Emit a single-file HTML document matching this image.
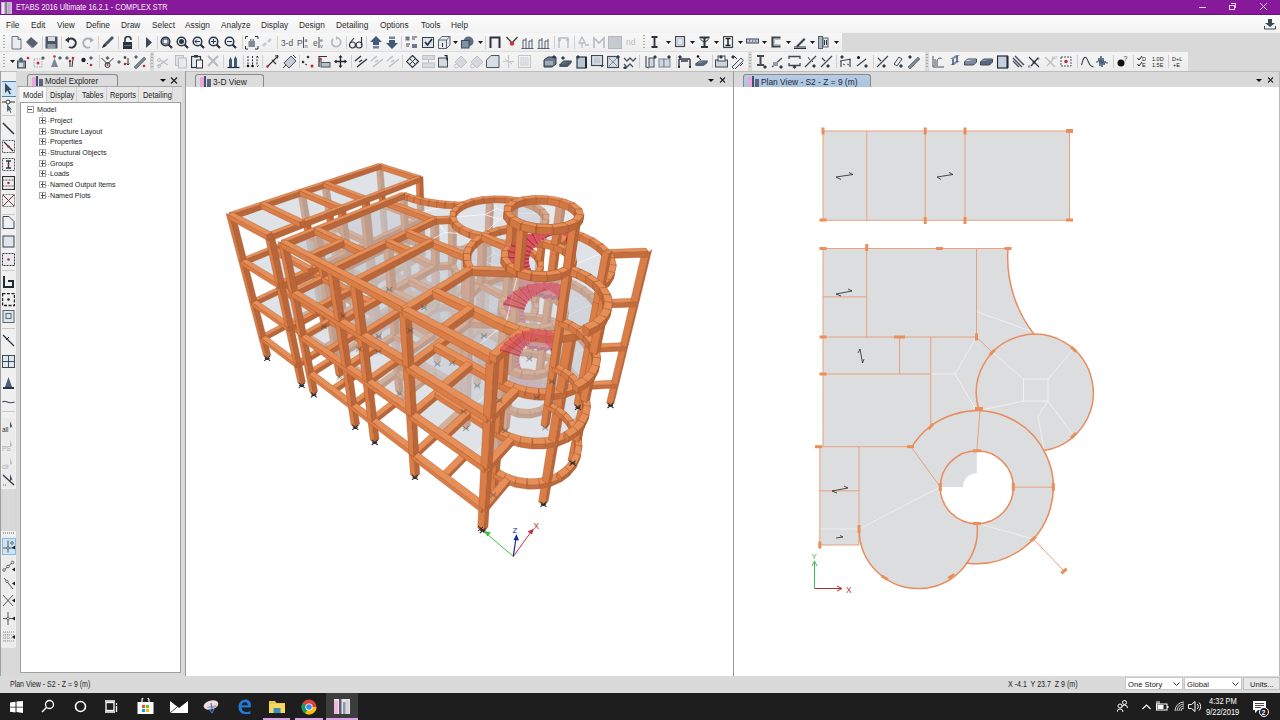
<!DOCTYPE html>
<html><head><meta charset="utf-8">
<style>
*{margin:0;padding:0;box-sizing:border-box}
html,body{width:1280px;height:720px;overflow:hidden;background:#d9d9d9;font-family:"Liberation Sans",sans-serif;}
.a{position:absolute}
#title{left:0;top:0;width:1280px;height:15px;background:#87199b;color:#fff;font-size:8.6px;}
#menu{left:0;top:15px;width:1280px;height:18px;background:linear-gradient(#fdfdfd,#f1f1f1);font-size:8.3px;color:#2a2a2a}
#menu span{position:absolute;top:5px}
#tb1{left:0;top:33px;width:842px;height:19px;background:#f3f3f3;border-bottom:1px solid #e0e0e0}
#tb2{left:0;top:52px;width:1188px;height:19px;background:#f3f3f3;border-bottom:1px solid #cfcfcf}
#lefttb{left:1px;top:72px;width:15px;height:575px;background:#f0f0f0}
#explorer{left:17px;top:71px;width:168px;height:605px;background:#d9d9d9}
#v3d{left:186px;top:87px;width:547px;height:589px;background:#fff}
#vplan{left:734px;top:87px;width:546px;height:589px;background:#fff}
#status{left:0;top:676px;width:1280px;height:17px;background:#dadada;font-size:8px;color:#222}
#taskbar{left:0;top:693px;width:1280px;height:27px;background:#1e1e1e}
.tab{position:absolute;border:1px solid #8a8a8a;border-bottom:none;border-radius:3px 3px 0 0;font-size:8.4px;color:#222}
.vline{position:absolute;width:1px;background:#9a9a9a}
.tree{position:absolute;font-size:7.6px;color:#222;white-space:nowrap}
.pb{position:absolute;width:6px;height:6px;border:1px solid #9a9a9a;background:#fff}
.etab{position:absolute;top:87px;height:15px;background:#e8e8e8;font-size:8px;color:#222;border-right:1px solid #d0d0d0}
.etab span{position:absolute;top:2.5px;font-size:8.6px;transform:scaleX(0.86);transform-origin:0 0;white-space:nowrap}
.tr{font-size:7.9px;color:#1a1a1a;white-space:nowrap;transform:scaleX(0.9);transform-origin:0 0}
.tbtx{font-size:8.3px;color:#fff;white-space:nowrap;transform:scaleX(0.9);transform-origin:0 0}
</style></head><body>
<div id="title" class="a">
  <svg class="a" style="left:1px;top:2px" width="11" height="12" viewBox="0 0 11 12">
    <rect x="0" y="0" width="11" height="12" fill="#c9b7d6"/>
    <rect x="1" y="1" width="2" height="11" fill="#f0e0f0"/><rect x="4" y="0" width="2" height="12" fill="#8d7f99"/><rect x="7" y="2" width="2" height="10" fill="#b9a9c6"/>
  </svg>
  <span class="a" style="left:15.6px;top:2px;font-size:9px;transform:scaleX(0.81);transform-origin:0 0;white-space:nowrap;color:#fbeefc">ETABS 2016 Ultimate 16.2.1 - COMPLEX STR</span>
  <div class="a" style="left:1199px;top:7px;width:7px;height:1px;background:#f3d2f7"></div>
  <div class="a" style="left:1229px;top:5px;width:6px;height:5px;border:1px solid #f3d2f7"></div>
  <div class="a" style="left:1231px;top:3px;width:5px;height:5px;border-top:1px solid #f3d2f7;border-right:1px solid #f3d2f7"></div>
  <svg class="a" style="left:1260px;top:3px" width="8" height="8"><path d="M0 0L7 7M7 0L0 7" stroke="#f3d2f7" stroke-width="1"/></svg>
</div>
<div class="a" style="left:0;top:14px;width:1280px;height:1px;background:#6c137d"></div>
<div id="menu" class="a">
  <span style="left:6px">File</span><span style="left:31px">Edit</span><span style="left:57px">View</span><span style="left:86px">Define</span><span style="left:121px">Draw</span><span style="left:152px">Select</span><span style="left:185px">Assign</span><span style="left:221px">Analyze</span><span style="left:261px">Display</span><span style="left:299px">Design</span><span style="left:336px">Detailing</span><span style="left:380px">Options</span><span style="left:421px">Tools</span><span style="left:451px">Help</span>
  <svg class="a" style="left:1264px;top:4px" width="12" height="11" viewBox="0 0 12 11"><path d="M4 0h4v4h3L6 8 1 4h3z" fill="#3d4753"/><path d="M0.5 7v3h11V7" fill="none" stroke="#3d4753" stroke-width="1"/></svg>
</div>
<!--TB-->
<div class="a" style="left:0;top:33px;width:842px;height:19px;background:linear-gradient(#f7f7f7,#eeeeee)"></div>
<div class="a" style="left:842px;top:33px;width:438px;height:19px;background:#d9d9d9"></div>
<div class="a" style="left:0;top:52px;width:150px;height:19px;background:linear-gradient(#f4f4f4,#ececec)"></div>
<div class="a" style="left:154px;top:52px;width:594px;height:19px;background:linear-gradient(#f4f4f4,#ececec)"></div>
<div class="a" style="left:752px;top:52px;width:173px;height:19px;background:linear-gradient(#f4f4f4,#ececec)"></div>
<div class="a" style="left:929px;top:52px;width:259px;height:19px;background:linear-gradient(#f4f4f4,#ececec)"></div>
<div class="a" style="left:1188px;top:52px;width:92px;height:19px;background:#d9d9d9"></div>
<div class="a" style="left:0;top:51px;width:842px;height:1px;background:#dcdcdc"></div>
<div class="a" style="left:3px;top:35px;width:2px;height:15px;background:repeating-linear-gradient(#a8a8a8 0 1px,transparent 1px 3px)"></div>
<div class="a" style="left:3px;top:54px;width:2px;height:15px;background:repeating-linear-gradient(#a8a8a8 0 1px,transparent 1px 3px)"></div>
<div class="a" style="left:151px;top:54px;width:2px;height:15px;background:repeating-linear-gradient(#a8a8a8 0 1px,transparent 1px 3px)"></div>
<div class="a" style="left:749px;top:54px;width:2px;height:15px;background:repeating-linear-gradient(#a8a8a8 0 1px,transparent 1px 3px)"></div>
<div class="a" style="left:926px;top:54px;width:2px;height:15px;background:repeating-linear-gradient(#a8a8a8 0 1px,transparent 1px 3px)"></div>
<div class="a" style="left:643px;top:35px;width:2px;height:15px;background:repeating-linear-gradient(#a8a8a8 0 1px,transparent 1px 3px)"></div>
<div class="a" style="left:42.0px;top:36px;width:1px;height:13px;background:#cfcfcf"></div>
<div class="a" style="left:61.0px;top:36px;width:1px;height:13px;background:#cfcfcf"></div>
<div class="a" style="left:97.5px;top:36px;width:1px;height:13px;background:#cfcfcf"></div>
<div class="a" style="left:117.5px;top:36px;width:1px;height:13px;background:#cfcfcf"></div>
<div class="a" style="left:137.5px;top:36px;width:1px;height:13px;background:#cfcfcf"></div>
<div class="a" style="left:157.0px;top:36px;width:1px;height:13px;background:#cfcfcf"></div>
<div class="a" style="left:241.5px;top:36px;width:1px;height:13px;background:#cfcfcf"></div>
<div class="a" style="left:277.0px;top:36px;width:1px;height:13px;background:#cfcfcf"></div>
<div class="a" style="left:345.5px;top:36px;width:1px;height:13px;background:#cfcfcf"></div>
<div class="a" style="left:365.7px;top:36px;width:1px;height:13px;background:#cfcfcf"></div>
<div class="a" style="left:401.0px;top:36px;width:1px;height:13px;background:#cfcfcf"></div>
<div class="a" style="left:485.0px;top:36px;width:1px;height:13px;background:#cfcfcf"></div>
<div class="a" style="left:553.6px;top:36px;width:1px;height:13px;background:#cfcfcf"></div>
<div class="a" style="left:573.5px;top:36px;width:1px;height:13px;background:#cfcfcf"></div>
<div class="a" style="left:99.0px;top:55px;width:1px;height:13px;background:#cfcfcf"></div>
<div class="a" style="left:150.0px;top:55px;width:1px;height:13px;background:#cfcfcf"></div>
<div class="a" style="left:222.5px;top:55px;width:1px;height:13px;background:#cfcfcf"></div>
<div class="a" style="left:243.0px;top:55px;width:1px;height:13px;background:#cfcfcf"></div>
<div class="a" style="left:262.0px;top:55px;width:1px;height:13px;background:#cfcfcf"></div>
<div class="a" style="left:298.7px;top:55px;width:1px;height:13px;background:#cfcfcf"></div>
<div class="a" style="left:350.7px;top:55px;width:1px;height:13px;background:#cfcfcf"></div>
<div class="a" style="left:402.0px;top:55px;width:1px;height:13px;background:#cfcfcf"></div>
<div class="a" style="left:639.0px;top:55px;width:1px;height:13px;background:#cfcfcf"></div>
<div class="a" style="left:675.6px;top:55px;width:1px;height:13px;background:#cfcfcf"></div>
<div class="a" style="left:712.0px;top:55px;width:1px;height:13px;background:#cfcfcf"></div>
<div class="a" style="left:836.0px;top:55px;width:1px;height:13px;background:#cfcfcf"></div>
<div class="a" style="left:873.0px;top:55px;width:1px;height:13px;background:#cfcfcf"></div>
<div class="a" style="left:1076.7px;top:55px;width:1px;height:13px;background:#cfcfcf"></div>
<div class="a" style="left:1112.7px;top:55px;width:1px;height:13px;background:#cfcfcf"></div>
<div class="a" style="left:1133.0px;top:55px;width:1px;height:13px;background:#cfcfcf"></div>
<div class="a" style="left:1168.0px;top:55px;width:1px;height:13px;background:#cfcfcf"></div>
<svg class="a" style="left:10.0px;top:36.0px" width="14" height="14" viewBox="0 0 14 14"><path d="M2 0.5h6l3 3v9.5H2z" fill="#e9edf1" stroke="#6a7480"/><path d="M8 0.5v3h3" fill="#c9d0d8" stroke="#6a7480"/></svg>
<svg class="a" style="left:25.0px;top:36.0px" width="14" height="14" viewBox="0 0 14 14"><path d="M1 6L6 1l7 6-5 5z" fill="#56626f"/><path d="M2 7l5 5" stroke="#8d99a5"/></svg>
<svg class="a" style="left:45.0px;top:36.0px" width="14" height="14" viewBox="0 0 14 14"><rect x="0.5" y="0.5" width="12" height="12" fill="#4b5665"/><rect x="3" y="1" width="7" height="4" fill="#d8dde2"/><rect x="2.5" y="8" width="8" height="4" fill="#8e99a4"/></svg>
<svg class="a" style="left:65.0px;top:36.0px" width="14" height="14" viewBox="0 0 14 14"><path d="M3 4a4.5 4.5 0 1 1 1 7" fill="none" stroke="#2b3440" stroke-width="2"/><path d="M0 4l4-3v6z" fill="#2b3440"/></svg>
<svg class="a" style="left:81.0px;top:36.0px" width="14" height="14" viewBox="0 0 14 14"><path d="M10 4a4.5 4.5 0 1 0 -1 7" fill="none" stroke="#a9b0b8" stroke-width="2"/><path d="M13 4l-4-3v6z" fill="#a9b0b8"/></svg>
<svg class="a" style="left:101.0px;top:36.0px" width="14" height="14" viewBox="0 0 14 14"><path d="M1 12l2-4 8-8 2 2-8 8z" fill="#4a5562"/><path d="M1 12l2-4 2 2z" fill="#1f252c"/></svg>
<svg class="a" style="left:122.0px;top:36.0px" width="14" height="14" viewBox="0 0 14 14"><path d="M3 6V3.5a3 3 0 0 1 6 0V4" fill="none" stroke="#2a323c" stroke-width="1.6"/><rect x="1" y="6" width="9" height="7" fill="#2a323c"/><rect x="2" y="9" width="7" height="1" fill="#6d7782"/></svg>
<svg class="a" style="left:145.0px;top:36.0px" width="14" height="14" viewBox="0 0 14 14"><path d="M1 1l6 5.5L1 12z" fill="#3b4855"/></svg>
<svg class="a" style="left:160.0px;top:36.0px" width="14" height="14" viewBox="0 0 14 14"><circle cx="5.5" cy="5.5" r="4.3" fill="#eef1f4" stroke="#2d3640" stroke-width="1.5"/><path d="M8.5 8.5l3.5 3.5" stroke="#2d3640" stroke-width="2.2"/><rect x="3" y="3" width="5" height="5" fill="none" stroke="#2d3640"/></svg>
<svg class="a" style="left:176.0px;top:36.0px" width="14" height="14" viewBox="0 0 14 14"><circle cx="5.5" cy="5.5" r="4.3" fill="#eef1f4" stroke="#2d3640" stroke-width="1.5"/><path d="M8.5 8.5l3.5 3.5" stroke="#2d3640" stroke-width="2.2"/><circle cx="5.5" cy="5.5" r="2.5" fill="#2d3640"/></svg>
<svg class="a" style="left:192.0px;top:36.0px" width="14" height="14" viewBox="0 0 14 14"><circle cx="5.5" cy="5.5" r="4.3" fill="#eef1f4" stroke="#2d3640" stroke-width="1.5"/><path d="M8.5 8.5l3.5 3.5" stroke="#2d3640" stroke-width="2.2"/><path d="M3 5.5h5M3 5.5l2-2M3 5.5l2 2" stroke="#2d3640" fill="none"/></svg>
<svg class="a" style="left:208.0px;top:36.0px" width="14" height="14" viewBox="0 0 14 14"><circle cx="5.5" cy="5.5" r="4.3" fill="#eef1f4" stroke="#2d3640" stroke-width="1.5"/><path d="M8.5 8.5l3.5 3.5" stroke="#2d3640" stroke-width="2.2"/><path d="M3 5.5h5M5.5 3v5" stroke="#2d3640"/></svg>
<svg class="a" style="left:224.0px;top:36.0px" width="14" height="14" viewBox="0 0 14 14"><circle cx="5.5" cy="5.5" r="4.3" fill="#eef1f4" stroke="#2d3640" stroke-width="1.5"/><path d="M8.5 8.5l3.5 3.5" stroke="#2d3640" stroke-width="2.2"/><path d="M3 5.5h5" stroke="#2d3640"/></svg>
<svg class="a" style="left:244.5px;top:36.0px" width="14" height="14" viewBox="0 0 14 14"><path d="M0.5 3V0.5H3M10 0.5h3V3M13 10v3h-3M3 13H0.5v-3" fill="none" stroke="#2d3640"/><path d="M3.5 11V5h1.5V3h1.5v2h1V3h1.5v2h1V5.5H10V11z" fill="#7f8b98"/></svg>
<svg class="a" style="left:261.0px;top:36.0px" width="14" height="14" viewBox="0 0 14 14"><path d="M2 10l3-3M7 6l3-3" stroke="#c4cad0" stroke-width="2.5"/></svg>
<svg class="a" style="left:281.0px;top:36.0px" width="14" height="14" viewBox="0 0 14 14"><text x="0" y="9.5" font-size="8.3" fill="#4a535c" font-family="Liberation Sans">3-d</text></svg>
<svg class="a" style="left:297.0px;top:36.0px" width="14" height="14" viewBox="0 0 14 14"><text x="0" y="10" font-size="8.5" fill="#4a535c" font-family="Liberation Sans">P</text><path d="M6.5 1v11" stroke="#4a535c"/><text x="7.5" y="6" font-size="5" fill="#4a535c" font-family="Liberation Sans">a</text><text x="7.5" y="12" font-size="5.5" fill="#4a535c" font-family="Liberation Sans">n</text></svg>
<svg class="a" style="left:313.0px;top:36.0px" width="14" height="14" viewBox="0 0 14 14"><text x="0" y="10" font-size="8.5" fill="#4a535c" font-family="Liberation Sans">e</text><path d="M6 1v11" stroke="#4a535c"/><text x="7" y="6" font-size="5" fill="#4a535c" font-family="Liberation Sans">e</text><text x="7" y="12" font-size="5.5" fill="#4a535c" font-family="Liberation Sans">v</text></svg>
<svg class="a" style="left:330.0px;top:36.0px" width="14" height="14" viewBox="0 0 14 14"><path d="M3 3a4.5 4.5 0 1 0 5 -1" fill="none" stroke="#b5bcc3" stroke-width="1.8"/><path d="M6 0l3 2-3 2z" fill="#b5bcc3"/></svg>
<svg class="a" style="left:348.5px;top:36.0px" width="14" height="14" viewBox="0 0 14 14"><circle cx="3.5" cy="9" r="3" fill="none" stroke="#2d3640" stroke-width="1.2"/><circle cx="10" cy="9" r="3" fill="none" stroke="#2d3640" stroke-width="1.2"/><path d="M6.5 9h1M12.5 9V1M1 7l4-5" stroke="#2d3640" stroke-width="1.2" fill="none"/></svg>
<svg class="a" style="left:370.0px;top:36.0px" width="14" height="14" viewBox="0 0 14 14"><path d="M6 0l6 6H9v3H3V6H0z" fill="#3f5a78"/><rect x="3" y="10" width="6" height="2.5" fill="#6f879f"/></svg>
<svg class="a" style="left:386.0px;top:36.0px" width="14" height="14" viewBox="0 0 14 14"><path d="M6 13l6-6H9V4H3v3H0z" fill="#3f5a78"/><rect x="3" y="0.5" width="6" height="2.5" fill="#6f879f"/></svg>
<svg class="a" style="left:405.0px;top:36.0px" width="14" height="14" viewBox="0 0 14 14"><rect x="0.5" y="0.5" width="4" height="4" fill="#6c7886"/><rect x="7" y="8" width="5" height="4" fill="#6c7886"/><path d="M7 1h5M7 3h3M1 8h4M1 10h3" stroke="#444"/></svg>
<svg class="a" style="left:421.5px;top:36.0px" width="14" height="14" viewBox="0 0 14 14"><rect x="0.5" y="1.5" width="11" height="10" fill="#dde3ea" stroke="#34404c"/><path d="M3 6l2.5 3L10 3" stroke="#1d2733" stroke-width="1.6" fill="none"/></svg>
<svg class="a" style="left:437.5px;top:36.0px" width="14" height="14" viewBox="0 0 14 14"><path d="M0.5 4L4 0.5h8V9L8.5 12.5H0.5z" fill="#e7ebef" stroke="#5b6570"/><path d="M0.5 4H8.5v8.5M8.5 4L12 0.5" fill="none" stroke="#5b6570"/><path d="M4.5 11V7" stroke="#333"/></svg>
<svg class="a" style="left:453.0px;top:41.0px" width="5" height="3" viewBox="0 0 5 3"><path d="M0 0h5L2.5 3z" fill="#1a1a1a"/></svg>
<svg class="a" style="left:461.0px;top:36.0px" width="14" height="14" viewBox="0 0 14 14"><circle cx="7.5" cy="5.5" r="5" fill="#5c6d80"/><rect x="0.5" y="4.5" width="7.5" height="7.5" fill="#7e93a8" stroke="#3c4a58"/></svg>
<svg class="a" style="left:477.5px;top:41.0px" width="5" height="3" viewBox="0 0 5 3"><path d="M0 0h5L2.5 3z" fill="#1a1a1a"/></svg>
<svg class="a" style="left:489.0px;top:36.0px" width="14" height="14" viewBox="0 0 14 14"><path d="M1.5 12V1.5h9V12" fill="none" stroke="#2b333c" stroke-width="2"/></svg>
<svg class="a" style="left:506.0px;top:36.0px" width="14" height="14" viewBox="0 0 14 14"><path d="M0.5 1l5.5 6 5.5-6" fill="none" stroke="#333" stroke-width="1.2"/><circle cx="6" cy="7.5" r="2.2" fill="#d03045"/></svg>
<svg class="a" style="left:521.0px;top:36.0px" width="14" height="14" viewBox="0 0 14 14"><path d="M0.5 12.5h12M2 12V4M5 12V2M8 12V5M11 12V3M2 4h3M8 5h3" stroke="#55616e" fill="none"/></svg>
<svg class="a" style="left:537.0px;top:36.0px" width="14" height="14" viewBox="0 0 14 14"><path d="M0.5 12.5h12M2 12V4M5 12V2M8 12V5M11 12V3M2 4h3M8 5h3" stroke="#55616e" fill="none"/></svg>
<svg class="a" style="left:557.0px;top:36.0px" width="14" height="14" viewBox="0 0 14 14"><path d="M2 12V2h9v10M1 4h3M9 4h3" stroke="#b5bcc3" stroke-width="1.4" fill="none"/></svg>
<svg class="a" style="left:577.0px;top:36.0px" width="14" height="14" viewBox="0 0 14 14"><path d="M5 1l-3 6h6zM5 7v5M8 9h4" stroke="#b5bcc3" stroke-width="1.3" fill="none"/></svg>
<svg class="a" style="left:593.0px;top:36.0px" width="14" height="14" viewBox="0 0 14 14"><path d="M1 12V2l5 5 5-5v10" stroke="#b5bcc3" stroke-width="1.6" fill="none"/></svg>
<svg class="a" style="left:608.0px;top:36.0px" width="14" height="14" viewBox="0 0 14 14"><rect x="0.5" y="0.5" width="13" height="12" fill="#c7cbcf" stroke="#b3b8bd"/></svg>
<svg class="a" style="left:626.0px;top:36.0px" width="14" height="14" viewBox="0 0 14 14"><text x="0" y="9" font-size="8.5" fill="#b8bdc2" font-family="Liberation Sans">nd</text></svg>
<svg class="a" style="left:651.0px;top:36.0px" width="14" height="14" viewBox="0 0 14 14"><path d="M0.5 1h6M3.5 1v10M0.5 11h6" stroke="#2a323b" stroke-width="1.8"/></svg>
<svg class="a" style="left:666.0px;top:41.0px" width="5" height="3" viewBox="0 0 5 3"><path d="M0 0h5L2.5 3z" fill="#1a1a1a"/></svg>
<svg class="a" style="left:675.0px;top:36.0px" width="14" height="14" viewBox="0 0 14 14"><rect x="0.5" y="0.5" width="9" height="10" fill="#e3e7eb" stroke="#3c4650" stroke-width="1.2"/><rect x="2.5" y="2.5" width="5" height="6" fill="none" stroke="#9aa4ae" stroke-dasharray="1 1"/></svg>
<svg class="a" style="left:690.0px;top:41.0px" width="5" height="3" viewBox="0 0 5 3"><path d="M0 0h5L2.5 3z" fill="#1a1a1a"/></svg>
<svg class="a" style="left:698.5px;top:36.0px" width="14" height="14" viewBox="0 0 14 14"><path d="M0.5 1.5h10M5.5 1.5v9M2 11h7" stroke="#2a323b" stroke-width="2"/><path d="M1.5 3.5L5 6M9.5 3.5L6 6" stroke="#2a323b"/></svg>
<svg class="a" style="left:714.0px;top:41.0px" width="5" height="3" viewBox="0 0 5 3"><path d="M0 0h5L2.5 3z" fill="#1a1a1a"/></svg>
<svg class="a" style="left:723.0px;top:36.0px" width="14" height="14" viewBox="0 0 14 14"><rect x="0.5" y="0.5" width="9" height="11" fill="none" stroke="#3c4650" stroke-width="1.2"/><path d="M2.5 2.5h5M5 2.5v7M2.5 9.5h5" stroke="#222" stroke-width="1.5"/></svg>
<svg class="a" style="left:738.0px;top:41.0px" width="5" height="3" viewBox="0 0 5 3"><path d="M0 0h5L2.5 3z" fill="#1a1a1a"/></svg>
<svg class="a" style="left:745.5px;top:36.0px" width="14" height="14" viewBox="0 0 14 14"><rect x="0.5" y="3" width="12" height="4" fill="#c6ccd2" stroke="#3c4650"/><path d="M3 5h1M6 5h1M9 5h1" stroke="#333"/></svg>
<svg class="a" style="left:762.0px;top:41.0px" width="5" height="3" viewBox="0 0 5 3"><path d="M0 0h5L2.5 3z" fill="#1a1a1a"/></svg>
<svg class="a" style="left:771.0px;top:36.0px" width="14" height="14" viewBox="0 0 14 14"><path d="M9.5 1.5h-8v9h8" fill="none" stroke="#3c4650" stroke-width="2.2"/><path d="M9.5 3.5h-6v5h6" fill="none" stroke="#b8c0c8"/></svg>
<svg class="a" style="left:786.0px;top:41.0px" width="5" height="3" viewBox="0 0 5 3"><path d="M0 0h5L2.5 3z" fill="#1a1a1a"/></svg>
<svg class="a" style="left:793.0px;top:36.0px" width="14" height="14" viewBox="0 0 14 14"><path d="M1 11h12M1 12.5h12" stroke="#2a323b"/><path d="M3 10l8-8 1.5 1.5-8 8z" fill="#3a444f"/></svg>
<svg class="a" style="left:810.0px;top:41.0px" width="5" height="3" viewBox="0 0 5 3"><path d="M0 0h5L2.5 3z" fill="#1a1a1a"/></svg>
<svg class="a" style="left:818.0px;top:36.0px" width="14" height="14" viewBox="0 0 14 14"><rect x="0.5" y="0.5" width="4" height="12" fill="#a9b6c4" stroke="#56626f"/><rect x="5" y="2" width="5" height="9" fill="#e1e6eb" stroke="#56626f"/><path d="M6.5 4v5M8.5 4v5" stroke="#333"/></svg>
<svg class="a" style="left:834.0px;top:41.0px" width="5" height="3" viewBox="0 0 5 3"><path d="M0 0h5L2.5 3z" fill="#1a1a1a"/></svg>
<svg class="a" style="left:9.5px;top:60.0px" width="5" height="3" viewBox="0 0 5 3"><path d="M0 0h5L2.5 3z" fill="#1a1a1a"/></svg>
<svg class="a" style="left:16.0px;top:55.0px" width="14" height="14" viewBox="0 0 14 14"><path d="M5 2l2.5 2.5L5 7 2.5 4.5z" fill="#56636f"/><circle cx="12" cy="3" r="1.3" fill="#c02a3a"/><rect x="1.5" y="6" width="8" height="7" fill="#8895a2" stroke="#3d4753"/><rect x="3" y="8" width="4" height="4" fill="#d6dbe0"/></svg>
<svg class="a" style="left:33.0px;top:55.0px" width="14" height="14" viewBox="0 0 14 14"><rect x="1" y="4" width="8" height="8" fill="none" stroke="#a0a8b0" stroke-dasharray="1.5 1"/><circle cx="5" cy="8" r="1.5" fill="#c02a3a"/><path d="M10 1l2 2-2 2-2-2z" fill="#56636f"/></svg>
<svg class="a" style="left:50.0px;top:55.0px" width="14" height="14" viewBox="0 0 14 14"><path d="M4.5 3L1 12h7z" fill="#7b8996"/><circle cx="4.5" cy="1.5" r="1.3" fill="#c02a3a"/><path d="M10 1l2 2-2 2-2-2z" fill="#56636f"/></svg>
<svg class="a" style="left:65.0px;top:55.0px" width="14" height="14" viewBox="0 0 14 14"><path d="M2 1l2 2-2 2-2-2z" fill="#56636f"/><circle cx="5" cy="6" r="1.3" fill="#c02a3a"/><circle cx="8" cy="3" r="1.3" fill="#c02a3a"/><path d="M5 6v6M8 4l-1 8" stroke="#333"/></svg>
<svg class="a" style="left:81.0px;top:55.0px" width="14" height="14" viewBox="0 0 14 14"><circle cx="2.5" cy="5" r="2.2" fill="#1f252c"/><path d="M10 1l2 2-2 2-2-2z" fill="#56636f"/><circle cx="10" cy="10" r="1.3" fill="#c02a3a"/><path d="M6 8l1 1" stroke="#333"/></svg>
<svg class="a" style="left:101.0px;top:55.0px" width="14" height="14" viewBox="0 0 14 14"><path d="M0.5 3l6 6 6-6" fill="none" stroke="#333"/><path d="M6.5 1l2 2-2 2-2-2z" fill="#56636f"/><circle cx="6.5" cy="10" r="2.5" fill="none" stroke="#333"/><circle cx="6.5" cy="10" r="1" fill="#c02a3a"/></svg>
<svg class="a" style="left:117.0px;top:55.0px" width="14" height="14" viewBox="0 0 14 14"><path d="M2 5l2 2-2 2-2-2z" fill="#56636f"/><circle cx="8" cy="2.5" r="1.3" fill="#333"/><circle cx="8" cy="9" r="1.3" fill="#c02a3a"/><path d="M11 3v7l-1.5-1.5M11 10l1.5-1.5" stroke="#333" fill="none"/></svg>
<svg class="a" style="left:133.0px;top:55.0px" width="14" height="14" viewBox="0 0 14 14"><path d="M1 12l10-10 2 2-10 10z" fill="#7c8a98" stroke="#46525f" stroke-width="0.6"/><circle cx="11" cy="11" r="1.3" fill="#c02a3a"/><path d="M3 0l2 2-2 2-2-2z" fill="#56636f"/></svg>
<svg class="a" style="left:157.0px;top:55.0px" width="14" height="14" viewBox="0 0 14 14"><path d="M1 11l10-7M3 5l8 5" stroke="#b9bfc5" stroke-width="1.4"/><circle cx="2" cy="11" r="1.5" fill="none" stroke="#b9bfc5"/><circle cx="2" cy="5" r="1.5" fill="none" stroke="#b9bfc5"/></svg>
<svg class="a" style="left:175.0px;top:55.0px" width="14" height="14" viewBox="0 0 14 14"><rect x="0.5" y="0.5" width="8" height="10" fill="#dfe3e7" stroke="#b8bec4"/><rect x="3.5" y="3" width="8" height="10" fill="#e6e9ec" stroke="#b8bec4"/></svg>
<svg class="a" style="left:191.0px;top:55.0px" width="14" height="14" viewBox="0 0 14 14"><rect x="0.5" y="1.5" width="9" height="11" fill="#e7ebef" stroke="#2d3640" stroke-width="1.2"/><rect x="5.5" y="5" width="6" height="8" fill="#f5f7f9" stroke="#2d3640"/><rect x="3" y="0" width="4" height="2.5" fill="#2d3640"/></svg>
<svg class="a" style="left:207.0px;top:55.0px" width="14" height="14" viewBox="0 0 14 14"><path d="M1 1l10 10M11 1L1 11" stroke="#b4bac0" stroke-width="2"/></svg>
<svg class="a" style="left:226.5px;top:55.0px" width="14" height="14" viewBox="0 0 14 14"><path d="M0.5 12.5h12" stroke="#1f2a38" stroke-width="1.2"/><path d="M2 12V5l1.5-3 1.5 3v7zM7 12V4l1.5-3 1.5 3v8z" fill="#3f5874"/></svg>
<svg class="a" style="left:246.0px;top:55.0px" width="14" height="14" viewBox="0 0 14 14"><path d="M2 1v10M6.5 1v10M11 1v10" stroke="#2a333d" stroke-dasharray="2 1.2"/><circle cx="2" cy="11" r="1.3" fill="#111"/><circle cx="6.5" cy="11" r="1.3" fill="#111"/><path d="M11 1l1.5 1.5M11 12l1.5-1.5" stroke="#333"/></svg>
<svg class="a" style="left:266.0px;top:55.0px" width="14" height="14" viewBox="0 0 14 14"><path d="M1 12L12 1M6 5l4 4" stroke="#333" stroke-width="1.1"/><circle cx="1.5" cy="11.5" r="1.3" fill="#c02a3a"/><path d="M12 0.5l-3 0.5M12 0.5l-0.5 3" stroke="#333"/></svg>
<svg class="a" style="left:282.5px;top:55.0px" width="14" height="14" viewBox="0 0 14 14"><path d="M1 8l7-7 5 5-7 7z" fill="#c3ccd6" stroke="#4b5561"/><path d="M0 13l3-3M10 0l3 3" stroke="#333"/></svg>
<svg class="a" style="left:301.0px;top:55.0px" width="14" height="14" viewBox="0 0 14 14"><circle cx="7" cy="2" r="1.3" fill="#333"/><circle cx="2" cy="7" r="1.3" fill="#333"/><circle cx="11" cy="11" r="1.5" fill="#c02a3a"/><path d="M4 9l2 1" stroke="#333"/></svg>
<svg class="a" style="left:318.0px;top:55.0px" width="14" height="14" viewBox="0 0 14 14"><path d="M1 1v11M1 1.5h8M1 6h3" stroke="#333" stroke-width="1.2"/><circle cx="2.5" cy="4" r="1.3" fill="#c02a3a"/><rect x="3" y="7.5" width="9" height="4.5" fill="#b6c0ca" stroke="#4b5561"/></svg>
<svg class="a" style="left:334.0px;top:55.0px" width="14" height="14" viewBox="0 0 14 14"><path d="M6.5 1v11M1 6.5h11" stroke="#1f252c" stroke-width="1.3"/><path d="M6.5 0l-2 2.5h4zM6.5 13l-2-2.5h4zM0 6.5l2.5-2v4zM13 6.5l-2.5-2v4z" fill="#1f252c"/></svg>
<svg class="a" style="left:354.0px;top:55.0px" width="14" height="14" viewBox="0 0 14 14"><path d="M1 6L7 1M3 12l10-8M5 7l3-2" stroke="#2a333d" stroke-width="1.3"/></svg>
<svg class="a" style="left:370.0px;top:55.0px" width="14" height="14" viewBox="0 0 14 14"><path d="M1 6L7 1M3 12l10-8M5 7l3-2" stroke="#b5bcc3" stroke-width="1.3"/></svg>
<svg class="a" style="left:386.0px;top:55.0px" width="14" height="14" viewBox="0 0 14 14"><path d="M1 6L7 1M3 12l10-8M5 7l3-2" stroke="#b5bcc3" stroke-width="1.3"/></svg>
<svg class="a" style="left:406.0px;top:55.0px" width="14" height="14" viewBox="0 0 14 14"><path d="M6.5 0.5l6 6-6 6-6-6z" fill="#e7ebef" stroke="#2f3a45" stroke-width="1.2"/><path d="M3.5 3.5l6 6M9.5 3.5l-6 6" stroke="#2f3a45"/></svg>
<svg class="a" style="left:422.0px;top:55.0px" width="14" height="14" viewBox="0 0 14 14"><rect x="0.5" y="0.5" width="12" height="4" fill="#d6dadf" stroke="#bcc2c8"/><rect x="0.5" y="8" width="12" height="4.5" fill="#d6dadf" stroke="#bcc2c8"/><path d="M6.5 5v3" stroke="#bbb"/></svg>
<svg class="a" style="left:438.0px;top:55.0px" width="14" height="14" viewBox="0 0 14 14"><rect x="0.5" y="3" width="9" height="9" fill="#d2dae2" stroke="#3f4a55"/><path d="M9 0.5v5M6.5 0.5h3" stroke="#1f252c" stroke-width="1.3"/></svg>
<svg class="a" style="left:454.0px;top:55.0px" width="14" height="14" viewBox="0 0 14 14"><path d="M1 7l6-6 6 6-6 6z" fill="#d4d8dc" stroke="#bdc3c9"/><circle cx="2.5" cy="11" r="2" fill="none" stroke="#bdc3c9"/></svg>
<svg class="a" style="left:470.0px;top:55.0px" width="14" height="14" viewBox="0 0 14 14"><path d="M1 7l6-6 6 6-6 6z" fill="#d4d8dc" stroke="#bdc3c9"/><circle cx="2.5" cy="11" r="2" fill="none" stroke="#bdc3c9"/></svg>
<svg class="a" style="left:486.0px;top:55.0px" width="14" height="14" viewBox="0 0 14 14"><path d="M0.5 12.5V5L5 0.5h8v12z" fill="#d7dee5" stroke="#4b5561"/></svg>
<svg class="a" style="left:502.0px;top:55.0px" width="14" height="14" viewBox="0 0 14 14"><path d="M6.5 0v13M1 6.5h11" stroke="#c2c8ce" stroke-width="1.2"/><path d="M3 4l7 5" stroke="#c2c8ce"/></svg>
<svg class="a" style="left:518.0px;top:55.0px" width="14" height="14" viewBox="0 0 14 14"><rect x="0.5" y="0.5" width="12" height="12" fill="none" stroke="#c0c6cc"/><rect x="3" y="3" width="7" height="7" fill="none" stroke="#c8cdd2"/><rect x="5" y="5" width="3" height="3" fill="none" stroke="#c8cdd2"/></svg>
<svg class="a" style="left:542.5px;top:55.0px" width="14" height="14" viewBox="0 0 14 14"><path d="M1 5l4-3h8v7l-4 3H1z" fill="#6c7c8d" stroke="#2f3b47"/><path d="M2 7h8M2 9h8" stroke="#d6dde4"/><path d="M11 0l2 2-2 2-2-2z" fill="#2f3b47"/></svg>
<svg class="a" style="left:559.0px;top:55.0px" width="14" height="14" viewBox="0 0 14 14"><path d="M0.5 10l4-4h8l-4 4z" fill="#63748a" stroke="#2f3b47"/><path d="M0.5 10v2h8l4-4V6" fill="#48576a"/><path d="M4 1l2 2-2 2-2-2z" fill="#2f3b47"/></svg>
<svg class="a" style="left:575.0px;top:55.0px" width="14" height="14" viewBox="0 0 14 14"><rect x="2" y="2" width="9" height="11" fill="#b9c5d1" stroke="#2f3b47" stroke-width="1.2"/><path d="M11 2v11" stroke="#1f2a35" stroke-width="2"/><path d="M3 0l2 2-2 2-2-2z" fill="#2f3b47"/></svg>
<svg class="a" style="left:590.5px;top:55.0px" width="14" height="14" viewBox="0 0 14 14"><rect x="0.5" y="0.5" width="11" height="10" fill="#dfe5ea" stroke="#3f4a55" stroke-width="1.2"/><rect x="2.5" y="2.5" width="7" height="6" fill="#c2ccd6"/><path d="M9 10l2 2.5 2-2.5z" fill="#2f3b47"/></svg>
<svg class="a" style="left:607.0px;top:55.0px" width="14" height="14" viewBox="0 0 14 14"><rect x="0.5" y="1.5" width="11" height="11" fill="#d6dde4" stroke="#3f4a55" stroke-width="1.2"/><path d="M2 3l8 8M10 3l-8 8" stroke="#7a8794"/><path d="M11 0l2 2-2 2-2-2z" fill="#2f3b47"/></svg>
<svg class="a" style="left:622.5px;top:55.0px" width="14" height="14" viewBox="0 0 14 14"><path d="M1 3l3 3 3-3 3 3 3-3M1 9l3 3 3-3 3 3" fill="none" stroke="#46525f" stroke-width="1.3"/><path d="M2 11l2 2-2 2-2-2z" fill="#2f3b47"/></svg>
<svg class="a" style="left:644.0px;top:55.0px" width="14" height="14" viewBox="0 0 14 14"><path d="M2 1v11l3 1M6 4v8" stroke="#46525f" stroke-width="1.2" fill="none"/><rect x="5" y="3" width="5" height="9" fill="#cfd7df" stroke="#46525f"/><path d="M11 0l2 2-2 2-2-2z" fill="#2f3b47"/></svg>
<svg class="a" style="left:658.0px;top:55.0px" width="14" height="14" viewBox="0 0 14 14"><rect x="1" y="4" width="5" height="8" fill="#cfd7df" stroke="#7b8794"/><rect x="6" y="4" width="6" height="8" fill="#cfd7df" stroke="#7b8794"/><path d="M11 0l2 2-2 2-2-2z" fill="#2f3b47"/></svg>
<svg class="a" style="left:678.0px;top:55.0px" width="14" height="14" viewBox="0 0 14 14"><path d="M1 4h11M1 4v8M12 4v8M3 6h7" stroke="#2f3b47" stroke-width="1.4" fill="none"/><path d="M2 0l2 2-2 2-2-2z" fill="#2f3b47"/><circle cx="1" cy="12" r="1" fill="#111"/><circle cx="12" cy="12" r="1" fill="#111"/></svg>
<svg class="a" style="left:695.0px;top:55.0px" width="14" height="14" viewBox="0 0 14 14"><path d="M0.5 9l4-3h8l-4 3z" fill="#8d9cab" stroke="#3f4a55"/><path d="M0.5 9v2h8l4-3V6" fill="#56667a"/><circle cx="3" cy="1.5" r="1.3" fill="#111"/><path d="M4 3l2 2" stroke="#333"/></svg>
<svg class="a" style="left:715.0px;top:55.0px" width="14" height="14" viewBox="0 0 14 14"><rect x="0.5" y="5" width="12" height="7" fill="#cbd3db" stroke="#3f4a55"/><rect x="3" y="1" width="7" height="5" fill="#f2f4f6" stroke="#3f4a55"/><path d="M6 0l2 2-2 2-2-2z" fill="#2f3b47"/></svg>
<svg class="a" style="left:731.0px;top:55.0px" width="14" height="14" viewBox="0 0 14 14"><path d="M1 12l9-9 2.5 2.5-9 9z" fill="#e9edf1" stroke="#3f4a55"/><path d="M3 1l3 3M9 11l3-3" stroke="#333"/><path d="M2 0l2 2-2 2-2-2z" fill="#2f3b47"/></svg>
<svg class="a" style="left:755.0px;top:55.0px" width="14" height="14" viewBox="0 0 14 14"><path d="M2 1h7M5.5 1v9M2 10h7" stroke="#3f4a55" stroke-width="2"/><path d="M10 10l2 2-2 2-2-2z" fill="#2f3b47"/></svg>
<svg class="a" style="left:771.0px;top:55.0px" width="14" height="14" viewBox="0 0 14 14"><path d="M1 12l10-9" stroke="#46525f" stroke-width="1.3"/><rect x="2" y="7" width="5" height="4" fill="#8d9cab"/><path d="M10 10l2 2-2 2-2-2z" fill="#2f3b47"/></svg>
<svg class="a" style="left:788.0px;top:55.0px" width="14" height="14" viewBox="0 0 14 14"><path d="M1 4V1.5h11V4M1 8v2.5h11V8" stroke="#3f4a55" stroke-width="1.3" fill="none"/><path d="M6.5 10l2 2-2 2-2-2z" fill="#2f3b47"/></svg>
<svg class="a" style="left:804.0px;top:55.0px" width="14" height="14" viewBox="0 0 14 14"><path d="M1 12L12 1" stroke="#3f4a55" stroke-width="1.2"/><path d="M4 2l2 3M8 6l1 1" stroke="#3f4a55"/><path d="M10 9l2 2-2 2-2-2z" fill="#2f3b47"/></svg>
<svg class="a" style="left:820.0px;top:55.0px" width="14" height="14" viewBox="0 0 14 14"><path d="M1 12L12 1M2 3l3 3" stroke="#3f4a55" stroke-width="1.2"/><path d="M8 9l2 2-2 2-2-2z" fill="#2f3b47"/></svg>
<svg class="a" style="left:839.0px;top:55.0px" width="14" height="14" viewBox="0 0 14 14"><path d="M1 6l11-2M2 6v6M11 4v8" stroke="#3f4a55" stroke-width="1.2" fill="none"/><path d="M3 0l2 2-2 2-2-2z" fill="#2f3b47"/><path d="M4 9l2 1M8 9l2 1" stroke="#555"/></svg>
<svg class="a" style="left:856.0px;top:55.0px" width="14" height="14" viewBox="0 0 14 14"><circle cx="2.5" cy="2.5" r="1.5" fill="#111"/><path d="M1 11l9-7" stroke="#3f4a55" stroke-width="1.2"/><path d="M10 9l2 2-2 2-2-2z" fill="#2f3b47"/></svg>
<svg class="a" style="left:876.0px;top:55.0px" width="14" height="14" viewBox="0 0 14 14"><path d="M1 12L12 1M2 3l3 3" stroke="#3f4a55" stroke-width="1.2"/><path d="M8 9l2 2-2 2-2-2z" fill="#2f3b47"/></svg>
<svg class="a" style="left:892.0px;top:55.0px" width="14" height="14" viewBox="0 0 14 14"><path d="M2 9l5-7 3 2-5 7z" fill="#e9edf1" stroke="#3f4a55"/><path d="M9 9l2 2-2 2-2-2z" fill="#2f3b47"/></svg>
<svg class="a" style="left:907.0px;top:55.0px" width="14" height="14" viewBox="0 0 14 14"><path d="M1 12l10-10 2 2-10 10z" fill="#7c8a98" stroke="#46525f" stroke-width="0.6"/><path d="M3 0l2 2-2 2-2-2z" fill="#2f3b47"/></svg>
<svg class="a" style="left:932.0px;top:55.0px" width="14" height="14" viewBox="0 0 14 14"><path d="M1 1v11h11" stroke="#46525f" fill="none"/><path d="M3 11V4M5 11V6c0-2 2-3 4-3M9 3v1" stroke="#46525f" fill="none"/></svg>
<svg class="a" style="left:948.0px;top:55.0px" width="14" height="14" viewBox="0 0 14 14"><path d="M2 4l6-4h4l-6 4zM2 10l6-4h4l-6 4z" fill="#7c96b3"/><path d="M5 4v6M9 1v6" stroke="#3d5672" stroke-width="1.5"/></svg>
<svg class="a" style="left:964.0px;top:55.0px" width="14" height="14" viewBox="0 0 14 14"><path d="M0.5 7l3-3h9l-3 3z" fill="#d3dbe3" stroke="#3f4a55"/><path d="M0.5 7v3h9l3-3V4" fill="#7b8aa0" stroke="#3f4a55"/></svg>
<svg class="a" style="left:980.0px;top:55.0px" width="14" height="14" viewBox="0 0 14 14"><path d="M0.5 7l3-3h9l-3 3z" fill="#8d9cb0" stroke="#3f4a55"/><path d="M0.5 7v3h9l3-3V4" fill="#56667c" stroke="#3f4a55"/></svg>
<svg class="a" style="left:997.0px;top:55.0px" width="14" height="14" viewBox="0 0 14 14"><rect x="0.5" y="1" width="10" height="12" fill="#c3cfdb" stroke="#1f2a35" stroke-width="1.2"/><path d="M10.5 1v12" stroke="#1f2a35" stroke-width="2"/></svg>
<svg class="a" style="left:1012.0px;top:55.0px" width="14" height="14" viewBox="0 0 14 14"><path d="M1 3l9 9M3 1l9 9M1 6l6 6" stroke="#46525f" stroke-width="1.4"/></svg>
<svg class="a" style="left:1028.0px;top:55.0px" width="14" height="14" viewBox="0 0 14 14"><path d="M1 2l10 10M3 11l7-8" stroke="#2f3b47" stroke-width="1.2"/><circle cx="6" cy="7" r="1.5" fill="#333"/><text x="9" y="5" font-size="4" fill="#333">E</text><text x="0" y="13" font-size="4" fill="#333">K</text></svg>
<svg class="a" style="left:1044.0px;top:55.0px" width="14" height="14" viewBox="0 0 14 14"><path d="M1 2l10 10M3 11l7-8" stroke="#b8bfc6" stroke-width="1.2"/><text x="8" y="4" font-size="4" fill="#aaa">HZ</text></svg>
<svg class="a" style="left:1060.0px;top:55.0px" width="14" height="14" viewBox="0 0 14 14"><rect x="1" y="2" width="10" height="9" fill="#f1f3f5" stroke="#555" stroke-dasharray="2 1"/><circle cx="6" cy="6.5" r="1.8" fill="#c02a3a"/></svg>
<svg class="a" style="left:1081.0px;top:55.0px" width="14" height="14" viewBox="0 0 14 14"><path d="M0.5 10C3 0 5 1 7 6s3 5 5.5 6" fill="none" stroke="#3f4a55" stroke-width="1.1"/></svg>
<svg class="a" style="left:1096.0px;top:55.0px" width="14" height="14" viewBox="0 0 14 14"><path d="M0 7h2l1-4 1 8 1-10 1 11 1-9 1 7 1-4 1 2h2" fill="none" stroke="#3f5874" stroke-width="1"/></svg>
<svg class="a" style="left:1116.0px;top:55.0px" width="14" height="14" viewBox="0 0 14 14"><circle cx="5" cy="8" r="3.5" fill="#111"/><text x="7.5" y="6" font-size="7" fill="#333" font-family="Liberation Sans">?</text></svg>
<svg class="a" style="left:1137.0px;top:55.0px" width="14" height="14" viewBox="0 0 14 14"><path d="M0.5 3l1.5 2 3-4M0.5 9l1.5 2 3-4" stroke="#222" fill="none" stroke-width="1"/><text x="5" y="6" font-size="5.5" fill="#222" font-family="Liberation Sans">D</text><text x="5" y="12" font-size="5.5" fill="#222" font-family="Liberation Sans">E</text></svg>
<svg class="a" style="left:1152.0px;top:55.0px" width="14" height="14" viewBox="0 0 14 14"><text x="0" y="6" font-size="5.5" fill="#222" font-family="Liberation Sans">1.0D</text><text x="0" y="12" font-size="5.5" fill="#222" font-family="Liberation Sans">1.5E</text></svg>
<svg class="a" style="left:1172.0px;top:55.0px" width="14" height="14" viewBox="0 0 14 14"><text x="0" y="6" font-size="5.5" fill="#222" font-family="Liberation Sans">D+L</text><text x="1" y="12" font-size="5.5" fill="#222" font-family="Liberation Sans">+E</text></svg>
<!--/TB-->
<div class="a" style="left:0;top:71px;width:1280px;height:1px;background:#bdbdbd"></div>

<!-- left vertical toolbar -->
<div class="a" style="left:0;top:71px;width:1px;height:605px;background:#a0a0a0"></div>
<div id="lefttb" class="a"></div>
<div class="a" style="left:1px;top:489px;width:15px;height:42px;background:#d4d4d4"></div>

<!-- explorer -->
<div class="a" style="left:17px;top:71px;width:168px;height:605px;background:#d9d9d9"></div>
<div class="tab" style="left:27px;top:74px;width:91px;height:13px;background:#dcdcdc">
  <svg class="a" style="left:4px;top:1px" width="12" height="11" viewBox="0 0 12 11"><rect x="0" y="1" width="4" height="10" fill="#e9a6d8"/><rect x="4" y="0" width="2" height="11" fill="#45506a"/><rect x="7" y="3" width="4" height="8" fill="#5a6680"/></svg>
  <span class="a" style="left:17px;top:1px;font-size:9.2px;transform:scaleX(0.86);transform-origin:0 0;white-space:nowrap">Model Explorer</span>
</div>
<div class="a" style="left:17px;top:86px;width:165px;height:1px;background:#a8a8a8"></div>
<svg class="a" style="left:160px;top:77px" width="20" height="8"><path d="M0 2h6L3 5z" fill="#111"/><path d="M11 0.5L17 6.5M17 0.5L11 6.5" stroke="#222" stroke-width="1.2"/></svg>
<div class="a" style="left:18px;top:87px;width:164px;height:16px;background:#e3e3e3"></div>
<div class="a" style="left:20px;top:87px;width:27px;height:16px;background:#f8f8f8"></div>
<div class="etab" style="left:20px;width:27px;background:#f8f8f8"><span style="left:3px">Model</span></div>
<div class="etab" style="left:47px;width:30px"><span style="left:3px">Display</span></div>
<div class="etab" style="left:77px;width:30px"><span style="left:5px">Tables</span></div>
<div class="etab" style="left:107px;width:32px"><span style="left:3px">Reports</span></div>
<div class="etab" style="left:139px;width:34px"><span style="left:4px">Detailing</span></div>
<div class="a" style="left:20px;top:102px;width:161px;height:571px;background:#fff;border:1px solid #a0a0a0"></div>


<!-- view divider -->
<div class="a" style="left:185px;top:71px;width:1px;height:605px;background:#9a9a9a"></div>
<div class="a" style="left:733px;top:71px;width:1px;height:605px;background:#9a9a9a"></div>
<div class="tab" style="left:195px;top:74px;width:69px;height:13px;background:#dcdcdc">
  <svg class="a" style="left:4px;top:1px" width="12" height="11" viewBox="0 0 12 11"><rect x="0" y="1" width="4" height="10" fill="#e9a6d8"/><rect x="4" y="0" width="2" height="11" fill="#45506a"/><rect x="7" y="3" width="4" height="8" fill="#5a6680"/></svg>
  <span class="a" style="left:17px;top:1.5px">3-D View</span>
</div>
<svg class="a" style="left:708px;top:77px" width="20" height="8"><path d="M0 2h6L3 5z" fill="#111"/><path d="M12 0.5L17 5.5M17 0.5L12 5.5" stroke="#222" stroke-width="1.1"/></svg>
<div class="tab" style="left:743px;top:74px;width:128px;height:13px;background:linear-gradient(#b7cde4,#a9c3e0)">
  <svg class="a" style="left:4px;top:1px" width="12" height="11" viewBox="0 0 12 11"><rect x="0" y="1" width="4" height="10" fill="#e9a6d8"/><rect x="4" y="0" width="2" height="11" fill="#45506a"/><rect x="7" y="3" width="4" height="8" fill="#5a6680"/></svg>
  <span class="a" style="left:17px;top:1.5px;color:#1e2a3a">Plan View - S2 - Z = 9 (m)</span>
</div>
<svg class="a" style="left:1256px;top:77px" width="20" height="8"><path d="M0 2h6L3 5z" fill="#111"/><path d="M12 0.5L17 5.5M17 0.5L12 5.5" stroke="#222" stroke-width="1.1"/></svg>

<div id="v3d" class="a"></div>
<!--3D-->
<svg class="a" style="left:0;top:0" width="1280" height="720" viewBox="0 0 1280 720"><g stroke="#a0542a" stroke-width="0.35">
<polygon points="390.7,269.2 387.6,270.9 389.0,288.3 392.1,286.6" fill="#b9663a"/>
<polygon points="387.6,270.9 384.8,269.5 386.2,286.9 389.0,288.3" fill="#db7d47"/>
<polygon points="426.5,286.4 423.4,288.2 424.0,306.2 427.0,304.3" fill="#b9663a"/>
<polygon points="423.4,288.2 420.2,286.7 420.9,304.6 424.0,306.2" fill="#db7d47"/>
<polygon points="344.2,294.0 340.5,296.0 343.1,314.3 346.7,312.2" fill="#b9663a"/>
<polygon points="340.5,296.0 337.7,294.4 340.4,312.6 343.1,314.3" fill="#db7d47"/>
<polygon points="324.2,304.7 320.2,306.8 323.4,325.4 327.3,323.2" fill="#b9663a"/>
<polygon points="320.2,306.8 317.4,305.0 320.7,323.6 323.4,325.4" fill="#db7d47"/>
<polygon points="412.8,308.7 409.4,310.9 410.4,329.6 413.7,327.4" fill="#b9663a"/>
<polygon points="409.4,310.9 406.1,309.1 407.2,327.8 410.4,329.6" fill="#db7d47"/>
<polygon points="488.3,313.8 485.3,316.0 484.5,334.9 487.4,332.6" fill="#b9663a"/>
<polygon points="485.3,316.0 481.6,314.2 480.8,333.0 484.5,334.9" fill="#db7d47"/>
<polygon points="380.2,314.3 376.5,316.5 378.4,335.5 382.0,333.2" fill="#b9663a"/>
<polygon points="376.5,316.5 373.3,314.7 375.2,333.6 378.4,335.5" fill="#db7d47"/>
<polygon points="360.1,326.4 356.2,328.8 358.7,348.1 362.5,345.6" fill="#b9663a"/>
<polygon points="356.2,328.8 353.0,326.9 355.5,346.1 358.7,348.1" fill="#db7d47"/>
<polygon points="380.1,329.4 376.3,331.8 378.2,351.1 382.0,348.6" fill="#b9663a"/>
<polygon points="376.3,331.8 372.9,329.8 375.0,349.1 378.2,351.1" fill="#db7d47"/>
<polygon points="535.1,336.1 532.3,338.6 530.1,358.1 532.8,355.6" fill="#b9663a"/>
<polygon points="532.3,338.6 528.0,336.6 525.9,356.0 530.1,358.1" fill="#db7d47"/>
<polygon points="265.9,335.7 261.2,338.2 266.2,357.8 270.8,355.2" fill="#b9663a"/>
<polygon points="261.2,338.2 258.4,336.2 263.5,355.6 266.2,357.8" fill="#db7d47"/>
<polygon points="455.8,340.3 452.4,342.9 452.4,362.5 455.7,359.9" fill="#b9663a"/>
<polygon points="452.4,342.9 448.5,340.7 448.6,360.3 452.4,362.5" fill="#db7d47"/>
<polygon points="440.7,341.4 437.1,344.0 437.5,363.6 440.9,361.0" fill="#b9663a"/>
<polygon points="437.1,344.0 433.3,341.8 433.8,361.4 437.5,363.6" fill="#db7d47"/>
<polygon points="340.4,354.4 336.0,357.2 339.2,377.2 343.5,374.4" fill="#b9663a"/>
<polygon points="336.0,357.2 332.6,354.9 336.0,374.9 339.2,377.2" fill="#db7d47"/>
<polygon points="558.7,358.3 555.9,361.1 552.9,381.2 555.6,378.3" fill="#b9663a"/>
<polygon points="555.9,361.1 551.1,358.8 548.3,378.8 552.9,381.2" fill="#db7d47"/>
<polygon points="301.3,362.0 296.5,364.9 300.9,385.1 305.5,382.1" fill="#b9663a"/>
<polygon points="296.5,364.9 293.3,362.5 297.8,382.6 300.9,385.1" fill="#db7d47"/>
<polygon points="481.9,362.6 478.4,365.5 477.6,385.6 481.0,382.7" fill="#b9663a"/>
<polygon points="478.4,365.5 474.1,363.1 473.4,383.2 477.6,385.6" fill="#db7d47"/>
<polygon points="401.9,369.9 397.8,372.9 399.3,393.2 403.3,390.1" fill="#b9663a"/>
<polygon points="397.8,372.9 393.9,370.4 395.5,390.7 399.3,393.2" fill="#db7d47"/>
<polygon points="313.7,371.3 308.9,374.3 313.1,394.7 317.7,391.6" fill="#b9663a"/>
<polygon points="308.9,374.3 305.6,371.8 309.8,392.1 313.1,394.7" fill="#db7d47"/>
<polygon points="543.2,374.0 540.2,377.1 537.5,397.5 540.5,394.3" fill="#b9663a"/>
<polygon points="540.2,377.1 535.3,374.5 532.9,394.9 537.5,397.5" fill="#db7d47"/>
<polygon points="504.9,376.7 501.5,379.8 500.0,400.3 503.3,397.1" fill="#b9663a"/>
<polygon points="501.5,379.8 496.9,377.2 495.5,397.6 500.0,400.3" fill="#db7d47"/>
<polygon points="619.4,381.7 616.9,384.9 611.9,405.5 614.3,402.2" fill="#b9663a"/>
<polygon points="616.9,384.9 611.4,382.3 606.6,402.8 611.9,405.5" fill="#db7d47"/>
<polygon points="585.8,383.5 583.0,386.8 579.0,407.3 581.8,404.0" fill="#b9663a"/>
<polygon points="583.0,386.8 577.8,384.1 574.0,404.6 579.0,407.3" fill="#db7d47"/>
<polygon points="468.3,387.7 464.5,391.0 464.1,411.7 467.8,408.3" fill="#b9663a"/>
<polygon points="464.5,391.0 460.0,388.3 459.7,408.9 464.1,411.7" fill="#db7d47"/>
<polygon points="552.5,403.6 549.3,407.2 546.2,428.1 549.3,424.5" fill="#b9663a"/>
<polygon points="549.3,407.2 544.1,404.2 541.1,425.1 546.2,428.1" fill="#db7d47"/>
<polygon points="356.6,403.1 351.7,406.7 354.9,427.7 359.6,424.0" fill="#b9663a"/>
<polygon points="351.7,406.7 347.8,403.7 351.1,424.7 354.9,427.7" fill="#db7d47"/>
<polygon points="470.8,404.3 466.9,407.9 466.4,428.9 470.2,425.2" fill="#b9663a"/>
<polygon points="466.9,407.9 462.2,404.9 461.8,425.9 466.4,428.9" fill="#db7d47"/>
<polygon points="511.4,406.2 507.9,409.8 506.0,430.8 509.5,427.1" fill="#b9663a"/>
<polygon points="507.9,409.8 502.9,406.8 501.2,427.8 506.0,430.8" fill="#db7d47"/>
<polygon points="376.7,418.0 371.8,421.9 374.4,443.0 379.1,439.2" fill="#b9663a"/>
<polygon points="371.8,421.9 367.6,418.7 370.3,439.8 374.4,443.0" fill="#db7d47"/>
<polygon points="581.5,438.4 578.3,442.6 573.9,464.0 577.0,459.8" fill="#b9663a"/>
<polygon points="578.3,442.6 572.4,439.2 568.2,460.5 573.9,464.0" fill="#db7d47"/>
<polygon points="418.6,452.4 413.7,456.8 415.1,478.4 419.7,473.9" fill="#b9663a"/>
<polygon points="413.7,456.8 408.9,453.1 410.4,474.7 415.1,478.4" fill="#db7d47"/>
<polygon points="499.7,470.0 495.5,474.7 493.9,496.4 498.0,491.6" fill="#b9663a"/>
<polygon points="495.5,474.7 489.8,470.8 488.4,492.4 493.9,496.4" fill="#db7d47"/>
<polygon points="552.0,479.3 548.2,484.2 544.5,506.0 548.2,501.0" fill="#b9663a"/>
<polygon points="548.2,484.2 542.0,480.1 538.6,501.8 544.5,506.0" fill="#db7d47"/>
<polygon points="489.4,505.4 484.8,510.9 483.5,532.7 487.9,527.1" fill="#b9663a"/>
<polygon points="484.8,510.9 478.8,506.3 477.7,528.1 483.5,532.7" fill="#db7d47"/>
<polygon points="386.3,270.1 421.9,287.4 422.0,291.0 386.6,273.7" fill="#db7d47"/>
<polygon points="421.9,287.4 424.8,285.7 424.9,289.3 422.0,291.0" fill="#b9663a"/>
<polygon points="386.3,270.1 421.9,287.4 424.8,285.7 389.2,268.6" fill="#e68f58"/>
<polygon points="263.4,336.9 389.1,270.0 389.4,273.5 264.5,340.9" fill="#b9663a"/>
<polygon points="260.9,335.0 263.4,336.9 264.5,340.9 261.9,339.0" fill="#db7d47"/>
<polygon points="263.4,336.9 389.1,270.0 386.5,268.7 260.9,335.0" fill="#e68f58"/>
<polygon points="339.2,295.1 375.0,315.5 375.4,319.4 339.8,298.8" fill="#db7d47"/>
<polygon points="375.0,315.5 378.5,313.5 378.8,317.3 375.4,319.4" fill="#b9663a"/>
<polygon points="339.2,295.1 375.0,315.5 378.5,313.5 342.6,293.3" fill="#e68f58"/>
<polygon points="407.8,309.9 412.8,312.7 413.0,316.5 408.0,313.7" fill="#da7c47"/>
<polygon points="412.8,312.7 416.1,310.7 416.2,314.5 413.0,316.5" fill="#b9663a"/>
<polygon points="407.8,309.9 412.8,312.7 416.1,310.7 411.1,307.9" fill="#e68f58"/>
<polygon points="413.0,312.7 418.5,315.3 418.7,319.1 413.2,316.6" fill="#d97b46"/>
<polygon points="418.5,315.3 421.4,313.1 421.6,317.0 418.7,319.1" fill="#b9663a"/>
<polygon points="413.0,312.7 418.5,315.3 421.4,313.1 415.9,310.6" fill="#e68f58"/>
<polygon points="488.3,315.0 498.4,315.5 498.2,319.3 488.1,318.9" fill="#c77040"/>
<polygon points="488.3,315.0 498.4,315.5 498.5,312.8 488.5,312.4" fill="#e68f58"/>
<polygon points="479.0,316.2 488.9,315.0 488.7,318.9 478.8,320.0" fill="#c16b3d"/>
<polygon points="478.0,313.6 479.0,316.2 478.8,320.0 477.9,317.4" fill="#c56e3f"/>
<polygon points="479.0,316.2 488.9,315.0 487.9,312.4 478.0,313.6" fill="#e68f58"/>
<polygon points="497.8,315.4 507.6,317.5 507.3,321.3 497.6,319.3" fill="#d07543"/>
<polygon points="507.6,317.5 508.8,314.9 508.5,318.8 507.3,321.3" fill="#bb673b"/>
<polygon points="497.8,315.4 507.6,317.5 508.8,314.9 499.1,312.9" fill="#e68f58"/>
<polygon points="418.7,315.4 424.7,317.6 424.9,321.5 418.8,319.2" fill="#d67945"/>
<polygon points="424.7,317.6 427.3,315.3 427.4,319.1 424.9,321.5" fill="#b9663a"/>
<polygon points="418.7,315.4 424.7,317.6 427.3,315.3 421.3,313.1" fill="#e68f58"/>
<polygon points="319.0,305.8 354.7,327.8 355.2,331.7 319.6,309.6" fill="#db7d47"/>
<polygon points="354.7,327.8 358.4,325.5 358.9,329.5 355.2,331.7" fill="#b9663a"/>
<polygon points="319.0,305.8 354.7,327.8 358.4,325.5 322.6,303.9" fill="#e68f58"/>
<polygon points="470.5,318.8 479.6,316.1 479.4,319.9 470.4,322.7" fill="#bc683b"/>
<polygon points="468.5,316.4 470.5,318.8 470.4,322.7 468.4,320.2" fill="#cd7442"/>
<polygon points="470.5,318.8 479.6,316.1 477.5,313.7 468.5,316.4" fill="#e68f58"/>
<polygon points="424.9,317.7 431.4,319.6 431.5,323.4 425.0,321.5" fill="#d37744"/>
<polygon points="431.4,319.6 433.6,317.1 433.7,321.0 431.5,323.4" fill="#ba673a"/>
<polygon points="424.9,317.7 431.4,319.6 433.6,317.1 427.1,315.2" fill="#e68f58"/>
<polygon points="507.0,317.3 515.9,320.9 515.5,324.8 506.7,321.2" fill="#d97b46"/>
<polygon points="515.9,320.9 518.2,318.6 517.8,322.5 515.5,324.8" fill="#b9663a"/>
<polygon points="507.0,317.3 515.9,320.9 518.2,318.6 509.4,315.1" fill="#e68f58"/>
<polygon points="431.6,319.6 438.4,321.2 438.5,325.0 431.7,323.5" fill="#d07543"/>
<polygon points="438.4,321.2 440.2,318.6 440.3,322.4 438.5,325.0" fill="#bb673b"/>
<polygon points="431.6,319.6 438.4,321.2 440.2,318.6 433.4,317.0" fill="#e68f58"/>
<polygon points="463.4,322.8 471.0,318.6 470.9,322.5 463.3,326.7" fill="#b9663a"/>
<polygon points="460.3,320.7 463.4,322.8 463.3,326.7 460.3,324.6" fill="#d67a45"/>
<polygon points="463.4,322.8 471.0,318.6 468.0,316.6 460.3,320.7" fill="#e68f58"/>
<polygon points="295.8,361.2 298.8,363.4 299.7,367.5 296.7,365.3" fill="#db7d47"/>
<polygon points="298.8,363.4 424.8,287.2 424.9,290.9 299.7,367.5" fill="#b9663a"/>
<polygon points="421.9,285.8 295.8,361.2 298.8,363.4 424.8,287.2" fill="#e68f58"/>
<polygon points="438.6,321.2 445.8,322.4 445.8,326.3 438.7,325.1" fill="#cd7342"/>
<polygon points="445.8,322.4 447.1,319.7 447.1,323.6 445.8,326.3" fill="#bc683b"/>
<polygon points="438.6,321.2 445.8,322.4 447.1,319.7 440.0,318.5" fill="#e68f58"/>
<polygon points="446.0,322.4 453.4,323.2 453.3,327.0 446.0,326.3" fill="#ca7241"/>
<polygon points="453.4,323.2 454.2,320.4 454.2,324.3 453.3,327.0" fill="#be693c"/>
<polygon points="446.0,322.4 453.4,323.2 454.2,320.4 446.9,319.7" fill="#e68f58"/>
<polygon points="453.6,323.2 461.1,323.5 461.0,327.4 453.6,327.1" fill="#c77040"/>
<polygon points="461.1,323.5 461.5,320.7 461.4,324.6 461.0,327.4" fill="#bf6a3c"/>
<polygon points="453.6,323.2 461.1,323.5 461.5,320.7 454.0,320.4" fill="#e68f58"/>
<polygon points="515.4,320.6 522.6,325.5 522.3,329.5 515.0,324.5" fill="#d47844"/>
<polygon points="522.6,325.5 525.9,323.8 525.5,327.7 522.3,329.5" fill="#ba663a"/>
<polygon points="515.4,320.6 522.6,325.5 525.9,323.8 518.7,318.9" fill="#e68f58"/>
<polygon points="458.1,327.9 463.8,322.5 463.7,326.4 458.0,331.8" fill="#b9663a"/>
<polygon points="454.2,326.4 458.1,327.9 458.0,331.8 454.2,330.3" fill="#d77a45"/>
<polygon points="458.1,327.9 463.8,322.5 459.9,321.0 454.2,326.4" fill="#e68f58"/>
<polygon points="522.3,325.2 527.5,331.2 527.1,335.1 521.9,329.1" fill="#cc7341"/>
<polygon points="527.5,331.2 531.6,330.0 531.1,333.9 527.1,335.1" fill="#bd683b"/>
<polygon points="522.3,325.2 527.5,331.2 531.6,330.0 526.3,324.1" fill="#e68f58"/>
<polygon points="393.1,319.2 435.3,342.8 435.4,346.8 393.4,323.0" fill="#db7d47"/>
<polygon points="435.3,342.8 438.6,340.4 438.7,344.4 435.4,346.8" fill="#b9663a"/>
<polygon points="393.1,319.2 435.3,342.8 438.6,340.4 396.4,317.1" fill="#e68f58"/>
<polygon points="455.1,333.9 458.3,327.5 458.3,331.5 455.0,337.8" fill="#bc683b"/>
<polygon points="450.6,333.0 455.1,333.9 455.0,337.8 450.6,337.0" fill="#ce7442"/>
<polygon points="455.1,333.9 458.3,327.5 453.9,326.7 450.6,333.0" fill="#e68f58"/>
<polygon points="527.2,330.8 529.9,337.5 529.5,341.5 526.8,334.7" fill="#c46e3e"/>
<polygon points="529.9,337.5 534.6,337.0 534.1,341.0 529.5,341.5" fill="#c26c3d"/>
<polygon points="527.2,330.8 529.9,337.5 534.6,337.0 531.8,330.4" fill="#e68f58"/>
<polygon points="286.6,323.0 322.1,347.4 322.8,351.4 287.4,326.9" fill="#db7d47"/>
<polygon points="322.1,347.4 326.2,344.9 326.9,348.9 322.8,351.4" fill="#b9663a"/>
<polygon points="286.6,323.0 322.1,347.4 326.2,344.9 290.6,320.8" fill="#e68f58"/>
<polygon points="454.7,340.3 455.2,333.5 455.2,337.4 454.7,344.3" fill="#c06b3d"/>
<polygon points="449.8,340.3 454.7,340.3 454.7,344.3 449.8,344.3" fill="#c66f3f"/>
<polygon points="454.7,340.3 455.2,333.5 450.4,333.4 449.8,340.3" fill="#e68f58"/>
<polygon points="311.2,372.7 411.0,309.7 411.2,313.5 312.1,376.9" fill="#b9663a"/>
<polygon points="308.1,370.4 311.2,372.7 312.1,376.9 309.0,374.5" fill="#db7d47"/>
<polygon points="311.2,372.7 411.0,309.7 407.9,308.1 308.1,370.4" fill="#e68f58"/>
<polygon points="529.8,337.1 529.6,344.0 529.2,348.0 529.4,341.0" fill="#be6a3c"/>
<polygon points="529.6,344.0 534.5,344.4 534.1,348.4 529.2,348.0" fill="#c97140"/>
<polygon points="529.8,337.1 529.6,344.0 534.5,344.4 534.6,337.5" fill="#e68f58"/>
<polygon points="437.1,343.2 452.4,342.1 452.4,346.1 437.2,347.2" fill="#c36c3e"/>
<polygon points="436.9,340.1 437.1,343.2 437.2,347.2 436.9,344.1" fill="#c36d3e"/>
<polygon points="437.1,343.2 452.4,342.1 452.0,339.0 436.9,340.1" fill="#e68f58"/>
<polygon points="449.9,340.7 452.3,347.6 452.3,351.6 449.9,344.7" fill="#c76f3f"/>
<polygon points="452.3,347.6 457.1,346.8 457.0,350.8 452.3,351.6" fill="#c06a3d"/>
<polygon points="457.1,346.8 454.6,339.9 449.9,340.7 452.3,347.6" fill="#e68f58"/>
<polygon points="526.5,350.3 531.3,351.5 530.8,355.6 526.1,354.3" fill="#d17643"/>
<polygon points="531.3,351.5 534.4,344.8 534.0,348.8 530.8,355.6" fill="#ba673b"/>
<polygon points="529.7,343.6 526.5,350.3 531.3,351.5 534.4,344.8" fill="#e68f58"/>
<polygon points="259.9,337.1 295.0,363.6 295.9,367.7 261.0,341.1" fill="#db7d47"/>
<polygon points="295.0,363.6 299.5,360.9 300.4,365.0 295.9,367.7" fill="#b9663a"/>
<polygon points="299.5,360.9 264.3,334.8 259.9,337.1 295.0,363.6" fill="#e68f58"/>
<polygon points="511.4,352.2 522.0,351.9 521.6,356.0 511.1,356.3" fill="#c46e3e"/>
<polygon points="510.8,349.0 511.4,352.2 511.1,356.3 510.5,353.0" fill="#c26c3d"/>
<polygon points="511.4,352.2 522.0,351.9 521.4,348.7 510.8,349.0" fill="#e68f58"/>
<polygon points="452.5,348.0 457.8,354.4 457.8,358.5 452.5,352.0" fill="#cf7542"/>
<polygon points="457.8,354.4 462.2,352.8 462.2,356.8 457.8,358.5" fill="#bb673b"/>
<polygon points="462.2,352.8 456.8,346.4 452.5,348.0 457.8,354.4" fill="#e68f58"/>
<polygon points="521.5,351.9 532.3,353.0 531.8,357.1 521.1,356.0" fill="#ca7140"/>
<polygon points="521.8,348.7 521.5,351.9 521.1,356.0 521.4,352.7" fill="#be693c"/>
<polygon points="521.5,351.9 532.3,353.0 532.5,349.8 521.8,348.7" fill="#e68f58"/>
<polygon points="501.7,353.8 511.9,352.2 511.6,356.2 501.4,357.9" fill="#c06b3d"/>
<polygon points="500.2,350.6 501.7,353.8 501.4,357.9 500.0,354.7" fill="#c76f3f"/>
<polygon points="501.7,353.8 511.9,352.2 510.4,349.0 500.2,350.6" fill="#e68f58"/>
<polygon points="531.8,352.9 542.3,355.4 541.8,359.5 531.3,357.0" fill="#d07543"/>
<polygon points="542.3,355.4 543.4,352.3 542.9,356.3 541.8,359.5" fill="#bb673b"/>
<polygon points="531.8,352.9 542.3,355.4 543.4,352.3 532.9,349.8" fill="#e68f58"/>
<polygon points="492.6,356.7 502.1,353.7 501.8,357.8 492.4,360.8" fill="#bc683b"/>
<polygon points="490.3,353.7 492.6,356.7 492.4,360.8 490.1,357.7" fill="#cc7341"/>
<polygon points="492.6,356.7 502.1,353.7 499.8,350.7 490.3,353.7" fill="#e68f58"/>
<polygon points="541.8,355.2 551.8,359.0 551.2,363.1 541.3,359.3" fill="#d67a45"/>
<polygon points="551.8,359.0 553.8,356.1 553.2,360.2 551.2,363.1" fill="#b9663a"/>
<polygon points="541.8,355.2 551.8,359.0 553.8,356.1 543.8,352.4" fill="#e68f58"/>
<polygon points="458.2,354.8 466.2,360.2 466.2,364.3 458.2,358.9" fill="#d87b46"/>
<polygon points="466.2,360.2 469.8,357.8 469.7,361.9 466.2,364.3" fill="#b9663a"/>
<polygon points="469.8,357.8 461.8,352.4 458.2,354.8 466.2,360.2" fill="#e68f58"/>
<polygon points="484.5,360.9 493.0,356.6 492.8,360.6 484.3,365.0" fill="#ba673a"/>
<polygon points="481.4,358.1 484.5,360.9 484.3,365.0 481.2,362.2" fill="#d27744"/>
<polygon points="484.5,360.9 493.0,356.6 489.9,353.8 481.4,358.1" fill="#e68f58"/>
<polygon points="551.4,358.8 560.6,363.8 559.9,367.9 550.8,362.9" fill="#d97c46"/>
<polygon points="560.6,363.8 563.4,361.3 562.8,365.4 559.9,367.9" fill="#b9663a"/>
<polygon points="551.4,358.8 560.6,363.8 563.4,361.3 554.2,356.3" fill="#e68f58"/>
<polygon points="466.8,360.5 476.9,364.3 476.8,368.5 466.7,364.6" fill="#d57945"/>
<polygon points="476.9,364.3 479.3,361.3 479.2,365.4 476.8,368.5" fill="#ba663a"/>
<polygon points="479.3,361.3 469.3,357.5 466.8,360.5 476.9,364.3" fill="#e68f58"/>
<polygon points="477.6,366.1 484.8,360.6 484.6,364.7 477.4,370.3" fill="#b9663a"/>
<polygon points="473.7,363.7 477.6,366.1 477.4,370.3 473.6,367.8" fill="#d97c46"/>
<polygon points="477.6,366.1 484.8,360.6 481.0,358.3 473.7,363.7" fill="#e68f58"/>
<polygon points="560.2,363.6 568.3,369.7 567.6,373.9 559.5,367.7" fill="#d37744"/>
<polygon points="568.3,369.7 571.9,367.6 571.2,371.7 567.6,373.9" fill="#ba673a"/>
<polygon points="560.2,363.6 568.3,369.7 571.9,367.6 563.8,361.5" fill="#e68f58"/>
<polygon points="541.7,375.5 557.2,359.7 556.6,363.8 541.1,379.7" fill="#b9663a"/>
<polygon points="537.2,373.1 541.7,375.5 541.1,379.7 536.7,377.3" fill="#db7d47"/>
<polygon points="541.7,375.5 557.2,359.7 552.8,357.5 537.2,373.1" fill="#e68f58"/>
<polygon points="472.1,372.4 477.9,365.9 477.7,370.0 472.0,376.6" fill="#b9663a"/>
<polygon points="467.7,370.5 472.1,372.4 472.0,376.6 467.6,374.7" fill="#d67a45"/>
<polygon points="472.1,372.4 477.9,365.9 473.4,364.0 467.7,370.5" fill="#e68f58"/>
<polygon points="334.5,356.0 377.1,385.3 377.6,389.5 335.1,360.1" fill="#db7d47"/>
<polygon points="377.1,385.3 381.2,382.3 381.7,386.5 377.6,389.5" fill="#b9663a"/>
<polygon points="334.5,356.0 377.1,385.3 381.2,382.3 338.6,353.4" fill="#e68f58"/>
<polygon points="476.7,363.7 499.1,378.3 498.8,382.5 476.5,367.8" fill="#d87b46"/>
<polygon points="499.1,378.3 502.6,375.6 502.3,379.8 498.8,382.5" fill="#b9663a"/>
<polygon points="476.7,363.7 499.1,378.3 502.6,375.6 480.2,361.2" fill="#e68f58"/>
<polygon points="518.7,371.8 529.4,372.6 528.9,376.7 518.2,376.0" fill="#c87040"/>
<polygon points="518.7,368.2 518.7,371.8 518.2,376.0 518.3,372.4" fill="#bf6a3c"/>
<polygon points="518.7,371.8 529.4,372.6 529.4,369.0 518.7,368.2" fill="#e68f58"/>
<polygon points="354.0,404.8 438.8,342.6 438.8,346.6 354.7,409.1" fill="#b9663a"/>
<polygon points="350.4,402.1 354.0,404.8 354.7,409.1 351.1,406.4" fill="#db7d47"/>
<polygon points="354.0,404.8 438.8,342.6 435.2,340.6 350.4,402.1" fill="#e68f58"/>
<polygon points="509.7,373.9 519.7,371.8 519.3,375.9 509.3,378.1" fill="#bf6a3c"/>
<polygon points="507.8,370.4 509.7,373.9 509.3,378.1 507.4,374.5" fill="#c87040"/>
<polygon points="509.7,373.9 519.7,371.8 517.7,368.3 507.8,370.4" fill="#e68f58"/>
<polygon points="567.9,369.4 574.6,376.5 573.8,380.7 567.2,373.6" fill="#cc7341"/>
<polygon points="574.6,376.5 578.9,375.0 578.2,379.1 573.8,380.7" fill="#bc683b"/>
<polygon points="567.9,369.4 574.6,376.5 578.9,375.0 572.2,367.9" fill="#e68f58"/>
<polygon points="528.4,372.4 538.5,375.9 537.9,380.1 527.9,376.5" fill="#d47944"/>
<polygon points="538.5,375.9 540.4,372.7 539.8,376.8 537.9,380.1" fill="#ba663a"/>
<polygon points="528.4,372.4 538.5,375.9 540.4,372.7 530.4,369.2" fill="#e68f58"/>
<polygon points="412.7,359.3 462.4,389.5 462.3,393.7 412.9,363.4" fill="#db7d47"/>
<polygon points="462.4,389.5 465.9,386.4 465.8,390.7 462.3,393.7" fill="#b9663a"/>
<polygon points="412.7,359.3 462.4,389.5 465.9,386.4 416.3,356.7" fill="#e68f58"/>
<polygon points="502.6,378.4 510.5,373.6 510.2,377.7 502.3,382.6" fill="#ba663a"/>
<polygon points="499.0,375.5 502.6,378.4 502.3,382.6 498.7,379.6" fill="#d47944"/>
<polygon points="502.6,378.4 510.5,373.6 506.9,370.7 499.0,375.5" fill="#e68f58"/>
<polygon points="468.4,379.6 472.4,372.1 472.2,376.3 468.3,383.8" fill="#bb673b"/>
<polygon points="463.4,378.3 468.4,379.6 468.3,383.8 463.4,382.5" fill="#d07543"/>
<polygon points="468.4,379.6 472.4,372.1 467.4,370.8 463.4,378.3" fill="#e68f58"/>
<polygon points="396.0,371.5 415.7,384.3 416.0,388.5 396.3,375.7" fill="#db7d47"/>
<polygon points="415.7,384.3 419.6,381.3 419.7,385.5 416.0,388.5" fill="#b9663a"/>
<polygon points="396.0,371.5 415.7,384.3 419.6,381.3 399.8,368.7" fill="#e68f58"/>
<polygon points="537.6,375.5 545.5,381.5 545.0,385.7 537.0,379.7" fill="#d47944"/>
<polygon points="545.5,381.5 549.2,379.0 548.6,383.2 545.0,385.7" fill="#ba663a"/>
<polygon points="537.6,375.5 545.5,381.5 549.2,379.0 541.2,373.1" fill="#e68f58"/>
<polygon points="333.8,389.6 360.8,371.2 361.3,375.4 334.5,393.9" fill="#b9663a"/>
<polygon points="330.4,387.1 333.8,389.6 334.5,393.9 331.2,391.3" fill="#db7d47"/>
<polygon points="333.8,389.6 360.8,371.2 357.4,368.9 330.4,387.1" fill="#e68f58"/>
<polygon points="574.3,376.2 579.2,384.1 578.4,388.3 573.5,380.4" fill="#c76f3f"/>
<polygon points="579.2,384.1 584.2,383.2 583.4,387.4 578.4,388.3" fill="#c06b3d"/>
<polygon points="574.3,376.2 579.2,384.1 584.2,383.2 579.2,375.3" fill="#e68f58"/>
<polygon points="498.6,384.7 503.2,377.8 502.9,382.0 498.3,388.9" fill="#ba663a"/>
<polygon points="493.7,382.9 498.6,384.7 498.3,388.9 493.4,387.1" fill="#d47944"/>
<polygon points="498.6,384.7 503.2,377.8 498.4,376.0 493.7,382.9" fill="#e68f58"/>
<polygon points="582.6,385.7 616.3,383.9 615.3,388.1 581.7,390.0" fill="#c46d3e"/>
<polygon points="581.1,381.9 582.6,385.7 581.7,390.0 580.3,386.1" fill="#c26c3e"/>
<polygon points="582.6,385.7 616.3,383.9 614.5,380.1 581.1,381.9" fill="#e68f58"/>
<polygon points="466.7,387.4 468.6,379.2 468.5,383.4 466.6,391.6" fill="#be693c"/>
<polygon points="461.3,386.8 466.7,387.4 466.6,391.6 461.3,391.0" fill="#ca7140"/>
<polygon points="466.7,387.4 468.6,379.2 463.3,378.6 461.3,386.8" fill="#e68f58"/>
<polygon points="544.9,380.8 549.6,388.4 549.0,392.6 544.4,385.0" fill="#c87040"/>
<polygon points="549.6,388.4 554.6,387.3 554.0,391.5 549.0,392.6" fill="#bf6a3c"/>
<polygon points="544.9,380.8 549.6,388.4 554.6,387.3 549.9,379.7" fill="#e68f58"/>
<polygon points="579.0,383.7 581.9,392.2 581.0,396.5 578.2,388.0" fill="#c26c3d"/>
<polygon points="581.9,392.2 587.3,392.0 586.5,396.3 581.0,396.5" fill="#c46e3e"/>
<polygon points="579.0,383.7 581.9,392.2 587.3,392.0 584.4,383.6" fill="#e68f58"/>
<polygon points="492.8,391.6 498.3,392.0 498.0,396.3 492.6,395.9" fill="#c87040"/>
<polygon points="498.3,392.0 498.9,384.0 493.4,383.6 492.8,391.6" fill="#e68f58"/>
<polygon points="461.3,387.2 461.6,395.8 461.5,400.1 461.2,391.4" fill="#c26c3d"/>
<polygon points="461.6,395.8 467.2,395.7 467.1,399.9 461.5,400.1" fill="#c46e3e"/>
<polygon points="467.2,395.7 466.8,387.0 461.3,387.2 461.6,395.8" fill="#e68f58"/>
<polygon points="549.3,387.6 549.8,395.8 549.2,400.1 548.7,391.9" fill="#bf6a3c"/>
<polygon points="549.8,395.8 555.5,396.2 554.8,400.5 549.2,400.1" fill="#c87040"/>
<polygon points="549.3,387.6 549.8,395.8 555.5,396.2 554.9,388.0" fill="#e68f58"/>
<polygon points="374.1,419.8 436.1,371.0 436.1,375.2 374.6,424.2" fill="#b9663a"/>
<polygon points="370.2,416.9 374.1,419.8 374.6,424.2 370.7,421.2" fill="#db7d47"/>
<polygon points="374.1,419.8 436.1,371.0 432.2,368.7 370.2,416.9" fill="#e68f58"/>
<polygon points="493.0,392.4 496.8,400.5 496.5,404.7 492.7,396.6" fill="#c87040"/>
<polygon points="496.8,400.5 502.1,399.3 501.7,403.5 496.5,404.7" fill="#bf6a3c"/>
<polygon points="502.1,399.3 498.2,391.2 493.0,392.4 496.8,400.5" fill="#e68f58"/>
<polygon points="581.8,391.8 582.4,400.6 581.6,404.8 581.0,396.1" fill="#be693c"/>
<polygon points="582.4,400.6 588.2,401.2 587.3,405.5 581.6,404.8" fill="#ca7140"/>
<polygon points="581.8,391.8 582.4,400.6 588.2,401.2 587.4,392.4" fill="#e68f58"/>
<polygon points="546.0,402.6 551.4,404.6 550.8,408.9 545.4,406.8" fill="#d47944"/>
<polygon points="551.4,404.6 555.3,397.0 554.6,401.3 550.8,408.9" fill="#ba663a"/>
<polygon points="550.0,395.1 546.0,402.6 551.4,404.6 555.3,397.0" fill="#e68f58"/>
<polygon points="461.6,396.2 464.3,405.0 464.2,409.3 461.6,400.5" fill="#c66f3f"/>
<polygon points="464.3,405.0 469.9,404.0 469.7,408.3 464.2,409.3" fill="#c06b3d"/>
<polygon points="469.9,404.0 467.1,395.3 461.6,396.2 464.3,405.0" fill="#e68f58"/>
<polygon points="497.3,401.2 505.2,408.0 504.8,412.3 497.0,405.5" fill="#d47944"/>
<polygon points="505.2,408.0 509.4,405.2 509.0,409.5 504.8,412.3" fill="#ba663a"/>
<polygon points="509.4,405.2 501.5,398.5 497.3,401.2 505.2,408.0" fill="#e68f58"/>
<polygon points="580.6,408.8 586.4,410.3 585.5,414.6 579.8,413.1" fill="#d07543"/>
<polygon points="582.4,400.2 580.6,408.8 586.4,410.3 588.1,401.6" fill="#e68f58"/>
<polygon points="547.2,405.0 555.7,409.7 555.0,414.1 546.6,409.3" fill="#db7d47"/>
<polygon points="555.7,409.7 558.6,406.4 557.9,410.7 555.0,414.1" fill="#b9663a"/>
<polygon points="547.2,405.0 555.7,409.7 558.6,406.4 550.2,401.7" fill="#e68f58"/>
<polygon points="466.3,406.8 507.2,408.7 506.8,413.0 466.2,411.1" fill="#c76f3f"/>
<polygon points="466.3,406.8 507.2,408.7 507.1,404.4 466.7,402.5" fill="#e68f58"/>
<polygon points="538.6,407.5 542.8,410.9 542.2,415.2 538.0,411.8" fill="#d47944"/>
<polygon points="542.8,410.9 550.8,405.2 550.2,409.5 542.2,415.2" fill="#ba663a"/>
<polygon points="546.6,401.9 538.6,407.5 542.8,410.9 550.8,405.2" fill="#e68f58"/>
<polygon points="307.4,373.0 413.4,453.0 413.7,457.5 308.3,377.1" fill="#db7d47"/>
<polygon points="413.4,453.0 417.9,448.9 418.1,453.4 413.7,457.5" fill="#b9663a"/>
<polygon points="307.4,373.0 413.4,453.0 417.9,448.9 311.9,370.1" fill="#e68f58"/>
<polygon points="506.1,408.5 516.9,412.8 516.4,417.1 505.7,412.8" fill="#d47944"/>
<polygon points="516.9,412.8 519.2,408.9 518.7,413.2 516.4,417.1" fill="#ba663a"/>
<polygon points="519.2,408.9 508.5,404.7 506.1,408.5 516.9,412.8" fill="#e68f58"/>
<polygon points="528.7,409.6 531.0,413.9 530.5,418.2 528.2,413.9" fill="#c87040"/>
<polygon points="531.0,413.9 541.9,411.3 541.3,415.6 530.5,418.2" fill="#bf6a3c"/>
<polygon points="539.5,407.1 528.7,409.6 531.0,413.9 541.9,411.3" fill="#e68f58"/>
<polygon points="555.2,409.4 562.7,415.4 561.9,419.7 554.5,413.7" fill="#d47844"/>
<polygon points="562.7,415.4 566.6,412.5 565.8,416.9 561.9,419.7" fill="#ba663a"/>
<polygon points="555.2,409.4 562.7,415.4 566.6,412.5 559.1,406.7" fill="#e68f58"/>
<polygon points="518.1,408.6 518.0,413.0 517.5,417.4 517.6,412.9" fill="#bf6a3c"/>
<polygon points="518.0,413.0 529.9,414.0 529.4,418.3 517.5,417.4" fill="#c87040"/>
<polygon points="529.8,409.5 518.1,408.6 518.0,413.0 529.9,414.0" fill="#e68f58"/>
<polygon points="576.5,416.6 582.1,418.9 581.2,423.3 575.6,420.9" fill="#d67a45"/>
<polygon points="582.1,418.9 586.3,410.7 585.4,415.0 581.2,423.3" fill="#b9663a"/>
<polygon points="580.8,408.4 576.5,416.6 582.1,418.9 586.3,410.7" fill="#e68f58"/>
<polygon points="562.3,415.0 568.4,422.0 567.6,426.3 561.5,419.3" fill="#ce7442"/>
<polygon points="568.4,422.0 573.2,419.8 572.4,424.2 567.6,426.3" fill="#bc683b"/>
<polygon points="562.3,415.0 568.4,422.0 573.2,419.8 567.0,412.9" fill="#e68f58"/>
<polygon points="570.0,423.5 575.2,426.7 574.3,431.1 569.2,427.9" fill="#d97c46"/>
<polygon points="575.2,426.7 581.8,419.3 581.0,423.6 574.3,431.1" fill="#b9663a"/>
<polygon points="576.7,416.2 570.0,423.5 575.2,426.7 581.8,419.3" fill="#e68f58"/>
<polygon points="568.1,421.5 572.6,429.3 571.8,433.7 567.3,425.9" fill="#c87040"/>
<polygon points="572.6,429.3 578.1,428.0 577.3,432.4 571.8,433.7" fill="#bf6a3c"/>
<polygon points="568.1,421.5 572.6,429.3 578.1,428.0 573.5,420.3" fill="#e68f58"/>
<polygon points="415.0,455.3 468.7,406.0 468.6,410.3 415.3,459.8" fill="#b9663a"/>
<polygon points="410.5,451.9 415.0,455.3 415.3,459.8 410.8,456.4" fill="#db7d47"/>
<polygon points="415.0,455.3 468.7,406.0 464.3,403.3 410.5,451.9" fill="#e68f58"/>
<polygon points="572.4,428.8 575.1,437.2 574.2,441.6 571.6,433.2" fill="#c26c3e"/>
<polygon points="575.1,437.2 581.1,436.8 580.2,441.2 574.2,441.6" fill="#c46d3e"/>
<polygon points="572.4,428.8 575.1,437.2 581.1,436.8 578.3,428.5" fill="#e68f58"/>
<polygon points="575.0,436.7 575.6,445.3 574.7,449.7 574.1,441.1" fill="#be693c"/>
<polygon points="575.6,445.3 582.0,446.0 581.0,450.4 574.7,449.7" fill="#c97140"/>
<polygon points="575.0,436.7 575.6,445.3 582.0,446.0 581.2,437.3" fill="#e68f58"/>
<polygon points="575.6,444.8 574.0,453.2 573.2,457.7 574.8,449.2" fill="#bb673b"/>
<polygon points="574.0,453.2 580.5,455.0 579.5,459.4 573.2,457.7" fill="#cf7542"/>
<polygon points="575.6,444.8 574.0,453.2 580.5,455.0 581.9,446.5" fill="#e68f58"/>
<polygon points="435.7,432.7 505.1,481.2 504.7,485.7 435.8,437.1" fill="#db7d47"/>
<polygon points="505.1,481.2 509.0,476.6 508.6,481.1 504.7,485.7" fill="#b9663a"/>
<polygon points="435.7,432.7 505.1,481.2 509.0,476.6 439.8,429.0" fill="#e68f58"/>
<polygon points="570.4,460.7 576.5,463.6 575.6,468.0 569.5,465.2" fill="#d67a45"/>
<polygon points="576.5,463.6 580.3,455.5 579.4,459.9 575.6,468.0" fill="#b9663a"/>
<polygon points="574.2,452.7 570.4,460.7 576.5,463.6 580.3,455.5" fill="#e68f58"/>
<polygon points="446.0,477.0 469.6,452.9 469.4,457.3 446.0,481.5" fill="#b9663a"/>
<polygon points="441.0,473.3 446.0,477.0 446.0,481.5 441.1,477.8" fill="#db7d47"/>
<polygon points="446.0,477.0 469.6,452.9 464.7,449.5 441.0,473.3" fill="#e68f58"/>
<polygon points="564.6,467.3 570.2,471.2 569.4,475.6 563.8,471.8" fill="#d97c46"/>
<polygon points="570.2,471.2 576.2,464.0 575.3,468.5 569.4,475.6" fill="#b9663a"/>
<polygon points="570.6,460.3 564.6,467.3 570.2,471.2 576.2,464.0" fill="#e68f58"/>
<polygon points="557.0,472.7 561.8,477.4 561.0,481.9 556.2,477.2" fill="#d27744"/>
<polygon points="561.8,477.4 569.8,471.6 568.9,476.0 561.0,481.9" fill="#ba673a"/>
<polygon points="565.0,466.9 557.0,472.7 561.8,477.4 569.8,471.6" fill="#e68f58"/>
<polygon points="493.6,472.9 503.4,478.5 503.0,482.9 493.3,477.4" fill="#d87b46"/>
<polygon points="503.4,478.5 506.7,473.6 506.3,478.0 503.0,482.9" fill="#b9663a"/>
<polygon points="506.7,473.6 497.0,468.1 493.6,472.9 503.4,478.5" fill="#e68f58"/>
<polygon points="547.9,476.5 551.6,481.9 550.8,486.4 547.2,481.0" fill="#cc7341"/>
<polygon points="551.6,481.9 561.3,477.7 560.5,482.2 550.8,486.4" fill="#bc683b"/>
<polygon points="557.6,472.4 547.9,476.5 551.6,481.9 561.3,477.7" fill="#e68f58"/>
<polygon points="504.0,478.8 515.0,482.6 514.5,487.1 503.6,483.2" fill="#d17643"/>
<polygon points="515.0,482.6 516.9,477.1 516.4,481.5 514.5,487.1" fill="#bb673b"/>
<polygon points="516.9,477.1 506.1,473.3 504.0,478.8 515.0,482.6" fill="#e68f58"/>
<polygon points="411.5,454.8 481.9,508.4 481.7,512.9 411.8,459.2" fill="#db7d47"/>
<polygon points="481.9,508.4 486.3,503.3 486.0,507.8 481.7,512.9" fill="#b9663a"/>
<polygon points="411.5,454.8 481.9,508.4 486.3,503.3 416.0,450.7" fill="#e68f58"/>
<polygon points="537.8,478.6 540.1,484.4 539.4,488.9 537.1,483.0" fill="#c66f3f"/>
<polygon points="540.1,484.4 551.0,482.1 550.2,486.6 539.4,488.9" fill="#c06b3d"/>
<polygon points="548.6,476.3 537.8,478.6 540.1,484.4 551.0,482.1" fill="#e68f58"/>
<polygon points="515.6,482.8 527.2,484.7 526.6,489.1 515.1,487.3" fill="#ca7241"/>
<polygon points="527.7,478.7 516.3,476.9 515.6,482.8 527.2,484.7" fill="#e68f58"/>
<polygon points="527.0,478.7 527.9,484.7 527.3,489.2 526.4,483.2" fill="#c16c3d"/>
<polygon points="527.9,484.7 539.4,484.5 538.7,489.0 527.3,489.2" fill="#c56e3f"/>
<polygon points="538.4,478.5 527.0,478.7 527.9,484.7 539.4,484.5" fill="#e68f58"/>
<polygon points="486.9,507.9 509.8,480.8 509.4,485.2 486.6,512.4" fill="#b9663a"/>
<polygon points="481.4,503.7 486.9,507.9 486.6,512.4 481.1,508.2" fill="#db7d47"/>
<polygon points="486.9,507.9 509.8,480.8 504.3,477.0 481.4,503.7" fill="#e68f58"/>
<polygon points="388.4,238.2 385.2,239.7 387.6,270.9 390.7,269.2" fill="#b9663a"/>
<polygon points="385.2,239.7 382.2,238.4 384.8,269.5 387.6,270.9" fill="#db7d47"/>
<polygon points="425.5,254.1 422.2,255.8 423.4,288.2 426.5,286.4" fill="#b9663a"/>
<polygon points="422.2,255.8 418.9,254.4 420.2,286.7 423.4,288.2" fill="#db7d47"/>
<polygon points="339.7,261.2 335.8,263.1 340.5,296.0 344.2,294.0" fill="#b9663a"/>
<polygon points="335.8,263.1 332.9,261.5 337.7,294.4 340.5,296.0" fill="#db7d47"/>
<polygon points="318.6,271.2 314.5,273.1 320.2,306.8 324.2,304.7" fill="#b9663a"/>
<polygon points="314.5,273.1 311.5,271.5 317.4,305.0 320.2,306.8" fill="#db7d47"/>
<polygon points="411.1,275.0 407.5,277.0 409.4,310.9 412.8,308.7" fill="#b9663a"/>
<polygon points="407.5,277.0 404.1,275.3 406.1,309.1 409.4,310.9" fill="#db7d47"/>
<polygon points="490.0,279.8 486.9,281.9 485.3,316.0 488.3,313.8" fill="#b9663a"/>
<polygon points="486.9,281.9 482.9,280.2 481.6,314.2 485.3,316.0" fill="#db7d47"/>
<polygon points="377.0,280.2 373.1,282.3 376.5,316.5 380.2,314.3" fill="#b9663a"/>
<polygon points="373.1,282.3 369.8,280.6 373.3,314.7 376.5,316.5" fill="#db7d47"/>
<polygon points="355.9,291.6 351.7,293.9 356.2,328.8 360.1,326.4" fill="#b9663a"/>
<polygon points="351.7,293.9 348.4,292.0 353.0,326.9 356.2,328.8" fill="#db7d47"/>
<polygon points="376.8,294.4 372.7,296.6 376.3,331.8 380.1,329.4" fill="#b9663a"/>
<polygon points="372.7,296.6 369.2,294.8 372.9,329.8 376.3,331.8" fill="#db7d47"/>
<polygon points="539.2,300.8 536.3,303.2 532.3,338.6 535.1,336.1" fill="#b9663a"/>
<polygon points="536.3,303.2 531.7,301.2 528.0,336.6 532.3,338.6" fill="#db7d47"/>
<polygon points="256.9,300.3 251.9,302.7 261.2,338.2 265.9,335.7" fill="#b9663a"/>
<polygon points="251.9,302.7 249.1,300.7 258.4,336.2 261.2,338.2" fill="#db7d47"/>
<polygon points="456.1,304.7 452.5,307.1 452.4,342.9 455.8,340.3" fill="#b9663a"/>
<polygon points="452.5,307.1 448.4,305.1 448.5,340.7 452.4,342.9" fill="#db7d47"/>
<polygon points="440.2,305.7 436.5,308.2 437.1,344.0 440.7,341.4" fill="#b9663a"/>
<polygon points="436.5,308.2 432.4,306.1 433.3,341.8 437.1,344.0" fill="#db7d47"/>
<polygon points="334.8,318.1 330.1,320.7 336.0,357.2 340.4,354.4" fill="#b9663a"/>
<polygon points="330.1,320.7 326.6,318.5 332.6,354.9 336.0,357.2" fill="#db7d47"/>
<polygon points="564.2,321.8 561.3,324.5 555.9,361.1 558.7,358.3" fill="#b9663a"/>
<polygon points="561.3,324.5 556.3,322.3 551.1,358.8 555.9,361.1" fill="#db7d47"/>
<polygon points="293.5,325.3 288.3,328.0 296.5,364.9 301.3,362.0" fill="#b9663a"/>
<polygon points="288.3,328.0 285.0,325.7 293.3,362.5 296.5,364.9" fill="#db7d47"/>
<polygon points="483.5,325.8 479.9,328.6 478.4,365.5 481.9,362.6" fill="#b9663a"/>
<polygon points="479.9,328.6 475.3,326.3 474.1,363.1 478.4,365.5" fill="#db7d47"/>
<polygon points="399.3,332.8 394.9,335.6 397.8,372.9 401.9,369.9" fill="#b9663a"/>
<polygon points="394.9,335.6 390.8,333.3 393.9,370.4 397.8,372.9" fill="#db7d47"/>
<polygon points="306.4,334.1 301.2,337.0 308.9,374.3 313.7,371.3" fill="#b9663a"/>
<polygon points="301.2,337.0 297.8,334.6 305.6,371.8 308.9,374.3" fill="#db7d47"/>
<polygon points="548.2,336.7 545.0,339.6 540.2,377.1 543.2,374.0" fill="#b9663a"/>
<polygon points="545.0,339.6 539.9,337.2 535.3,374.5 540.2,377.1" fill="#db7d47"/>
<polygon points="507.8,339.3 504.3,342.3 501.5,379.8 504.9,376.7" fill="#b9663a"/>
<polygon points="504.3,342.3 499.4,339.8 496.9,377.2 501.5,379.8" fill="#db7d47"/>
<polygon points="628.6,344.1 626.1,347.2 616.9,384.9 619.4,381.7" fill="#b9663a"/>
<polygon points="626.1,347.2 620.3,344.7 611.4,382.3 616.9,384.9" fill="#db7d47"/>
<polygon points="593.3,345.8 590.4,348.9 583.0,386.8 585.8,383.5" fill="#b9663a"/>
<polygon points="590.4,348.9 584.8,346.4 577.8,384.1 583.0,386.8" fill="#db7d47"/>
<polygon points="469.3,349.8 465.3,353.0 464.5,391.0 468.3,387.7" fill="#b9663a"/>
<polygon points="465.3,353.0 460.5,350.3 460.0,388.3 464.5,391.0" fill="#db7d47"/>
<polygon points="522.5,348.5 509.4,337.9 509.3,339.7 522.3,350.4" fill="#b8303e" stroke="#b8303e" stroke-width="0.4"/>
<polygon points="509.4,337.9 515.5,335.8 515.3,338.6 509.2,340.8" fill="#a82a38" stroke="#a82a38" stroke-width="0.4"/>
<polygon points="522.5,348.5 509.4,337.9 515.5,335.8 524.3,347.9" fill="#dc5060" stroke="#e88a94" stroke-width="0.3"/>
<polygon points="520.9,351.3 504.3,342.9 504.2,344.7 520.7,353.2" fill="#b8303e" stroke="#b8303e" stroke-width="0.4"/>
<polygon points="504.3,342.9 509.3,339.7 509.0,342.6 504.1,345.8" fill="#a82a38" stroke="#a82a38" stroke-width="0.4"/>
<polygon points="520.9,351.3 504.3,342.9 509.3,339.7 522.3,350.4" fill="#dc5060" stroke="#e88a94" stroke-width="0.3"/>
<polygon points="519.8,354.4 500.6,348.8 500.5,350.6 519.6,356.2" fill="#b8303e" stroke="#b8303e" stroke-width="0.4"/>
<polygon points="500.6,348.8 504.2,344.7 503.9,347.6 500.4,351.7" fill="#a82a38" stroke="#a82a38" stroke-width="0.4"/>
<polygon points="519.8,354.4 500.6,348.8 504.2,344.7 520.7,353.2" fill="#dc5060" stroke="#e88a94" stroke-width="0.3"/>
<polygon points="519.1,357.5 498.8,355.3 498.6,357.1 519.0,359.4" fill="#b8303e" stroke="#b8303e" stroke-width="0.4"/>
<polygon points="498.8,355.3 500.5,350.6 500.3,353.5 498.6,358.2" fill="#a82a38" stroke="#a82a38" stroke-width="0.4"/>
<polygon points="519.1,357.5 498.8,355.3 500.5,350.6 519.6,356.2" fill="#dc5060" stroke="#e88a94" stroke-width="0.3"/>
<polygon points="519.1,360.8 498.8,362.1 498.6,363.9 518.9,362.6" fill="#b8303e" stroke="#b8303e" stroke-width="0.4"/>
<polygon points="498.8,362.1 498.6,357.1 498.4,360.0 498.6,365.0" fill="#a82a38" stroke="#a82a38" stroke-width="0.4"/>
<polygon points="519.1,360.8 498.8,362.1 498.6,357.1 519.0,359.4" fill="#dc5060" stroke="#e88a94" stroke-width="0.3"/>
<polygon points="532.2,379.9 549.7,389.2 549.4,391.0 532.0,381.6" fill="#b8303e" stroke="#b8303e" stroke-width="0.4"/>
<polygon points="549.7,389.2 544.8,393.0 544.5,395.8 549.3,392.0" fill="#a82a38" stroke="#a82a38" stroke-width="0.4"/>
<polygon points="532.2,379.9 549.7,389.2 544.8,393.0 530.8,380.9" fill="#dc5060" stroke="#e88a94" stroke-width="0.3"/>
<polygon points="519.6,364.0 500.8,369.0 500.6,370.8 519.4,365.8" fill="#b8303e" stroke="#b8303e" stroke-width="0.4"/>
<polygon points="500.8,369.0 498.6,363.9 498.5,366.8 500.5,371.9" fill="#a82a38" stroke="#a82a38" stroke-width="0.4"/>
<polygon points="519.6,364.0 500.8,369.0 498.6,363.9 518.9,362.6" fill="#dc5060" stroke="#e88a94" stroke-width="0.3"/>
<polygon points="531.0,379.1 545.1,391.2 544.8,393.0 530.8,380.9" fill="#b8303e" stroke="#b8303e" stroke-width="0.4"/>
<polygon points="545.1,391.2 538.8,393.9 538.4,396.7 544.7,394.1" fill="#a82a38" stroke="#a82a38" stroke-width="0.4"/>
<polygon points="531.0,379.1 545.1,391.2 538.8,393.9 529.3,379.8" fill="#dc5060" stroke="#e88a94" stroke-width="0.3"/>
<polygon points="520.6,367.1 504.6,375.5 504.5,377.4 520.4,368.9" fill="#b8303e" stroke="#b8303e" stroke-width="0.4"/>
<polygon points="504.6,375.5 500.6,370.8 500.4,373.7 504.4,378.4" fill="#a82a38" stroke="#a82a38" stroke-width="0.4"/>
<polygon points="520.6,367.1 504.6,375.5 500.6,370.8 519.4,365.8" fill="#dc5060" stroke="#e88a94" stroke-width="0.3"/>
<polygon points="529.5,378.1 539.0,392.1 538.8,393.9 529.3,379.8" fill="#b8303e" stroke="#b8303e" stroke-width="0.4"/>
<polygon points="539.0,392.1 531.7,393.4 531.4,396.2 538.6,395.0" fill="#a82a38" stroke="#a82a38" stroke-width="0.4"/>
<polygon points="529.5,378.1 539.0,392.1 531.7,393.4 527.4,378.4" fill="#dc5060" stroke="#e88a94" stroke-width="0.3"/>
<polygon points="522.0,370.0 510.1,381.4 510.0,383.2 521.8,371.8" fill="#b8303e" stroke="#b8303e" stroke-width="0.4"/>
<polygon points="510.1,381.4 504.5,377.4 504.3,380.2 509.9,384.3" fill="#a82a38" stroke="#a82a38" stroke-width="0.4"/>
<polygon points="522.0,370.0 510.1,381.4 504.5,377.4 520.4,368.9" fill="#dc5060" stroke="#e88a94" stroke-width="0.3"/>
<polygon points="527.6,376.7 531.9,391.6 531.7,393.4 527.4,378.4" fill="#b8303e" stroke="#b8303e" stroke-width="0.4"/>
<polygon points="531.9,391.6 524.1,391.4 523.8,394.3 531.6,394.5" fill="#a82a38" stroke="#a82a38" stroke-width="0.4"/>
<polygon points="527.6,376.7 531.9,391.6 524.1,391.4 525.5,376.6" fill="#dc5060" stroke="#e88a94" stroke-width="0.3"/>
<polygon points="523.8,372.6 516.9,386.1 516.7,387.9 523.6,374.4" fill="#b8303e" stroke="#b8303e" stroke-width="0.4"/>
<polygon points="516.9,386.1 510.0,383.2 509.7,386.0 516.6,389.0" fill="#a82a38" stroke="#a82a38" stroke-width="0.4"/>
<polygon points="523.8,372.6 516.9,386.1 510.0,383.2 521.8,371.8" fill="#dc5060" stroke="#e88a94" stroke-width="0.3"/>
<polygon points="525.7,374.8 524.3,389.6 524.1,391.4 525.5,376.6" fill="#b8303e" stroke="#b8303e" stroke-width="0.4"/>
<polygon points="524.3,389.6 516.7,387.9 516.4,390.8 524.0,392.5" fill="#a82a38" stroke="#a82a38" stroke-width="0.4"/>
<polygon points="525.7,374.8 524.3,389.6 516.7,387.9 523.6,374.4" fill="#dc5060" stroke="#e88a94" stroke-width="0.3"/>
<polygon points="558.4,365.1 555.1,368.5 549.3,407.2 552.5,403.6" fill="#b9663a"/>
<polygon points="555.1,368.5 549.5,365.7 544.1,404.2 549.3,407.2" fill="#db7d47"/>
<polygon points="351.1,364.6 345.9,368.0 351.7,406.7 356.6,403.1" fill="#b9663a"/>
<polygon points="345.9,368.0 341.8,365.2 347.8,403.7 351.7,406.7" fill="#db7d47"/>
<polygon points="471.9,365.8 467.8,369.2 466.9,407.9 470.8,404.3" fill="#b9663a"/>
<polygon points="467.8,369.2 462.8,366.4 462.2,404.9 466.9,407.9" fill="#db7d47"/>
<polygon points="515.0,367.6 511.2,371.1 507.9,409.8 511.4,406.2" fill="#b9663a"/>
<polygon points="511.2,371.1 505.9,368.2 502.9,406.8 507.9,409.8" fill="#db7d47"/>
<polygon points="372.2,378.9 367.0,382.6 371.8,421.9 376.7,418.0" fill="#b9663a"/>
<polygon points="367.0,382.6 362.6,379.6 367.6,418.7 371.8,421.9" fill="#db7d47"/>
<polygon points="589.8,398.7 586.4,402.8 578.3,442.6 581.5,438.4" fill="#b9663a"/>
<polygon points="586.4,402.8 580.1,399.4 572.4,439.2 578.3,442.6" fill="#db7d47"/>
<polygon points="416.5,412.2 411.3,416.6 413.7,456.8 418.6,452.4" fill="#b9663a"/>
<polygon points="411.3,416.6 406.2,413.0 408.9,453.1 413.7,456.8" fill="#db7d47"/>
<polygon points="503.1,429.5 498.6,434.2 495.5,474.7 499.7,470.0" fill="#b9663a"/>
<polygon points="498.6,434.2 492.5,430.3 489.8,470.8 495.5,474.7" fill="#db7d47"/>
<polygon points="559.0,438.6 555.0,443.5 548.2,484.2 552.0,479.3" fill="#b9663a"/>
<polygon points="555.0,443.5 548.3,439.5 542.0,480.1 548.2,484.2" fill="#db7d47"/>
<polygon points="492.3,464.3 487.3,469.8 484.8,510.9 489.4,505.4" fill="#b9663a"/>
<polygon points="487.3,469.8 480.9,465.3 478.8,506.3 484.8,510.9" fill="#db7d47"/>
<path d="M253.0 300.5 L385.3 238.3 L422.2 254.2 L289.3 325.5Z M302.1 334.3 L407.6 275.1 L412.8 277.8 L418.6 280.1 L424.9 282.2 L431.7 284.0 L438.8 285.4 L446.3 286.5 L453.9 287.2 L461.7 287.6 L466.3 285.0 L470.9 283.1 L476.1 281.6 L481.5 280.5 L487.2 279.8 L493.0 279.6 L498.8 279.9 L504.6 280.7 L510.1 281.9 L515.4 283.5 L520.4 285.5 L524.8 287.9 L528.6 290.7 L531.8 293.7 L534.2 297.0 L535.8 300.5 L536.5 304.1 L536.2 307.7 L535.0 311.3 L532.8 314.8 L540.8 316.0 L548.5 317.8 L556.0 320.3 L563.1 323.3 L569.8 327.0 L575.8 331.2 L581.1 335.8 L585.6 340.9 L589.1 346.3 L591.6 352.0 L592.9 357.9 L592.9 363.9 L591.7 369.8 L589.1 375.5 L585.2 380.9 L580.0 385.8 L584.6 392.6 L586.7 399.9 L586.9 407.4 L585.3 414.8 L581.7 421.7 L576.2 428.0 L569.0 433.3 L560.3 437.4 L550.4 440.0 L539.7 441.1 L528.7 440.6 L517.8 438.5 L507.6 434.9 L498.3 430.0 L511.0 438.2 L486.6 464.8 L411.3 412.6 L413.4 410.9Z M544.2 337.0 L537.3 334.5 L529.8 333.1 L522.3 332.9 L515.1 334.0 L508.7 336.2 L503.5 339.5 L499.8 343.7 L498.0 348.5 L498.1 353.8 L500.3 359.0 L504.6 363.8 L510.6 368.0 L518.0 371.0 L526.2 372.7 L534.5 372.9 L542.4 371.6 L549.2 368.9 L554.4 365.0 L557.6 360.4 L558.8 355.2 L557.8 350.0 L554.8 345.0 L550.2 340.6 L544.2 337.0Z" fill="#c4cbd2" fill-opacity="0.55" fill-rule="evenodd" stroke="#ffffff" stroke-opacity="0.5" stroke-width="0.6"/>
<path d="M473.1 455.5 L497.8 429.9 L510.4 367.9 M423.3 299.1 L459.9 287.4 M436.3 305.9 L446.0 323.8 L433.3 332.7 M446.0 323.8 L477.6 327.0 M481.5 302.0 L492.1 294.4 L504.6 300.0 L494.1 307.9 L481.5 302.0 M481.5 302.0 L452.3 304.9 M492.1 294.4 L486.5 280.0 M504.6 300.0 L535.4 301.0 M494.1 307.9 L479.5 326.1 M504.6 300.0 L509.2 307.2 L532.6 314.6 M558.1 362.7 L589.1 346.1 M503.6 339.5 L478.0 326.7" stroke="#ffffff" stroke-opacity="0.85" stroke-width="0.8" fill="none"/>
<clipPath id="hc1"><path d="M543.3 337.8 L549.0 341.2 L553.4 345.3 L556.1 350.1 L557.1 355.0 L556.0 359.9 L552.9 364.3 L548.0 367.9 L541.6 370.5 L534.2 371.7 L526.3 371.5 L518.6 369.9 L511.6 367.0 L505.9 363.2 L501.9 358.6 L499.8 353.6 L499.6 348.7 L501.4 344.1 L504.8 340.2 L509.8 337.0 L515.8 334.9 L522.6 333.9 L529.7 334.1 L536.8 335.4 L543.3 337.8Z"/></clipPath><g clip-path="url(#hc1)">
<polygon points="522.5,348.5 509.4,337.9 509.3,339.7 522.3,350.4" fill="#b8303e" stroke="#b8303e" stroke-width="0.4"/>
<polygon points="509.4,337.9 515.5,335.8 515.3,338.6 509.2,340.8" fill="#a82a38" stroke="#a82a38" stroke-width="0.4"/>
<polygon points="522.5,348.5 509.4,337.9 515.5,335.8 524.3,347.9" fill="#dc5060" stroke="#e88a94" stroke-width="0.3"/>
<polygon points="520.9,351.3 504.3,342.9 504.2,344.7 520.7,353.2" fill="#b8303e" stroke="#b8303e" stroke-width="0.4"/>
<polygon points="504.3,342.9 509.3,339.7 509.0,342.6 504.1,345.8" fill="#a82a38" stroke="#a82a38" stroke-width="0.4"/>
<polygon points="520.9,351.3 504.3,342.9 509.3,339.7 522.3,350.4" fill="#dc5060" stroke="#e88a94" stroke-width="0.3"/>
<polygon points="519.8,354.4 500.6,348.8 500.5,350.6 519.6,356.2" fill="#b8303e" stroke="#b8303e" stroke-width="0.4"/>
<polygon points="500.6,348.8 504.2,344.7 503.9,347.6 500.4,351.7" fill="#a82a38" stroke="#a82a38" stroke-width="0.4"/>
<polygon points="519.8,354.4 500.6,348.8 504.2,344.7 520.7,353.2" fill="#dc5060" stroke="#e88a94" stroke-width="0.3"/>
<polygon points="519.1,357.5 498.8,355.3 498.6,357.1 519.0,359.4" fill="#b8303e" stroke="#b8303e" stroke-width="0.4"/>
<polygon points="498.8,355.3 500.5,350.6 500.3,353.5 498.6,358.2" fill="#a82a38" stroke="#a82a38" stroke-width="0.4"/>
<polygon points="519.1,357.5 498.8,355.3 500.5,350.6 519.6,356.2" fill="#dc5060" stroke="#e88a94" stroke-width="0.3"/>
<polygon points="519.1,360.8 498.8,362.1 498.6,363.9 518.9,362.6" fill="#b8303e" stroke="#b8303e" stroke-width="0.4"/>
<polygon points="498.8,362.1 498.6,357.1 498.4,360.0 498.6,365.0" fill="#a82a38" stroke="#a82a38" stroke-width="0.4"/>
<polygon points="519.1,360.8 498.8,362.1 498.6,357.1 519.0,359.4" fill="#dc5060" stroke="#e88a94" stroke-width="0.3"/>
<polygon points="532.2,379.9 549.7,389.2 549.4,391.0 532.0,381.6" fill="#b8303e" stroke="#b8303e" stroke-width="0.4"/>
<polygon points="549.7,389.2 544.8,393.0 544.5,395.8 549.3,392.0" fill="#a82a38" stroke="#a82a38" stroke-width="0.4"/>
<polygon points="532.2,379.9 549.7,389.2 544.8,393.0 530.8,380.9" fill="#dc5060" stroke="#e88a94" stroke-width="0.3"/>
<polygon points="519.6,364.0 500.8,369.0 500.6,370.8 519.4,365.8" fill="#b8303e" stroke="#b8303e" stroke-width="0.4"/>
<polygon points="500.8,369.0 498.6,363.9 498.5,366.8 500.5,371.9" fill="#a82a38" stroke="#a82a38" stroke-width="0.4"/>
<polygon points="519.6,364.0 500.8,369.0 498.6,363.9 518.9,362.6" fill="#dc5060" stroke="#e88a94" stroke-width="0.3"/>
<polygon points="531.0,379.1 545.1,391.2 544.8,393.0 530.8,380.9" fill="#b8303e" stroke="#b8303e" stroke-width="0.4"/>
<polygon points="545.1,391.2 538.8,393.9 538.4,396.7 544.7,394.1" fill="#a82a38" stroke="#a82a38" stroke-width="0.4"/>
<polygon points="531.0,379.1 545.1,391.2 538.8,393.9 529.3,379.8" fill="#dc5060" stroke="#e88a94" stroke-width="0.3"/>
<polygon points="520.6,367.1 504.6,375.5 504.5,377.4 520.4,368.9" fill="#b8303e" stroke="#b8303e" stroke-width="0.4"/>
<polygon points="504.6,375.5 500.6,370.8 500.4,373.7 504.4,378.4" fill="#a82a38" stroke="#a82a38" stroke-width="0.4"/>
<polygon points="520.6,367.1 504.6,375.5 500.6,370.8 519.4,365.8" fill="#dc5060" stroke="#e88a94" stroke-width="0.3"/>
<polygon points="529.5,378.1 539.0,392.1 538.8,393.9 529.3,379.8" fill="#b8303e" stroke="#b8303e" stroke-width="0.4"/>
<polygon points="539.0,392.1 531.7,393.4 531.4,396.2 538.6,395.0" fill="#a82a38" stroke="#a82a38" stroke-width="0.4"/>
<polygon points="529.5,378.1 539.0,392.1 531.7,393.4 527.4,378.4" fill="#dc5060" stroke="#e88a94" stroke-width="0.3"/>
<polygon points="522.0,370.0 510.1,381.4 510.0,383.2 521.8,371.8" fill="#b8303e" stroke="#b8303e" stroke-width="0.4"/>
<polygon points="510.1,381.4 504.5,377.4 504.3,380.2 509.9,384.3" fill="#a82a38" stroke="#a82a38" stroke-width="0.4"/>
<polygon points="522.0,370.0 510.1,381.4 504.5,377.4 520.4,368.9" fill="#dc5060" stroke="#e88a94" stroke-width="0.3"/>
<polygon points="527.6,376.7 531.9,391.6 531.7,393.4 527.4,378.4" fill="#b8303e" stroke="#b8303e" stroke-width="0.4"/>
<polygon points="531.9,391.6 524.1,391.4 523.8,394.3 531.6,394.5" fill="#a82a38" stroke="#a82a38" stroke-width="0.4"/>
<polygon points="527.6,376.7 531.9,391.6 524.1,391.4 525.5,376.6" fill="#dc5060" stroke="#e88a94" stroke-width="0.3"/>
<polygon points="523.8,372.6 516.9,386.1 516.7,387.9 523.6,374.4" fill="#b8303e" stroke="#b8303e" stroke-width="0.4"/>
<polygon points="516.9,386.1 510.0,383.2 509.7,386.0 516.6,389.0" fill="#a82a38" stroke="#a82a38" stroke-width="0.4"/>
<polygon points="523.8,372.6 516.9,386.1 510.0,383.2 521.8,371.8" fill="#dc5060" stroke="#e88a94" stroke-width="0.3"/>
<polygon points="525.7,374.8 524.3,389.6 524.1,391.4 525.5,376.6" fill="#b8303e" stroke="#b8303e" stroke-width="0.4"/>
<polygon points="524.3,389.6 516.7,387.9 516.4,390.8 524.0,392.5" fill="#a82a38" stroke="#a82a38" stroke-width="0.4"/>
<polygon points="525.7,374.8 524.3,389.6 516.7,387.9 523.6,374.4" fill="#dc5060" stroke="#e88a94" stroke-width="0.3"/>
</g>
<polygon points="383.8,239.0 420.7,255.1 420.8,259.0 384.1,242.8" fill="#db7d47"/>
<polygon points="420.7,255.1 423.7,253.4 423.8,257.4 420.8,259.0" fill="#b9663a"/>
<polygon points="383.8,239.0 420.7,255.1 423.7,253.4 386.8,237.6" fill="#e68f58"/>
<polygon points="254.3,301.5 386.7,238.9 387.0,242.7 255.4,305.8" fill="#b9663a"/>
<polygon points="251.7,299.6 254.3,301.5 255.4,305.8 252.8,304.0" fill="#db7d47"/>
<polygon points="254.3,301.5 386.7,238.9 384.0,237.7 251.7,299.6" fill="#e68f58"/>
<polygon points="334.5,262.2 371.6,281.4 372.0,285.6 335.0,266.3" fill="#db7d47"/>
<polygon points="371.6,281.4 375.2,279.4 375.6,283.6 372.0,285.6" fill="#b9663a"/>
<polygon points="334.5,262.2 371.6,281.4 375.2,279.4 338.1,260.5" fill="#e68f58"/>
<polygon points="405.9,276.1 411.1,278.7 411.3,282.9 406.1,280.2" fill="#da7c47"/>
<polygon points="411.1,278.7 414.5,276.8 414.7,281.0 411.3,282.9" fill="#b9663a"/>
<polygon points="405.9,276.1 411.1,278.7 414.5,276.8 409.3,274.2" fill="#e68f58"/>
<polygon points="411.3,278.8 417.0,281.1 417.2,285.4 411.5,282.9" fill="#d97b46"/>
<polygon points="417.0,281.1 420.1,279.1 420.3,283.3 417.2,285.4" fill="#b9663a"/>
<polygon points="411.3,278.8 417.0,281.1 420.1,279.1 414.4,276.8" fill="#e68f58"/>
<polygon points="490.0,280.9 500.6,281.4 500.3,285.6 489.8,285.1" fill="#c77040"/>
<polygon points="490.0,280.9 500.6,281.4 500.7,278.9 490.2,278.4" fill="#e68f58"/>
<polygon points="480.3,282.0 490.6,280.9 490.4,285.1 480.1,286.2" fill="#c16b3d"/>
<polygon points="479.3,279.5 480.3,282.0 480.1,286.2 479.1,283.7" fill="#c56e3f"/>
<polygon points="480.3,282.0 490.6,280.9 489.5,278.5 479.3,279.5" fill="#e68f58"/>
<polygon points="500.0,281.3 510.2,283.2 509.9,287.5 499.7,285.5" fill="#d07543"/>
<polygon points="510.2,283.2 511.5,280.9 511.1,285.1 509.9,287.5" fill="#bb673b"/>
<polygon points="500.0,281.3 510.2,283.2 511.5,280.9 501.3,278.9" fill="#e68f58"/>
<polygon points="417.2,281.2 423.5,283.3 423.7,287.5 417.4,285.4" fill="#d67945"/>
<polygon points="423.5,283.3 426.2,281.1 426.4,285.3 423.7,287.5" fill="#b9663a"/>
<polygon points="417.2,281.2 423.5,283.3 426.2,281.1 420.0,279.1" fill="#e68f58"/>
<polygon points="313.1,272.3 350.2,292.9 350.7,297.2 313.8,276.4" fill="#db7d47"/>
<polygon points="350.2,292.9 354.1,290.8 354.6,295.1 350.7,297.2" fill="#b9663a"/>
<polygon points="313.1,272.3 350.2,292.9 354.1,290.8 317.0,270.4" fill="#e68f58"/>
<polygon points="471.4,284.5 480.9,281.9 480.7,286.1 471.3,288.7" fill="#bc683b"/>
<polygon points="469.3,282.2 471.4,284.5 471.3,288.7 469.2,286.4" fill="#cd7442"/>
<polygon points="471.4,284.5 480.9,281.9 478.7,279.6 469.3,282.2" fill="#e68f58"/>
<polygon points="423.7,283.4 430.5,285.2 430.6,289.4 423.9,287.6" fill="#d37744"/>
<polygon points="430.5,285.2 432.8,282.8 432.9,287.1 430.6,289.4" fill="#ba673a"/>
<polygon points="423.7,283.4 430.5,285.2 432.8,282.8 426.1,281.1" fill="#e68f58"/>
<polygon points="509.6,283.1 518.9,286.4 518.5,290.7 509.3,287.3" fill="#d97b46"/>
<polygon points="518.9,286.4 521.3,284.3 520.9,288.6 518.5,290.7" fill="#b9663a"/>
<polygon points="509.6,283.1 518.9,286.4 521.3,284.3 512.0,281.0" fill="#e68f58"/>
<polygon points="430.7,285.2 437.9,286.7 437.9,290.9 430.8,289.5" fill="#d07543"/>
<polygon points="437.9,286.7 439.7,284.2 439.8,288.5 437.9,290.9" fill="#bb673b"/>
<polygon points="430.7,285.2 437.9,286.7 439.7,284.2 432.6,282.8" fill="#e68f58"/>
<polygon points="463.9,288.2 471.9,284.3 471.8,288.5 463.9,292.5" fill="#b9663a"/>
<polygon points="460.8,286.3 463.9,288.2 463.9,292.5 460.7,290.5" fill="#d67a45"/>
<polygon points="463.9,288.2 471.9,284.3 468.7,282.4 460.8,286.3" fill="#e68f58"/>
<polygon points="287.7,324.4 290.8,326.6 291.8,331.1 288.7,329.0" fill="#db7d47"/>
<polygon points="290.8,326.6 423.7,254.9 423.9,258.9 291.8,331.1" fill="#b9663a"/>
<polygon points="420.7,253.6 287.7,324.4 290.8,326.6 423.7,254.9" fill="#e68f58"/>
<polygon points="438.1,286.7 445.6,287.8 445.6,292.1 438.1,291.0" fill="#cd7342"/>
<polygon points="445.6,287.8 447.0,285.3 447.0,289.5 445.6,292.1" fill="#bc683b"/>
<polygon points="438.1,286.7 445.6,287.8 447.0,285.3 439.5,284.2" fill="#e68f58"/>
<polygon points="445.8,287.8 453.5,288.5 453.5,292.8 445.8,292.1" fill="#ca7241"/>
<polygon points="453.5,288.5 454.4,286.0 454.4,290.2 453.5,292.8" fill="#be693c"/>
<polygon points="445.8,287.8 453.5,288.5 454.4,286.0 446.7,285.3" fill="#e68f58"/>
<polygon points="453.7,288.6 461.5,288.9 461.5,293.2 453.7,292.8" fill="#c77040"/>
<polygon points="461.5,288.9 462.0,286.3 461.9,290.5 461.5,293.2" fill="#bf6a3c"/>
<polygon points="453.7,288.6 461.5,288.9 462.0,286.3 454.2,285.9" fill="#e68f58"/>
<polygon points="518.4,286.2 526.0,290.8 525.6,295.1 518.0,290.4" fill="#d47844"/>
<polygon points="526.0,290.8 529.4,289.1 529.0,293.4 525.6,295.1" fill="#ba663a"/>
<polygon points="518.4,286.2 526.0,290.8 529.4,289.1 521.8,284.6" fill="#e68f58"/>
<polygon points="458.4,293.0 464.4,287.9 464.3,292.2 458.4,297.3" fill="#b9663a"/>
<polygon points="454.3,291.6 458.4,293.0 458.4,297.3 454.3,295.9" fill="#d77a45"/>
<polygon points="458.4,293.0 464.4,287.9 460.3,286.5 454.3,291.6" fill="#e68f58"/>
<polygon points="525.6,290.5 531.1,296.1 530.7,300.5 525.2,294.8" fill="#cc7341"/>
<polygon points="531.1,296.1 535.4,295.0 534.9,299.3 530.7,300.5" fill="#bd683b"/>
<polygon points="525.6,290.5 531.1,296.1 535.4,295.0 529.8,289.4" fill="#e68f58"/>
<polygon points="390.4,284.8 434.6,307.1 434.7,311.5 390.8,289.0" fill="#db7d47"/>
<polygon points="434.6,307.1 438.0,304.8 438.1,309.2 434.7,311.5" fill="#b9663a"/>
<polygon points="390.4,284.8 434.6,307.1 438.0,304.8 394.0,282.8" fill="#e68f58"/>
<polygon points="455.3,298.6 458.7,292.7 458.7,297.0 455.2,303.0" fill="#bc683b"/>
<polygon points="450.5,297.8 455.3,298.6 455.2,303.0 450.5,302.2" fill="#ce7442"/>
<polygon points="455.3,298.6 458.7,292.7 454.1,291.9 450.5,297.8" fill="#e68f58"/>
<polygon points="530.9,295.8 533.7,302.1 533.3,306.4 530.4,300.1" fill="#c46e3e"/>
<polygon points="533.7,302.1 538.6,301.7 538.1,306.0 533.3,306.4" fill="#c26c3d"/>
<polygon points="530.9,295.8 533.7,302.1 538.6,301.7 535.7,295.4" fill="#e68f58"/>
<polygon points="278.9,288.4 315.6,311.4 316.4,315.8 279.9,292.6" fill="#db7d47"/>
<polygon points="315.6,311.4 320.0,309.0 320.7,313.5 316.4,315.8" fill="#b9663a"/>
<polygon points="278.9,288.4 315.6,311.4 320.0,309.0 283.2,286.3" fill="#e68f58"/>
<polygon points="454.9,304.7 455.4,298.3 455.4,302.6 454.8,309.1" fill="#c06b3d"/>
<polygon points="449.8,304.7 454.9,304.7 454.8,309.1 449.8,309.1" fill="#c66f3f"/>
<polygon points="454.9,304.7 455.4,298.3 450.4,298.2 449.8,304.7" fill="#e68f58"/>
<polygon points="303.7,335.4 409.2,275.9 409.4,280.1 304.6,340.1" fill="#b9663a"/>
<polygon points="300.5,333.2 303.7,335.4 304.6,340.1 301.4,337.8" fill="#db7d47"/>
<polygon points="303.7,335.4 409.2,275.9 406.0,274.4 300.5,333.2" fill="#e68f58"/>
<polygon points="533.6,301.7 533.5,308.2 533.0,312.7 533.2,306.1" fill="#be6a3c"/>
<polygon points="533.5,308.2 538.7,308.6 538.2,313.0 533.0,312.7" fill="#c97140"/>
<polygon points="533.6,301.7 533.5,308.2 538.7,308.6 538.7,302.0" fill="#e68f58"/>
<polygon points="436.4,307.4 452.5,306.4 452.5,310.8 436.5,311.8" fill="#c36c3e"/>
<polygon points="436.2,304.5 436.4,307.4 436.5,311.8 436.3,308.9" fill="#c36d3e"/>
<polygon points="436.4,307.4 452.5,306.4 452.1,303.5 436.2,304.5" fill="#e68f58"/>
<polygon points="449.8,305.1 452.3,311.6 452.3,316.1 449.9,309.5" fill="#c76f3f"/>
<polygon points="452.3,311.6 457.4,310.9 457.3,315.3 452.3,316.1" fill="#c06a3d"/>
<polygon points="457.4,310.9 454.8,304.3 449.8,305.1 452.3,311.6" fill="#e68f58"/>
<polygon points="530.3,314.2 535.4,315.4 534.9,319.8 529.8,318.6" fill="#d17643"/>
<polygon points="535.4,315.4 538.6,309.0 538.1,313.4 534.9,319.8" fill="#ba673b"/>
<polygon points="533.6,307.8 530.3,314.2 535.4,315.4 538.6,309.0" fill="#e68f58"/>
<polygon points="250.6,301.6 286.9,326.8 287.9,331.3 251.8,306.0" fill="#db7d47"/>
<polygon points="286.9,326.8 291.6,324.2 292.6,328.8 287.9,331.3" fill="#b9663a"/>
<polygon points="291.6,324.2 255.3,299.4 250.6,301.6 286.9,326.8" fill="#e68f58"/>
<polygon points="514.5,316.0 525.6,315.8 525.2,320.2 514.1,320.5" fill="#c46e3e"/>
<polygon points="513.9,312.9 514.5,316.0 514.1,320.5 513.5,317.4" fill="#c26c3d"/>
<polygon points="514.5,316.0 525.6,315.8 524.9,312.7 513.9,312.9" fill="#e68f58"/>
<polygon points="452.6,312.0 458.2,318.1 458.1,322.6 452.6,316.4" fill="#cf7542"/>
<polygon points="458.2,318.1 462.8,316.5 462.7,321.0 458.1,322.6" fill="#bb673b"/>
<polygon points="462.8,316.5 457.1,310.5 452.6,312.0 458.2,318.1" fill="#e68f58"/>
<polygon points="525.1,315.7 536.4,316.8 535.9,321.3 524.7,320.2" fill="#ca7140"/>
<polygon points="525.4,312.7 525.1,315.7 524.7,320.2 525.0,317.1" fill="#be693c"/>
<polygon points="525.1,315.7 536.4,316.8 536.6,313.7 525.4,312.7" fill="#e68f58"/>
<polygon points="504.3,317.5 515.0,316.0 514.6,320.5 504.0,322.0" fill="#c06b3d"/>
<polygon points="502.7,314.5 504.3,317.5 504.0,322.0 502.4,319.0" fill="#c76f3f"/>
<polygon points="504.3,317.5 515.0,316.0 513.4,313.0 502.7,314.5" fill="#e68f58"/>
<polygon points="535.9,316.7 547.0,319.0 546.4,323.5 535.4,321.2" fill="#d07543"/>
<polygon points="547.0,319.0 548.1,316.1 547.5,320.5 546.4,323.5" fill="#bb673b"/>
<polygon points="535.9,316.7 547.0,319.0 548.1,316.1 537.1,313.8" fill="#e68f58"/>
<polygon points="494.8,320.3 504.8,317.4 504.4,321.9 494.5,324.8" fill="#bc683b"/>
<polygon points="492.3,317.4 494.8,320.3 494.5,324.8 492.1,321.9" fill="#cc7341"/>
<polygon points="494.8,320.3 504.8,317.4 502.3,314.6 492.3,317.4" fill="#e68f58"/>
<polygon points="546.5,318.9 557.0,322.5 556.4,327.0 545.9,323.4" fill="#d67a45"/>
<polygon points="557.0,322.5 559.1,319.7 558.4,324.2 556.4,327.0" fill="#b9663a"/>
<polygon points="546.5,318.9 557.0,322.5 559.1,319.7 548.6,316.2" fill="#e68f58"/>
<polygon points="458.6,318.4 467.0,323.6 466.9,328.1 458.6,322.9" fill="#d87b46"/>
<polygon points="467.0,323.6 470.8,321.3 470.7,325.8 466.9,328.1" fill="#b9663a"/>
<polygon points="470.8,321.3 462.4,316.2 458.6,318.4 467.0,323.6" fill="#e68f58"/>
<polygon points="486.2,324.2 495.2,320.1 494.9,324.6 486.0,328.7" fill="#ba673a"/>
<polygon points="483.0,321.6 486.2,324.2 486.0,328.7 482.8,326.1" fill="#d27744"/>
<polygon points="486.2,324.2 495.2,320.1 491.9,317.5 483.0,321.6" fill="#e68f58"/>
<polygon points="556.6,322.3 566.3,327.1 565.6,331.6 555.9,326.8" fill="#d97c46"/>
<polygon points="566.3,327.1 569.3,324.6 568.5,329.1 565.6,331.6" fill="#b9663a"/>
<polygon points="556.6,322.3 566.3,327.1 569.3,324.6 559.5,319.9" fill="#e68f58"/>
<polygon points="467.6,323.8 478.3,327.5 478.1,332.1 467.5,328.4" fill="#d57945"/>
<polygon points="478.3,327.5 480.8,324.6 480.6,329.2 478.1,332.1" fill="#ba663a"/>
<polygon points="480.8,324.6 470.2,321.0 467.6,323.8 478.3,327.5" fill="#e68f58"/>
<polygon points="479.0,329.2 486.6,324.0 486.4,328.5 478.8,333.8" fill="#b9663a"/>
<polygon points="474.9,326.9 479.0,329.2 478.8,333.8 474.8,331.5" fill="#d97c46"/>
<polygon points="479.0,329.2 486.6,324.0 482.6,321.8 474.9,326.9" fill="#e68f58"/>
<polygon points="565.9,326.8 574.5,332.7 573.7,337.3 565.2,331.4" fill="#d37744"/>
<polygon points="574.5,332.7 578.3,330.6 577.5,335.2 573.7,337.3" fill="#ba673a"/>
<polygon points="565.9,326.8 574.5,332.7 578.3,330.6 569.7,324.8" fill="#e68f58"/>
<polygon points="546.6,338.2 562.8,323.1 562.1,327.7 546.0,342.8" fill="#b9663a"/>
<polygon points="541.8,335.9 546.6,338.2 546.0,342.8 541.2,340.5" fill="#db7d47"/>
<polygon points="546.6,338.2 562.8,323.1 558.1,321.1 541.8,335.9" fill="#e68f58"/>
<polygon points="473.3,335.2 479.3,329.0 479.1,333.5 473.1,339.8" fill="#b9663a"/>
<polygon points="468.6,333.4 473.3,335.2 473.1,339.8 468.4,338.0" fill="#d67a45"/>
<polygon points="473.3,335.2 479.3,329.0 474.6,327.2 468.6,333.4" fill="#e68f58"/>
<polygon points="328.5,319.5 373.0,347.5 373.5,352.2 329.2,324.0" fill="#db7d47"/>
<polygon points="373.0,347.5 377.4,344.6 377.9,349.3 373.5,352.2" fill="#b9663a"/>
<polygon points="328.5,319.5 373.0,347.5 377.4,344.6 332.9,317.1" fill="#e68f58"/>
<polygon points="478.0,326.9 501.8,340.8 501.4,345.5 477.9,331.5" fill="#d87b46"/>
<polygon points="501.8,340.8 505.4,338.3 505.1,342.9 501.4,345.5" fill="#b9663a"/>
<polygon points="478.0,326.9 501.8,340.8 505.4,338.3 481.7,324.5" fill="#e68f58"/>
<polygon points="522.3,334.7 533.6,335.4 533.1,340.0 521.8,339.3" fill="#c87040"/>
<polygon points="522.3,331.2 522.3,334.7 521.8,339.3 521.9,335.8" fill="#bf6a3c"/>
<polygon points="522.3,334.7 533.6,335.4 533.5,331.9 522.3,331.2" fill="#e68f58"/>
<polygon points="348.4,366.2 438.2,306.9 438.3,311.3 349.1,371.0" fill="#b9663a"/>
<polygon points="344.6,363.6 348.4,366.2 349.1,371.0 345.3,368.4" fill="#db7d47"/>
<polygon points="348.4,366.2 438.2,306.9 434.4,305.0 344.6,363.6" fill="#e68f58"/>
<polygon points="512.8,336.6 523.3,334.6 522.9,339.2 512.4,341.3" fill="#bf6a3c"/>
<polygon points="510.8,333.3 512.8,336.6 512.4,341.3 510.4,337.9" fill="#c87040"/>
<polygon points="512.8,336.6 523.3,334.6 521.3,331.3 510.8,333.3" fill="#e68f58"/>
<polygon points="574.2,332.4 581.3,339.2 580.4,343.8 573.4,337.0" fill="#cc7341"/>
<polygon points="581.3,339.2 585.8,337.7 585.0,342.3 580.4,343.8" fill="#bc683b"/>
<polygon points="574.2,332.4 581.3,339.2 585.8,337.7 578.7,330.9" fill="#e68f58"/>
<polygon points="532.6,335.2 543.2,338.6 542.6,343.2 532.0,339.8" fill="#d47944"/>
<polygon points="543.2,338.6 545.2,335.5 544.6,340.1 542.6,343.2" fill="#ba663a"/>
<polygon points="532.6,335.2 543.2,338.6 545.2,335.5 534.6,332.1" fill="#e68f58"/>
<polygon points="410.7,322.7 463.1,351.5 463.0,356.3 410.9,327.3" fill="#db7d47"/>
<polygon points="463.1,351.5 466.8,348.6 466.7,353.3 463.0,356.3" fill="#b9663a"/>
<polygon points="410.7,322.7 463.1,351.5 466.8,348.6 414.5,320.3" fill="#e68f58"/>
<polygon points="505.4,340.9 513.7,336.3 513.3,340.9 505.1,345.6" fill="#ba663a"/>
<polygon points="501.6,338.1 505.4,340.9 505.1,345.6 501.3,342.8" fill="#d47944"/>
<polygon points="505.4,340.9 513.7,336.3 509.9,333.6 501.6,338.1" fill="#e68f58"/>
<polygon points="469.4,342.1 473.5,334.9 473.4,339.5 469.3,346.7" fill="#bb673b"/>
<polygon points="464.1,340.8 469.4,342.1 469.3,346.7 464.0,345.4" fill="#d07543"/>
<polygon points="469.4,342.1 473.5,334.9 468.3,333.7 464.1,340.8" fill="#e68f58"/>
<polygon points="393.0,334.3 413.8,346.5 414.0,351.2 393.4,339.0" fill="#db7d47"/>
<polygon points="413.8,346.5 417.8,343.6 418.1,348.3 414.0,351.2" fill="#b9663a"/>
<polygon points="393.0,334.3 413.8,346.5 417.8,343.6 397.1,331.7" fill="#e68f58"/>
<polygon points="542.3,338.1 550.8,343.8 550.1,348.5 541.7,342.8" fill="#d47944"/>
<polygon points="550.8,343.8 554.6,341.5 553.9,346.2 550.1,348.5" fill="#ba663a"/>
<polygon points="542.3,338.1 550.8,343.8 554.6,341.5 546.1,335.9" fill="#e68f58"/>
<polygon points="327.2,351.6 355.9,334.0 356.5,338.6 328.0,356.4" fill="#b9663a"/>
<polygon points="323.7,349.2 327.2,351.6 328.0,356.4 324.5,353.9" fill="#db7d47"/>
<polygon points="327.2,351.6 355.9,334.0 352.4,331.8 323.7,349.2" fill="#e68f58"/>
<polygon points="581.0,338.8 586.3,346.4 585.4,351.1 580.2,343.5" fill="#c76f3f"/>
<polygon points="586.3,346.4 591.5,345.5 590.6,350.2 585.4,351.1" fill="#c06b3d"/>
<polygon points="581.0,338.8 586.3,346.4 591.5,345.5 586.1,338.0" fill="#e68f58"/>
<polygon points="501.3,346.9 506.1,340.4 505.7,345.0 500.9,351.6" fill="#ba663a"/>
<polygon points="496.1,345.2 501.3,346.9 500.9,351.6 495.8,349.9" fill="#d47944"/>
<polygon points="501.3,346.9 506.1,340.4 501.0,338.7 496.1,345.2" fill="#e68f58"/>
<polygon points="589.9,348.0 625.4,346.2 624.3,350.9 589.0,352.7" fill="#c46d3e"/>
<polygon points="588.2,344.3 589.9,348.0 589.0,352.7 587.3,348.9" fill="#c26c3e"/>
<polygon points="589.9,348.0 625.4,346.2 623.5,342.6 588.2,344.3" fill="#e68f58"/>
<polygon points="467.6,349.5 469.6,341.7 469.4,346.4 467.5,354.2" fill="#be693c"/>
<polygon points="461.9,348.9 467.6,349.5 467.5,354.2 461.9,353.6" fill="#ca7140"/>
<polygon points="467.6,349.5 469.6,341.7 464.0,341.1 461.9,348.9" fill="#e68f58"/>
<polygon points="550.1,343.2 555.1,350.5 554.4,355.2 549.4,347.9" fill="#c87040"/>
<polygon points="555.1,350.5 560.4,349.4 559.7,354.1 554.4,355.2" fill="#bf6a3c"/>
<polygon points="550.1,343.2 555.1,350.5 560.4,349.4 555.3,342.2" fill="#e68f58"/>
<polygon points="586.1,346.1 589.3,354.2 588.4,358.9 585.2,350.7" fill="#c26c3d"/>
<polygon points="589.3,354.2 595.0,354.0 594.1,358.7 588.4,358.9" fill="#c46e3e"/>
<polygon points="586.1,346.1 589.3,354.2 595.0,354.0 591.7,345.9" fill="#e68f58"/>
<polygon points="495.2,353.6 501.0,353.9 500.7,358.7 494.9,358.3" fill="#c87040"/>
<polygon points="501.0,353.9 501.5,346.2 495.8,345.9 495.2,353.6" fill="#e68f58"/>
<polygon points="461.9,349.3 462.2,357.6 462.1,362.3 461.8,354.0" fill="#c26c3d"/>
<polygon points="462.2,357.6 468.1,357.4 468.0,362.2 462.1,362.3" fill="#c46e3e"/>
<polygon points="468.1,357.4 467.7,349.2 461.9,349.3 462.2,357.6" fill="#e68f58"/>
<polygon points="554.8,349.8 555.5,357.6 554.8,362.4 554.2,354.5" fill="#bf6a3c"/>
<polygon points="555.5,357.6 561.4,358.0 560.7,362.8 554.8,362.4" fill="#c87040"/>
<polygon points="554.8,349.8 555.5,357.6 561.4,358.0 560.7,350.1" fill="#e68f58"/>
<polygon points="369.5,380.7 435.3,333.9 435.4,338.5 370.0,385.6" fill="#b9663a"/>
<polygon points="365.3,377.9 369.5,380.7 370.0,385.6 366.0,382.7" fill="#db7d47"/>
<polygon points="369.5,380.7 435.3,333.9 431.2,331.7 365.3,377.9" fill="#e68f58"/>
<polygon points="495.4,354.3 499.4,362.1 499.1,366.8 495.1,359.0" fill="#c87040"/>
<polygon points="499.4,362.1 505.0,360.9 504.6,365.7 499.1,366.8" fill="#bf6a3c"/>
<polygon points="505.0,360.9 500.9,353.2 495.4,354.3 499.4,362.1" fill="#e68f58"/>
<polygon points="589.2,353.8 590.0,362.2 589.0,366.9 588.3,358.5" fill="#be693c"/>
<polygon points="590.0,362.2 596.1,362.8 595.1,367.6 589.0,366.9" fill="#ca7140"/>
<polygon points="589.2,353.8 590.0,362.2 596.1,362.8 595.1,354.4" fill="#e68f58"/>
<polygon points="551.5,364.1 557.3,366.0 556.5,370.8 550.9,368.9" fill="#d47944"/>
<polygon points="557.3,366.0 561.3,358.8 560.5,363.5 556.5,370.8" fill="#ba663a"/>
<polygon points="555.6,356.9 551.5,364.1 557.3,366.0 561.3,358.8" fill="#e68f58"/>
<polygon points="462.3,358.0 465.1,366.4 465.0,371.2 462.2,362.7" fill="#c66f3f"/>
<polygon points="465.1,366.4 471.0,365.4 470.8,370.3 465.0,371.2" fill="#c06b3d"/>
<polygon points="471.0,365.4 468.0,357.1 462.3,358.0 465.1,366.4" fill="#e68f58"/>
<polygon points="500.0,362.8 508.4,369.3 508.0,374.1 499.7,367.5" fill="#d47944"/>
<polygon points="508.4,369.3 512.8,366.6 512.4,371.4 508.0,374.1" fill="#ba663a"/>
<polygon points="512.8,366.6 504.4,360.2 500.0,362.8 508.4,369.3" fill="#e68f58"/>
<polygon points="588.3,370.1 594.5,371.5 593.5,376.4 587.3,374.9" fill="#d07543"/>
<polygon points="590.0,361.8 588.3,370.1 594.5,371.5 596.1,363.2" fill="#e68f58"/>
<polygon points="552.8,366.4 561.9,371.0 561.1,375.8 552.1,371.2" fill="#db7d47"/>
<polygon points="561.9,371.0 564.9,367.8 564.2,372.6 561.1,375.8" fill="#b9663a"/>
<polygon points="552.8,366.4 561.9,371.0 564.9,367.8 555.9,363.3" fill="#e68f58"/>
<polygon points="467.2,368.1 510.5,370.0 510.1,374.8 467.1,373.0" fill="#c76f3f"/>
<polygon points="467.2,368.1 510.5,370.0 510.4,365.8 467.6,364.0" fill="#e68f58"/>
<polygon points="543.8,368.8 548.3,372.1 547.6,376.9 543.1,373.6" fill="#d47944"/>
<polygon points="548.3,372.1 556.7,366.7 555.9,371.5 547.6,376.9" fill="#ba663a"/>
<polygon points="552.2,363.5 543.8,368.8 548.3,372.1 556.7,366.7" fill="#e68f58"/>
<polygon points="299.7,335.7 411.0,412.9 411.3,417.9 300.6,340.3" fill="#db7d47"/>
<polygon points="411.0,412.9 415.8,408.9 416.0,413.9 411.3,417.9" fill="#b9663a"/>
<polygon points="299.7,335.7 411.0,412.9 415.8,408.9 304.5,333.0" fill="#e68f58"/>
<polygon points="509.4,369.8 520.8,373.9 520.3,378.8 508.9,374.6" fill="#d47944"/>
<polygon points="520.8,373.9 523.2,370.2 522.7,375.0 520.3,378.8" fill="#ba663a"/>
<polygon points="523.2,370.2 511.8,366.1 509.4,369.8 520.8,373.9" fill="#e68f58"/>
<polygon points="533.3,370.9 535.8,375.0 535.2,379.8 532.7,375.7" fill="#c87040"/>
<polygon points="535.8,375.0 547.3,372.5 546.6,377.3 535.2,379.8" fill="#bf6a3c"/>
<polygon points="544.7,368.4 533.3,370.9 535.8,375.0 547.3,372.5" fill="#e68f58"/>
<polygon points="561.4,370.7 569.4,376.4 568.5,381.3 560.6,375.5" fill="#d47844"/>
<polygon points="569.4,376.4 573.5,373.7 572.6,378.5 568.5,381.3" fill="#ba663a"/>
<polygon points="561.4,370.7 569.4,376.4 573.5,373.7 565.4,368.1" fill="#e68f58"/>
<polygon points="522.0,369.9 522.0,374.2 521.5,379.0 521.5,374.7" fill="#bf6a3c"/>
<polygon points="522.0,374.2 534.6,375.1 534.0,379.9 521.5,379.0" fill="#c87040"/>
<polygon points="534.5,370.8 522.0,369.9 522.0,374.2 534.6,375.1" fill="#e68f58"/>
<polygon points="584.0,377.6 590.0,379.9 589.0,384.7 583.1,382.5" fill="#d67a45"/>
<polygon points="590.0,379.9 594.3,371.9 593.3,376.7 589.0,384.7" fill="#b9663a"/>
<polygon points="588.4,369.7 584.0,377.6 590.0,379.9 594.3,371.9" fill="#e68f58"/>
<polygon points="568.9,376.0 575.6,382.8 574.7,387.7 568.1,380.9" fill="#ce7442"/>
<polygon points="575.6,382.8 580.6,380.7 579.7,385.6 574.7,387.7" fill="#bc683b"/>
<polygon points="568.9,376.0 575.6,382.8 580.6,380.7 573.9,374.1" fill="#e68f58"/>
<polygon points="577.3,384.3 582.8,387.4 581.9,392.3 576.4,389.2" fill="#d97c46"/>
<polygon points="582.8,387.4 589.8,380.2 588.8,385.1 581.9,392.3" fill="#b9663a"/>
<polygon points="584.3,377.2 577.3,384.3 582.8,387.4 589.8,380.2" fill="#e68f58"/>
<polygon points="575.2,382.4 580.2,389.9 579.2,394.8 574.3,387.2" fill="#c87040"/>
<polygon points="580.2,389.9 586.0,388.6 585.0,393.6 579.2,394.8" fill="#bf6a3c"/>
<polygon points="575.2,382.4 580.2,389.9 586.0,388.6 580.9,381.1" fill="#e68f58"/>
<polygon points="412.7,415.2 469.7,367.4 469.6,372.2 413.0,420.2" fill="#b9663a"/>
<polygon points="407.9,411.8 412.7,415.2 413.0,420.2 408.2,416.9" fill="#db7d47"/>
<polygon points="412.7,415.2 469.7,367.4 465.1,364.7 407.9,411.8" fill="#e68f58"/>
<polygon points="579.9,389.4 582.9,397.5 582.0,402.5 579.0,394.4" fill="#c26c3e"/>
<polygon points="582.9,397.5 589.3,397.2 588.3,402.1 582.0,402.5" fill="#c46d3e"/>
<polygon points="579.9,389.4 582.9,397.5 589.3,397.2 586.2,389.1" fill="#e68f58"/>
<polygon points="582.8,397.0 583.6,405.4 582.6,410.4 581.9,402.0" fill="#be693c"/>
<polygon points="583.6,405.4 590.4,406.1 589.4,411.0 582.6,410.4" fill="#c97140"/>
<polygon points="582.8,397.0 583.6,405.4 590.4,406.1 589.5,397.7" fill="#e68f58"/>
<polygon points="583.7,404.9 582.1,413.1 581.1,418.2 582.7,409.9" fill="#bb673b"/>
<polygon points="582.1,413.1 589.0,414.9 587.9,419.9 581.1,418.2" fill="#cf7542"/>
<polygon points="583.7,404.9 582.1,413.1 589.0,414.9 590.4,406.6" fill="#e68f58"/>
<polygon points="434.7,393.2 508.9,440.5 508.4,445.6 434.9,398.1" fill="#db7d47"/>
<polygon points="508.9,440.5 513.0,436.0 512.5,441.1 508.4,445.6" fill="#b9663a"/>
<polygon points="434.7,393.2 508.9,440.5 513.0,436.0 439.1,389.5" fill="#e68f58"/>
<polygon points="578.3,420.4 584.9,423.2 583.9,428.3 577.3,425.5" fill="#d67a45"/>
<polygon points="584.9,423.2 588.8,415.4 587.7,420.4 583.9,428.3" fill="#b9663a"/>
<polygon points="582.3,412.7 578.3,420.4 584.9,423.2 588.8,415.4" fill="#e68f58"/>
<polygon points="445.6,436.4 470.8,412.8 470.6,417.8 445.7,441.5" fill="#b9663a"/>
<polygon points="440.4,432.7 445.6,436.4 445.7,441.5 440.4,437.8" fill="#db7d47"/>
<polygon points="445.6,436.4 470.8,412.8 465.6,409.5 440.4,432.7" fill="#e68f58"/>
<polygon points="572.3,426.9 578.4,430.7 577.4,435.8 571.3,432.0" fill="#d97c46"/>
<polygon points="578.4,430.7 584.6,423.7 583.6,428.7 577.4,435.8" fill="#b9663a"/>
<polygon points="578.6,420.0 572.3,426.9 578.4,430.7 584.6,423.7" fill="#e68f58"/>
<polygon points="564.3,432.2 569.5,436.8 568.5,441.9 563.4,437.3" fill="#d27744"/>
<polygon points="569.5,436.8 577.9,431.1 576.9,436.1 568.5,441.9" fill="#ba673a"/>
<polygon points="572.7,426.5 564.3,432.2 569.5,436.8 577.9,431.1" fill="#e68f58"/>
<polygon points="496.5,432.4 507.0,437.8 506.6,442.9 496.1,437.5" fill="#d87b46"/>
<polygon points="507.0,437.8 510.5,433.0 510.1,438.1 506.6,442.9" fill="#b9663a"/>
<polygon points="510.5,433.0 500.1,427.7 496.5,432.4 507.0,437.8" fill="#e68f58"/>
<polygon points="554.6,435.9 558.6,441.2 557.7,446.4 553.8,441.0" fill="#cc7341"/>
<polygon points="558.6,441.2 568.9,437.1 568.0,442.2 557.7,446.4" fill="#bc683b"/>
<polygon points="564.9,431.9 554.6,435.9 558.6,441.2 568.9,437.1" fill="#e68f58"/>
<polygon points="507.7,438.1 519.4,441.9 518.9,447.0 507.2,443.2" fill="#d17643"/>
<polygon points="519.4,441.9 521.5,436.4 520.9,441.6 518.9,447.0" fill="#bb673b"/>
<polygon points="521.5,436.4 509.9,432.8 507.7,438.1 519.4,441.9" fill="#e68f58"/>
<polygon points="408.9,414.6 484.2,467.3 484.0,472.5 409.2,419.7" fill="#db7d47"/>
<polygon points="484.2,467.3 488.9,462.3 488.5,467.4 484.0,472.5" fill="#b9663a"/>
<polygon points="408.9,414.6 484.2,467.3 488.9,462.3 413.7,410.6" fill="#e68f58"/>
<polygon points="543.8,437.9 546.3,443.7 545.5,448.8 543.0,443.0" fill="#c66f3f"/>
<polygon points="546.3,443.7 558.0,441.4 557.1,446.6 545.5,448.8" fill="#c06b3d"/>
<polygon points="555.3,435.7 543.8,437.9 546.3,443.7 558.0,441.4" fill="#e68f58"/>
<polygon points="520.1,442.0 532.5,443.9 531.9,449.0 519.6,447.2" fill="#ca7241"/>
<polygon points="533.0,438.1 520.8,436.3 520.1,442.0 532.5,443.9" fill="#e68f58"/>
<polygon points="532.3,438.0 533.3,444.0 532.6,449.1 531.6,443.2" fill="#c16c3d"/>
<polygon points="533.3,444.0 545.6,443.7 544.8,448.9 532.6,449.1" fill="#c56e3f"/>
<polygon points="544.5,437.8 532.3,438.0 533.3,444.0 545.6,443.7" fill="#e68f58"/>
<polygon points="489.6,466.9 513.9,440.1 513.4,445.2 489.3,472.1" fill="#b9663a"/>
<polygon points="483.6,462.7 489.6,466.9 489.3,472.1 483.3,467.9" fill="#db7d47"/>
<polygon points="489.6,466.9 513.9,440.1 508.0,436.4 483.6,462.7" fill="#e68f58"/>
<polygon points="385.7,202.7 382.3,204.0 385.2,239.7 388.4,238.2" fill="#b9663a"/>
<polygon points="382.3,204.0 379.3,202.9 382.2,238.4 385.2,239.7" fill="#db7d47"/>
<polygon points="424.3,217.0 420.9,218.6 422.2,255.8 425.5,254.1" fill="#b9663a"/>
<polygon points="420.9,218.6 417.5,217.3 418.9,254.4 422.2,255.8" fill="#db7d47"/>
<polygon points="334.4,223.4 330.4,225.1 335.8,263.1 339.7,261.2" fill="#b9663a"/>
<polygon points="330.4,225.1 327.3,223.7 332.9,261.5 335.8,263.1" fill="#db7d47"/>
<polygon points="312.2,232.5 307.8,234.2 314.5,273.1 318.6,271.2" fill="#b9663a"/>
<polygon points="307.8,234.2 304.7,232.8 311.5,271.5 314.5,273.1" fill="#db7d47"/>
<polygon points="409.1,236.0 405.4,237.8 407.5,277.0 411.1,275.0" fill="#b9663a"/>
<polygon points="405.4,237.8 401.8,236.3 404.1,275.3 407.5,277.0" fill="#db7d47"/>
<polygon points="491.9,240.4 488.7,242.3 486.9,281.9 490.0,279.8" fill="#b9663a"/>
<polygon points="488.7,242.3 484.6,240.7 482.9,280.2 486.9,281.9" fill="#db7d47"/>
<polygon points="373.3,240.7 369.2,242.6 373.1,282.3 377.0,280.2" fill="#b9663a"/>
<polygon points="369.2,242.6 365.7,241.0 369.8,280.6 373.1,282.3" fill="#db7d47"/>
<polygon points="350.9,251.1 346.5,253.2 351.7,293.9 355.9,291.6" fill="#b9663a"/>
<polygon points="346.5,253.2 343.0,251.5 348.4,292.0 351.7,293.9" fill="#db7d47"/>
<polygon points="372.8,253.6 368.6,255.7 372.7,296.6 376.8,294.4" fill="#b9663a"/>
<polygon points="368.6,255.7 364.9,254.0 369.2,294.8 372.7,296.6" fill="#db7d47"/>
<polygon points="543.9,259.6 540.9,261.8 536.3,303.2 539.2,300.8" fill="#b9663a"/>
<polygon points="540.9,261.8 536.1,260.0 531.7,301.2 536.3,303.2" fill="#db7d47"/>
<polygon points="246.5,259.1 241.1,261.3 251.9,302.7 256.9,300.3" fill="#b9663a"/>
<polygon points="241.1,261.3 238.2,259.4 249.1,300.7 251.9,302.7" fill="#db7d47"/>
<polygon points="456.4,263.2 452.6,265.4 452.5,307.1 456.1,304.7" fill="#b9663a"/>
<polygon points="452.6,265.4 448.3,263.5 448.4,305.1 452.5,307.1" fill="#db7d47"/>
<polygon points="439.6,264.1 435.7,266.3 436.5,308.2 440.2,305.7" fill="#b9663a"/>
<polygon points="435.7,266.3 431.4,264.5 432.4,306.1 436.5,308.2" fill="#db7d47"/>
<polygon points="328.1,275.4 323.1,277.9 330.1,320.7 334.8,318.1" fill="#b9663a"/>
<polygon points="323.1,277.9 319.5,275.8 326.6,318.5 330.1,320.7" fill="#db7d47"/>
<polygon points="570.8,278.9 567.7,281.4 561.3,324.5 564.2,321.8" fill="#b9663a"/>
<polygon points="567.7,281.4 562.4,279.4 556.3,322.3 561.3,324.5" fill="#db7d47"/>
<polygon points="284.3,282.1 278.8,284.6 288.3,328.0 293.5,325.3" fill="#b9663a"/>
<polygon points="278.8,284.6 275.4,282.5 285.0,325.7 288.3,328.0" fill="#db7d47"/>
<polygon points="485.4,282.6 481.6,285.2 479.9,328.6 483.5,325.8" fill="#b9663a"/>
<polygon points="481.6,285.2 476.8,283.1 475.3,326.3 479.9,328.6" fill="#db7d47"/>
<polygon points="524.5,346.0 515.7,334.0 515.5,335.8 524.3,347.9" fill="#b8303e" stroke="#b8303e" stroke-width="0.4"/>
<polygon points="515.7,334.0 522.6,332.9 522.3,335.8 515.4,336.8" fill="#a82a38" stroke="#a82a38" stroke-width="0.4"/>
<polygon points="524.5,346.0 515.7,334.0 522.6,332.9 526.5,345.7" fill="#dc5060" stroke="#e88a94" stroke-width="0.3"/>
<polygon points="526.7,343.9 522.8,331.1 522.6,332.9 526.5,345.7" fill="#b8303e" stroke="#b8303e" stroke-width="0.4"/>
<polygon points="522.8,331.1 530.0,331.3 529.7,334.2 522.5,334.0" fill="#a82a38" stroke="#a82a38" stroke-width="0.4"/>
<polygon points="526.7,343.9 522.8,331.1 530.0,331.3 528.9,343.9" fill="#dc5060" stroke="#e88a94" stroke-width="0.3"/>
<polygon points="529.1,342.1 530.2,329.5 530.0,331.3 528.9,343.9" fill="#b8303e" stroke="#b8303e" stroke-width="0.4"/>
<polygon points="530.2,329.5 537.4,330.8 537.1,333.7 529.9,332.4" fill="#a82a38" stroke="#a82a38" stroke-width="0.4"/>
<polygon points="529.1,342.1 530.2,329.5 537.4,330.8 531.2,342.5" fill="#dc5060" stroke="#e88a94" stroke-width="0.3"/>
<polygon points="396.2,289.0 391.6,291.7 394.9,335.6 399.3,332.8" fill="#b9663a"/>
<polygon points="391.6,291.7 387.3,289.5 390.8,333.3 394.9,335.6" fill="#db7d47"/>
<polygon points="531.4,340.6 537.6,328.9 537.4,330.8 531.2,342.5" fill="#b8303e" stroke="#b8303e" stroke-width="0.4"/>
<polygon points="537.6,328.9 544.3,331.4 544.0,334.3 537.3,331.9" fill="#a82a38" stroke="#a82a38" stroke-width="0.4"/>
<polygon points="531.4,340.6 537.6,328.9 544.3,331.4 533.4,341.3" fill="#dc5060" stroke="#e88a94" stroke-width="0.3"/>
<polygon points="297.7,290.2 292.2,292.9 301.2,337.0 306.4,334.1" fill="#b9663a"/>
<polygon points="292.2,292.9 288.6,290.7 297.8,334.6 301.2,337.0" fill="#db7d47"/>
<polygon points="554.1,292.8 550.8,295.5 545.0,339.6 548.2,336.7" fill="#b9663a"/>
<polygon points="550.8,295.5 545.3,293.2 539.9,337.2 545.0,339.6" fill="#db7d47"/>
<polygon points="533.6,339.4 544.6,329.5 544.3,331.4 533.4,341.3" fill="#b8303e" stroke="#b8303e" stroke-width="0.4"/>
<polygon points="544.6,329.5 550.4,332.9 550.0,335.9 544.2,332.5" fill="#a82a38" stroke="#a82a38" stroke-width="0.4"/>
<polygon points="533.6,339.4 544.6,329.5 550.4,332.9 535.2,340.5" fill="#dc5060" stroke="#e88a94" stroke-width="0.3"/>
<polygon points="511.3,295.1 507.5,297.9 504.3,342.3 507.8,339.3" fill="#b9663a"/>
<polygon points="507.5,297.9 502.3,295.6 499.4,339.8 504.3,342.3" fill="#db7d47"/>
<polygon points="535.5,338.6 550.7,331.0 550.4,332.9 535.2,340.5" fill="#b8303e" stroke="#b8303e" stroke-width="0.4"/>
<polygon points="550.7,331.0 555.2,335.2 554.7,338.2 550.2,334.0" fill="#a82a38" stroke="#a82a38" stroke-width="0.4"/>
<polygon points="535.5,338.6 550.7,331.0 555.2,335.2 536.7,339.8" fill="#dc5060" stroke="#e88a94" stroke-width="0.3"/>
<polygon points="639.6,299.7 637.0,302.5 626.1,347.2 628.6,344.1" fill="#b9663a"/>
<polygon points="637.0,302.5 630.7,300.2 620.3,344.7 626.1,347.2" fill="#db7d47"/>
<polygon points="536.9,337.9 555.4,333.3 555.2,335.2 536.7,339.8" fill="#b8303e" stroke="#b8303e" stroke-width="0.4"/>
<polygon points="555.4,333.3 558.3,338.0 557.9,341.0 555.0,336.3" fill="#a82a38" stroke="#a82a38" stroke-width="0.4"/>
<polygon points="536.9,337.9 555.4,333.3 558.3,338.0 537.7,339.2" fill="#dc5060" stroke="#e88a94" stroke-width="0.3"/>
<polygon points="602.1,301.3 599.1,304.1 590.4,348.9 593.3,345.8" fill="#b9663a"/>
<polygon points="599.1,304.1 593.1,301.8 584.8,346.4 590.4,348.9" fill="#db7d47"/>
<polygon points="537.9,337.3 558.6,336.1 558.3,338.0 537.7,339.2" fill="#b8303e" stroke="#b8303e" stroke-width="0.4"/>
<polygon points="558.6,336.1 559.6,341.0 559.1,344.1 558.2,339.1" fill="#a82a38" stroke="#a82a38" stroke-width="0.4"/>
<polygon points="537.9,337.3 558.6,336.1 559.6,341.0 538.1,338.7" fill="#dc5060" stroke="#e88a94" stroke-width="0.3"/>
<polygon points="470.4,304.9 466.2,307.9 465.3,353.0 469.3,349.8" fill="#b9663a"/>
<polygon points="466.2,307.9 461.2,305.4 460.5,350.3 465.3,353.0" fill="#db7d47"/>
<polygon points="538.4,336.8 559.9,339.0 559.6,341.0 538.1,338.7" fill="#b8303e" stroke="#b8303e" stroke-width="0.4"/>
<polygon points="559.9,339.0 558.8,343.9 558.3,347.0 559.4,342.2" fill="#a82a38" stroke="#a82a38" stroke-width="0.4"/>
<polygon points="538.4,336.8 559.9,339.0 558.8,343.9 538.0,338.1" fill="#dc5060" stroke="#e88a94" stroke-width="0.3"/>
<polygon points="525.5,304.4 507.7,296.6 507.6,298.7 525.3,306.5" fill="#b8303e" stroke="#b8303e" stroke-width="0.4"/>
<polygon points="507.7,296.6 513.0,293.7 512.7,296.9 507.5,299.9" fill="#a82a38" stroke="#a82a38" stroke-width="0.4"/>
<polygon points="525.5,304.4 507.7,296.6 513.0,293.7 527.0,303.6" fill="#dc5060" stroke="#e88a94" stroke-width="0.3"/>
<polygon points="524.3,307.6 503.9,302.4 503.7,304.5 524.1,309.7" fill="#b8303e" stroke="#b8303e" stroke-width="0.4"/>
<polygon points="503.9,302.4 507.6,298.7 507.3,301.9 503.6,305.7" fill="#a82a38" stroke="#a82a38" stroke-width="0.4"/>
<polygon points="524.3,307.6 503.9,302.4 507.6,298.7 525.3,306.5" fill="#dc5060" stroke="#e88a94" stroke-width="0.3"/>
<polygon points="538.2,336.2 559.1,341.9 558.8,343.9 538.0,338.1" fill="#b8303e" stroke="#b8303e" stroke-width="0.4"/>
<polygon points="559.1,341.9 555.9,346.3 555.5,349.5 558.6,345.1" fill="#a82a38" stroke="#a82a38" stroke-width="0.4"/>
<polygon points="538.2,336.2 559.1,341.9 555.9,346.3 537.3,337.4" fill="#dc5060" stroke="#e88a94" stroke-width="0.3"/>
<polygon points="523.6,311.0 501.9,308.9 501.7,310.9 523.4,313.1" fill="#b8303e" stroke="#b8303e" stroke-width="0.4"/>
<polygon points="501.9,308.9 503.7,304.5 503.5,307.7 501.7,312.1" fill="#a82a38" stroke="#a82a38" stroke-width="0.4"/>
<polygon points="523.6,311.0 501.9,308.9 503.7,304.5 524.1,309.7" fill="#dc5060" stroke="#e88a94" stroke-width="0.3"/>
<polygon points="523.6,314.4 501.9,315.6 501.8,317.7 523.4,316.5" fill="#b8303e" stroke="#b8303e" stroke-width="0.4"/>
<polygon points="501.9,315.6 501.7,310.9 501.5,314.2 501.7,318.9" fill="#a82a38" stroke="#a82a38" stroke-width="0.4"/>
<polygon points="523.6,314.4 501.9,315.6 501.7,310.9 523.4,313.1" fill="#dc5060" stroke="#e88a94" stroke-width="0.3"/>
<polygon points="537.5,335.4 556.2,344.3 555.9,346.3 537.3,337.4" fill="#b8303e" stroke="#b8303e" stroke-width="0.4"/>
<polygon points="556.2,344.3 551.1,347.9 550.7,351.1 555.8,347.5" fill="#a82a38" stroke="#a82a38" stroke-width="0.4"/>
<polygon points="537.5,335.4 556.2,344.3 551.1,347.9 536.0,336.4" fill="#dc5060" stroke="#e88a94" stroke-width="0.3"/>
<polygon points="524.1,317.8 504.1,322.4 503.9,324.5 523.9,319.8" fill="#b8303e" stroke="#b8303e" stroke-width="0.4"/>
<polygon points="504.1,322.4 501.8,317.7 501.6,321.0 503.9,325.7" fill="#a82a38" stroke="#a82a38" stroke-width="0.4"/>
<polygon points="524.1,317.8 504.1,322.4 501.8,317.7 523.4,316.5" fill="#dc5060" stroke="#e88a94" stroke-width="0.3"/>
<polygon points="536.3,334.4 551.4,345.9 551.1,347.9 536.0,336.4" fill="#b8303e" stroke="#b8303e" stroke-width="0.4"/>
<polygon points="551.4,345.9 544.7,348.4 544.3,351.6 551.0,349.1" fill="#a82a38" stroke="#a82a38" stroke-width="0.4"/>
<polygon points="536.3,334.4 551.4,345.9 544.7,348.4 534.4,335.1" fill="#dc5060" stroke="#e88a94" stroke-width="0.3"/>
<polygon points="525.2,321.1 508.3,328.9 508.1,331.0 525.0,323.1" fill="#b8303e" stroke="#b8303e" stroke-width="0.4"/>
<polygon points="508.3,328.9 503.9,324.5 503.7,327.8 508.0,332.2" fill="#a82a38" stroke="#a82a38" stroke-width="0.4"/>
<polygon points="525.2,321.1 508.3,328.9 503.9,324.5 523.9,319.8" fill="#dc5060" stroke="#e88a94" stroke-width="0.3"/>
<polygon points="534.6,333.1 545.0,346.4 544.7,348.4 534.4,335.1" fill="#b8303e" stroke="#b8303e" stroke-width="0.4"/>
<polygon points="545.0,346.4 537.2,347.6 536.8,350.8 544.6,349.6" fill="#a82a38" stroke="#a82a38" stroke-width="0.4"/>
<polygon points="534.6,333.1 545.0,346.4 537.2,347.6 532.5,333.4" fill="#dc5060" stroke="#e88a94" stroke-width="0.3"/>
<polygon points="565.5,319.2 562.0,322.5 555.1,368.5 558.4,365.1" fill="#b9663a"/>
<polygon points="562.0,322.5 556.0,319.8 549.5,365.7 555.1,368.5" fill="#db7d47"/>
<polygon points="344.6,318.7 339.0,321.9 345.9,368.0 351.1,364.6" fill="#b9663a"/>
<polygon points="339.0,321.9 334.7,319.3 341.8,365.2 345.9,368.0" fill="#db7d47"/>
<polygon points="526.7,324.1 514.2,334.8 514.0,336.9 526.5,326.2" fill="#b8303e" stroke="#b8303e" stroke-width="0.4"/>
<polygon points="514.2,334.8 508.1,331.0 507.8,334.3 513.9,338.1" fill="#a82a38" stroke="#a82a38" stroke-width="0.4"/>
<polygon points="526.7,324.1 514.2,334.8 508.1,331.0 525.0,323.1" fill="#dc5060" stroke="#e88a94" stroke-width="0.3"/>
<polygon points="473.3,319.9 469.0,323.1 467.8,369.2 471.9,365.8" fill="#b9663a"/>
<polygon points="469.0,323.1 463.6,320.4 462.8,366.4 467.8,369.2" fill="#db7d47"/>
<polygon points="532.7,331.4 537.4,345.5 537.2,347.6 532.5,333.4" fill="#b8303e" stroke="#b8303e" stroke-width="0.4"/>
<polygon points="537.4,345.5 529.1,345.3 528.8,348.6 537.1,348.8" fill="#a82a38" stroke="#a82a38" stroke-width="0.4"/>
<polygon points="532.7,331.4 537.4,345.5 529.1,345.3 530.4,331.4" fill="#dc5060" stroke="#e88a94" stroke-width="0.3"/>
<polygon points="528.6,326.9 521.4,339.7 521.2,341.7 528.4,328.9" fill="#b8303e" stroke="#b8303e" stroke-width="0.4"/>
<polygon points="521.4,339.7 514.0,336.9 513.7,340.1 521.1,342.9" fill="#a82a38" stroke="#a82a38" stroke-width="0.4"/>
<polygon points="528.6,326.9 521.4,339.7 514.0,336.9 526.5,326.2" fill="#dc5060" stroke="#e88a94" stroke-width="0.3"/>
<polygon points="530.6,329.3 529.4,343.3 529.1,345.3 530.4,331.4" fill="#b8303e" stroke="#b8303e" stroke-width="0.4"/>
<polygon points="529.4,343.3 521.2,341.7 520.9,345.0 529.0,346.6" fill="#a82a38" stroke="#a82a38" stroke-width="0.4"/>
<polygon points="530.6,329.3 529.4,343.3 521.2,341.7 528.4,328.9" fill="#dc5060" stroke="#e88a94" stroke-width="0.3"/>
<polygon points="519.2,321.6 515.3,324.8 511.2,371.1 515.0,367.6" fill="#b9663a"/>
<polygon points="515.3,324.8 509.5,322.1 505.9,368.2 511.2,371.1" fill="#db7d47"/>
<polygon points="366.8,332.2 361.2,335.7 367.0,382.6 372.2,378.9" fill="#b9663a"/>
<polygon points="361.2,335.7 356.6,332.8 362.6,379.6 367.0,382.6" fill="#db7d47"/>
<polygon points="599.7,351.0 596.2,354.9 586.4,402.8 589.8,398.7" fill="#b9663a"/>
<polygon points="596.2,354.9 589.3,351.7 580.1,399.4 586.4,402.8" fill="#db7d47"/>
<polygon points="413.9,363.8 408.3,367.9 411.3,416.6 416.5,412.2" fill="#b9663a"/>
<polygon points="408.3,367.9 402.8,364.5 406.2,413.0 411.3,416.6" fill="#db7d47"/>
<polygon points="507.1,380.3 502.3,384.8 498.6,434.2 503.1,429.5" fill="#b9663a"/>
<polygon points="502.3,384.8 495.7,381.1 492.5,430.3 498.6,434.2" fill="#db7d47"/>
<polygon points="567.5,389.1 563.3,393.8 555.0,443.5 559.0,438.6" fill="#b9663a"/>
<polygon points="563.3,393.8 556.0,389.9 548.3,439.5 555.0,443.5" fill="#db7d47"/>
<polygon points="495.7,413.9 490.4,419.2 487.3,469.8 492.3,464.3" fill="#b9663a"/>
<polygon points="490.4,419.2 483.4,414.8 480.9,465.3 487.3,469.8" fill="#db7d47"/>
<path d="M242.3 259.3 L382.5 202.8 L420.9 217.2 L279.8 282.3Z M293.2 290.5 L405.5 236.1 L410.9 238.5 L417.0 240.6 L423.6 242.5 L430.7 244.2 L438.2 245.5 L446.0 246.5 L454.1 247.2 L462.3 247.5 L467.0 245.1 L472.0 243.4 L477.3 242.0 L483.0 241.0 L489.0 240.4 L495.1 240.2 L501.2 240.5 L507.3 241.2 L513.1 242.3 L518.7 243.7 L523.9 245.6 L528.6 247.8 L532.7 250.3 L536.1 253.1 L538.7 256.1 L540.4 259.3 L541.2 262.6 L541.0 266.0 L539.7 269.3 L537.5 272.4 L545.8 273.5 L554.1 275.3 L562.0 277.5 L569.6 280.4 L576.7 283.7 L583.2 287.6 L588.9 291.9 L593.8 296.7 L597.7 301.7 L600.4 307.1 L602.0 312.6 L602.2 318.1 L601.0 323.7 L598.4 329.1 L594.4 334.1 L589.0 338.8 L594.0 345.2 L596.4 352.2 L596.9 359.3 L595.3 366.3 L591.6 372.9 L585.9 378.9 L578.3 384.0 L568.9 387.9 L558.3 390.4 L546.8 391.5 L534.9 391.0 L523.1 389.0 L512.0 385.5 L502.0 380.8 L515.7 388.7 L489.6 414.4 L408.4 364.2 L410.6 362.5Z M549.8 293.0 L542.4 290.7 L534.5 289.4 L526.6 289.2 L519.0 290.2 L512.2 292.3 L506.7 295.3 L502.9 299.2 L500.9 303.8 L501.1 308.6 L503.5 313.5 L508.1 318.1 L514.5 321.9 L522.4 324.8 L531.2 326.4 L540.1 326.6 L548.5 325.4 L555.7 322.8 L561.2 319.2 L564.5 314.8 L565.6 310.0 L564.5 305.1 L561.2 300.5 L556.2 296.4 L549.8 293.0Z" fill="#c4cbd2" fill-opacity="0.55" fill-rule="evenodd" stroke="#ffffff" stroke-opacity="0.5" stroke-width="0.6"/>
<path d="M474.9 405.3 L501.4 380.7 L514.4 321.9 M421.8 258.0 L460.4 247.3 M435.5 264.3 L445.7 280.7 L432.3 289.0 M445.7 280.7 L479.2 283.7 M483.1 260.7 L494.3 253.7 L507.5 258.9 L496.5 266.1 L483.1 260.7 M483.1 260.7 L452.3 263.3 M494.3 253.7 L488.3 240.5 M507.5 258.9 L540.0 259.8 M496.5 266.1 L481.1 282.9 M507.5 258.9 L512.4 265.5 L537.2 272.3 M565.1 317.0 L597.6 301.5 M506.8 295.4 L479.6 283.4" stroke="#ffffff" stroke-opacity="0.85" stroke-width="0.8" fill="none"/>
<clipPath id="hc2"><path d="M548.9 293.8 L555.0 296.9 L559.7 300.8 L562.7 305.2 L563.8 309.8 L562.8 314.4 L559.6 318.5 L554.4 321.9 L547.6 324.3 L539.7 325.5 L531.3 325.3 L523.0 323.8 L515.6 321.1 L509.5 317.4 L505.2 313.1 L502.9 308.5 L502.7 303.9 L504.5 299.6 L508.1 296.0 L513.3 293.0 L519.7 291.1 L526.9 290.1 L534.4 290.3 L541.9 291.5 L548.9 293.8Z"/></clipPath><g clip-path="url(#hc2)">
<polygon points="524.5,346.0 515.7,334.0 515.5,335.8 524.3,347.9" fill="#b8303e" stroke="#b8303e" stroke-width="0.4"/>
<polygon points="515.7,334.0 522.6,332.9 522.3,335.8 515.4,336.8" fill="#a82a38" stroke="#a82a38" stroke-width="0.4"/>
<polygon points="524.5,346.0 515.7,334.0 522.6,332.9 526.5,345.7" fill="#dc5060" stroke="#e88a94" stroke-width="0.3"/>
<polygon points="526.7,343.9 522.8,331.1 522.6,332.9 526.5,345.7" fill="#b8303e" stroke="#b8303e" stroke-width="0.4"/>
<polygon points="522.8,331.1 530.0,331.3 529.7,334.2 522.5,334.0" fill="#a82a38" stroke="#a82a38" stroke-width="0.4"/>
<polygon points="526.7,343.9 522.8,331.1 530.0,331.3 528.9,343.9" fill="#dc5060" stroke="#e88a94" stroke-width="0.3"/>
<polygon points="529.1,342.1 530.2,329.5 530.0,331.3 528.9,343.9" fill="#b8303e" stroke="#b8303e" stroke-width="0.4"/>
<polygon points="530.2,329.5 537.4,330.8 537.1,333.7 529.9,332.4" fill="#a82a38" stroke="#a82a38" stroke-width="0.4"/>
<polygon points="529.1,342.1 530.2,329.5 537.4,330.8 531.2,342.5" fill="#dc5060" stroke="#e88a94" stroke-width="0.3"/>
<polygon points="531.4,340.6 537.6,328.9 537.4,330.8 531.2,342.5" fill="#b8303e" stroke="#b8303e" stroke-width="0.4"/>
<polygon points="537.6,328.9 544.3,331.4 544.0,334.3 537.3,331.9" fill="#a82a38" stroke="#a82a38" stroke-width="0.4"/>
<polygon points="531.4,340.6 537.6,328.9 544.3,331.4 533.4,341.3" fill="#dc5060" stroke="#e88a94" stroke-width="0.3"/>
<polygon points="533.6,339.4 544.6,329.5 544.3,331.4 533.4,341.3" fill="#b8303e" stroke="#b8303e" stroke-width="0.4"/>
<polygon points="544.6,329.5 550.4,332.9 550.0,335.9 544.2,332.5" fill="#a82a38" stroke="#a82a38" stroke-width="0.4"/>
<polygon points="533.6,339.4 544.6,329.5 550.4,332.9 535.2,340.5" fill="#dc5060" stroke="#e88a94" stroke-width="0.3"/>
<polygon points="535.5,338.6 550.7,331.0 550.4,332.9 535.2,340.5" fill="#b8303e" stroke="#b8303e" stroke-width="0.4"/>
<polygon points="550.7,331.0 555.2,335.2 554.7,338.2 550.2,334.0" fill="#a82a38" stroke="#a82a38" stroke-width="0.4"/>
<polygon points="535.5,338.6 550.7,331.0 555.2,335.2 536.7,339.8" fill="#dc5060" stroke="#e88a94" stroke-width="0.3"/>
<polygon points="536.9,337.9 555.4,333.3 555.2,335.2 536.7,339.8" fill="#b8303e" stroke="#b8303e" stroke-width="0.4"/>
<polygon points="555.4,333.3 558.3,338.0 557.9,341.0 555.0,336.3" fill="#a82a38" stroke="#a82a38" stroke-width="0.4"/>
<polygon points="536.9,337.9 555.4,333.3 558.3,338.0 537.7,339.2" fill="#dc5060" stroke="#e88a94" stroke-width="0.3"/>
<polygon points="537.9,337.3 558.6,336.1 558.3,338.0 537.7,339.2" fill="#b8303e" stroke="#b8303e" stroke-width="0.4"/>
<polygon points="558.6,336.1 559.6,341.0 559.1,344.1 558.2,339.1" fill="#a82a38" stroke="#a82a38" stroke-width="0.4"/>
<polygon points="537.9,337.3 558.6,336.1 559.6,341.0 538.1,338.7" fill="#dc5060" stroke="#e88a94" stroke-width="0.3"/>
<polygon points="538.4,336.8 559.9,339.0 559.6,341.0 538.1,338.7" fill="#b8303e" stroke="#b8303e" stroke-width="0.4"/>
<polygon points="559.9,339.0 558.8,343.9 558.3,347.0 559.4,342.2" fill="#a82a38" stroke="#a82a38" stroke-width="0.4"/>
<polygon points="538.4,336.8 559.9,339.0 558.8,343.9 538.0,338.1" fill="#dc5060" stroke="#e88a94" stroke-width="0.3"/>
<polygon points="525.5,304.4 507.7,296.6 507.6,298.7 525.3,306.5" fill="#b8303e" stroke="#b8303e" stroke-width="0.4"/>
<polygon points="507.7,296.6 513.0,293.7 512.7,296.9 507.5,299.9" fill="#a82a38" stroke="#a82a38" stroke-width="0.4"/>
<polygon points="525.5,304.4 507.7,296.6 513.0,293.7 527.0,303.6" fill="#dc5060" stroke="#e88a94" stroke-width="0.3"/>
<polygon points="524.3,307.6 503.9,302.4 503.7,304.5 524.1,309.7" fill="#b8303e" stroke="#b8303e" stroke-width="0.4"/>
<polygon points="503.9,302.4 507.6,298.7 507.3,301.9 503.6,305.7" fill="#a82a38" stroke="#a82a38" stroke-width="0.4"/>
<polygon points="524.3,307.6 503.9,302.4 507.6,298.7 525.3,306.5" fill="#dc5060" stroke="#e88a94" stroke-width="0.3"/>
<polygon points="538.2,336.2 559.1,341.9 558.8,343.9 538.0,338.1" fill="#b8303e" stroke="#b8303e" stroke-width="0.4"/>
<polygon points="559.1,341.9 555.9,346.3 555.5,349.5 558.6,345.1" fill="#a82a38" stroke="#a82a38" stroke-width="0.4"/>
<polygon points="538.2,336.2 559.1,341.9 555.9,346.3 537.3,337.4" fill="#dc5060" stroke="#e88a94" stroke-width="0.3"/>
<polygon points="523.6,311.0 501.9,308.9 501.7,310.9 523.4,313.1" fill="#b8303e" stroke="#b8303e" stroke-width="0.4"/>
<polygon points="501.9,308.9 503.7,304.5 503.5,307.7 501.7,312.1" fill="#a82a38" stroke="#a82a38" stroke-width="0.4"/>
<polygon points="523.6,311.0 501.9,308.9 503.7,304.5 524.1,309.7" fill="#dc5060" stroke="#e88a94" stroke-width="0.3"/>
<polygon points="523.6,314.4 501.9,315.6 501.8,317.7 523.4,316.5" fill="#b8303e" stroke="#b8303e" stroke-width="0.4"/>
<polygon points="501.9,315.6 501.7,310.9 501.5,314.2 501.7,318.9" fill="#a82a38" stroke="#a82a38" stroke-width="0.4"/>
<polygon points="523.6,314.4 501.9,315.6 501.7,310.9 523.4,313.1" fill="#dc5060" stroke="#e88a94" stroke-width="0.3"/>
<polygon points="537.5,335.4 556.2,344.3 555.9,346.3 537.3,337.4" fill="#b8303e" stroke="#b8303e" stroke-width="0.4"/>
<polygon points="556.2,344.3 551.1,347.9 550.7,351.1 555.8,347.5" fill="#a82a38" stroke="#a82a38" stroke-width="0.4"/>
<polygon points="537.5,335.4 556.2,344.3 551.1,347.9 536.0,336.4" fill="#dc5060" stroke="#e88a94" stroke-width="0.3"/>
<polygon points="524.1,317.8 504.1,322.4 503.9,324.5 523.9,319.8" fill="#b8303e" stroke="#b8303e" stroke-width="0.4"/>
<polygon points="504.1,322.4 501.8,317.7 501.6,321.0 503.9,325.7" fill="#a82a38" stroke="#a82a38" stroke-width="0.4"/>
<polygon points="524.1,317.8 504.1,322.4 501.8,317.7 523.4,316.5" fill="#dc5060" stroke="#e88a94" stroke-width="0.3"/>
<polygon points="536.3,334.4 551.4,345.9 551.1,347.9 536.0,336.4" fill="#b8303e" stroke="#b8303e" stroke-width="0.4"/>
<polygon points="551.4,345.9 544.7,348.4 544.3,351.6 551.0,349.1" fill="#a82a38" stroke="#a82a38" stroke-width="0.4"/>
<polygon points="536.3,334.4 551.4,345.9 544.7,348.4 534.4,335.1" fill="#dc5060" stroke="#e88a94" stroke-width="0.3"/>
<polygon points="525.2,321.1 508.3,328.9 508.1,331.0 525.0,323.1" fill="#b8303e" stroke="#b8303e" stroke-width="0.4"/>
<polygon points="508.3,328.9 503.9,324.5 503.7,327.8 508.0,332.2" fill="#a82a38" stroke="#a82a38" stroke-width="0.4"/>
<polygon points="525.2,321.1 508.3,328.9 503.9,324.5 523.9,319.8" fill="#dc5060" stroke="#e88a94" stroke-width="0.3"/>
<polygon points="534.6,333.1 545.0,346.4 544.7,348.4 534.4,335.1" fill="#b8303e" stroke="#b8303e" stroke-width="0.4"/>
<polygon points="545.0,346.4 537.2,347.6 536.8,350.8 544.6,349.6" fill="#a82a38" stroke="#a82a38" stroke-width="0.4"/>
<polygon points="534.6,333.1 545.0,346.4 537.2,347.6 532.5,333.4" fill="#dc5060" stroke="#e88a94" stroke-width="0.3"/>
<polygon points="526.7,324.1 514.2,334.8 514.0,336.9 526.5,326.2" fill="#b8303e" stroke="#b8303e" stroke-width="0.4"/>
<polygon points="514.2,334.8 508.1,331.0 507.8,334.3 513.9,338.1" fill="#a82a38" stroke="#a82a38" stroke-width="0.4"/>
<polygon points="526.7,324.1 514.2,334.8 508.1,331.0 525.0,323.1" fill="#dc5060" stroke="#e88a94" stroke-width="0.3"/>
<polygon points="532.7,331.4 537.4,345.5 537.2,347.6 532.5,333.4" fill="#b8303e" stroke="#b8303e" stroke-width="0.4"/>
<polygon points="537.4,345.5 529.1,345.3 528.8,348.6 537.1,348.8" fill="#a82a38" stroke="#a82a38" stroke-width="0.4"/>
<polygon points="532.7,331.4 537.4,345.5 529.1,345.3 530.4,331.4" fill="#dc5060" stroke="#e88a94" stroke-width="0.3"/>
<polygon points="528.6,326.9 521.4,339.7 521.2,341.7 528.4,328.9" fill="#b8303e" stroke="#b8303e" stroke-width="0.4"/>
<polygon points="521.4,339.7 514.0,336.9 513.7,340.1 521.1,342.9" fill="#a82a38" stroke="#a82a38" stroke-width="0.4"/>
<polygon points="528.6,326.9 521.4,339.7 514.0,336.9 526.5,326.2" fill="#dc5060" stroke="#e88a94" stroke-width="0.3"/>
<polygon points="530.6,329.3 529.4,343.3 529.1,345.3 530.4,331.4" fill="#b8303e" stroke="#b8303e" stroke-width="0.4"/>
<polygon points="529.4,343.3 521.2,341.7 520.9,345.0 529.0,346.6" fill="#a82a38" stroke="#a82a38" stroke-width="0.4"/>
<polygon points="530.6,329.3 529.4,343.3 521.2,341.7 528.4,328.9" fill="#dc5060" stroke="#e88a94" stroke-width="0.3"/>
</g>
<polygon points="380.9,203.4 419.3,217.9 419.5,222.2 381.3,207.6" fill="#db7d47"/>
<polygon points="419.3,217.9 422.5,216.4 422.6,220.8 419.5,222.2" fill="#b9663a"/>
<polygon points="380.9,203.4 419.3,217.9 422.5,216.4 384.1,202.1" fill="#e68f58"/>
<polygon points="243.7,260.1 383.9,203.3 384.3,207.5 244.9,265.0" fill="#b9663a"/>
<polygon points="241.0,258.4 243.7,260.1 244.9,265.0 242.2,263.3" fill="#db7d47"/>
<polygon points="243.7,260.1 383.9,203.3 381.1,202.2 241.0,258.4" fill="#e68f58"/>
<polygon points="329.0,224.3 367.6,241.8 368.0,246.4 329.6,228.8" fill="#db7d47"/>
<polygon points="367.6,241.8 371.4,240.0 371.8,244.6 368.0,246.4" fill="#b9663a"/>
<polygon points="329.0,224.3 367.6,241.8 371.4,240.0 332.8,222.8" fill="#e68f58"/>
<polygon points="403.7,236.9 409.1,239.3 409.4,243.9 403.9,241.5" fill="#da7c47"/>
<polygon points="409.1,239.3 412.7,237.6 412.9,242.2 409.4,243.9" fill="#b9663a"/>
<polygon points="403.7,236.9 409.1,239.3 412.7,237.6 407.3,235.3" fill="#e68f58"/>
<polygon points="409.3,239.4 415.3,241.6 415.5,246.2 409.5,244.0" fill="#d97b46"/>
<polygon points="415.3,241.6 418.6,239.7 418.8,244.3 415.5,246.2" fill="#b9663a"/>
<polygon points="409.3,239.4 415.3,241.6 418.6,239.7 412.5,237.6" fill="#e68f58"/>
<polygon points="492.0,241.4 503.1,241.8 502.8,246.4 491.7,246.0" fill="#c77040"/>
<polygon points="492.0,241.4 503.1,241.8 503.2,239.5 492.1,239.1" fill="#e68f58"/>
<polygon points="481.8,242.4 492.6,241.4 492.4,246.0 481.6,247.0" fill="#c16b3d"/>
<polygon points="480.7,240.1 481.8,242.4 481.6,247.0 480.5,244.7" fill="#c56e3f"/>
<polygon points="481.8,242.4 492.6,241.4 491.5,239.1 480.7,240.1" fill="#e68f58"/>
<polygon points="502.4,241.7 513.2,243.5 512.9,248.2 502.1,246.4" fill="#d07543"/>
<polygon points="513.2,243.5 514.5,241.3 514.2,246.0 512.9,248.2" fill="#bb673b"/>
<polygon points="502.4,241.7 513.2,243.5 514.5,241.3 503.8,239.6" fill="#e68f58"/>
<polygon points="415.5,241.6 422.1,243.5 422.3,248.2 415.7,246.3" fill="#d67945"/>
<polygon points="422.1,243.5 425.0,241.6 425.1,246.2 422.3,248.2" fill="#b9663a"/>
<polygon points="415.5,241.6 422.1,243.5 425.0,241.6 418.4,239.7" fill="#e68f58"/>
<polygon points="306.4,233.4 344.9,252.2 345.5,257.0 307.2,238.0" fill="#db7d47"/>
<polygon points="344.9,252.2 349.0,250.3 349.6,255.1 345.5,257.0" fill="#b9663a"/>
<polygon points="306.4,233.4 344.9,252.2 349.0,250.3 310.5,231.8" fill="#e68f58"/>
<polygon points="472.5,244.6 482.4,242.3 482.2,246.9 472.3,249.3" fill="#bc683b"/>
<polygon points="470.2,242.5 472.5,244.6 472.3,249.3 470.1,247.2" fill="#cd7442"/>
<polygon points="472.5,244.6 482.4,242.3 480.1,240.2 470.2,242.5" fill="#e68f58"/>
<polygon points="422.3,243.6 429.5,245.2 429.6,249.9 422.5,248.3" fill="#d37744"/>
<polygon points="429.5,245.2 431.9,243.1 432.0,247.8 429.6,249.9" fill="#ba673a"/>
<polygon points="422.3,243.6 429.5,245.2 431.9,243.1 424.8,241.5" fill="#e68f58"/>
<polygon points="512.6,243.4 522.4,246.4 521.9,251.1 512.2,248.0" fill="#d97b46"/>
<polygon points="522.4,246.4 524.8,244.5 524.4,249.2 521.9,251.1" fill="#b9663a"/>
<polygon points="512.6,243.4 522.4,246.4 524.8,244.5 515.1,241.5" fill="#e68f58"/>
<polygon points="429.7,245.3 437.2,246.6 437.3,251.3 429.8,250.0" fill="#d07543"/>
<polygon points="437.2,246.6 439.2,244.4 439.2,249.1 437.3,251.3" fill="#bb673b"/>
<polygon points="429.7,245.3 437.2,246.6 439.2,244.4 431.7,243.1" fill="#e68f58"/>
<polygon points="464.6,248.0 473.0,244.4 472.9,249.1 464.5,252.7" fill="#b9663a"/>
<polygon points="461.3,246.2 464.6,248.0 464.5,252.7 461.2,250.9" fill="#d67a45"/>
<polygon points="464.6,248.0 473.0,244.4 469.6,242.7 461.3,246.2" fill="#e68f58"/>
<polygon points="278.2,281.3 281.4,283.3 282.5,288.4 279.4,286.4" fill="#db7d47"/>
<polygon points="281.4,283.3 422.5,217.8 422.6,222.1 282.5,288.4" fill="#b9663a"/>
<polygon points="419.3,216.6 278.2,281.3 281.4,283.3 422.5,217.8" fill="#e68f58"/>
<polygon points="437.4,246.6 445.3,247.7 445.3,252.4 437.5,251.4" fill="#cd7342"/>
<polygon points="445.3,247.7 446.8,245.4 446.8,250.0 445.3,252.4" fill="#bc683b"/>
<polygon points="437.4,246.6 445.3,247.7 446.8,245.4 439.0,244.4" fill="#e68f58"/>
<polygon points="445.5,247.7 453.6,248.3 453.6,253.1 445.5,252.4" fill="#ca7241"/>
<polygon points="453.6,248.3 454.6,246.0 454.6,250.7 453.6,253.1" fill="#be693c"/>
<polygon points="445.5,247.7 453.6,248.3 454.6,246.0 446.5,245.3" fill="#e68f58"/>
<polygon points="453.8,248.4 462.1,248.7 462.0,253.4 453.8,253.1" fill="#c77040"/>
<polygon points="462.1,248.7 462.5,246.3 462.5,251.0 462.0,253.4" fill="#bf6a3c"/>
<polygon points="453.8,248.4 462.1,248.7 462.5,246.3 454.4,246.0" fill="#e68f58"/>
<polygon points="521.8,246.2 529.9,250.4 529.5,255.2 521.4,250.9" fill="#d47844"/>
<polygon points="529.9,250.4 533.5,248.9 533.0,253.6 529.5,255.2" fill="#ba663a"/>
<polygon points="521.8,246.2 529.9,250.4 533.5,248.9 525.4,244.7" fill="#e68f58"/>
<polygon points="458.8,252.4 465.1,247.8 465.0,252.5 458.8,257.2" fill="#b9663a"/>
<polygon points="454.5,251.1 458.8,252.4 458.8,257.2 454.5,255.9" fill="#d77a45"/>
<polygon points="458.8,252.4 465.1,247.8 460.8,246.5 454.5,251.1" fill="#e68f58"/>
<polygon points="529.5,250.2 535.4,255.3 534.9,260.1 529.1,254.9" fill="#cc7341"/>
<polygon points="535.4,255.3 539.9,254.3 539.3,259.1 534.9,260.1" fill="#bd683b"/>
<polygon points="529.5,250.2 535.4,255.3 539.9,254.3 533.9,249.2" fill="#e68f58"/>
<polygon points="387.3,244.9 433.7,265.3 433.8,270.2 387.7,249.6" fill="#db7d47"/>
<polygon points="433.7,265.3 437.3,263.2 437.4,268.1 433.8,270.2" fill="#b9663a"/>
<polygon points="387.3,244.9 433.7,265.3 437.3,263.2 391.1,243.1" fill="#e68f58"/>
<polygon points="455.5,257.6 459.1,252.1 459.1,256.9 455.5,262.4" fill="#bc683b"/>
<polygon points="450.5,256.8 455.5,257.6 455.5,262.4 450.5,261.7" fill="#ce7442"/>
<polygon points="455.5,257.6 459.1,252.1 454.2,251.4 450.5,256.8" fill="#e68f58"/>
<polygon points="535.1,255.0 538.2,260.8 537.7,265.6 534.6,259.8" fill="#c46e3e"/>
<polygon points="538.2,260.8 543.4,260.4 542.8,265.2 537.7,265.6" fill="#c26c3d"/>
<polygon points="535.1,255.0 538.2,260.8 543.4,260.4 540.1,254.6" fill="#e68f58"/>
<polygon points="270.0,248.1 308.1,269.2 309.0,274.2 271.1,252.8" fill="#db7d47"/>
<polygon points="308.1,269.2 312.7,267.1 313.6,272.0 309.0,274.2" fill="#b9663a"/>
<polygon points="270.0,248.1 308.1,269.2 312.7,267.1 274.6,246.3" fill="#e68f58"/>
<polygon points="455.1,263.2 455.6,257.2 455.6,262.1 455.1,268.1" fill="#c06b3d"/>
<polygon points="449.7,263.1 455.1,263.2 455.1,268.1 449.7,268.0" fill="#c66f3f"/>
<polygon points="455.1,263.2 455.6,257.2 450.4,257.2 449.7,263.1" fill="#e68f58"/>
<polygon points="294.9,291.5 407.1,236.8 407.4,241.4 295.9,296.7" fill="#b9663a"/>
<polygon points="291.5,289.4 294.9,291.5 295.9,296.7 292.6,294.6" fill="#db7d47"/>
<polygon points="294.9,291.5 407.1,236.8 403.8,235.4 291.5,289.4" fill="#e68f58"/>
<polygon points="538.1,260.4 538.1,266.4 537.5,271.3 537.6,265.3" fill="#be6a3c"/>
<polygon points="538.1,266.4 543.5,266.8 543.0,271.7 537.5,271.3" fill="#c97140"/>
<polygon points="538.1,260.4 538.1,266.4 543.5,266.8 543.5,260.7" fill="#e68f58"/>
<polygon points="435.7,265.6 452.6,264.7 452.6,269.6 435.8,270.6" fill="#c36c3e"/>
<polygon points="435.4,262.9 435.7,265.6 435.8,270.6 435.5,267.8" fill="#c36d3e"/>
<polygon points="435.7,265.6 452.6,264.7 452.1,262.0 435.4,262.9" fill="#e68f58"/>
<polygon points="449.8,263.5 452.4,269.5 452.4,274.5 449.8,268.4" fill="#c76f3f"/>
<polygon points="452.4,269.5 457.7,268.8 457.7,273.8 452.4,274.5" fill="#c06a3d"/>
<polygon points="457.7,268.8 455.0,262.8 449.8,263.5 452.4,269.5" fill="#e68f58"/>
<polygon points="534.8,271.9 540.1,273.0 539.6,278.0 534.3,276.9" fill="#d17643"/>
<polygon points="540.1,273.0 543.4,267.1 542.9,272.1 539.6,278.0" fill="#ba673b"/>
<polygon points="538.2,266.1 534.8,271.9 540.1,273.0 543.4,267.1" fill="#e68f58"/>
<polygon points="239.8,260.3 277.3,283.5 278.4,288.6 241.1,265.1" fill="#db7d47"/>
<polygon points="277.3,283.5 282.4,281.1 283.5,286.2 278.4,288.6" fill="#b9663a"/>
<polygon points="282.4,281.1 244.8,258.3 239.8,260.3 277.3,283.5" fill="#e68f58"/>
<polygon points="518.1,273.6 529.9,273.3 529.4,278.3 517.7,278.6" fill="#c46e3e"/>
<polygon points="517.4,270.7 518.1,273.6 517.7,278.6 517.0,275.7" fill="#c26c3d"/>
<polygon points="518.1,273.6 529.9,273.3 529.0,270.5 517.4,270.7" fill="#e68f58"/>
<polygon points="452.7,269.8 458.6,275.5 458.6,280.5 452.7,274.8" fill="#cf7542"/>
<polygon points="458.6,275.5 463.5,274.0 463.4,279.1 458.6,280.5" fill="#bb673b"/>
<polygon points="463.5,274.0 457.5,268.5 452.7,269.8 458.6,275.5" fill="#e68f58"/>
<polygon points="529.3,273.3 541.2,274.3 540.7,279.3 528.8,278.3" fill="#ca7140"/>
<polygon points="529.6,270.5 529.3,273.3 528.8,278.3 529.1,275.5" fill="#be693c"/>
<polygon points="529.3,273.3 541.2,274.3 541.4,271.5 529.6,270.5" fill="#e68f58"/>
<polygon points="507.3,275.0 518.6,273.5 518.2,278.6 507.0,280.0" fill="#c06b3d"/>
<polygon points="505.7,272.2 507.3,275.0 507.0,280.0 505.3,277.2" fill="#c76f3f"/>
<polygon points="507.3,275.0 518.6,273.5 516.9,270.8 505.7,272.2" fill="#e68f58"/>
<polygon points="540.7,274.2 552.5,276.4 551.8,281.4 540.1,279.2" fill="#d07543"/>
<polygon points="552.5,276.4 553.6,273.6 552.9,278.6 551.8,281.4" fill="#bb673b"/>
<polygon points="540.7,274.2 552.5,276.4 553.6,273.6 541.9,271.5" fill="#e68f58"/>
<polygon points="497.3,277.5 507.8,274.9 507.5,279.9 497.0,282.6" fill="#bc683b"/>
<polygon points="494.7,274.8 497.3,277.5 497.0,282.6 494.4,279.9" fill="#cc7341"/>
<polygon points="497.3,277.5 507.8,274.9 505.2,272.3 494.7,274.8" fill="#e68f58"/>
<polygon points="551.9,276.3 563.2,279.6 562.5,284.6 551.3,281.3" fill="#d67a45"/>
<polygon points="563.2,279.6 565.3,277.0 564.5,282.1 562.5,284.6" fill="#b9663a"/>
<polygon points="551.9,276.3 563.2,279.6 565.3,277.0 554.1,273.8" fill="#e68f58"/>
<polygon points="459.1,275.8 468.0,280.5 467.9,285.6 459.0,280.8" fill="#d87b46"/>
<polygon points="468.0,280.5 472.0,278.4 471.8,283.5 467.9,285.6" fill="#b9663a"/>
<polygon points="472.0,278.4 463.0,273.7 459.1,275.8 468.0,280.5" fill="#e68f58"/>
<polygon points="488.3,281.1 497.7,277.4 497.4,282.4 488.0,286.2" fill="#ba673a"/>
<polygon points="484.8,278.7 488.3,281.1 488.0,286.2 484.6,283.8" fill="#d27744"/>
<polygon points="488.3,281.1 497.7,277.4 494.2,275.0 484.8,278.7" fill="#e68f58"/>
<polygon points="562.7,279.4 573.1,283.8 572.3,288.9 562.0,284.5" fill="#d97c46"/>
<polygon points="573.1,283.8 576.2,281.5 575.3,286.6 572.3,288.9" fill="#b9663a"/>
<polygon points="562.7,279.4 573.1,283.8 576.2,281.5 565.8,277.2" fill="#e68f58"/>
<polygon points="468.6,280.8 479.9,284.2 479.7,289.3 468.5,285.9" fill="#d57945"/>
<polygon points="479.9,284.2 482.6,281.5 482.4,286.6 479.7,289.3" fill="#ba663a"/>
<polygon points="482.6,281.5 471.3,278.2 468.6,280.8 479.9,284.2" fill="#e68f58"/>
<polygon points="480.6,285.8 488.7,280.9 488.4,286.0 480.4,290.9" fill="#b9663a"/>
<polygon points="476.3,283.7 480.6,285.8 480.4,290.9 476.2,288.8" fill="#d97c46"/>
<polygon points="480.6,285.8 488.7,280.9 484.4,278.9 476.3,283.7" fill="#e68f58"/>
<polygon points="572.6,283.6 581.9,289.0 581.0,294.2 571.8,288.7" fill="#d37744"/>
<polygon points="581.9,289.0 585.9,287.1 585.0,292.3 581.0,294.2" fill="#ba673a"/>
<polygon points="572.6,283.6 581.9,289.0 585.9,287.1 576.6,281.8" fill="#e68f58"/>
<polygon points="552.4,294.1 569.2,280.2 568.5,285.2 551.7,299.3" fill="#b9663a"/>
<polygon points="547.3,292.0 552.4,294.1 551.7,299.3 546.6,297.2" fill="#db7d47"/>
<polygon points="552.4,294.1 569.2,280.2 564.2,278.3 547.3,292.0" fill="#e68f58"/>
<polygon points="474.6,291.3 481.0,285.5 480.8,290.7 474.5,296.5" fill="#b9663a"/>
<polygon points="469.6,289.6 474.6,291.3 474.5,296.5 469.5,294.8" fill="#d67a45"/>
<polygon points="474.6,291.3 481.0,285.5 476.0,283.9 469.6,289.6" fill="#e68f58"/>
<polygon points="321.5,276.8 368.2,302.7 368.8,308.0 322.3,281.8" fill="#db7d47"/>
<polygon points="368.2,302.7 372.9,300.0 373.4,305.3 368.8,308.0" fill="#b9663a"/>
<polygon points="321.5,276.8 368.2,302.7 372.9,300.0 326.2,274.5" fill="#e68f58"/>
<polygon points="479.6,283.6 504.9,296.6 504.5,301.8 479.4,288.7" fill="#d87b46"/>
<polygon points="504.9,296.6 508.7,294.2 508.3,299.4 504.5,301.8" fill="#b9663a"/>
<polygon points="479.6,283.6 504.9,296.6 508.7,294.2 483.5,281.4" fill="#e68f58"/>
<polygon points="526.6,290.8 538.6,291.5 538.0,296.7 526.1,296.0" fill="#c87040"/>
<polygon points="526.5,287.6 526.6,290.8 526.1,296.0 526.0,292.8" fill="#bf6a3c"/>
<polygon points="526.6,290.8 538.6,291.5 538.5,288.3 526.5,287.6" fill="#e68f58"/>
<polygon points="341.7,320.2 437.5,265.1 437.6,270.1 342.5,325.7" fill="#b9663a"/>
<polygon points="337.7,317.8 341.7,320.2 342.5,325.7 338.5,323.2" fill="#db7d47"/>
<polygon points="341.7,320.2 437.5,265.1 433.5,263.4 337.7,317.8" fill="#e68f58"/>
<polygon points="516.6,292.7 527.7,290.8 527.2,296.0 516.1,297.9" fill="#bf6a3c"/>
<polygon points="514.4,289.6 516.6,292.7 516.1,297.9 514.0,294.7" fill="#c87040"/>
<polygon points="516.6,292.7 527.7,290.8 525.4,287.7 514.4,289.6" fill="#e68f58"/>
<polygon points="581.5,288.7 589.2,295.1 588.2,300.3 580.6,293.9" fill="#cc7341"/>
<polygon points="589.2,295.1 594.0,293.7 593.0,298.9 588.2,300.3" fill="#bc683b"/>
<polygon points="581.5,288.7 589.2,295.1 594.0,293.7 586.2,287.4" fill="#e68f58"/>
<polygon points="537.5,291.3 548.8,294.5 548.1,299.7 536.9,296.5" fill="#d47944"/>
<polygon points="548.8,294.5 550.8,291.6 550.2,296.8 548.1,299.7" fill="#ba663a"/>
<polygon points="537.5,291.3 548.8,294.5 550.8,291.6 539.6,288.5" fill="#e68f58"/>
<polygon points="408.4,279.8 463.8,306.5 463.7,311.9 408.6,284.8" fill="#db7d47"/>
<polygon points="463.8,306.5 467.8,303.8 467.6,309.1 463.7,311.9" fill="#b9663a"/>
<polygon points="408.4,279.8 463.8,306.5 467.8,303.8 412.4,277.5" fill="#e68f58"/>
<polygon points="508.8,296.6 517.5,292.4 517.1,297.6 508.4,301.9" fill="#ba663a"/>
<polygon points="504.7,294.1 508.8,296.6 508.4,301.9 504.3,299.3" fill="#d47944"/>
<polygon points="508.8,296.6 517.5,292.4 513.4,289.9 504.7,294.1" fill="#e68f58"/>
<polygon points="470.6,297.7 474.9,291.1 474.7,296.2 470.4,302.9" fill="#bb673b"/>
<polygon points="464.9,296.5 470.6,297.7 470.4,302.9 464.8,301.8" fill="#d07543"/>
<polygon points="470.6,297.7 474.9,291.1 469.4,289.9 464.9,296.5" fill="#e68f58"/>
<polygon points="389.6,290.5 411.5,301.8 411.8,307.1 390.0,295.7" fill="#db7d47"/>
<polygon points="411.5,301.8 415.8,299.2 416.0,304.4 411.8,307.1" fill="#b9663a"/>
<polygon points="389.6,290.5 411.5,301.8 415.8,299.2 393.9,288.0" fill="#e68f58"/>
<polygon points="547.8,294.1 556.9,299.4 556.2,304.7 547.1,299.3" fill="#d47944"/>
<polygon points="556.9,299.4 560.9,297.3 560.2,302.5 556.2,304.7" fill="#ba663a"/>
<polygon points="547.8,294.1 556.9,299.4 560.9,297.3 551.8,292.0" fill="#e68f58"/>
<polygon points="319.4,306.6 350.3,290.2 350.9,295.4 320.4,311.9" fill="#b9663a"/>
<polygon points="315.7,304.3 319.4,306.6 320.4,311.9 316.7,309.6" fill="#db7d47"/>
<polygon points="319.4,306.6 350.3,290.2 346.6,288.1 315.7,304.3" fill="#e68f58"/>
<polygon points="588.9,294.7 594.7,301.8 593.7,307.1 587.9,300.0" fill="#c76f3f"/>
<polygon points="594.7,301.8 600.2,301.0 599.2,306.2 593.7,307.1" fill="#c06b3d"/>
<polygon points="588.9,294.7 594.7,301.8 600.2,301.0 594.3,294.0" fill="#e68f58"/>
<polygon points="504.4,302.3 509.5,296.1 509.1,301.4 504.0,307.6" fill="#ba663a"/>
<polygon points="498.9,300.6 504.4,302.3 504.0,307.6 498.5,305.9" fill="#d47944"/>
<polygon points="504.4,302.3 509.5,296.1 504.0,294.6 498.9,300.6" fill="#e68f58"/>
<polygon points="598.5,303.2 636.3,301.7 635.0,306.9 597.5,308.5" fill="#c46d3e"/>
<polygon points="596.7,299.8 598.5,303.2 597.5,308.5 595.7,305.1" fill="#c26c3e"/>
<polygon points="598.5,303.2 636.3,301.7 634.0,298.2 596.7,299.8" fill="#e68f58"/>
<polygon points="468.7,304.7 470.7,297.4 470.6,302.6 468.5,310.0" fill="#be693c"/>
<polygon points="462.6,304.1 468.7,304.7 468.5,310.0 462.5,309.4" fill="#ca7140"/>
<polygon points="468.7,304.7 470.7,297.4 464.8,296.8 462.6,304.1" fill="#e68f58"/>
<polygon points="556.2,298.8 561.7,305.6 560.9,310.9 555.5,304.1" fill="#c87040"/>
<polygon points="561.7,305.6 567.2,304.6 566.4,309.9 560.9,310.9" fill="#bf6a3c"/>
<polygon points="556.2,298.8 561.7,305.6 567.2,304.6 561.7,297.8" fill="#e68f58"/>
<polygon points="594.5,301.5 598.1,309.0 597.0,314.4 593.5,306.7" fill="#c26c3d"/>
<polygon points="598.1,309.0 604.2,308.9 603.1,314.2 597.0,314.4" fill="#c46e3e"/>
<polygon points="594.5,301.5 598.1,309.0 604.2,308.9 600.5,301.3" fill="#e68f58"/>
<polygon points="498.0,308.4 504.2,308.8 503.8,314.2 497.7,313.8" fill="#c87040"/>
<polygon points="504.2,308.8 504.7,301.6 498.6,301.3 498.0,308.4" fill="#e68f58"/>
<polygon points="462.6,304.5 462.9,312.2 462.8,317.6 462.5,309.8" fill="#c26c3d"/>
<polygon points="462.9,312.2 469.2,312.1 469.1,317.4 462.8,317.6" fill="#c46e3e"/>
<polygon points="469.2,312.1 468.7,304.3 462.6,304.5 462.9,312.2" fill="#e68f58"/>
<polygon points="561.4,304.9 562.2,312.2 561.4,317.6 560.6,310.2" fill="#bf6a3c"/>
<polygon points="562.2,312.2 568.5,312.6 567.7,318.0 561.4,317.6" fill="#c87040"/>
<polygon points="561.4,304.9 562.2,312.2 568.5,312.6 567.6,305.3" fill="#e68f58"/>
<polygon points="363.9,333.9 434.3,290.1 434.4,295.3 364.6,339.4" fill="#b9663a"/>
<polygon points="359.6,331.2 363.9,333.9 364.6,339.4 360.2,336.7" fill="#db7d47"/>
<polygon points="363.9,333.9 434.3,290.1 430.1,288.0 359.6,331.2" fill="#e68f58"/>
<polygon points="498.2,309.1 502.6,316.4 502.2,321.8 497.8,314.5" fill="#c87040"/>
<polygon points="502.6,316.4 508.5,315.3 508.1,320.7 502.2,321.8" fill="#bf6a3c"/>
<polygon points="508.5,315.3 504.0,308.1 498.2,309.1 502.6,316.4" fill="#e68f58"/>
<polygon points="597.9,308.7 599.0,316.5 597.9,321.9 596.9,314.0" fill="#be693c"/>
<polygon points="599.0,316.5 605.5,317.1 604.4,322.5 597.9,321.9" fill="#ca7140"/>
<polygon points="597.9,308.7 599.0,316.5 605.5,317.1 604.3,309.2" fill="#e68f58"/>
<polygon points="558.1,318.3 564.3,320.1 563.4,325.6 557.3,323.7" fill="#d47944"/>
<polygon points="564.3,320.1 568.4,313.3 567.5,318.7 563.4,325.6" fill="#ba663a"/>
<polygon points="562.3,311.6 558.1,318.3 564.3,320.1 568.4,313.3" fill="#e68f58"/>
<polygon points="463.0,312.5 466.0,320.5 465.9,325.9 462.9,317.9" fill="#c66f3f"/>
<polygon points="466.0,320.5 472.3,319.6 472.1,325.0 465.9,325.9" fill="#c06b3d"/>
<polygon points="472.3,319.6 469.1,311.7 463.0,312.5 466.0,320.5" fill="#e68f58"/>
<polygon points="503.2,317.0 512.2,323.2 511.7,328.7 502.8,322.5" fill="#d47944"/>
<polygon points="512.2,323.2 516.9,320.7 516.4,326.2 511.7,328.7" fill="#ba663a"/>
<polygon points="516.9,320.7 507.9,314.7 503.2,317.0 512.2,323.2" fill="#e68f58"/>
<polygon points="597.4,324.0 604.0,325.3 602.9,330.8 596.3,329.4" fill="#d07543"/>
<polygon points="599.0,316.2 597.4,324.0 604.0,325.3 605.5,317.5" fill="#e68f58"/>
<polygon points="559.5,320.5 569.3,324.8 568.4,330.3 558.7,326.0" fill="#db7d47"/>
<polygon points="569.3,324.8 572.5,321.8 571.6,327.2 568.4,330.3" fill="#b9663a"/>
<polygon points="559.5,320.5 569.3,324.8 572.5,321.8 562.8,317.5" fill="#e68f58"/>
<polygon points="468.3,322.1 514.4,323.8 514.0,329.3 468.2,327.6" fill="#c76f3f"/>
<polygon points="468.3,322.1 514.4,323.8 514.3,319.9 468.7,318.2" fill="#e68f58"/>
<polygon points="549.9,322.7 554.8,325.8 554.0,331.3 549.2,328.2" fill="#d47944"/>
<polygon points="554.8,325.8 563.6,320.7 562.8,326.2 554.0,331.3" fill="#ba663a"/>
<polygon points="558.7,317.7 549.9,322.7 554.8,325.8 563.6,320.7" fill="#e68f58"/>
<polygon points="290.6,291.7 408.0,364.4 408.4,370.2 291.7,296.9" fill="#db7d47"/>
<polygon points="408.0,364.4 413.2,360.6 413.5,366.4 408.4,370.2" fill="#b9663a"/>
<polygon points="290.6,291.7 408.0,364.4 413.2,360.6 295.7,289.2" fill="#e68f58"/>
<polygon points="513.2,323.7 525.5,327.5 524.9,333.1 512.8,329.1" fill="#d47944"/>
<polygon points="525.5,327.5 528.0,324.0 527.4,329.5 524.9,333.1" fill="#ba663a"/>
<polygon points="528.0,324.0 515.8,320.2 513.2,323.7 525.5,327.5" fill="#e68f58"/>
<polygon points="538.8,324.7 541.5,328.5 540.8,334.1 538.2,330.2" fill="#c87040"/>
<polygon points="541.5,328.5 553.7,326.2 553.0,331.7 540.8,334.1" fill="#bf6a3c"/>
<polygon points="550.9,322.4 538.8,324.7 541.5,328.5 553.7,326.2" fill="#e68f58"/>
<polygon points="568.7,324.5 577.4,329.9 576.4,335.4 567.8,330.0" fill="#d47844"/>
<polygon points="577.4,329.9 581.7,327.3 580.7,332.9 576.4,335.4" fill="#ba663a"/>
<polygon points="568.7,324.5 577.4,329.9 581.7,327.3 573.0,322.0" fill="#e68f58"/>
<polygon points="526.7,323.8 526.8,327.8 526.2,333.3 526.2,329.3" fill="#bf6a3c"/>
<polygon points="526.8,327.8 540.2,328.6 539.6,334.1 526.2,333.3" fill="#c87040"/>
<polygon points="540.1,324.6 526.7,323.8 526.8,327.8 540.2,328.6" fill="#e68f58"/>
<polygon points="593.0,331.0 599.5,333.2 598.4,338.7 591.9,336.6" fill="#d67a45"/>
<polygon points="599.5,333.2 603.9,325.7 602.7,331.2 598.4,338.7" fill="#b9663a"/>
<polygon points="597.5,323.6 593.0,331.0 599.5,333.2 603.9,325.7" fill="#e68f58"/>
<polygon points="576.9,329.6 584.1,335.9 583.1,341.5 575.9,335.1" fill="#ce7442"/>
<polygon points="584.1,335.9 589.4,334.0 588.4,339.5 583.1,341.5" fill="#bc683b"/>
<polygon points="576.9,329.6 584.1,335.9 589.4,334.0 582.1,327.7" fill="#e68f58"/>
<polygon points="586.0,337.3 592.0,340.3 590.9,345.9 584.9,342.9" fill="#d97c46"/>
<polygon points="592.0,340.3 599.2,333.5 598.1,339.1 590.9,345.9" fill="#b9663a"/>
<polygon points="593.3,330.7 586.0,337.3 592.0,340.3 599.2,333.5" fill="#e68f58"/>
<polygon points="583.7,335.5 589.2,342.6 588.1,348.3 582.7,341.1" fill="#c87040"/>
<polygon points="589.2,342.6 595.4,341.4 594.3,347.1 588.1,348.3" fill="#bf6a3c"/>
<polygon points="583.7,335.5 589.2,342.6 595.4,341.4 589.8,334.4" fill="#e68f58"/>
<polygon points="409.8,366.6 471.0,321.4 470.8,326.8 410.2,372.4" fill="#b9663a"/>
<polygon points="404.7,363.4 409.8,366.6 410.2,372.4 405.1,369.2" fill="#db7d47"/>
<polygon points="409.8,366.6 471.0,321.4 466.0,318.9 404.7,363.4" fill="#e68f58"/>
<polygon points="589.0,342.2 592.4,349.9 591.2,355.5 587.9,347.8" fill="#c26c3e"/>
<polygon points="592.4,349.9 599.2,349.5 598.0,355.2 591.2,355.5" fill="#c46d3e"/>
<polygon points="589.0,342.2 592.4,349.9 599.2,349.5 595.7,341.9" fill="#e68f58"/>
<polygon points="592.2,349.4 593.3,357.3 592.1,363.1 591.1,355.1" fill="#be693c"/>
<polygon points="593.3,357.3 600.6,358.0 599.4,363.7 592.1,363.1" fill="#c97140"/>
<polygon points="592.2,349.4 593.3,357.3 600.6,358.0 599.4,350.0" fill="#e68f58"/>
<polygon points="593.3,356.9 591.8,364.7 590.7,370.5 592.2,362.6" fill="#bb673b"/>
<polygon points="591.8,364.7 599.3,366.4 598.0,372.2 590.7,370.5" fill="#cf7542"/>
<polygon points="593.3,356.9 591.8,364.7 599.3,366.4 600.6,358.4" fill="#e68f58"/>
<polygon points="433.6,345.7 513.5,390.9 512.9,396.8 433.7,351.4" fill="#db7d47"/>
<polygon points="513.5,390.9 517.9,386.5 517.3,392.5 512.9,396.8" fill="#b9663a"/>
<polygon points="433.6,345.7 513.5,390.9 517.9,386.5 438.3,342.3" fill="#e68f58"/>
<polygon points="587.9,371.7 595.1,374.3 593.9,380.2 586.8,377.5" fill="#d67a45"/>
<polygon points="595.1,374.3 599.1,366.8 597.9,372.6 593.9,380.2" fill="#b9663a"/>
<polygon points="592.0,364.3 587.9,371.7 595.1,374.3 599.1,366.8" fill="#e68f58"/>
<polygon points="445.2,386.9 472.3,364.3 472.1,370.1 445.3,392.9" fill="#b9663a"/>
<polygon points="439.5,383.4 445.2,386.9 445.3,392.9 439.6,389.3" fill="#db7d47"/>
<polygon points="445.2,386.9 472.3,364.3 466.7,361.2 439.5,383.4" fill="#e68f58"/>
<polygon points="581.6,377.9 588.3,381.5 587.1,387.4 580.5,383.7" fill="#d97c46"/>
<polygon points="588.3,381.5 594.8,374.8 593.6,380.6 587.1,387.4" fill="#b9663a"/>
<polygon points="588.3,371.3 581.6,377.9 588.3,381.5 594.8,374.8" fill="#e68f58"/>
<polygon points="573.1,382.9 578.8,387.4 577.7,393.3 572.1,388.8" fill="#d27744"/>
<polygon points="578.8,387.4 587.8,381.9 586.6,387.8 577.7,393.3" fill="#ba673a"/>
<polygon points="582.1,377.5 573.1,382.9 578.8,387.4 587.8,381.9" fill="#e68f58"/>
<polygon points="500.1,383.1 511.4,388.3 510.9,394.3 499.6,389.0" fill="#d87b46"/>
<polygon points="511.4,388.3 515.2,383.7 514.6,389.6 510.9,394.3" fill="#b9663a"/>
<polygon points="515.2,383.7 503.9,378.6 500.1,383.1 511.4,388.3" fill="#e68f58"/>
<polygon points="562.8,386.5 567.2,391.6 566.2,397.6 561.8,392.4" fill="#cc7341"/>
<polygon points="567.2,391.6 578.2,387.7 577.1,393.6 566.2,397.6" fill="#bc683b"/>
<polygon points="573.7,382.6 562.8,386.5 567.2,391.6 578.2,387.7" fill="#e68f58"/>
<polygon points="512.2,388.6 524.9,392.2 524.2,398.2 511.6,394.5" fill="#d17643"/>
<polygon points="524.9,392.2 527.1,387.0 526.4,392.9 524.2,398.2" fill="#bb673b"/>
<polygon points="527.1,387.0 514.5,383.5 512.2,388.6 524.9,392.2" fill="#e68f58"/>
<polygon points="405.8,366.1 487.1,416.8 486.7,422.9 406.1,371.9" fill="#db7d47"/>
<polygon points="487.1,416.8 492.0,411.9 491.7,418.0 486.7,422.9" fill="#b9663a"/>
<polygon points="405.8,366.1 487.1,416.8 492.0,411.9 411.0,362.3" fill="#e68f58"/>
<polygon points="551.1,388.4 554.0,394.0 553.0,399.9 550.2,394.4" fill="#c66f3f"/>
<polygon points="554.0,394.0 566.5,391.8 565.5,397.8 553.0,399.9" fill="#c06b3d"/>
<polygon points="563.5,386.3 551.1,388.4 554.0,394.0 566.5,391.8" fill="#e68f58"/>
<polygon points="525.7,392.4 539.1,394.2 538.3,400.2 525.0,398.4" fill="#ca7241"/>
<polygon points="539.5,388.6 526.3,386.8 525.7,392.4 539.1,394.2" fill="#e68f58"/>
<polygon points="538.7,388.5 539.9,394.2 539.1,400.2 538.0,394.5" fill="#c16c3d"/>
<polygon points="539.9,394.2 553.2,394.0 552.3,400.0 539.1,400.2" fill="#c56e3f"/>
<polygon points="551.9,388.4 538.7,388.5 539.9,394.2 553.2,394.0" fill="#e68f58"/>
<polygon points="492.9,416.4 518.9,390.5 518.3,396.5 492.5,422.5" fill="#b9663a"/>
<polygon points="486.3,412.4 492.9,416.4 492.5,422.5 486.0,418.4" fill="#db7d47"/>
<polygon points="492.9,416.4 518.9,390.5 512.5,386.9 486.3,412.4" fill="#e68f58"/>
<polygon points="382.8,164.0 379.2,165.1 382.3,204.0 385.7,202.7" fill="#b9663a"/>
<polygon points="379.2,165.1 376.1,164.2 379.3,202.9 382.3,204.0" fill="#db7d47"/>
<polygon points="423.0,176.4 419.5,177.8 420.9,218.6 424.3,217.0" fill="#b9663a"/>
<polygon points="419.5,177.8 415.9,176.6 417.5,217.3 420.9,218.6" fill="#db7d47"/>
<polygon points="328.7,181.9 324.4,183.4 330.4,225.1 334.4,223.4" fill="#b9663a"/>
<polygon points="324.4,183.4 321.2,182.2 327.3,223.7 330.4,225.1" fill="#db7d47"/>
<polygon points="305.1,189.8 300.4,191.3 307.8,234.2 312.2,232.5" fill="#b9663a"/>
<polygon points="300.4,191.3 297.3,190.0 304.7,232.8 307.8,234.2" fill="#db7d47"/>
<polygon points="407.0,192.9 403.0,194.5 405.4,237.8 409.1,236.0" fill="#b9663a"/>
<polygon points="403.0,194.5 399.2,193.1 401.8,236.3 405.4,237.8" fill="#db7d47"/>
<polygon points="494.1,196.8 490.8,198.4 488.7,242.3 491.9,240.4" fill="#b9663a"/>
<polygon points="490.8,198.4 486.3,197.1 484.6,240.7 488.7,242.3" fill="#db7d47"/>
<polygon points="369.2,197.0 364.8,198.7 369.2,242.6 373.3,240.7" fill="#b9663a"/>
<polygon points="364.8,198.7 361.2,197.3 365.7,241.0 369.2,242.6" fill="#db7d47"/>
<polygon points="345.4,206.1 340.7,207.9 346.5,253.2 350.9,251.1" fill="#b9663a"/>
<polygon points="340.7,207.9 337.0,206.4 343.0,251.5 346.5,253.2" fill="#db7d47"/>
<polygon points="368.5,208.4 363.9,210.2 368.6,255.7 372.8,253.6" fill="#b9663a"/>
<polygon points="363.9,210.2 360.1,208.7 364.9,254.0 368.6,255.7" fill="#db7d47"/>
<polygon points="549.2,213.7 546.1,215.6 540.9,261.8 543.9,259.6" fill="#b9663a"/>
<polygon points="546.1,215.6 540.9,214.0 536.1,260.0 540.9,261.8" fill="#db7d47"/>
<polygon points="234.8,213.1 229.0,215.0 241.1,261.3 246.5,259.1" fill="#b9663a"/>
<polygon points="229.0,215.0 226.0,213.4 238.2,259.4 241.1,261.3" fill="#db7d47"/>
<polygon points="456.7,216.8 452.7,218.8 452.6,265.4 456.4,263.2" fill="#b9663a"/>
<polygon points="452.7,218.8 448.1,217.1 448.3,263.5 452.6,265.4" fill="#db7d47"/>
<polygon points="438.9,217.6 434.8,219.6 435.7,266.3 439.6,264.1" fill="#b9663a"/>
<polygon points="434.8,219.6 430.3,218.0 431.4,264.5 435.7,266.3" fill="#db7d47"/>
<polygon points="320.7,227.6 315.3,229.8 323.1,277.9 328.1,275.4" fill="#b9663a"/>
<polygon points="315.3,229.8 311.5,228.0 319.5,275.8 323.1,277.9" fill="#db7d47"/>
<polygon points="578.1,230.8 575.0,233.1 567.7,281.4 570.8,278.9" fill="#b9663a"/>
<polygon points="575.0,233.1 569.2,231.2 562.4,279.4 567.7,281.4" fill="#db7d47"/>
<polygon points="274.0,233.5 268.0,235.8 278.8,284.6 284.3,282.1" fill="#b9663a"/>
<polygon points="268.0,235.8 264.5,233.9 275.4,282.5 278.8,284.6" fill="#db7d47"/>
<polygon points="487.5,234.1 483.5,236.4 481.6,285.2 485.4,282.6" fill="#b9663a"/>
<polygon points="483.5,236.4 478.4,234.5 476.8,283.1 481.6,285.2" fill="#db7d47"/>
<polygon points="529.3,298.8 519.8,287.6 519.6,289.6 529.1,300.9" fill="#b8303e" stroke="#b8303e" stroke-width="0.4"/>
<polygon points="519.8,287.6 527.1,286.7 526.8,289.9 519.5,290.9" fill="#a82a38" stroke="#a82a38" stroke-width="0.4"/>
<polygon points="529.3,298.8 519.8,287.6 527.1,286.7 531.5,298.5" fill="#dc5060" stroke="#e88a94" stroke-width="0.3"/>
<polygon points="527.2,301.5 513.1,291.6 513.0,293.7 527.0,303.6" fill="#b8303e" stroke="#b8303e" stroke-width="0.4"/>
<polygon points="513.1,291.6 519.6,289.6 519.3,292.9 512.9,294.9" fill="#a82a38" stroke="#a82a38" stroke-width="0.4"/>
<polygon points="527.2,301.5 513.1,291.6 519.6,289.6 529.1,300.9" fill="#dc5060" stroke="#e88a94" stroke-width="0.3"/>
<polygon points="531.7,296.4 527.3,284.6 527.1,286.7 531.5,298.5" fill="#b8303e" stroke="#b8303e" stroke-width="0.4"/>
<polygon points="527.3,284.6 535.0,284.7 534.7,288.0 527.0,287.9" fill="#a82a38" stroke="#a82a38" stroke-width="0.4"/>
<polygon points="531.7,296.4 527.3,284.6 535.0,284.7 534.0,296.4" fill="#dc5060" stroke="#e88a94" stroke-width="0.3"/>
<polygon points="392.7,239.8 387.8,242.2 391.6,291.7 396.2,289.0" fill="#b9663a"/>
<polygon points="387.8,242.2 383.2,240.2 387.3,289.5 391.6,291.7" fill="#db7d47"/>
<polygon points="534.2,294.3 535.3,282.7 535.0,284.7 534.0,296.4" fill="#b8303e" stroke="#b8303e" stroke-width="0.4"/>
<polygon points="535.3,282.7 542.9,283.9 542.6,287.2 534.9,286.0" fill="#a82a38" stroke="#a82a38" stroke-width="0.4"/>
<polygon points="534.2,294.3 535.3,282.7 542.9,283.9 536.5,294.7" fill="#dc5060" stroke="#e88a94" stroke-width="0.3"/>
<polygon points="288.0,240.8 282.0,243.2 292.2,292.9 297.7,290.2" fill="#b9663a"/>
<polygon points="282.0,243.2 278.2,241.2 288.6,290.7 292.2,292.9" fill="#db7d47"/>
<polygon points="536.7,292.6 543.2,281.8 542.9,283.9 536.5,294.7" fill="#b8303e" stroke="#b8303e" stroke-width="0.4"/>
<polygon points="543.2,281.8 550.4,284.1 549.9,287.4 542.8,285.2" fill="#a82a38" stroke="#a82a38" stroke-width="0.4"/>
<polygon points="536.7,292.6 543.2,281.8 550.4,284.1 538.8,293.2" fill="#dc5060" stroke="#e88a94" stroke-width="0.3"/>
<polygon points="560.7,243.2 557.2,245.6 550.8,295.5 554.1,292.8" fill="#b9663a"/>
<polygon points="557.2,245.6 551.3,243.6 545.3,293.2 550.8,295.5" fill="#db7d47"/>
<polygon points="539.1,291.1 550.6,282.0 550.4,284.1 538.8,293.2" fill="#b8303e" stroke="#b8303e" stroke-width="0.4"/>
<polygon points="550.6,282.0 556.9,285.1 556.4,288.4 550.2,285.3" fill="#a82a38" stroke="#a82a38" stroke-width="0.4"/>
<polygon points="539.1,291.1 550.6,282.0 556.9,285.1 540.9,292.0" fill="#dc5060" stroke="#e88a94" stroke-width="0.3"/>
<polygon points="515.2,245.3 511.2,247.8 507.5,297.9 511.3,295.1" fill="#b9663a"/>
<polygon points="511.2,247.8 505.7,245.7 502.3,295.6 507.5,297.9" fill="#db7d47"/>
<polygon points="541.1,289.9 557.2,282.9 556.9,285.1 540.9,292.0" fill="#b8303e" stroke="#b8303e" stroke-width="0.4"/>
<polygon points="557.2,282.9 562.1,286.8 561.6,290.2 556.7,286.3" fill="#a82a38" stroke="#a82a38" stroke-width="0.4"/>
<polygon points="541.1,289.9 557.2,282.9 562.1,286.8 542.5,291.0" fill="#dc5060" stroke="#e88a94" stroke-width="0.3"/>
<polygon points="651.9,249.4 649.3,252.0 637.0,302.5 639.6,299.7" fill="#b9663a"/>
<polygon points="649.3,252.0 642.5,249.8 630.7,300.2 637.0,302.5" fill="#db7d47"/>
<polygon points="542.7,288.8 562.4,284.6 562.1,286.8 542.5,291.0" fill="#b8303e" stroke="#b8303e" stroke-width="0.4"/>
<polygon points="562.4,284.6 565.6,288.9 565.1,292.4 561.9,288.1" fill="#a82a38" stroke="#a82a38" stroke-width="0.4"/>
<polygon points="542.7,288.8 562.4,284.6 565.6,288.9 543.6,290.1" fill="#dc5060" stroke="#e88a94" stroke-width="0.3"/>
<polygon points="612.1,250.8 609.0,253.4 599.1,304.1 602.1,301.3" fill="#b9663a"/>
<polygon points="609.0,253.4 602.5,251.2 593.1,301.8 599.1,304.1" fill="#db7d47"/>
<polygon points="543.8,287.9 565.9,286.7 565.6,288.9 543.6,290.1" fill="#b8303e" stroke="#b8303e" stroke-width="0.4"/>
<polygon points="565.9,286.7 567.0,291.3 566.5,294.8 565.4,290.2" fill="#a82a38" stroke="#a82a38" stroke-width="0.4"/>
<polygon points="543.8,287.9 565.9,286.7 567.0,291.3 544.1,289.2" fill="#dc5060" stroke="#e88a94" stroke-width="0.3"/>
<polygon points="471.7,254.0 467.3,256.7 466.2,307.9 470.4,304.9" fill="#b9663a"/>
<polygon points="467.3,256.7 461.8,254.5 461.2,305.4 466.2,307.9" fill="#db7d47"/>
<polygon points="544.3,287.0 567.4,289.1 567.0,291.3 544.1,289.2" fill="#b8303e" stroke="#b8303e" stroke-width="0.4"/>
<polygon points="567.4,289.1 566.3,293.5 565.8,297.1 566.8,292.6" fill="#a82a38" stroke="#a82a38" stroke-width="0.4"/>
<polygon points="544.3,287.0 567.4,289.1 566.3,293.5 543.9,288.2" fill="#dc5060" stroke="#e88a94" stroke-width="0.3"/>
<polygon points="529.5,254.4 507.5,249.7 507.4,252.0 529.2,256.7" fill="#b8303e" stroke="#b8303e" stroke-width="0.4"/>
<polygon points="507.5,249.7 511.4,246.3 511.2,250.0 507.3,253.4" fill="#a82a38" stroke="#a82a38" stroke-width="0.4"/>
<polygon points="529.5,254.4 507.5,249.7 511.4,246.3 530.5,253.4" fill="#dc5060" stroke="#e88a94" stroke-width="0.3"/>
<polygon points="544.2,286.0 566.7,291.3 566.3,293.5 543.9,288.2" fill="#b8303e" stroke="#b8303e" stroke-width="0.4"/>
<polygon points="566.7,291.3 563.4,295.3 562.9,298.9 566.1,294.9" fill="#a82a38" stroke="#a82a38" stroke-width="0.4"/>
<polygon points="544.2,286.0 566.7,291.3 563.4,295.3 543.2,287.1" fill="#dc5060" stroke="#e88a94" stroke-width="0.3"/>
<polygon points="528.8,257.9 505.4,256.0 505.3,258.3 528.5,260.2" fill="#b8303e" stroke="#b8303e" stroke-width="0.4"/>
<polygon points="505.4,256.0 507.4,252.0 507.1,255.8 505.2,259.7" fill="#a82a38" stroke="#a82a38" stroke-width="0.4"/>
<polygon points="528.8,257.9 505.4,256.0 507.4,252.0 529.2,256.7" fill="#dc5060" stroke="#e88a94" stroke-width="0.3"/>
<polygon points="528.7,261.5 505.6,262.6 505.4,264.9 528.5,263.8" fill="#b8303e" stroke="#b8303e" stroke-width="0.4"/>
<polygon points="505.6,262.6 505.3,258.3 505.0,262.0 505.3,266.3" fill="#a82a38" stroke="#a82a38" stroke-width="0.4"/>
<polygon points="528.7,261.5 505.6,262.6 505.3,258.3 528.5,260.2" fill="#dc5060" stroke="#e88a94" stroke-width="0.3"/>
<polygon points="543.5,284.9 563.7,293.0 563.4,295.3 543.2,287.1" fill="#b8303e" stroke="#b8303e" stroke-width="0.4"/>
<polygon points="563.7,293.0 558.4,296.3 557.8,300.0 563.2,296.7" fill="#a82a38" stroke="#a82a38" stroke-width="0.4"/>
<polygon points="543.5,284.9 563.7,293.0 558.4,296.3 541.9,285.7" fill="#dc5060" stroke="#e88a94" stroke-width="0.3"/>
<polygon points="529.3,265.0 507.9,269.2 507.7,271.6 529.1,267.4" fill="#b8303e" stroke="#b8303e" stroke-width="0.4"/>
<polygon points="507.9,269.2 505.4,264.9 505.1,268.7 507.6,273.0" fill="#a82a38" stroke="#a82a38" stroke-width="0.4"/>
<polygon points="529.3,265.0 507.9,269.2 505.4,264.9 528.5,263.8" fill="#dc5060" stroke="#e88a94" stroke-width="0.3"/>
<polygon points="542.2,283.5 558.7,294.0 558.4,296.3 541.9,285.7" fill="#b8303e" stroke="#b8303e" stroke-width="0.4"/>
<polygon points="558.7,294.0 551.6,296.3 551.1,300.0 558.2,297.7" fill="#a82a38" stroke="#a82a38" stroke-width="0.4"/>
<polygon points="542.2,283.5 558.7,294.0 551.6,296.3 540.2,284.1" fill="#dc5060" stroke="#e88a94" stroke-width="0.3"/>
<polygon points="530.4,268.5 512.4,275.6 512.2,278.0 530.2,270.8" fill="#b8303e" stroke="#b8303e" stroke-width="0.4"/>
<polygon points="512.4,275.6 507.7,271.6 507.5,275.3 512.1,279.4" fill="#a82a38" stroke="#a82a38" stroke-width="0.4"/>
<polygon points="530.4,268.5 512.4,275.6 507.7,271.6 529.1,267.4" fill="#dc5060" stroke="#e88a94" stroke-width="0.3"/>
<polygon points="573.5,267.0 569.9,269.9 562.0,322.5 565.5,319.2" fill="#b9663a"/>
<polygon points="569.9,269.9 563.3,267.5 556.0,319.8 562.0,322.5" fill="#db7d47"/>
<polygon points="337.2,266.4 331.1,269.3 339.0,321.9 344.6,318.7" fill="#b9663a"/>
<polygon points="331.1,269.3 326.6,266.9 334.7,319.3 339.0,321.9" fill="#db7d47"/>
<polygon points="474.9,267.5 470.2,270.4 469.0,323.1 473.3,319.9" fill="#b9663a"/>
<polygon points="470.2,270.4 464.5,268.0 463.6,320.4 469.0,323.1" fill="#db7d47"/>
<polygon points="540.5,281.8 551.9,294.0 551.6,296.3 540.2,284.1" fill="#b8303e" stroke="#b8303e" stroke-width="0.4"/>
<polygon points="551.9,294.0 543.5,295.1 543.1,298.8 551.4,297.7" fill="#a82a38" stroke="#a82a38" stroke-width="0.4"/>
<polygon points="540.5,281.8 551.9,294.0 543.5,295.1 538.2,282.1" fill="#dc5060" stroke="#e88a94" stroke-width="0.3"/>
<polygon points="532.1,271.7 518.8,281.4 518.6,283.8 531.8,274.1" fill="#b8303e" stroke="#b8303e" stroke-width="0.4"/>
<polygon points="518.8,281.4 512.2,278.0 511.9,281.8 518.4,285.2" fill="#a82a38" stroke="#a82a38" stroke-width="0.4"/>
<polygon points="532.1,271.7 518.8,281.4 512.2,278.0 530.2,270.8" fill="#dc5060" stroke="#e88a94" stroke-width="0.3"/>
<polygon points="538.4,279.8 543.8,292.7 543.5,295.1 538.2,282.1" fill="#b8303e" stroke="#b8303e" stroke-width="0.4"/>
<polygon points="543.8,292.7 534.9,292.5 534.5,296.3 543.3,296.5" fill="#a82a38" stroke="#a82a38" stroke-width="0.4"/>
<polygon points="538.4,279.8 543.8,292.7 534.9,292.5 536.0,279.8" fill="#dc5060" stroke="#e88a94" stroke-width="0.3"/>
<polygon points="534.1,274.7 526.5,286.4 526.3,288.7 533.8,277.1" fill="#b8303e" stroke="#b8303e" stroke-width="0.4"/>
<polygon points="526.5,286.4 518.6,283.8 518.2,287.6 526.2,290.2" fill="#a82a38" stroke="#a82a38" stroke-width="0.4"/>
<polygon points="534.1,274.7 526.5,286.4 518.6,283.8 531.8,274.1" fill="#dc5060" stroke="#e88a94" stroke-width="0.3"/>
<polygon points="524.0,269.1 519.8,272.0 515.3,324.8 519.2,321.6" fill="#b9663a"/>
<polygon points="519.8,272.0 513.7,269.6 509.5,322.1 515.3,324.8" fill="#db7d47"/>
<polygon points="536.2,277.4 535.1,290.2 534.9,292.5 536.0,279.8" fill="#b8303e" stroke="#b8303e" stroke-width="0.4"/>
<polygon points="535.1,290.2 526.3,288.7 526.0,292.5 534.7,294.0" fill="#a82a38" stroke="#a82a38" stroke-width="0.4"/>
<polygon points="536.2,277.4 535.1,290.2 526.3,288.7 533.8,277.1" fill="#dc5060" stroke="#e88a94" stroke-width="0.3"/>
<polygon points="360.7,278.7 354.6,281.8 361.2,335.7 366.8,332.2" fill="#b9663a"/>
<polygon points="354.6,281.8 349.7,279.2 356.6,332.8 361.2,335.7" fill="#db7d47"/>
<polygon points="611.2,295.9 607.6,299.5 596.2,354.9 599.7,351.0" fill="#b9663a"/>
<polygon points="607.6,299.5 600.0,296.5 589.3,351.7 596.2,354.9" fill="#db7d47"/>
<polygon points="411.0,307.6 404.9,311.4 408.3,367.9 413.9,363.8" fill="#b9663a"/>
<polygon points="404.9,311.4 399.0,308.3 402.8,364.5 408.3,367.9" fill="#db7d47"/>
<polygon points="511.8,322.9 506.7,327.1 502.3,384.8 507.1,380.3" fill="#b9663a"/>
<polygon points="506.7,327.1 499.5,323.6 495.7,381.1 502.3,384.8" fill="#db7d47"/>
<polygon points="577.5,331.1 573.1,335.5 563.3,393.8 567.5,389.1" fill="#b9663a"/>
<polygon points="573.1,335.5 565.0,331.9 556.0,389.9 563.3,393.8" fill="#db7d47"/>
<polygon points="499.8,354.3 494.1,359.3 490.4,419.2 495.7,413.9" fill="#b9663a"/>
<polygon points="494.1,359.3 486.4,355.2 483.4,414.8 490.4,419.2" fill="#db7d47"/>
<path d="M230.4 213.3 L379.4 164.1 L419.5 176.5 L269.2 233.7Z M283.1 241.0 L403.1 193.0 L408.8 195.1 L415.2 197.0 L422.1 198.7 L429.6 200.1 L437.5 201.2 L445.8 202.1 L454.3 202.7 L462.9 203.0 L467.9 200.9 L473.1 199.4 L478.7 198.2 L484.7 197.3 L491.0 196.8 L497.4 196.7 L503.9 196.9 L510.3 197.5 L516.5 198.4 L522.4 199.7 L527.9 201.4 L532.8 203.3 L537.2 205.5 L540.8 208.0 L543.6 210.7 L545.5 213.5 L546.4 216.4 L546.2 219.3 L545.0 222.2 L542.6 225.1 L551.5 226.0 L560.3 227.6 L568.8 229.6 L576.9 232.1 L584.5 235.1 L591.5 238.6 L597.8 242.4 L603.1 246.7 L607.4 251.2 L610.5 256.0 L612.3 261.0 L612.8 266.0 L611.7 271.0 L609.1 275.9 L604.9 280.5 L599.2 284.8 L604.9 290.6 L607.7 297.0 L608.4 303.5 L606.9 309.9 L603.2 316.1 L597.2 321.6 L589.0 326.3 L579.0 330.0 L567.6 332.4 L555.1 333.3 L542.1 332.9 L529.3 331.0 L517.2 327.7 L506.3 323.4 L521.3 330.7 L493.1 354.7 L405.0 307.9 L407.4 306.4Z M556.2 243.4 L548.3 241.3 L539.8 240.1 L531.4 240.0 L523.3 240.9 L516.2 242.7 L510.3 245.5 L506.3 249.0 L504.2 253.0 L504.5 257.4 L507.1 261.8 L512.1 265.9 L519.0 269.4 L527.5 272.0 L537.0 273.5 L546.5 273.6 L555.5 272.5 L563.1 270.2 L568.9 267.0 L572.4 263.0 L573.4 258.6 L572.1 254.2 L568.5 250.1 L563.1 246.4 L556.2 243.4Z" fill="#c4cbd2" fill-opacity="0.55" fill-rule="evenodd" stroke="#ffffff" stroke-opacity="0.5" stroke-width="0.6"/>
<path d="M477.1 346.2 L505.7 323.3 L518.9 269.3 M420.2 212.2 L460.9 202.8 M434.6 217.8 L445.4 232.4 L431.1 239.7 M445.4 232.4 L480.9 235.1 M485.0 214.6 L496.7 208.5 L510.7 213.0 L499.2 219.4 L485.0 214.6 M485.0 214.6 L452.4 217.0 M496.7 208.5 L490.2 196.9 M510.7 213.0 L545.1 213.9 M499.2 219.4 L483.0 234.3 M510.7 213.0 L516.0 218.9 L542.3 224.9 M573.0 265.0 L607.3 251.0 M510.4 245.5 L481.4 234.8" stroke="#ffffff" stroke-opacity="0.85" stroke-width="0.8" fill="none"/>
<clipPath id="hc3"><path d="M555.3 244.1 L561.8 246.9 L566.9 250.4 L570.2 254.3 L571.5 258.5 L570.5 262.6 L567.2 266.3 L561.7 269.4 L554.5 271.6 L546.1 272.6 L537.0 272.4 L528.2 271.1 L520.1 268.6 L513.6 265.3 L508.9 261.4 L506.4 257.3 L506.1 253.2 L508.0 249.3 L511.8 246.0 L517.3 243.4 L524.1 241.6 L531.7 240.8 L539.8 241.0 L547.8 242.1 L555.3 244.1Z"/></clipPath><g clip-path="url(#hc3)">
<polygon points="529.3,298.8 519.8,287.6 519.6,289.6 529.1,300.9" fill="#b8303e" stroke="#b8303e" stroke-width="0.4"/>
<polygon points="519.8,287.6 527.1,286.7 526.8,289.9 519.5,290.9" fill="#a82a38" stroke="#a82a38" stroke-width="0.4"/>
<polygon points="529.3,298.8 519.8,287.6 527.1,286.7 531.5,298.5" fill="#dc5060" stroke="#e88a94" stroke-width="0.3"/>
<polygon points="527.2,301.5 513.1,291.6 513.0,293.7 527.0,303.6" fill="#b8303e" stroke="#b8303e" stroke-width="0.4"/>
<polygon points="513.1,291.6 519.6,289.6 519.3,292.9 512.9,294.9" fill="#a82a38" stroke="#a82a38" stroke-width="0.4"/>
<polygon points="527.2,301.5 513.1,291.6 519.6,289.6 529.1,300.9" fill="#dc5060" stroke="#e88a94" stroke-width="0.3"/>
<polygon points="531.7,296.4 527.3,284.6 527.1,286.7 531.5,298.5" fill="#b8303e" stroke="#b8303e" stroke-width="0.4"/>
<polygon points="527.3,284.6 535.0,284.7 534.7,288.0 527.0,287.9" fill="#a82a38" stroke="#a82a38" stroke-width="0.4"/>
<polygon points="531.7,296.4 527.3,284.6 535.0,284.7 534.0,296.4" fill="#dc5060" stroke="#e88a94" stroke-width="0.3"/>
<polygon points="534.2,294.3 535.3,282.7 535.0,284.7 534.0,296.4" fill="#b8303e" stroke="#b8303e" stroke-width="0.4"/>
<polygon points="535.3,282.7 542.9,283.9 542.6,287.2 534.9,286.0" fill="#a82a38" stroke="#a82a38" stroke-width="0.4"/>
<polygon points="534.2,294.3 535.3,282.7 542.9,283.9 536.5,294.7" fill="#dc5060" stroke="#e88a94" stroke-width="0.3"/>
<polygon points="536.7,292.6 543.2,281.8 542.9,283.9 536.5,294.7" fill="#b8303e" stroke="#b8303e" stroke-width="0.4"/>
<polygon points="543.2,281.8 550.4,284.1 549.9,287.4 542.8,285.2" fill="#a82a38" stroke="#a82a38" stroke-width="0.4"/>
<polygon points="536.7,292.6 543.2,281.8 550.4,284.1 538.8,293.2" fill="#dc5060" stroke="#e88a94" stroke-width="0.3"/>
<polygon points="539.1,291.1 550.6,282.0 550.4,284.1 538.8,293.2" fill="#b8303e" stroke="#b8303e" stroke-width="0.4"/>
<polygon points="550.6,282.0 556.9,285.1 556.4,288.4 550.2,285.3" fill="#a82a38" stroke="#a82a38" stroke-width="0.4"/>
<polygon points="539.1,291.1 550.6,282.0 556.9,285.1 540.9,292.0" fill="#dc5060" stroke="#e88a94" stroke-width="0.3"/>
<polygon points="541.1,289.9 557.2,282.9 556.9,285.1 540.9,292.0" fill="#b8303e" stroke="#b8303e" stroke-width="0.4"/>
<polygon points="557.2,282.9 562.1,286.8 561.6,290.2 556.7,286.3" fill="#a82a38" stroke="#a82a38" stroke-width="0.4"/>
<polygon points="541.1,289.9 557.2,282.9 562.1,286.8 542.5,291.0" fill="#dc5060" stroke="#e88a94" stroke-width="0.3"/>
<polygon points="542.7,288.8 562.4,284.6 562.1,286.8 542.5,291.0" fill="#b8303e" stroke="#b8303e" stroke-width="0.4"/>
<polygon points="562.4,284.6 565.6,288.9 565.1,292.4 561.9,288.1" fill="#a82a38" stroke="#a82a38" stroke-width="0.4"/>
<polygon points="542.7,288.8 562.4,284.6 565.6,288.9 543.6,290.1" fill="#dc5060" stroke="#e88a94" stroke-width="0.3"/>
<polygon points="543.8,287.9 565.9,286.7 565.6,288.9 543.6,290.1" fill="#b8303e" stroke="#b8303e" stroke-width="0.4"/>
<polygon points="565.9,286.7 567.0,291.3 566.5,294.8 565.4,290.2" fill="#a82a38" stroke="#a82a38" stroke-width="0.4"/>
<polygon points="543.8,287.9 565.9,286.7 567.0,291.3 544.1,289.2" fill="#dc5060" stroke="#e88a94" stroke-width="0.3"/>
<polygon points="544.3,287.0 567.4,289.1 567.0,291.3 544.1,289.2" fill="#b8303e" stroke="#b8303e" stroke-width="0.4"/>
<polygon points="567.4,289.1 566.3,293.5 565.8,297.1 566.8,292.6" fill="#a82a38" stroke="#a82a38" stroke-width="0.4"/>
<polygon points="544.3,287.0 567.4,289.1 566.3,293.5 543.9,288.2" fill="#dc5060" stroke="#e88a94" stroke-width="0.3"/>
<polygon points="529.5,254.4 507.5,249.7 507.4,252.0 529.2,256.7" fill="#b8303e" stroke="#b8303e" stroke-width="0.4"/>
<polygon points="507.5,249.7 511.4,246.3 511.2,250.0 507.3,253.4" fill="#a82a38" stroke="#a82a38" stroke-width="0.4"/>
<polygon points="529.5,254.4 507.5,249.7 511.4,246.3 530.5,253.4" fill="#dc5060" stroke="#e88a94" stroke-width="0.3"/>
<polygon points="544.2,286.0 566.7,291.3 566.3,293.5 543.9,288.2" fill="#b8303e" stroke="#b8303e" stroke-width="0.4"/>
<polygon points="566.7,291.3 563.4,295.3 562.9,298.9 566.1,294.9" fill="#a82a38" stroke="#a82a38" stroke-width="0.4"/>
<polygon points="544.2,286.0 566.7,291.3 563.4,295.3 543.2,287.1" fill="#dc5060" stroke="#e88a94" stroke-width="0.3"/>
<polygon points="528.8,257.9 505.4,256.0 505.3,258.3 528.5,260.2" fill="#b8303e" stroke="#b8303e" stroke-width="0.4"/>
<polygon points="505.4,256.0 507.4,252.0 507.1,255.8 505.2,259.7" fill="#a82a38" stroke="#a82a38" stroke-width="0.4"/>
<polygon points="528.8,257.9 505.4,256.0 507.4,252.0 529.2,256.7" fill="#dc5060" stroke="#e88a94" stroke-width="0.3"/>
<polygon points="528.7,261.5 505.6,262.6 505.4,264.9 528.5,263.8" fill="#b8303e" stroke="#b8303e" stroke-width="0.4"/>
<polygon points="505.6,262.6 505.3,258.3 505.0,262.0 505.3,266.3" fill="#a82a38" stroke="#a82a38" stroke-width="0.4"/>
<polygon points="528.7,261.5 505.6,262.6 505.3,258.3 528.5,260.2" fill="#dc5060" stroke="#e88a94" stroke-width="0.3"/>
<polygon points="543.5,284.9 563.7,293.0 563.4,295.3 543.2,287.1" fill="#b8303e" stroke="#b8303e" stroke-width="0.4"/>
<polygon points="563.7,293.0 558.4,296.3 557.8,300.0 563.2,296.7" fill="#a82a38" stroke="#a82a38" stroke-width="0.4"/>
<polygon points="543.5,284.9 563.7,293.0 558.4,296.3 541.9,285.7" fill="#dc5060" stroke="#e88a94" stroke-width="0.3"/>
<polygon points="529.3,265.0 507.9,269.2 507.7,271.6 529.1,267.4" fill="#b8303e" stroke="#b8303e" stroke-width="0.4"/>
<polygon points="507.9,269.2 505.4,264.9 505.1,268.7 507.6,273.0" fill="#a82a38" stroke="#a82a38" stroke-width="0.4"/>
<polygon points="529.3,265.0 507.9,269.2 505.4,264.9 528.5,263.8" fill="#dc5060" stroke="#e88a94" stroke-width="0.3"/>
<polygon points="542.2,283.5 558.7,294.0 558.4,296.3 541.9,285.7" fill="#b8303e" stroke="#b8303e" stroke-width="0.4"/>
<polygon points="558.7,294.0 551.6,296.3 551.1,300.0 558.2,297.7" fill="#a82a38" stroke="#a82a38" stroke-width="0.4"/>
<polygon points="542.2,283.5 558.7,294.0 551.6,296.3 540.2,284.1" fill="#dc5060" stroke="#e88a94" stroke-width="0.3"/>
<polygon points="530.4,268.5 512.4,275.6 512.2,278.0 530.2,270.8" fill="#b8303e" stroke="#b8303e" stroke-width="0.4"/>
<polygon points="512.4,275.6 507.7,271.6 507.5,275.3 512.1,279.4" fill="#a82a38" stroke="#a82a38" stroke-width="0.4"/>
<polygon points="530.4,268.5 512.4,275.6 507.7,271.6 529.1,267.4" fill="#dc5060" stroke="#e88a94" stroke-width="0.3"/>
<polygon points="540.5,281.8 551.9,294.0 551.6,296.3 540.2,284.1" fill="#b8303e" stroke="#b8303e" stroke-width="0.4"/>
<polygon points="551.9,294.0 543.5,295.1 543.1,298.8 551.4,297.7" fill="#a82a38" stroke="#a82a38" stroke-width="0.4"/>
<polygon points="540.5,281.8 551.9,294.0 543.5,295.1 538.2,282.1" fill="#dc5060" stroke="#e88a94" stroke-width="0.3"/>
<polygon points="532.1,271.7 518.8,281.4 518.6,283.8 531.8,274.1" fill="#b8303e" stroke="#b8303e" stroke-width="0.4"/>
<polygon points="518.8,281.4 512.2,278.0 511.9,281.8 518.4,285.2" fill="#a82a38" stroke="#a82a38" stroke-width="0.4"/>
<polygon points="532.1,271.7 518.8,281.4 512.2,278.0 530.2,270.8" fill="#dc5060" stroke="#e88a94" stroke-width="0.3"/>
<polygon points="538.4,279.8 543.8,292.7 543.5,295.1 538.2,282.1" fill="#b8303e" stroke="#b8303e" stroke-width="0.4"/>
<polygon points="543.8,292.7 534.9,292.5 534.5,296.3 543.3,296.5" fill="#a82a38" stroke="#a82a38" stroke-width="0.4"/>
<polygon points="538.4,279.8 543.8,292.7 534.9,292.5 536.0,279.8" fill="#dc5060" stroke="#e88a94" stroke-width="0.3"/>
<polygon points="534.1,274.7 526.5,286.4 526.3,288.7 533.8,277.1" fill="#b8303e" stroke="#b8303e" stroke-width="0.4"/>
<polygon points="526.5,286.4 518.6,283.8 518.2,287.6 526.2,290.2" fill="#a82a38" stroke="#a82a38" stroke-width="0.4"/>
<polygon points="534.1,274.7 526.5,286.4 518.6,283.8 531.8,274.1" fill="#dc5060" stroke="#e88a94" stroke-width="0.3"/>
<polygon points="536.2,277.4 535.1,290.2 534.9,292.5 536.0,279.8" fill="#b8303e" stroke="#b8303e" stroke-width="0.4"/>
<polygon points="535.1,290.2 526.3,288.7 526.0,292.5 534.7,294.0" fill="#a82a38" stroke="#a82a38" stroke-width="0.4"/>
<polygon points="536.2,277.4 535.1,290.2 526.3,288.7 533.8,277.1" fill="#dc5060" stroke="#e88a94" stroke-width="0.3"/>
</g>
<polygon points="377.8,164.6 417.8,177.1 418.0,181.9 378.1,169.1" fill="#db7d47"/>
<polygon points="417.8,177.1 421.1,175.9 421.3,180.6 418.0,181.9" fill="#b9663a"/>
<polygon points="377.8,164.6 417.8,177.1 421.1,175.9 381.1,163.5" fill="#e68f58"/>
<polygon points="231.8,214.0 380.9,164.5 381.3,169.0 233.2,219.4" fill="#b9663a"/>
<polygon points="229.0,212.5 231.8,214.0 233.2,219.4 230.4,217.9" fill="#db7d47"/>
<polygon points="231.8,214.0 380.9,164.5 378.0,163.6 229.0,212.5" fill="#e68f58"/>
<polygon points="322.9,182.7 363.2,197.9 363.7,203.1 323.7,187.6" fill="#db7d47"/>
<polygon points="363.2,197.9 367.2,196.4 367.7,201.5 363.7,203.1" fill="#b9663a"/>
<polygon points="322.9,182.7 363.2,197.9 367.2,196.4 327.0,181.4" fill="#e68f58"/>
<polygon points="401.2,193.7 406.9,195.8 407.2,200.9 401.5,198.8" fill="#da7c47"/>
<polygon points="406.9,195.8 410.7,194.3 410.9,199.4 407.2,200.9" fill="#b9663a"/>
<polygon points="401.2,193.7 406.9,195.8 410.7,194.3 405.0,192.3" fill="#e68f58"/>
<polygon points="407.1,195.9 413.5,197.8 413.7,202.9 407.4,201.0" fill="#d97b46"/>
<polygon points="413.5,197.8 416.9,196.2 417.1,201.3 413.7,202.9" fill="#b9663a"/>
<polygon points="407.1,195.9 413.5,197.8 416.9,196.2 410.5,194.3" fill="#e68f58"/>
<polygon points="494.1,197.7 505.9,198.0 505.5,203.2 493.9,202.8" fill="#c77040"/>
<polygon points="494.1,197.7 505.9,198.0 505.9,196.0 494.3,195.7" fill="#e68f58"/>
<polygon points="483.4,198.5 494.8,197.7 494.6,202.8 483.2,203.7" fill="#c16b3d"/>
<polygon points="482.3,196.6 483.4,198.5 483.2,203.7 482.1,201.7" fill="#c56e3f"/>
<polygon points="483.4,198.5 494.8,197.7 493.6,195.7 482.3,196.6" fill="#e68f58"/>
<polygon points="505.2,198.0 516.5,199.5 516.2,204.7 504.9,203.1" fill="#d07543"/>
<polygon points="516.5,199.5 517.9,197.6 517.5,202.8 516.2,204.7" fill="#bb673b"/>
<polygon points="505.2,198.0 516.5,199.5 517.9,197.6 506.6,196.1" fill="#e68f58"/>
<polygon points="413.6,197.8 420.6,199.5 420.8,204.7 413.9,203.0" fill="#d67945"/>
<polygon points="420.6,199.5 423.6,197.8 423.8,202.9 420.8,204.7" fill="#b9663a"/>
<polygon points="413.6,197.8 420.6,199.5 423.6,197.8 416.7,196.1" fill="#e68f58"/>
<polygon points="299.0,190.6 339.0,207.1 339.7,212.4 299.8,195.7" fill="#db7d47"/>
<polygon points="339.0,207.1 343.4,205.5 344.1,210.7 339.7,212.4" fill="#b9663a"/>
<polygon points="299.0,190.6 339.0,207.1 343.4,205.5 303.3,189.2" fill="#e68f58"/>
<polygon points="473.6,200.5 484.1,198.4 483.9,203.6 473.5,205.7" fill="#bc683b"/>
<polygon points="471.2,198.7 473.6,200.5 473.5,205.7 471.1,203.8" fill="#cd7442"/>
<polygon points="473.6,200.5 484.1,198.4 481.6,196.6 471.2,198.7" fill="#e68f58"/>
<polygon points="420.8,199.6 428.3,201.0 428.4,206.2 421.0,204.7" fill="#d37744"/>
<polygon points="428.3,201.0 430.9,199.2 431.0,204.3 428.4,206.2" fill="#ba673a"/>
<polygon points="420.8,199.6 428.3,201.0 430.9,199.2 423.4,197.7" fill="#e68f58"/>
<polygon points="515.9,199.4 526.2,202.1 525.8,207.3 515.5,204.6" fill="#d97b46"/>
<polygon points="526.2,202.1 528.8,200.4 528.4,205.6 525.8,207.3" fill="#b9663a"/>
<polygon points="515.9,199.4 526.2,202.1 528.8,200.4 518.5,197.8" fill="#e68f58"/>
<polygon points="428.5,201.1 436.5,202.2 436.5,207.4 428.7,206.3" fill="#d07543"/>
<polygon points="436.5,202.2 438.5,200.3 438.6,205.5 436.5,207.4" fill="#bb673b"/>
<polygon points="428.5,201.1 436.5,202.2 438.5,200.3 430.7,199.1" fill="#e68f58"/>
<polygon points="465.4,203.5 474.2,200.3 474.1,205.5 465.3,208.7" fill="#b9663a"/>
<polygon points="461.8,201.9 465.4,203.5 465.3,208.7 461.8,207.1" fill="#d67a45"/>
<polygon points="465.4,203.5 474.2,200.3 470.7,198.8 461.8,201.9" fill="#e68f58"/>
<polygon points="267.6,232.8 270.9,234.6 272.1,240.3 268.8,238.6" fill="#db7d47"/>
<polygon points="270.9,234.6 421.1,177.0 421.3,181.8 272.1,240.3" fill="#b9663a"/>
<polygon points="417.8,176.0 267.6,232.8 270.9,234.6 421.1,177.0" fill="#e68f58"/>
<polygon points="436.7,202.3 445.0,203.1 445.0,208.4 436.8,207.5" fill="#cd7342"/>
<polygon points="445.0,203.1 446.5,201.1 446.6,206.3 445.0,208.4" fill="#bc683b"/>
<polygon points="436.7,202.3 445.0,203.1 446.5,201.1 438.3,200.3" fill="#e68f58"/>
<polygon points="445.2,203.2 453.8,203.7 453.8,209.0 445.3,208.4" fill="#ca7241"/>
<polygon points="453.8,203.7 454.8,201.7 454.8,206.9 453.8,209.0" fill="#be693c"/>
<polygon points="445.2,203.2 453.8,203.7 454.8,201.7 446.3,201.1" fill="#e68f58"/>
<polygon points="454.0,203.8 462.7,204.0 462.6,209.3 454.0,209.0" fill="#c77040"/>
<polygon points="462.7,204.0 463.2,201.9 463.1,207.1 462.6,209.3" fill="#bf6a3c"/>
<polygon points="454.0,203.8 462.7,204.0 463.2,201.9 454.5,201.7" fill="#e68f58"/>
<polygon points="525.7,201.9 534.3,205.6 533.8,210.9 525.2,207.1" fill="#d47844"/>
<polygon points="534.3,205.6 538.0,204.3 537.5,209.5 533.8,210.9" fill="#ba663a"/>
<polygon points="525.7,201.9 534.3,205.6 538.0,204.3 529.4,200.6" fill="#e68f58"/>
<polygon points="459.3,207.3 465.8,203.3 465.7,208.5 459.2,212.7" fill="#b9663a"/>
<polygon points="454.7,206.2 459.3,207.3 459.2,212.7 454.7,211.5" fill="#d77a45"/>
<polygon points="459.3,207.3 465.8,203.3 461.4,202.1 454.7,206.2" fill="#e68f58"/>
<polygon points="533.8,205.4 540.1,209.9 539.6,215.3 533.3,210.6" fill="#cc7341"/>
<polygon points="540.1,209.9 544.8,209.0 544.3,214.4 539.6,215.3" fill="#bd683b"/>
<polygon points="533.8,205.4 540.1,209.9 544.8,209.0 538.5,204.5" fill="#e68f58"/>
<polygon points="383.9,200.7 432.7,218.7 432.8,224.2 384.3,205.9" fill="#db7d47"/>
<polygon points="432.7,218.7 436.6,216.9 436.7,222.3 432.8,224.2" fill="#b9663a"/>
<polygon points="383.9,200.7 432.7,218.7 436.6,216.9 387.9,199.1" fill="#e68f58"/>
<polygon points="455.8,211.9 459.6,207.1 459.5,212.4 455.7,217.3" fill="#bc683b"/>
<polygon points="450.5,211.2 455.8,211.9 455.7,217.3 450.5,216.6" fill="#ce7442"/>
<polygon points="455.8,211.9 459.6,207.1 454.4,206.4 450.5,211.2" fill="#e68f58"/>
<polygon points="539.8,209.6 543.2,214.7 542.6,220.1 539.3,215.0" fill="#c46e3e"/>
<polygon points="543.2,214.7 548.6,214.4 548.0,219.8 542.6,220.1" fill="#c26c3d"/>
<polygon points="539.8,209.6 543.2,214.7 548.6,214.4 545.1,209.3" fill="#e68f58"/>
<polygon points="260.1,203.5 299.6,222.1 300.6,227.7 261.3,208.7" fill="#db7d47"/>
<polygon points="299.6,222.1 304.6,220.2 305.6,225.8 300.6,227.7" fill="#b9663a"/>
<polygon points="260.1,203.5 299.6,222.1 304.6,220.2 265.0,201.8" fill="#e68f58"/>
<polygon points="455.3,216.8 455.9,211.6 455.9,217.0 455.3,222.3" fill="#c06b3d"/>
<polygon points="449.7,216.8 455.3,216.8 455.3,222.3 449.7,222.2" fill="#c66f3f"/>
<polygon points="455.3,216.8 455.9,211.6 450.4,211.5 449.7,216.8" fill="#e68f58"/>
<polygon points="284.9,241.9 404.9,193.6 405.1,198.7 286.1,247.8" fill="#b9663a"/>
<polygon points="281.4,240.1 284.9,241.9 286.1,247.8 282.6,245.9" fill="#db7d47"/>
<polygon points="284.9,241.9 404.9,193.6 401.3,192.4 281.4,240.1" fill="#e68f58"/>
<polygon points="543.1,214.4 543.2,219.7 542.6,225.2 542.5,219.8" fill="#be6a3c"/>
<polygon points="543.2,219.7 548.9,220.0 548.3,225.6 542.6,225.2" fill="#c97140"/>
<polygon points="543.1,214.4 543.2,219.7 548.9,220.0 548.8,214.7" fill="#e68f58"/>
<polygon points="434.8,219.0 452.7,218.2 452.7,223.7 434.9,224.5" fill="#c36c3e"/>
<polygon points="434.5,216.6 434.8,219.0 434.9,224.5 434.6,222.1" fill="#c36d3e"/>
<polygon points="434.8,219.0 452.7,218.2 452.2,215.8 434.5,216.6" fill="#e68f58"/>
<polygon points="449.7,217.1 452.5,222.4 452.5,228.0 449.7,222.6" fill="#c76f3f"/>
<polygon points="452.5,222.4 458.2,221.8 458.1,227.4 452.5,228.0" fill="#c06a3d"/>
<polygon points="458.2,221.8 455.3,216.5 449.7,217.1 452.5,222.4" fill="#e68f58"/>
<polygon points="539.8,224.6 545.5,225.5 544.9,231.2 539.2,230.1" fill="#d17643"/>
<polygon points="545.5,225.5 548.9,220.4 548.2,225.9 544.9,231.2" fill="#ba673b"/>
<polygon points="543.3,219.4 539.8,224.6 545.5,225.5 548.9,220.4" fill="#e68f58"/>
<polygon points="227.7,214.2 266.4,234.7 267.7,240.5 229.2,219.6" fill="#db7d47"/>
<polygon points="266.4,234.7 272.0,232.6 273.2,238.4 267.7,240.5" fill="#b9663a"/>
<polygon points="272.0,232.6 233.1,212.4 227.7,214.2 266.4,234.7" fill="#e68f58"/>
<polygon points="522.1,226.1 534.6,225.9 534.1,231.5 521.7,231.7" fill="#c46e3e"/>
<polygon points="521.3,223.5 522.1,226.1 521.7,231.7 520.9,229.1" fill="#c26c3d"/>
<polygon points="522.1,226.1 534.6,225.9 533.7,223.3 521.3,223.5" fill="#e68f58"/>
<polygon points="452.8,222.7 459.1,227.7 459.0,233.4 452.8,228.3" fill="#cf7542"/>
<polygon points="459.1,227.7 464.2,226.5 464.1,232.1 459.0,233.4" fill="#bb673b"/>
<polygon points="464.2,226.5 457.9,221.5 452.8,222.7 459.1,227.7" fill="#e68f58"/>
<polygon points="534.0,225.8 546.7,226.7 546.0,232.3 533.5,231.5" fill="#ca7140"/>
<polygon points="534.3,223.3 534.0,225.8 533.5,231.5 533.7,228.9" fill="#be693c"/>
<polygon points="534.0,225.8 546.7,226.7 546.8,224.2 534.3,223.3" fill="#e68f58"/>
<polygon points="510.7,227.3 522.7,226.0 522.2,231.7 510.3,232.9" fill="#c06b3d"/>
<polygon points="508.9,224.8 510.7,227.3 510.3,232.9 508.5,230.4" fill="#c76f3f"/>
<polygon points="510.7,227.3 522.7,226.0 520.8,223.6 508.9,224.8" fill="#e68f58"/>
<polygon points="546.1,226.6 558.6,228.6 557.9,234.2 545.5,232.3" fill="#d07543"/>
<polygon points="558.6,228.6 559.7,226.1 559.0,231.7 557.9,234.2" fill="#bb673b"/>
<polygon points="546.1,226.6 558.6,228.6 559.7,226.1 547.4,224.2" fill="#e68f58"/>
<polygon points="500.1,229.6 511.3,227.2 510.8,232.9 499.8,235.2" fill="#bc683b"/>
<polygon points="497.3,227.2 500.1,229.6 499.8,235.2 497.0,232.8" fill="#cc7341"/>
<polygon points="500.1,229.6 511.3,227.2 508.4,224.9 497.3,227.2" fill="#e68f58"/>
<polygon points="558.0,228.5 570.1,231.4 569.2,237.1 557.3,234.1" fill="#d67a45"/>
<polygon points="570.1,231.4 572.2,229.1 571.4,234.8 569.2,237.1" fill="#b9663a"/>
<polygon points="558.0,228.5 570.1,231.4 572.2,229.1 560.3,226.2" fill="#e68f58"/>
<polygon points="459.6,228.0 469.0,232.2 468.9,238.0 459.5,233.7" fill="#d87b46"/>
<polygon points="469.0,232.2 473.2,230.3 473.1,236.0 468.9,238.0" fill="#b9663a"/>
<polygon points="473.2,230.3 463.8,226.2 459.6,228.0 469.0,232.2" fill="#e68f58"/>
<polygon points="490.6,232.8 500.6,229.4 500.3,235.1 490.3,238.5" fill="#ba673a"/>
<polygon points="486.9,230.6 490.6,232.8 490.3,238.5 486.6,236.3" fill="#d27744"/>
<polygon points="490.6,232.8 500.6,229.4 496.8,227.3 486.9,230.6" fill="#e68f58"/>
<polygon points="569.5,231.2 580.7,235.2 579.8,240.9 568.7,236.9" fill="#d97c46"/>
<polygon points="580.7,235.2 583.9,233.2 583.0,238.9 579.8,240.9" fill="#b9663a"/>
<polygon points="569.5,231.2 580.7,235.2 583.9,233.2 572.8,229.3" fill="#e68f58"/>
<polygon points="469.7,232.5 481.7,235.5 481.5,241.3 469.6,238.2" fill="#d57945"/>
<polygon points="481.7,235.5 484.5,233.1 484.3,238.8 481.5,241.3" fill="#ba663a"/>
<polygon points="484.5,233.1 472.6,230.1 469.7,232.5 481.7,235.5" fill="#e68f58"/>
<polygon points="482.5,236.9 491.0,232.6 490.7,238.3 482.3,242.7" fill="#b9663a"/>
<polygon points="477.9,235.0 482.5,236.9 482.3,242.7 477.7,240.8" fill="#d97c46"/>
<polygon points="482.5,236.9 491.0,232.6 486.5,230.8 477.9,235.0" fill="#e68f58"/>
<polygon points="580.2,235.0 590.2,239.8 589.2,245.7 579.3,240.7" fill="#d37744"/>
<polygon points="590.2,239.8 594.3,238.1 593.3,244.0 589.2,245.7" fill="#ba673a"/>
<polygon points="580.2,235.0 590.2,239.8 594.3,238.1 584.4,233.4" fill="#e68f58"/>
<polygon points="558.9,244.4 576.5,231.9 575.6,237.7 558.2,250.3" fill="#b9663a"/>
<polygon points="553.4,242.5 558.9,244.4 558.2,250.3 552.7,248.4" fill="#db7d47"/>
<polygon points="558.9,244.4 576.5,231.9 571.2,230.2 553.4,242.5" fill="#e68f58"/>
<polygon points="476.1,241.9 482.9,236.7 482.6,242.5 476.0,247.7" fill="#b9663a"/>
<polygon points="470.8,240.3 476.1,241.9 476.0,247.7 470.7,246.2" fill="#d67a45"/>
<polygon points="476.1,241.9 482.9,236.7 477.6,235.2 470.8,240.3" fill="#e68f58"/>
<polygon points="313.6,228.8 362.7,252.0 363.3,258.0 314.6,234.5" fill="#db7d47"/>
<polygon points="362.7,252.0 367.7,249.6 368.3,255.6 363.3,258.0" fill="#b9663a"/>
<polygon points="313.6,228.8 362.7,252.0 367.7,249.6 318.6,226.8" fill="#e68f58"/>
<polygon points="481.4,235.0 508.4,246.6 508.0,252.5 481.2,240.7" fill="#d87b46"/>
<polygon points="508.4,246.6 512.4,244.4 512.0,250.3 508.0,252.5" fill="#b9663a"/>
<polygon points="481.4,235.0 508.4,246.6 512.4,244.4 485.5,233.0" fill="#e68f58"/>
<polygon points="531.4,241.4 544.2,242.0 543.5,247.9 530.8,247.3" fill="#c87040"/>
<polygon points="531.3,238.6 531.4,241.4 530.8,247.3 530.8,244.4" fill="#bf6a3c"/>
<polygon points="531.4,241.4 544.2,242.0 544.0,239.2 531.3,238.6" fill="#e68f58"/>
<polygon points="334.0,267.8 436.7,218.6 436.8,224.1 334.9,274.0" fill="#b9663a"/>
<polygon points="329.8,265.6 334.0,267.8 334.9,274.0 330.7,271.8" fill="#db7d47"/>
<polygon points="334.0,267.8 436.7,218.6 432.6,217.0 329.8,265.6" fill="#e68f58"/>
<polygon points="520.8,243.1 532.6,241.4 532.0,247.2 520.3,249.0" fill="#bf6a3c"/>
<polygon points="518.4,240.3 520.8,243.1 520.3,249.0 517.9,246.1" fill="#c87040"/>
<polygon points="520.8,243.1 532.6,241.4 530.1,238.6 518.4,240.3" fill="#e68f58"/>
<polygon points="589.7,239.6 598.1,245.2 597.1,251.1 588.8,245.4" fill="#cc7341"/>
<polygon points="598.1,245.2 603.2,244.0 602.1,249.9 597.1,251.1" fill="#bc683b"/>
<polygon points="589.7,239.6 598.1,245.2 603.2,244.0 594.8,238.4" fill="#e68f58"/>
<polygon points="543.0,241.9 555.1,244.7 554.4,250.6 542.3,247.7" fill="#d47944"/>
<polygon points="555.1,244.7 557.2,242.1 556.5,248.0 554.4,250.6" fill="#ba663a"/>
<polygon points="543.0,241.9 555.1,244.7 557.2,242.1 545.2,239.3" fill="#e68f58"/>
<polygon points="405.8,231.5 464.7,255.5 464.6,261.6 406.1,237.2" fill="#db7d47"/>
<polygon points="464.7,255.5 468.9,253.0 468.7,259.1 464.6,261.6" fill="#b9663a"/>
<polygon points="405.8,231.5 464.7,255.5 468.9,253.0 410.1,229.5" fill="#e68f58"/>
<polygon points="512.5,246.6 521.8,242.8 521.3,248.7 512.1,252.6" fill="#ba663a"/>
<polygon points="508.2,244.3 512.5,246.6 512.1,252.6 507.8,250.2" fill="#d47944"/>
<polygon points="512.5,246.6 521.8,242.8 517.4,240.6 508.2,244.3" fill="#e68f58"/>
<polygon points="471.8,247.6 476.4,241.6 476.2,247.5 471.7,253.5" fill="#bb673b"/>
<polygon points="465.9,246.5 471.8,247.6 471.7,253.5 465.7,252.4" fill="#d07543"/>
<polygon points="471.8,247.6 476.4,241.6 470.5,240.6 465.9,246.5" fill="#e68f58"/>
<polygon points="385.6,241.1 408.9,251.2 409.2,257.2 386.1,246.9" fill="#db7d47"/>
<polygon points="408.9,251.2 413.5,248.8 413.8,254.8 409.2,257.2" fill="#b9663a"/>
<polygon points="385.6,241.1 408.9,251.2 413.5,248.8 390.3,238.9" fill="#e68f58"/>
<polygon points="554.0,244.4 563.9,249.1 563.0,255.1 553.3,250.3" fill="#d47944"/>
<polygon points="563.9,249.1 568.1,247.2 567.3,253.1 563.0,255.1" fill="#ba663a"/>
<polygon points="554.0,244.4 563.9,249.1 568.1,247.2 558.3,242.5" fill="#e68f58"/>
<polygon points="310.6,255.5 343.9,240.8 344.6,246.6 311.6,261.5" fill="#b9663a"/>
<polygon points="306.7,253.4 310.6,255.5 311.6,261.5 307.8,259.5" fill="#db7d47"/>
<polygon points="310.6,255.5 343.9,240.8 340.0,239.0 306.7,253.4" fill="#e68f58"/>
<polygon points="597.8,245.0 604.2,251.3 603.1,257.3 596.7,250.9" fill="#c76f3f"/>
<polygon points="604.2,251.3 610.1,250.5 608.9,256.5 603.1,257.3" fill="#c06b3d"/>
<polygon points="597.8,245.0 604.2,251.3 610.1,250.5 603.6,244.3" fill="#e68f58"/>
<polygon points="507.9,251.7 513.3,246.2 512.8,252.1 507.5,257.7" fill="#ba663a"/>
<polygon points="502.0,250.2 507.9,251.7 507.5,257.7 501.7,256.2" fill="#d47944"/>
<polygon points="507.9,251.7 513.3,246.2 507.5,244.8 502.0,250.2" fill="#e68f58"/>
<polygon points="608.4,252.6 648.5,251.2 647.1,257.2 607.2,258.6" fill="#c46d3e"/>
<polygon points="606.3,249.5 608.4,252.6 607.2,258.6 605.1,255.5" fill="#c26c3e"/>
<polygon points="608.4,252.6 648.5,251.2 646.0,248.1 606.3,249.5" fill="#e68f58"/>
<polygon points="469.9,253.8 472.0,247.3 471.8,253.2 469.7,259.9" fill="#be693c"/>
<polygon points="463.4,253.3 469.9,253.8 469.7,259.9 463.3,259.3" fill="#ca7140"/>
<polygon points="469.9,253.8 472.0,247.3 465.7,246.8 463.4,253.3" fill="#e68f58"/>
<polygon points="563.1,248.6 569.1,254.7 568.2,260.7 562.3,254.6" fill="#c87040"/>
<polygon points="569.1,254.7 575.0,253.8 574.1,259.8 568.2,260.7" fill="#bf6a3c"/>
<polygon points="563.1,248.6 569.1,254.7 575.0,253.8 568.9,247.7" fill="#e68f58"/>
<polygon points="603.9,251.0 608.0,257.8 606.8,263.9 602.8,257.0" fill="#c26c3d"/>
<polygon points="608.0,257.8 614.6,257.7 613.3,263.7 606.8,263.9" fill="#c46e3e"/>
<polygon points="603.9,251.0 608.0,257.8 614.6,257.7 610.3,250.9" fill="#e68f58"/>
<polygon points="501.2,257.2 507.8,257.5 507.4,263.6 500.8,263.3" fill="#c87040"/>
<polygon points="507.8,257.5 508.2,251.1 501.7,250.8 501.2,257.2" fill="#e68f58"/>
<polygon points="463.4,253.6 463.8,260.6 463.7,266.7 463.3,259.7" fill="#c26c3d"/>
<polygon points="463.8,260.6 470.5,260.5 470.3,266.6 463.7,266.7" fill="#c46e3e"/>
<polygon points="470.5,260.5 469.9,253.5 463.4,253.6 463.8,260.6" fill="#e68f58"/>
<polygon points="568.7,254.1 569.8,260.7 568.9,266.8 567.9,260.1" fill="#bf6a3c"/>
<polygon points="569.8,260.7 576.6,261.0 575.6,267.2 568.9,266.8" fill="#c87040"/>
<polygon points="568.7,254.1 569.8,260.7 576.6,261.0 575.4,254.4" fill="#e68f58"/>
<polygon points="357.5,280.2 433.3,240.7 433.4,246.6 358.3,286.6" fill="#b9663a"/>
<polygon points="352.9,277.7 357.5,280.2 358.3,286.6 353.7,284.1" fill="#db7d47"/>
<polygon points="357.5,280.2 433.3,240.7 428.8,238.9 352.9,277.7" fill="#e68f58"/>
<polygon points="501.4,257.8 506.2,264.4 505.7,270.6 501.0,264.0" fill="#c87040"/>
<polygon points="506.2,264.4 512.5,263.4 512.0,269.6 505.7,270.6" fill="#bf6a3c"/>
<polygon points="512.5,263.4 507.6,256.9 501.4,257.8 506.2,264.4" fill="#e68f58"/>
<polygon points="607.9,257.5 609.3,264.5 608.1,270.7 606.7,263.6" fill="#be693c"/>
<polygon points="609.3,264.5 616.3,265.1 615.0,271.3 608.1,270.7" fill="#ca7140"/>
<polygon points="607.9,257.5 609.3,264.5 616.3,265.1 614.7,258.0" fill="#e68f58"/>
<polygon points="565.6,266.1 572.2,267.8 571.3,274.0 564.7,272.4" fill="#d47944"/>
<polygon points="572.2,267.8 576.5,261.6 575.5,267.8 571.3,274.0" fill="#ba663a"/>
<polygon points="570.0,260.1 565.6,266.1 572.2,267.8 576.5,261.6" fill="#e68f58"/>
<polygon points="463.8,260.9 467.1,268.0 467.0,274.3 463.7,267.0" fill="#c66f3f"/>
<polygon points="467.1,268.0 473.8,267.2 473.6,273.5 467.0,274.3" fill="#c06b3d"/>
<polygon points="473.8,267.2 470.4,260.1 463.8,260.9 467.1,268.0" fill="#e68f58"/>
<polygon points="506.9,265.0 516.5,270.5 516.0,276.8 506.4,271.2" fill="#d47944"/>
<polygon points="516.5,270.5 521.5,268.3 520.9,274.5 516.0,276.8" fill="#ba663a"/>
<polygon points="521.5,268.3 511.8,262.8 506.9,265.0 516.5,270.5" fill="#e68f58"/>
<polygon points="607.8,271.3 614.9,272.5 613.6,278.8 606.5,277.6" fill="#d07543"/>
<polygon points="609.3,264.2 607.8,271.3 614.9,272.5 616.3,265.4" fill="#e68f58"/>
<polygon points="567.2,268.1 577.7,272.0 576.7,278.3 566.2,274.4" fill="#db7d47"/>
<polygon points="577.7,272.0 581.0,269.3 580.0,275.5 576.7,278.3" fill="#b9663a"/>
<polygon points="567.2,268.1 577.7,272.0 581.0,269.3 570.6,265.5" fill="#e68f58"/>
<polygon points="469.5,269.5 519.0,271.1 518.4,277.4 469.4,275.8" fill="#c76f3f"/>
<polygon points="469.5,269.5 519.0,271.1 518.8,267.6 469.9,266.0" fill="#e68f58"/>
<polygon points="556.9,270.1 562.2,272.9 561.3,279.2 556.1,276.4" fill="#d47944"/>
<polygon points="562.2,272.9 571.6,268.3 570.6,274.6 561.3,279.2" fill="#ba663a"/>
<polygon points="566.3,265.6 556.9,270.1 562.2,272.9 571.6,268.3" fill="#e68f58"/>
<polygon points="280.3,242.1 404.6,308.2 405.0,315.0 281.5,248.0" fill="#db7d47"/>
<polygon points="404.6,308.2 410.2,304.7 410.6,311.4 405.0,315.0" fill="#b9663a"/>
<polygon points="280.3,242.1 404.6,308.2 410.2,304.7 285.9,239.9" fill="#e68f58"/>
<polygon points="517.7,271.0 530.9,274.5 530.2,280.8 517.1,277.3" fill="#d47944"/>
<polygon points="530.9,274.5 533.5,271.3 532.8,277.6 530.2,280.8" fill="#ba663a"/>
<polygon points="533.5,271.3 520.4,267.8 517.7,271.0 530.9,274.5" fill="#e68f58"/>
<polygon points="545.1,271.9 548.0,275.4 547.2,281.8 544.3,278.2" fill="#c87040"/>
<polygon points="548.0,275.4 561.1,273.3 560.2,279.6 547.2,281.8" fill="#bf6a3c"/>
<polygon points="558.0,269.8 545.1,271.9 548.0,275.4 561.1,273.3" fill="#e68f58"/>
<polygon points="577.1,271.8 586.5,276.7 585.4,283.0 576.1,278.1" fill="#d47844"/>
<polygon points="586.5,276.7 591.1,274.3 589.9,280.7 585.4,283.0" fill="#ba663a"/>
<polygon points="577.1,271.8 586.5,276.7 591.1,274.3 581.6,269.5" fill="#e68f58"/>
<polygon points="532.1,271.1 532.2,274.7 531.6,281.0 531.5,277.4" fill="#bf6a3c"/>
<polygon points="532.2,274.7 546.7,275.5 545.9,281.8 531.6,281.0" fill="#c87040"/>
<polygon points="546.4,271.8 532.1,271.1 532.2,274.7 546.7,275.5" fill="#e68f58"/>
<polygon points="603.3,277.7 610.4,279.6 609.1,286.0 602.1,284.1" fill="#d67a45"/>
<polygon points="610.4,279.6 614.8,272.8 613.5,279.1 609.1,286.0" fill="#b9663a"/>
<polygon points="607.9,271.0 603.3,277.7 610.4,279.6 614.8,272.8" fill="#e68f58"/>
<polygon points="586.0,276.3 593.9,282.1 592.8,288.6 584.9,282.7" fill="#ce7442"/>
<polygon points="593.9,282.1 599.6,280.4 598.4,286.8 592.8,288.6" fill="#bc683b"/>
<polygon points="586.0,276.3 593.9,282.1 599.6,280.4 591.6,274.7" fill="#e68f58"/>
<polygon points="596.0,283.4 602.5,286.1 601.3,292.6 594.8,289.9" fill="#d97c46"/>
<polygon points="602.5,286.1 610.1,279.9 608.8,286.3 601.3,292.6" fill="#b9663a"/>
<polygon points="603.6,277.4 596.0,283.4 602.5,286.1 610.1,279.9" fill="#e68f58"/>
<polygon points="593.5,281.8 599.6,288.3 598.4,294.8 592.4,288.2" fill="#c87040"/>
<polygon points="599.6,288.3 606.2,287.2 604.9,293.7 598.4,294.8" fill="#bf6a3c"/>
<polygon points="593.5,281.8 599.6,288.3 606.2,287.2 600.0,280.7" fill="#e68f58"/>
<polygon points="406.5,310.2 472.4,268.9 472.2,275.1 406.9,317.0" fill="#b9663a"/>
<polygon points="401.0,307.2 406.5,310.2 406.9,317.0 401.5,314.0" fill="#db7d47"/>
<polygon points="406.5,310.2 472.4,268.9 467.1,266.6 401.0,307.2" fill="#e68f58"/>
<polygon points="599.3,287.9 603.2,294.9 601.9,301.5 598.1,294.4" fill="#c26c3e"/>
<polygon points="603.2,294.9 610.6,294.6 609.2,301.2 601.9,301.5" fill="#c46d3e"/>
<polygon points="599.3,287.9 603.2,294.9 610.6,294.6 606.5,287.6" fill="#e68f58"/>
<polygon points="603.1,294.4 604.5,301.7 603.1,308.4 601.8,301.0" fill="#be693c"/>
<polygon points="604.5,301.7 612.3,302.3 610.9,309.0 603.1,308.4" fill="#c97140"/>
<polygon points="603.1,294.4 604.5,301.7 612.3,302.3 610.8,295.0" fill="#e68f58"/>
<polygon points="604.5,301.3 603.1,308.5 601.8,315.3 603.1,308.0" fill="#bb673b"/>
<polygon points="603.1,308.5 611.2,310.0 609.8,316.8 601.8,315.3" fill="#cf7542"/>
<polygon points="604.5,301.3 603.1,308.5 611.2,310.0 612.4,302.7" fill="#e68f58"/>
<polygon points="432.3,291.0 518.9,332.7 518.2,339.8 432.5,297.5" fill="#db7d47"/>
<polygon points="518.9,332.7 523.6,328.7 522.9,335.7 518.2,339.8" fill="#b9663a"/>
<polygon points="432.3,291.0 518.9,332.7 523.6,328.7 437.4,287.9" fill="#e68f58"/>
<polygon points="599.1,315.0 607.0,317.4 605.6,324.3 597.8,321.8" fill="#d67a45"/>
<polygon points="607.0,317.4 611.1,310.5 609.6,317.2 605.6,324.3" fill="#b9663a"/>
<polygon points="603.3,308.1 599.1,315.0 607.0,317.4 611.1,310.5" fill="#e68f58"/>
<polygon points="444.7,329.0 474.0,308.1 473.8,314.9 444.8,336.0" fill="#b9663a"/>
<polygon points="438.6,325.8 444.7,329.0 444.8,336.0 438.7,332.7" fill="#db7d47"/>
<polygon points="444.7,329.0 474.0,308.1 467.9,305.2 438.6,325.8" fill="#e68f58"/>
<polygon points="592.5,320.7 599.8,324.0 598.4,331.0 591.2,327.6" fill="#d97c46"/>
<polygon points="599.8,324.0 606.7,317.8 605.3,324.7 598.4,331.0" fill="#b9663a"/>
<polygon points="599.5,314.6 592.5,320.7 599.8,324.0 606.7,317.8" fill="#e68f58"/>
<polygon points="583.4,325.3 589.7,329.5 588.4,336.5 582.2,332.3" fill="#d27744"/>
<polygon points="589.7,329.5 599.3,324.4 597.9,331.3 588.4,336.5" fill="#ba673a"/>
<polygon points="593.0,320.3 583.4,325.3 589.7,329.5 599.3,324.4" fill="#e68f58"/>
<polygon points="504.2,325.5 516.6,330.4 516.0,337.4 503.7,332.4" fill="#d87b46"/>
<polygon points="516.6,330.4 520.6,326.1 520.0,333.0 516.0,337.4" fill="#b9663a"/>
<polygon points="520.6,326.1 508.3,321.3 504.2,325.5 516.6,330.4" fill="#e68f58"/>
<polygon points="572.3,328.7 577.2,333.5 576.0,340.5 571.2,335.7" fill="#cc7341"/>
<polygon points="577.2,333.5 589.1,329.8 587.8,336.8 576.0,340.5" fill="#bc683b"/>
<polygon points="584.1,325.1 572.3,328.7 577.2,333.5 589.1,329.8" fill="#e68f58"/>
<polygon points="517.4,330.6 531.3,334.0 530.5,341.0 516.8,337.6" fill="#d17643"/>
<polygon points="531.3,334.0 533.6,329.1 532.8,336.1 530.5,341.0" fill="#bb673b"/>
<polygon points="533.6,329.1 519.9,325.8 517.4,330.6 531.3,334.0" fill="#e68f58"/>
<polygon points="402.1,309.7 490.4,357.0 490.0,364.3 402.6,316.5" fill="#db7d47"/>
<polygon points="490.4,357.0 495.8,352.4 495.3,359.7 490.0,364.3" fill="#b9663a"/>
<polygon points="402.1,309.7 490.4,357.0 495.8,352.4 407.8,306.2" fill="#e68f58"/>
<polygon points="559.7,330.5 562.9,335.6 561.8,342.7 558.7,337.5" fill="#c66f3f"/>
<polygon points="562.9,335.6 576.5,333.6 575.3,340.7 561.8,342.7" fill="#c06b3d"/>
<polygon points="573.1,328.5 559.7,330.5 562.9,335.6 576.5,333.6" fill="#e68f58"/>
<polygon points="532.1,334.2 546.7,335.8 545.8,342.9 531.4,341.2" fill="#ca7241"/>
<polygon points="547.1,330.6 532.7,329.0 532.1,334.2 546.7,335.8" fill="#e68f58"/>
<polygon points="546.2,330.6 547.6,335.9 546.7,342.9 545.3,337.6" fill="#c16c3d"/>
<polygon points="547.6,335.9 562.1,335.7 561.0,342.8 546.7,342.9" fill="#c56e3f"/>
<polygon points="560.5,330.4 546.2,330.6 547.6,335.9 562.1,335.7" fill="#e68f58"/>
<polygon points="496.7,356.6 524.8,332.4 524.1,339.4 496.2,363.9" fill="#b9663a"/>
<polygon points="489.5,352.8 496.7,356.6 496.2,363.9 489.2,360.1" fill="#db7d47"/>
<polygon points="496.7,356.6 524.8,332.4 517.8,329.1 489.5,352.8" fill="#e68f58"/>
<polygon points="534.8,244.9 524.5,234.9 524.3,237.3 534.6,247.3" fill="#b8303e" stroke="#b8303e" stroke-width="0.4"/>
<polygon points="524.5,234.9 532.3,234.1 531.9,237.8 524.1,238.7" fill="#a82a38" stroke="#a82a38" stroke-width="0.4"/>
<polygon points="534.8,244.9 524.5,234.9 532.3,234.1 537.1,244.6" fill="#dc5060" stroke="#e88a94" stroke-width="0.3"/>
<polygon points="532.6,247.8 517.4,239.0 517.2,241.4 532.3,250.2" fill="#b8303e" stroke="#b8303e" stroke-width="0.4"/>
<polygon points="517.4,239.0 524.3,237.3 523.9,241.0 517.1,242.8" fill="#a82a38" stroke="#a82a38" stroke-width="0.4"/>
<polygon points="532.6,247.8 517.4,239.0 524.3,237.3 534.6,247.3" fill="#dc5060" stroke="#e88a94" stroke-width="0.3"/>
<polygon points="537.4,242.2 532.5,231.8 532.3,234.1 537.1,244.6" fill="#b8303e" stroke="#b8303e" stroke-width="0.4"/>
<polygon points="532.5,231.8 540.7,231.9 540.3,235.7 532.1,235.5" fill="#a82a38" stroke="#a82a38" stroke-width="0.4"/>
<polygon points="537.4,242.2 532.5,231.8 540.7,231.9 539.9,242.2" fill="#dc5060" stroke="#e88a94" stroke-width="0.3"/>
<polygon points="530.7,251.0 511.6,244.0 511.4,246.3 530.5,253.4" fill="#b8303e" stroke="#b8303e" stroke-width="0.4"/>
<polygon points="511.6,244.0 517.2,241.4 516.9,245.1 511.3,247.7" fill="#a82a38" stroke="#a82a38" stroke-width="0.4"/>
<polygon points="530.7,251.0 511.6,244.0 517.2,241.4 532.3,250.2" fill="#dc5060" stroke="#e88a94" stroke-width="0.3"/>
<polygon points="540.1,239.8 541.0,229.6 540.7,231.9 539.9,242.2" fill="#b8303e" stroke="#b8303e" stroke-width="0.4"/>
<polygon points="541.0,229.6 549.2,230.6 548.8,234.4 540.6,233.3" fill="#a82a38" stroke="#a82a38" stroke-width="0.4"/>
<polygon points="540.1,239.8 541.0,229.6 549.2,230.6 542.6,240.2" fill="#dc5060" stroke="#e88a94" stroke-width="0.3"/>
<polygon points="566.5,199.3 563.0,201.4 557.2,245.6 560.7,243.2" fill="#b9663a"/>
<polygon points="563.0,201.4 556.7,199.6 551.3,243.6 557.2,245.6" fill="#db7d47"/>
<polygon points="542.8,237.7 549.5,228.3 549.2,230.6 542.6,240.2" fill="#b8303e" stroke="#b8303e" stroke-width="0.4"/>
<polygon points="549.5,228.3 557.2,230.2 556.7,234.1 549.0,232.1" fill="#a82a38" stroke="#a82a38" stroke-width="0.4"/>
<polygon points="542.8,237.7 549.5,228.3 557.2,230.2 545.1,238.3" fill="#dc5060" stroke="#e88a94" stroke-width="0.3"/>
<polygon points="518.6,201.1 514.5,203.3 511.2,247.8 515.2,245.3" fill="#b9663a"/>
<polygon points="514.5,203.3 508.6,201.5 505.7,245.7 511.2,247.8" fill="#db7d47"/>
<polygon points="545.4,235.9 557.5,227.8 557.2,230.2 545.1,238.3" fill="#b8303e" stroke="#b8303e" stroke-width="0.4"/>
<polygon points="557.5,227.8 564.3,230.6 563.8,234.4 557.0,231.7" fill="#a82a38" stroke="#a82a38" stroke-width="0.4"/>
<polygon points="545.4,235.9 557.5,227.8 564.3,230.6 547.3,236.7" fill="#dc5060" stroke="#e88a94" stroke-width="0.3"/>
<polygon points="547.6,234.2 564.6,228.1 564.3,230.6 547.3,236.7" fill="#b8303e" stroke="#b8303e" stroke-width="0.4"/>
<polygon points="564.6,228.1 570.0,231.5 569.4,235.4 564.1,232.0" fill="#a82a38" stroke="#a82a38" stroke-width="0.4"/>
<polygon points="547.6,234.2 564.6,228.1 570.0,231.5 549.1,235.2" fill="#dc5060" stroke="#e88a94" stroke-width="0.3"/>
<polygon points="549.4,232.7 570.3,229.0 570.0,231.5 549.1,235.2" fill="#b8303e" stroke="#b8303e" stroke-width="0.4"/>
<polygon points="570.3,229.0 573.9,232.8 573.3,236.8 569.8,233.0" fill="#a82a38" stroke="#a82a38" stroke-width="0.4"/>
<polygon points="549.4,232.7 570.3,229.0 573.9,232.8 550.3,233.8" fill="#dc5060" stroke="#e88a94" stroke-width="0.3"/>
<polygon points="550.6,231.3 574.2,230.3 573.9,232.8 550.3,233.8" fill="#b8303e" stroke="#b8303e" stroke-width="0.4"/>
<polygon points="574.2,230.3 575.6,234.3 575.0,238.3 573.6,234.3" fill="#a82a38" stroke="#a82a38" stroke-width="0.4"/>
<polygon points="550.6,231.3 574.2,230.3 575.6,234.3 550.9,232.4" fill="#dc5060" stroke="#e88a94" stroke-width="0.3"/>
<polygon points="551.2,229.9 576.0,231.7 575.6,234.3 550.9,232.4" fill="#b8303e" stroke="#b8303e" stroke-width="0.4"/>
<polygon points="576.0,231.7 575.0,235.6 574.4,239.7 575.4,235.8" fill="#a82a38" stroke="#a82a38" stroke-width="0.4"/>
<polygon points="551.2,229.9 576.0,231.7 575.0,235.6 550.8,230.9" fill="#dc5060" stroke="#e88a94" stroke-width="0.3"/>
<polygon points="551.1,228.4 575.4,233.0 575.0,235.6 550.8,230.9" fill="#b8303e" stroke="#b8303e" stroke-width="0.4"/>
<polygon points="575.4,233.0 572.0,236.5 571.4,240.7 574.8,237.1" fill="#a82a38" stroke="#a82a38" stroke-width="0.4"/>
<polygon points="551.1,228.4 575.4,233.0 572.0,236.5 550.1,229.3" fill="#dc5060" stroke="#e88a94" stroke-width="0.3"/>
<polygon points="550.4,226.7 572.4,233.9 572.0,236.5 550.1,229.3" fill="#b8303e" stroke="#b8303e" stroke-width="0.4"/>
<polygon points="572.4,233.9 566.7,236.7 566.1,241.0 571.7,238.1" fill="#a82a38" stroke="#a82a38" stroke-width="0.4"/>
<polygon points="550.4,226.7 572.4,233.9 566.7,236.7 548.7,227.5" fill="#dc5060" stroke="#e88a94" stroke-width="0.3"/>
<polygon points="580.7,220.3 576.9,222.9 569.9,269.9 573.5,267.0" fill="#b9663a"/>
<polygon points="576.9,222.9 569.9,220.7 563.3,267.5 569.9,269.9" fill="#db7d47"/>
<polygon points="528.3,222.1 524.0,224.7 519.8,272.0 524.0,269.1" fill="#b9663a"/>
<polygon points="524.0,224.7 517.4,222.6 513.7,269.6 519.8,272.0" fill="#db7d47"/>
<path d="M561.8 199.5 L569.1 202.1 L574.9 205.3 L578.8 209.0 L580.4 212.9 L579.4 216.7 L575.8 220.3 L569.8 223.2 L561.8 225.2 L552.3 226.2 L542.1 226.0 L532.1 224.7 L523.1 222.4 L515.6 219.3 L510.4 215.6 L507.5 211.8 L507.2 207.9 L509.3 204.3 L513.6 201.3 L519.6 198.9 L527.1 197.3 L535.6 196.5 L544.5 196.6 L553.4 197.6 L561.8 199.5Z" fill="#c4cbd2" fill-opacity="0.4" stroke="none"/>
<clipPath id="hc4"><path d="M560.8 200.1 L567.8 202.6 L573.3 205.6 L576.9 209.1 L578.3 212.8 L577.3 216.4 L574.0 219.7 L568.3 222.4 L560.7 224.3 L551.8 225.2 L542.2 225.1 L532.8 223.9 L524.2 221.7 L517.2 218.8 L512.2 215.3 L509.5 211.7 L509.2 208.0 L511.1 204.7 L515.1 201.8 L520.9 199.5 L528.0 197.9 L536.0 197.2 L544.5 197.3 L552.9 198.3 L560.8 200.1Z"/></clipPath><g clip-path="url(#hc4)">
<polygon points="534.8,244.9 524.5,234.9 524.3,237.3 534.6,247.3" fill="#b8303e" stroke="#b8303e" stroke-width="0.4"/>
<polygon points="524.5,234.9 532.3,234.1 531.9,237.8 524.1,238.7" fill="#a82a38" stroke="#a82a38" stroke-width="0.4"/>
<polygon points="534.8,244.9 524.5,234.9 532.3,234.1 537.1,244.6" fill="#dc5060" stroke="#e88a94" stroke-width="0.3"/>
<polygon points="532.6,247.8 517.4,239.0 517.2,241.4 532.3,250.2" fill="#b8303e" stroke="#b8303e" stroke-width="0.4"/>
<polygon points="517.4,239.0 524.3,237.3 523.9,241.0 517.1,242.8" fill="#a82a38" stroke="#a82a38" stroke-width="0.4"/>
<polygon points="532.6,247.8 517.4,239.0 524.3,237.3 534.6,247.3" fill="#dc5060" stroke="#e88a94" stroke-width="0.3"/>
<polygon points="537.4,242.2 532.5,231.8 532.3,234.1 537.1,244.6" fill="#b8303e" stroke="#b8303e" stroke-width="0.4"/>
<polygon points="532.5,231.8 540.7,231.9 540.3,235.7 532.1,235.5" fill="#a82a38" stroke="#a82a38" stroke-width="0.4"/>
<polygon points="537.4,242.2 532.5,231.8 540.7,231.9 539.9,242.2" fill="#dc5060" stroke="#e88a94" stroke-width="0.3"/>
<polygon points="530.7,251.0 511.6,244.0 511.4,246.3 530.5,253.4" fill="#b8303e" stroke="#b8303e" stroke-width="0.4"/>
<polygon points="511.6,244.0 517.2,241.4 516.9,245.1 511.3,247.7" fill="#a82a38" stroke="#a82a38" stroke-width="0.4"/>
<polygon points="530.7,251.0 511.6,244.0 517.2,241.4 532.3,250.2" fill="#dc5060" stroke="#e88a94" stroke-width="0.3"/>
<polygon points="540.1,239.8 541.0,229.6 540.7,231.9 539.9,242.2" fill="#b8303e" stroke="#b8303e" stroke-width="0.4"/>
<polygon points="541.0,229.6 549.2,230.6 548.8,234.4 540.6,233.3" fill="#a82a38" stroke="#a82a38" stroke-width="0.4"/>
<polygon points="540.1,239.8 541.0,229.6 549.2,230.6 542.6,240.2" fill="#dc5060" stroke="#e88a94" stroke-width="0.3"/>
<polygon points="542.8,237.7 549.5,228.3 549.2,230.6 542.6,240.2" fill="#b8303e" stroke="#b8303e" stroke-width="0.4"/>
<polygon points="549.5,228.3 557.2,230.2 556.7,234.1 549.0,232.1" fill="#a82a38" stroke="#a82a38" stroke-width="0.4"/>
<polygon points="542.8,237.7 549.5,228.3 557.2,230.2 545.1,238.3" fill="#dc5060" stroke="#e88a94" stroke-width="0.3"/>
<polygon points="545.4,235.9 557.5,227.8 557.2,230.2 545.1,238.3" fill="#b8303e" stroke="#b8303e" stroke-width="0.4"/>
<polygon points="557.5,227.8 564.3,230.6 563.8,234.4 557.0,231.7" fill="#a82a38" stroke="#a82a38" stroke-width="0.4"/>
<polygon points="545.4,235.9 557.5,227.8 564.3,230.6 547.3,236.7" fill="#dc5060" stroke="#e88a94" stroke-width="0.3"/>
<polygon points="547.6,234.2 564.6,228.1 564.3,230.6 547.3,236.7" fill="#b8303e" stroke="#b8303e" stroke-width="0.4"/>
<polygon points="564.6,228.1 570.0,231.5 569.4,235.4 564.1,232.0" fill="#a82a38" stroke="#a82a38" stroke-width="0.4"/>
<polygon points="547.6,234.2 564.6,228.1 570.0,231.5 549.1,235.2" fill="#dc5060" stroke="#e88a94" stroke-width="0.3"/>
<polygon points="549.4,232.7 570.3,229.0 570.0,231.5 549.1,235.2" fill="#b8303e" stroke="#b8303e" stroke-width="0.4"/>
<polygon points="570.3,229.0 573.9,232.8 573.3,236.8 569.8,233.0" fill="#a82a38" stroke="#a82a38" stroke-width="0.4"/>
<polygon points="549.4,232.7 570.3,229.0 573.9,232.8 550.3,233.8" fill="#dc5060" stroke="#e88a94" stroke-width="0.3"/>
<polygon points="550.6,231.3 574.2,230.3 573.9,232.8 550.3,233.8" fill="#b8303e" stroke="#b8303e" stroke-width="0.4"/>
<polygon points="574.2,230.3 575.6,234.3 575.0,238.3 573.6,234.3" fill="#a82a38" stroke="#a82a38" stroke-width="0.4"/>
<polygon points="550.6,231.3 574.2,230.3 575.6,234.3 550.9,232.4" fill="#dc5060" stroke="#e88a94" stroke-width="0.3"/>
<polygon points="551.2,229.9 576.0,231.7 575.6,234.3 550.9,232.4" fill="#b8303e" stroke="#b8303e" stroke-width="0.4"/>
<polygon points="576.0,231.7 575.0,235.6 574.4,239.7 575.4,235.8" fill="#a82a38" stroke="#a82a38" stroke-width="0.4"/>
<polygon points="551.2,229.9 576.0,231.7 575.0,235.6 550.8,230.9" fill="#dc5060" stroke="#e88a94" stroke-width="0.3"/>
<polygon points="551.1,228.4 575.4,233.0 575.0,235.6 550.8,230.9" fill="#b8303e" stroke="#b8303e" stroke-width="0.4"/>
<polygon points="575.4,233.0 572.0,236.5 571.4,240.7 574.8,237.1" fill="#a82a38" stroke="#a82a38" stroke-width="0.4"/>
<polygon points="551.1,228.4 575.4,233.0 572.0,236.5 550.1,229.3" fill="#dc5060" stroke="#e88a94" stroke-width="0.3"/>
<polygon points="550.4,226.7 572.4,233.9 572.0,236.5 550.1,229.3" fill="#b8303e" stroke="#b8303e" stroke-width="0.4"/>
<polygon points="572.4,233.9 566.7,236.7 566.1,241.0 571.7,238.1" fill="#a82a38" stroke="#a82a38" stroke-width="0.4"/>
<polygon points="550.4,226.7 572.4,233.9 566.7,236.7 548.7,227.5" fill="#dc5060" stroke="#e88a94" stroke-width="0.3"/>
</g>
<polygon points="535.7,197.8 549.2,198.3 548.4,204.8 535.0,204.2" fill="#c87040"/>
<polygon points="535.5,195.3 535.7,197.8 535.0,204.2 534.9,201.7" fill="#bf6a3c"/>
<polygon points="535.7,197.8 549.2,198.3 548.9,195.8 535.5,195.3" fill="#e68f58"/>
<polygon points="524.5,199.2 536.9,197.7 536.3,204.2 524.0,205.7" fill="#bf6a3c"/>
<polygon points="522.0,196.7 524.5,199.2 524.0,205.7 521.5,203.2" fill="#c87040"/>
<polygon points="524.5,199.2 536.9,197.7 534.3,195.3 522.0,196.7" fill="#e68f58"/>
<polygon points="547.9,198.1 560.7,200.6 559.9,207.2 547.1,204.6" fill="#d47944"/>
<polygon points="560.7,200.6 562.9,198.4 562.0,204.9 559.9,207.2" fill="#ba663a"/>
<polygon points="547.9,198.1 560.7,200.6 562.9,198.4 550.1,195.9" fill="#e68f58"/>
<polygon points="515.9,202.3 525.6,199.0 525.0,205.5 515.4,208.9" fill="#ba663a"/>
<polygon points="511.2,200.3 515.9,202.3 515.4,208.9 510.8,206.8" fill="#d47944"/>
<polygon points="515.9,202.3 525.6,199.0 520.9,197.0 511.2,200.3" fill="#e68f58"/>
<polygon points="559.6,200.3 570.0,204.5 569.1,211.1 558.8,206.9" fill="#d47944"/>
<polygon points="570.0,204.5 574.5,202.8 573.5,209.4 569.1,211.1" fill="#ba663a"/>
<polygon points="559.6,200.3 570.0,204.5 574.5,202.8 564.0,198.7" fill="#e68f58"/>
<polygon points="511.1,206.7 516.6,201.9 516.1,208.5 510.6,213.4" fill="#ba663a"/>
<polygon points="504.9,205.4 511.1,206.7 510.6,213.4 504.4,212.1" fill="#d47944"/>
<polygon points="511.1,206.7 516.6,201.9 510.5,200.6 504.9,205.4" fill="#e68f58"/>
<polygon points="569.2,204.0 575.7,209.4 574.7,216.2 568.3,210.7" fill="#c87040"/>
<polygon points="575.7,209.4 581.9,208.6 580.9,215.3 574.7,216.2" fill="#bf6a3c"/>
<polygon points="569.2,204.0 575.7,209.4 581.9,208.6 575.3,203.3" fill="#e68f58"/>
<polygon points="504.0,211.6 511.0,211.9 510.6,218.7 503.6,218.4" fill="#c87040"/>
<polygon points="511.0,211.9 511.4,206.2 504.5,205.9 504.0,211.6" fill="#e68f58"/>
<polygon points="575.3,208.9 576.6,214.7 575.6,221.5 574.3,215.6" fill="#bf6a3c"/>
<polygon points="576.6,214.7 583.8,215.0 582.7,221.9 575.6,221.5" fill="#c87040"/>
<polygon points="575.3,208.9 576.6,214.7 583.8,215.0 582.3,209.2" fill="#e68f58"/>
<polygon points="504.2,212.2 509.4,217.9 508.9,224.9 503.8,219.0" fill="#c87040"/>
<polygon points="509.4,217.9 516.1,217.1 515.5,224.0 508.9,224.9" fill="#bf6a3c"/>
<polygon points="516.1,217.1 510.8,211.3 504.2,212.2 509.4,217.9" fill="#e68f58"/>
<polygon points="572.3,219.5 579.3,221.0 578.3,228.0 571.3,226.5" fill="#d47944"/>
<polygon points="579.3,221.0 583.7,215.5 582.6,222.4 578.3,228.0" fill="#ba663a"/>
<polygon points="576.7,214.1 572.3,219.5 579.3,221.0 583.7,215.5" fill="#e68f58"/>
<polygon points="510.1,218.5 520.4,223.4 519.9,230.4 509.6,225.4" fill="#d47944"/>
<polygon points="520.4,223.4 525.7,221.4 525.0,228.4 519.9,230.4" fill="#ba663a"/>
<polygon points="525.7,221.4 515.3,216.6 510.1,218.5 520.4,223.4" fill="#e68f58"/>
<polygon points="563.2,223.1 568.8,225.5 567.8,232.6 562.2,230.1" fill="#d47944"/>
<polygon points="568.8,225.5 578.6,221.5 577.6,228.5 567.8,232.6" fill="#ba663a"/>
<polygon points="573.0,219.1 563.2,223.1 568.8,225.5 578.6,221.5" fill="#e68f58"/>
<polygon points="521.6,223.8 535.7,226.9 535.0,234.0 521.0,230.8" fill="#d47944"/>
<polygon points="535.7,226.9 538.4,224.1 537.7,231.1 535.0,234.0" fill="#ba663a"/>
<polygon points="538.4,224.1 524.5,221.0 521.6,223.8 535.7,226.9" fill="#e68f58"/>
<polygon points="550.7,224.6 553.9,227.7 553.0,234.9 549.8,231.7" fill="#c87040"/>
<polygon points="553.9,227.7 567.7,225.8 566.7,232.9 553.0,234.9" fill="#bf6a3c"/>
<polygon points="564.3,222.8 550.7,224.6 553.9,227.7 567.7,225.8" fill="#e68f58"/>
<polygon points="537.0,223.9 537.1,227.1 536.4,234.2 536.2,230.9" fill="#bf6a3c"/>
<polygon points="537.1,227.1 552.5,227.8 551.6,234.9 536.4,234.2" fill="#c87040"/>
<polygon points="552.1,224.6 537.0,223.9 537.1,227.1 552.5,227.8" fill="#e68f58"/>
<clipPath id="stc"><polygon points="498.0,349.0 498.2,345.6 505.8,229.6 506.9,227.0 509.0,224.6 512.0,222.5 515.8,220.7 520.3,219.2 525.3,218.2 530.7,217.5 536.4,217.3 542.3,217.5 548.1,218.1 553.8,219.2 559.1,220.6 564.0,222.3 568.3,224.4 571.9,226.8 574.6,229.4 576.3,232.1 577.0,234.9 576.6,237.6 558.7,355.7 557.2,359.0 554.9,362.0 551.6,364.7 547.5,366.9 542.8,368.6 537.6,369.6 532.1,369.9 526.5,369.6 521.0,368.7 515.7,367.1 510.9,364.9 506.6,362.3 503.2,359.2 500.6,356.0 498.8,352.5"/></clipPath><g clip-path="url(#stc)" opacity="0.7">
<polygon points="524.5,346.0 515.7,334.0 515.5,335.8 524.3,347.9" fill="#b8303e" stroke="#b8303e" stroke-width="0.4"/>
<polygon points="515.7,334.0 522.6,332.9 522.3,335.8 515.4,336.8" fill="#a82a38" stroke="#a82a38" stroke-width="0.4"/>
<polygon points="524.5,346.0 515.7,334.0 522.6,332.9 526.5,345.7" fill="#dc5060" stroke="#e88a94" stroke-width="0.3"/>
<polygon points="522.5,348.5 509.4,337.9 509.3,339.7 522.3,350.4" fill="#b8303e" stroke="#b8303e" stroke-width="0.4"/>
<polygon points="509.4,337.9 515.5,335.8 515.3,338.6 509.2,340.8" fill="#a82a38" stroke="#a82a38" stroke-width="0.4"/>
<polygon points="522.5,348.5 509.4,337.9 515.5,335.8 524.3,347.9" fill="#dc5060" stroke="#e88a94" stroke-width="0.3"/>
<polygon points="526.7,343.9 522.8,331.1 522.6,332.9 526.5,345.7" fill="#b8303e" stroke="#b8303e" stroke-width="0.4"/>
<polygon points="522.8,331.1 530.0,331.3 529.7,334.2 522.5,334.0" fill="#a82a38" stroke="#a82a38" stroke-width="0.4"/>
<polygon points="526.7,343.9 522.8,331.1 530.0,331.3 528.9,343.9" fill="#dc5060" stroke="#e88a94" stroke-width="0.3"/>
<polygon points="520.9,351.3 504.3,342.9 504.2,344.7 520.7,353.2" fill="#b8303e" stroke="#b8303e" stroke-width="0.4"/>
<polygon points="504.3,342.9 509.3,339.7 509.0,342.6 504.1,345.8" fill="#a82a38" stroke="#a82a38" stroke-width="0.4"/>
<polygon points="520.9,351.3 504.3,342.9 509.3,339.7 522.3,350.4" fill="#dc5060" stroke="#e88a94" stroke-width="0.3"/>
<polygon points="529.1,342.1 530.2,329.5 530.0,331.3 528.9,343.9" fill="#b8303e" stroke="#b8303e" stroke-width="0.4"/>
<polygon points="530.2,329.5 537.4,330.8 537.1,333.7 529.9,332.4" fill="#a82a38" stroke="#a82a38" stroke-width="0.4"/>
<polygon points="529.1,342.1 530.2,329.5 537.4,330.8 531.2,342.5" fill="#dc5060" stroke="#e88a94" stroke-width="0.3"/>
<polygon points="519.8,354.4 500.6,348.8 500.5,350.6 519.6,356.2" fill="#b8303e" stroke="#b8303e" stroke-width="0.4"/>
<polygon points="500.6,348.8 504.2,344.7 503.9,347.6 500.4,351.7" fill="#a82a38" stroke="#a82a38" stroke-width="0.4"/>
<polygon points="519.8,354.4 500.6,348.8 504.2,344.7 520.7,353.2" fill="#dc5060" stroke="#e88a94" stroke-width="0.3"/>
<polygon points="531.4,340.6 537.6,328.9 537.4,330.8 531.2,342.5" fill="#b8303e" stroke="#b8303e" stroke-width="0.4"/>
<polygon points="537.6,328.9 544.3,331.4 544.0,334.3 537.3,331.9" fill="#a82a38" stroke="#a82a38" stroke-width="0.4"/>
<polygon points="531.4,340.6 537.6,328.9 544.3,331.4 533.4,341.3" fill="#dc5060" stroke="#e88a94" stroke-width="0.3"/>
<polygon points="532.2,379.9 549.7,389.2 549.4,391.0 532.0,381.6" fill="#b8303e" stroke="#b8303e" stroke-width="0.4"/>
<polygon points="549.7,389.2 544.8,393.0 544.5,395.8 549.3,392.0" fill="#a82a38" stroke="#a82a38" stroke-width="0.4"/>
<polygon points="532.2,379.9 549.7,389.2 544.8,393.0 530.8,380.9" fill="#dc5060" stroke="#e88a94" stroke-width="0.3"/>
<polygon points="533.6,339.4 544.6,329.5 544.3,331.4 533.4,341.3" fill="#b8303e" stroke="#b8303e" stroke-width="0.4"/>
<polygon points="544.6,329.5 550.4,332.9 550.0,335.9 544.2,332.5" fill="#a82a38" stroke="#a82a38" stroke-width="0.4"/>
<polygon points="533.6,339.4 544.6,329.5 550.4,332.9 535.2,340.5" fill="#dc5060" stroke="#e88a94" stroke-width="0.3"/>
<polygon points="535.5,338.6 550.7,331.0 550.4,332.9 535.2,340.5" fill="#b8303e" stroke="#b8303e" stroke-width="0.4"/>
<polygon points="550.7,331.0 555.2,335.2 554.7,338.2 550.2,334.0" fill="#a82a38" stroke="#a82a38" stroke-width="0.4"/>
<polygon points="535.5,338.6 550.7,331.0 555.2,335.2 536.7,339.8" fill="#dc5060" stroke="#e88a94" stroke-width="0.3"/>
<polygon points="536.9,337.9 555.4,333.3 555.2,335.2 536.7,339.8" fill="#b8303e" stroke="#b8303e" stroke-width="0.4"/>
<polygon points="555.4,333.3 558.3,338.0 557.9,341.0 555.0,336.3" fill="#a82a38" stroke="#a82a38" stroke-width="0.4"/>
<polygon points="536.9,337.9 555.4,333.3 558.3,338.0 537.7,339.2" fill="#dc5060" stroke="#e88a94" stroke-width="0.3"/>
<polygon points="537.9,337.3 558.6,336.1 558.3,338.0 537.7,339.2" fill="#b8303e" stroke="#b8303e" stroke-width="0.4"/>
<polygon points="558.6,336.1 559.6,341.0 559.1,344.1 558.2,339.1" fill="#a82a38" stroke="#a82a38" stroke-width="0.4"/>
<polygon points="537.9,337.3 558.6,336.1 559.6,341.0 538.1,338.7" fill="#dc5060" stroke="#e88a94" stroke-width="0.3"/>
<polygon points="529.3,298.8 519.8,287.6 519.6,289.6 529.1,300.9" fill="#b8303e" stroke="#b8303e" stroke-width="0.4"/>
<polygon points="519.8,287.6 527.1,286.7 526.8,289.9 519.5,290.9" fill="#a82a38" stroke="#a82a38" stroke-width="0.4"/>
<polygon points="529.3,298.8 519.8,287.6 527.1,286.7 531.5,298.5" fill="#dc5060" stroke="#e88a94" stroke-width="0.3"/>
<polygon points="538.4,336.8 559.9,339.0 559.6,341.0 538.1,338.7" fill="#b8303e" stroke="#b8303e" stroke-width="0.4"/>
<polygon points="559.9,339.0 558.8,343.9 558.3,347.0 559.4,342.2" fill="#a82a38" stroke="#a82a38" stroke-width="0.4"/>
<polygon points="538.4,336.8 559.9,339.0 558.8,343.9 538.0,338.1" fill="#dc5060" stroke="#e88a94" stroke-width="0.3"/>
<polygon points="527.2,301.5 513.1,291.6 513.0,293.7 527.0,303.6" fill="#b8303e" stroke="#b8303e" stroke-width="0.4"/>
<polygon points="513.1,291.6 519.6,289.6 519.3,292.9 512.9,294.9" fill="#a82a38" stroke="#a82a38" stroke-width="0.4"/>
<polygon points="527.2,301.5 513.1,291.6 519.6,289.6 529.1,300.9" fill="#dc5060" stroke="#e88a94" stroke-width="0.3"/>
<polygon points="531.7,296.4 527.3,284.6 527.1,286.7 531.5,298.5" fill="#b8303e" stroke="#b8303e" stroke-width="0.4"/>
<polygon points="527.3,284.6 535.0,284.7 534.7,288.0 527.0,287.9" fill="#a82a38" stroke="#a82a38" stroke-width="0.4"/>
<polygon points="531.7,296.4 527.3,284.6 535.0,284.7 534.0,296.4" fill="#dc5060" stroke="#e88a94" stroke-width="0.3"/>
<polygon points="525.5,304.4 507.7,296.6 507.6,298.7 525.3,306.5" fill="#b8303e" stroke="#b8303e" stroke-width="0.4"/>
<polygon points="507.7,296.6 513.0,293.7 512.7,296.9 507.5,299.9" fill="#a82a38" stroke="#a82a38" stroke-width="0.4"/>
<polygon points="525.5,304.4 507.7,296.6 513.0,293.7 527.0,303.6" fill="#dc5060" stroke="#e88a94" stroke-width="0.3"/>
<polygon points="534.2,294.3 535.3,282.7 535.0,284.7 534.0,296.4" fill="#b8303e" stroke="#b8303e" stroke-width="0.4"/>
<polygon points="535.3,282.7 542.9,283.9 542.6,287.2 534.9,286.0" fill="#a82a38" stroke="#a82a38" stroke-width="0.4"/>
<polygon points="534.2,294.3 535.3,282.7 542.9,283.9 536.5,294.7" fill="#dc5060" stroke="#e88a94" stroke-width="0.3"/>
<polygon points="524.3,307.6 503.9,302.4 503.7,304.5 524.1,309.7" fill="#b8303e" stroke="#b8303e" stroke-width="0.4"/>
<polygon points="503.9,302.4 507.6,298.7 507.3,301.9 503.6,305.7" fill="#a82a38" stroke="#a82a38" stroke-width="0.4"/>
<polygon points="524.3,307.6 503.9,302.4 507.6,298.7 525.3,306.5" fill="#dc5060" stroke="#e88a94" stroke-width="0.3"/>
<polygon points="538.2,336.2 559.1,341.9 558.8,343.9 538.0,338.1" fill="#b8303e" stroke="#b8303e" stroke-width="0.4"/>
<polygon points="559.1,341.9 555.9,346.3 555.5,349.5 558.6,345.1" fill="#a82a38" stroke="#a82a38" stroke-width="0.4"/>
<polygon points="538.2,336.2 559.1,341.9 555.9,346.3 537.3,337.4" fill="#dc5060" stroke="#e88a94" stroke-width="0.3"/>
<polygon points="536.7,292.6 543.2,281.8 542.9,283.9 536.5,294.7" fill="#b8303e" stroke="#b8303e" stroke-width="0.4"/>
<polygon points="543.2,281.8 550.4,284.1 549.9,287.4 542.8,285.2" fill="#a82a38" stroke="#a82a38" stroke-width="0.4"/>
<polygon points="536.7,292.6 543.2,281.8 550.4,284.1 538.8,293.2" fill="#dc5060" stroke="#e88a94" stroke-width="0.3"/>
<polygon points="537.5,335.4 556.2,344.3 555.9,346.3 537.3,337.4" fill="#b8303e" stroke="#b8303e" stroke-width="0.4"/>
<polygon points="556.2,344.3 551.1,347.9 550.7,351.1 555.8,347.5" fill="#a82a38" stroke="#a82a38" stroke-width="0.4"/>
<polygon points="537.5,335.4 556.2,344.3 551.1,347.9 536.0,336.4" fill="#dc5060" stroke="#e88a94" stroke-width="0.3"/>
<polygon points="539.1,291.1 550.6,282.0 550.4,284.1 538.8,293.2" fill="#b8303e" stroke="#b8303e" stroke-width="0.4"/>
<polygon points="550.6,282.0 556.9,285.1 556.4,288.4 550.2,285.3" fill="#a82a38" stroke="#a82a38" stroke-width="0.4"/>
<polygon points="539.1,291.1 550.6,282.0 556.9,285.1 540.9,292.0" fill="#dc5060" stroke="#e88a94" stroke-width="0.3"/>
<polygon points="541.1,289.9 557.2,282.9 556.9,285.1 540.9,292.0" fill="#b8303e" stroke="#b8303e" stroke-width="0.4"/>
<polygon points="557.2,282.9 562.1,286.8 561.6,290.2 556.7,286.3" fill="#a82a38" stroke="#a82a38" stroke-width="0.4"/>
<polygon points="541.1,289.9 557.2,282.9 562.1,286.8 542.5,291.0" fill="#dc5060" stroke="#e88a94" stroke-width="0.3"/>
<polygon points="542.7,288.8 562.4,284.6 562.1,286.8 542.5,291.0" fill="#b8303e" stroke="#b8303e" stroke-width="0.4"/>
<polygon points="562.4,284.6 565.6,288.9 565.1,292.4 561.9,288.1" fill="#a82a38" stroke="#a82a38" stroke-width="0.4"/>
<polygon points="542.7,288.8 562.4,284.6 565.6,288.9 543.6,290.1" fill="#dc5060" stroke="#e88a94" stroke-width="0.3"/>
<polygon points="543.8,287.9 565.9,286.7 565.6,288.9 543.6,290.1" fill="#b8303e" stroke="#b8303e" stroke-width="0.4"/>
<polygon points="565.9,286.7 567.0,291.3 566.5,294.8 565.4,290.2" fill="#a82a38" stroke="#a82a38" stroke-width="0.4"/>
<polygon points="543.8,287.9 565.9,286.7 567.0,291.3 544.1,289.2" fill="#dc5060" stroke="#e88a94" stroke-width="0.3"/>
<polygon points="534.8,244.9 524.5,234.9 524.3,237.3 534.6,247.3" fill="#b8303e" stroke="#b8303e" stroke-width="0.4"/>
<polygon points="524.5,234.9 532.3,234.1 531.9,237.8 524.1,238.7" fill="#a82a38" stroke="#a82a38" stroke-width="0.4"/>
<polygon points="534.8,244.9 524.5,234.9 532.3,234.1 537.1,244.6" fill="#dc5060" stroke="#e88a94" stroke-width="0.3"/>
<polygon points="544.3,287.0 567.4,289.1 567.0,291.3 544.1,289.2" fill="#b8303e" stroke="#b8303e" stroke-width="0.4"/>
<polygon points="567.4,289.1 566.3,293.5 565.8,297.1 566.8,292.6" fill="#a82a38" stroke="#a82a38" stroke-width="0.4"/>
<polygon points="544.3,287.0 567.4,289.1 566.3,293.5 543.9,288.2" fill="#dc5060" stroke="#e88a94" stroke-width="0.3"/>
<polygon points="532.6,247.8 517.4,239.0 517.2,241.4 532.3,250.2" fill="#b8303e" stroke="#b8303e" stroke-width="0.4"/>
<polygon points="517.4,239.0 524.3,237.3 523.9,241.0 517.1,242.8" fill="#a82a38" stroke="#a82a38" stroke-width="0.4"/>
<polygon points="532.6,247.8 517.4,239.0 524.3,237.3 534.6,247.3" fill="#dc5060" stroke="#e88a94" stroke-width="0.3"/>
<polygon points="537.4,242.2 532.5,231.8 532.3,234.1 537.1,244.6" fill="#b8303e" stroke="#b8303e" stroke-width="0.4"/>
<polygon points="532.5,231.8 540.7,231.9 540.3,235.7 532.1,235.5" fill="#a82a38" stroke="#a82a38" stroke-width="0.4"/>
<polygon points="537.4,242.2 532.5,231.8 540.7,231.9 539.9,242.2" fill="#dc5060" stroke="#e88a94" stroke-width="0.3"/>
<polygon points="530.7,251.0 511.6,244.0 511.4,246.3 530.5,253.4" fill="#b8303e" stroke="#b8303e" stroke-width="0.4"/>
<polygon points="511.6,244.0 517.2,241.4 516.9,245.1 511.3,247.7" fill="#a82a38" stroke="#a82a38" stroke-width="0.4"/>
<polygon points="530.7,251.0 511.6,244.0 517.2,241.4 532.3,250.2" fill="#dc5060" stroke="#e88a94" stroke-width="0.3"/>
<polygon points="540.1,239.8 541.0,229.6 540.7,231.9 539.9,242.2" fill="#b8303e" stroke="#b8303e" stroke-width="0.4"/>
<polygon points="541.0,229.6 549.2,230.6 548.8,234.4 540.6,233.3" fill="#a82a38" stroke="#a82a38" stroke-width="0.4"/>
<polygon points="540.1,239.8 541.0,229.6 549.2,230.6 542.6,240.2" fill="#dc5060" stroke="#e88a94" stroke-width="0.3"/>
<polygon points="529.5,254.4 507.5,249.7 507.4,252.0 529.2,256.7" fill="#b8303e" stroke="#b8303e" stroke-width="0.4"/>
<polygon points="507.5,249.7 511.4,246.3 511.2,250.0 507.3,253.4" fill="#a82a38" stroke="#a82a38" stroke-width="0.4"/>
<polygon points="529.5,254.4 507.5,249.7 511.4,246.3 530.5,253.4" fill="#dc5060" stroke="#e88a94" stroke-width="0.3"/>
<polygon points="544.2,286.0 566.7,291.3 566.3,293.5 543.9,288.2" fill="#b8303e" stroke="#b8303e" stroke-width="0.4"/>
<polygon points="566.7,291.3 563.4,295.3 562.9,298.9 566.1,294.9" fill="#a82a38" stroke="#a82a38" stroke-width="0.4"/>
<polygon points="544.2,286.0 566.7,291.3 563.4,295.3 543.2,287.1" fill="#dc5060" stroke="#e88a94" stroke-width="0.3"/>
<polygon points="542.8,237.7 549.5,228.3 549.2,230.6 542.6,240.2" fill="#b8303e" stroke="#b8303e" stroke-width="0.4"/>
<polygon points="549.5,228.3 557.2,230.2 556.7,234.1 549.0,232.1" fill="#a82a38" stroke="#a82a38" stroke-width="0.4"/>
<polygon points="542.8,237.7 549.5,228.3 557.2,230.2 545.1,238.3" fill="#dc5060" stroke="#e88a94" stroke-width="0.3"/>
<polygon points="543.5,284.9 563.7,293.0 563.4,295.3 543.2,287.1" fill="#b8303e" stroke="#b8303e" stroke-width="0.4"/>
<polygon points="563.7,293.0 558.4,296.3 557.8,300.0 563.2,296.7" fill="#a82a38" stroke="#a82a38" stroke-width="0.4"/>
<polygon points="543.5,284.9 563.7,293.0 558.4,296.3 541.9,285.7" fill="#dc5060" stroke="#e88a94" stroke-width="0.3"/>
<polygon points="545.4,235.9 557.5,227.8 557.2,230.2 545.1,238.3" fill="#b8303e" stroke="#b8303e" stroke-width="0.4"/>
<polygon points="557.5,227.8 564.3,230.6 563.8,234.4 557.0,231.7" fill="#a82a38" stroke="#a82a38" stroke-width="0.4"/>
<polygon points="545.4,235.9 557.5,227.8 564.3,230.6 547.3,236.7" fill="#dc5060" stroke="#e88a94" stroke-width="0.3"/>
<polygon points="547.6,234.2 564.6,228.1 564.3,230.6 547.3,236.7" fill="#b8303e" stroke="#b8303e" stroke-width="0.4"/>
<polygon points="564.6,228.1 570.0,231.5 569.4,235.4 564.1,232.0" fill="#a82a38" stroke="#a82a38" stroke-width="0.4"/>
<polygon points="547.6,234.2 564.6,228.1 570.0,231.5 549.1,235.2" fill="#dc5060" stroke="#e88a94" stroke-width="0.3"/>
<polygon points="549.4,232.7 570.3,229.0 570.0,231.5 549.1,235.2" fill="#b8303e" stroke="#b8303e" stroke-width="0.4"/>
<polygon points="570.3,229.0 573.9,232.8 573.3,236.8 569.8,233.0" fill="#a82a38" stroke="#a82a38" stroke-width="0.4"/>
<polygon points="549.4,232.7 570.3,229.0 573.9,232.8 550.3,233.8" fill="#dc5060" stroke="#e88a94" stroke-width="0.3"/>
<polygon points="550.6,231.3 574.2,230.3 573.9,232.8 550.3,233.8" fill="#b8303e" stroke="#b8303e" stroke-width="0.4"/>
<polygon points="574.2,230.3 575.6,234.3 575.0,238.3 573.6,234.3" fill="#a82a38" stroke="#a82a38" stroke-width="0.4"/>
<polygon points="550.6,231.3 574.2,230.3 575.6,234.3 550.9,232.4" fill="#dc5060" stroke="#e88a94" stroke-width="0.3"/>
<polygon points="551.2,229.9 576.0,231.7 575.6,234.3 550.9,232.4" fill="#b8303e" stroke="#b8303e" stroke-width="0.4"/>
<polygon points="576.0,231.7 575.0,235.6 574.4,239.7 575.4,235.8" fill="#a82a38" stroke="#a82a38" stroke-width="0.4"/>
<polygon points="551.2,229.9 576.0,231.7 575.0,235.6 550.8,230.9" fill="#dc5060" stroke="#e88a94" stroke-width="0.3"/>
<polygon points="551.1,228.4 575.4,233.0 575.0,235.6 550.8,230.9" fill="#b8303e" stroke="#b8303e" stroke-width="0.4"/>
<polygon points="575.4,233.0 572.0,236.5 571.4,240.7 574.8,237.1" fill="#a82a38" stroke="#a82a38" stroke-width="0.4"/>
<polygon points="551.1,228.4 575.4,233.0 572.0,236.5 550.1,229.3" fill="#dc5060" stroke="#e88a94" stroke-width="0.3"/>
<polygon points="550.4,226.7 572.4,233.9 572.0,236.5 550.1,229.3" fill="#b8303e" stroke="#b8303e" stroke-width="0.4"/>
<polygon points="572.4,233.9 566.7,236.7 566.1,241.0 571.7,238.1" fill="#a82a38" stroke="#a82a38" stroke-width="0.4"/>
<polygon points="550.4,226.7 572.4,233.9 566.7,236.7 548.7,227.5" fill="#dc5060" stroke="#e88a94" stroke-width="0.3"/>
</g>
<polygon points="585.8,383.5 583.0,386.8 579.0,407.3 581.8,404.0" fill="#b9663a"/>
<polygon points="583.0,386.8 577.8,384.1 574.0,404.6 579.0,407.3" fill="#db7d47"/>
<polygon points="593.3,345.8 590.4,348.9 583.0,386.8 585.8,383.5" fill="#b9663a"/>
<polygon points="590.4,348.9 584.8,346.4 577.8,384.1 583.0,386.8" fill="#db7d47"/>
<polygon points="552.5,403.6 549.3,407.2 546.2,428.1 549.3,424.5" fill="#b9663a"/>
<polygon points="549.3,407.2 544.1,404.2 541.1,425.1 546.2,428.1" fill="#db7d47"/>
<polygon points="547.2,405.0 555.7,409.7 555.0,414.1 546.6,409.3" fill="#db7d47"/>
<polygon points="555.7,409.7 558.6,406.4 557.9,410.7 555.0,414.1" fill="#b9663a"/>
<polygon points="547.2,405.0 555.7,409.7 558.6,406.4 550.2,401.7" fill="#e68f58"/>
<polygon points="555.2,409.4 562.7,415.4 561.9,419.7 554.5,413.7" fill="#d47844"/>
<polygon points="562.7,415.4 566.6,412.5 565.8,416.9 561.9,419.7" fill="#ba663a"/>
<polygon points="555.2,409.4 562.7,415.4 566.6,412.5 559.1,406.7" fill="#e68f58"/>
<polygon points="558.4,365.1 555.1,368.5 549.3,407.2 552.5,403.6" fill="#b9663a"/>
<polygon points="555.1,368.5 549.5,365.7 544.1,404.2 549.3,407.2" fill="#db7d47"/>
<polygon points="562.3,415.0 568.4,422.0 567.6,426.3 561.5,419.3" fill="#ce7442"/>
<polygon points="568.4,422.0 573.2,419.8 572.4,424.2 567.6,426.3" fill="#bc683b"/>
<polygon points="562.3,415.0 568.4,422.0 573.2,419.8 567.0,412.9" fill="#e68f58"/>
<polygon points="602.1,301.3 599.1,304.1 590.4,348.9 593.3,345.8" fill="#b9663a"/>
<polygon points="599.1,304.1 593.1,301.8 584.8,346.4 590.4,348.9" fill="#db7d47"/>
<polygon points="568.1,421.5 572.6,429.3 571.8,433.7 567.3,425.9" fill="#c87040"/>
<polygon points="572.6,429.3 578.1,428.0 577.3,432.4 571.8,433.7" fill="#bf6a3c"/>
<polygon points="568.1,421.5 572.6,429.3 578.1,428.0 573.5,420.3" fill="#e68f58"/>
<polygon points="552.8,366.4 561.9,371.0 561.1,375.8 552.1,371.2" fill="#db7d47"/>
<polygon points="561.9,371.0 564.9,367.8 564.2,372.6 561.1,375.8" fill="#b9663a"/>
<polygon points="552.8,366.4 561.9,371.0 564.9,367.8 555.9,363.3" fill="#e68f58"/>
<polygon points="581.5,438.4 578.3,442.6 573.9,464.0 577.0,459.8" fill="#b9663a"/>
<polygon points="578.3,442.6 572.4,439.2 568.2,460.5 573.9,464.0" fill="#db7d47"/>
<polygon points="572.4,428.8 575.1,437.2 574.2,441.6 571.6,433.2" fill="#c26c3e"/>
<polygon points="575.1,437.2 581.1,436.8 580.2,441.2 574.2,441.6" fill="#c46d3e"/>
<polygon points="572.4,428.8 575.1,437.2 581.1,436.8 578.3,428.5" fill="#e68f58"/>
<polygon points="561.4,370.7 569.4,376.4 568.5,381.3 560.6,375.5" fill="#d47844"/>
<polygon points="569.4,376.4 573.5,373.7 572.6,378.5 568.5,381.3" fill="#ba663a"/>
<polygon points="561.4,370.7 569.4,376.4 573.5,373.7 565.4,368.1" fill="#e68f58"/>
<polygon points="575.0,436.7 575.6,445.3 574.7,449.7 574.1,441.1" fill="#be693c"/>
<polygon points="575.6,445.3 582.0,446.0 581.0,450.4 574.7,449.7" fill="#c97140"/>
<polygon points="575.0,436.7 575.6,445.3 582.0,446.0 581.2,437.3" fill="#e68f58"/>
<polygon points="568.9,376.0 575.6,382.8 574.7,387.7 568.1,380.9" fill="#ce7442"/>
<polygon points="575.6,382.8 580.6,380.7 579.7,385.6 574.7,387.7" fill="#bc683b"/>
<polygon points="568.9,376.0 575.6,382.8 580.6,380.7 573.9,374.1" fill="#e68f58"/>
<polygon points="565.5,319.2 562.0,322.5 555.1,368.5 558.4,365.1" fill="#b9663a"/>
<polygon points="562.0,322.5 556.0,319.8 549.5,365.7 555.1,368.5" fill="#db7d47"/>
<polygon points="612.1,250.8 609.0,253.4 599.1,304.1 602.1,301.3" fill="#b9663a"/>
<polygon points="609.0,253.4 602.5,251.2 593.1,301.8 599.1,304.1" fill="#db7d47"/>
<polygon points="575.6,444.8 574.0,453.2 573.2,457.7 574.8,449.2" fill="#bb673b"/>
<polygon points="574.0,453.2 580.5,455.0 579.5,459.4 573.2,457.7" fill="#cf7542"/>
<polygon points="575.6,444.8 574.0,453.2 580.5,455.0 581.9,446.5" fill="#e68f58"/>
<polygon points="575.2,382.4 580.2,389.9 579.2,394.8 574.3,387.2" fill="#c87040"/>
<polygon points="580.2,389.9 586.0,388.6 585.0,393.6 579.2,394.8" fill="#bf6a3c"/>
<polygon points="575.2,382.4 580.2,389.9 586.0,388.6 580.9,381.1" fill="#e68f58"/>
<polygon points="589.8,398.7 586.4,402.8 578.3,442.6 581.5,438.4" fill="#b9663a"/>
<polygon points="586.4,402.8 580.1,399.4 572.4,439.2 578.3,442.6" fill="#db7d47"/>
<polygon points="570.4,460.7 576.5,463.6 575.6,468.0 569.5,465.2" fill="#d67a45"/>
<polygon points="576.5,463.6 580.3,455.5 579.4,459.9 575.6,468.0" fill="#b9663a"/>
<polygon points="574.2,452.7 570.4,460.7 576.5,463.6 580.3,455.5" fill="#e68f58"/>
<polygon points="559.5,320.5 569.3,324.8 568.4,330.3 558.7,326.0" fill="#db7d47"/>
<polygon points="569.3,324.8 572.5,321.8 571.6,327.2 568.4,330.3" fill="#b9663a"/>
<polygon points="559.5,320.5 569.3,324.8 572.5,321.8 562.8,317.5" fill="#e68f58"/>
<polygon points="579.9,389.4 582.9,397.5 582.0,402.5 579.0,394.4" fill="#c26c3e"/>
<polygon points="582.9,397.5 589.3,397.2 588.3,402.1 582.0,402.5" fill="#c46d3e"/>
<polygon points="579.9,389.4 582.9,397.5 589.3,397.2 586.2,389.1" fill="#e68f58"/>
<polygon points="564.6,467.3 570.2,471.2 569.4,475.6 563.8,471.8" fill="#d97c46"/>
<polygon points="570.2,471.2 576.2,464.0 575.3,468.5 569.4,475.6" fill="#b9663a"/>
<polygon points="570.6,460.3 564.6,467.3 570.2,471.2 576.2,464.0" fill="#e68f58"/>
<polygon points="568.7,324.5 577.4,329.9 576.4,335.4 567.8,330.0" fill="#d47844"/>
<polygon points="577.4,329.9 581.7,327.3 580.7,332.9 576.4,335.4" fill="#ba663a"/>
<polygon points="568.7,324.5 577.4,329.9 581.7,327.3 573.0,322.0" fill="#e68f58"/>
<polygon points="501.2,257.2 507.8,257.5 507.4,263.6 500.8,263.3" fill="#c87040"/>
<polygon points="507.8,257.5 508.2,251.1 501.7,250.8 501.2,257.2" fill="#e68f58"/>
<polygon points="582.8,397.0 583.6,405.4 582.6,410.4 581.9,402.0" fill="#be693c"/>
<polygon points="583.6,405.4 590.4,406.1 589.4,411.0 582.6,410.4" fill="#c97140"/>
<polygon points="582.8,397.0 583.6,405.4 590.4,406.1 589.5,397.7" fill="#e68f58"/>
<polygon points="557.0,472.7 561.8,477.4 561.0,481.9 556.2,477.2" fill="#d27744"/>
<polygon points="561.8,477.4 569.8,471.6 568.9,476.0 561.0,481.9" fill="#ba673a"/>
<polygon points="565.0,466.9 557.0,472.7 561.8,477.4 569.8,471.6" fill="#e68f58"/>
<polygon points="576.9,329.6 584.1,335.9 583.1,341.5 575.9,335.1" fill="#ce7442"/>
<polygon points="584.1,335.9 589.4,334.0 588.4,339.5 583.1,341.5" fill="#bc683b"/>
<polygon points="576.9,329.6 584.1,335.9 589.4,334.0 582.1,327.7" fill="#e68f58"/>
<polygon points="573.5,267.0 569.9,269.9 562.0,322.5 565.5,319.2" fill="#b9663a"/>
<polygon points="569.9,269.9 563.3,267.5 556.0,319.8 562.0,322.5" fill="#db7d47"/>
<polygon points="501.4,257.8 506.2,264.4 505.7,270.6 501.0,264.0" fill="#c87040"/>
<polygon points="506.2,264.4 512.5,263.4 512.0,269.6 505.7,270.6" fill="#bf6a3c"/>
<polygon points="512.5,263.4 507.6,256.9 501.4,257.8 506.2,264.4" fill="#e68f58"/>
<polygon points="583.7,404.9 582.1,413.1 581.1,418.2 582.7,409.9" fill="#bb673b"/>
<polygon points="582.1,413.1 589.0,414.9 587.9,419.9 581.1,418.2" fill="#cf7542"/>
<polygon points="583.7,404.9 582.1,413.1 589.0,414.9 590.4,406.6" fill="#e68f58"/>
<polygon points="583.7,335.5 589.2,342.6 588.1,348.3 582.7,341.1" fill="#c87040"/>
<polygon points="589.2,342.6 595.4,341.4 594.3,347.1 588.1,348.3" fill="#bf6a3c"/>
<polygon points="583.7,335.5 589.2,342.6 595.4,341.4 589.8,334.4" fill="#e68f58"/>
<polygon points="565.6,266.1 572.2,267.8 571.3,274.0 564.7,272.4" fill="#d47944"/>
<polygon points="572.2,267.8 576.5,261.6 575.5,267.8 571.3,274.0" fill="#ba663a"/>
<polygon points="570.0,260.1 565.6,266.1 572.2,267.8 576.5,261.6" fill="#e68f58"/>
<polygon points="599.7,351.0 596.2,354.9 586.4,402.8 589.8,398.7" fill="#b9663a"/>
<polygon points="596.2,354.9 589.3,351.7 580.1,399.4 586.4,402.8" fill="#db7d47"/>
<polygon points="578.3,420.4 584.9,423.2 583.9,428.3 577.3,425.5" fill="#d67a45"/>
<polygon points="584.9,423.2 588.8,415.4 587.7,420.4 583.9,428.3" fill="#b9663a"/>
<polygon points="582.3,412.7 578.3,420.4 584.9,423.2 588.8,415.4" fill="#e68f58"/>
<polygon points="506.9,265.0 516.5,270.5 516.0,276.8 506.4,271.2" fill="#d47944"/>
<polygon points="516.5,270.5 521.5,268.3 520.9,274.5 516.0,276.8" fill="#ba663a"/>
<polygon points="521.5,268.3 511.8,262.8 506.9,265.0 516.5,270.5" fill="#e68f58"/>
<polygon points="567.2,268.1 577.7,272.0 576.7,278.3 566.2,274.4" fill="#db7d47"/>
<polygon points="577.7,272.0 581.0,269.3 580.0,275.5 576.7,278.3" fill="#b9663a"/>
<polygon points="567.2,268.1 577.7,272.0 581.0,269.3 570.6,265.5" fill="#e68f58"/>
<polygon points="556.9,270.1 562.2,272.9 561.3,279.2 556.1,276.4" fill="#d47944"/>
<polygon points="562.2,272.9 571.6,268.3 570.6,274.6 561.3,279.2" fill="#ba663a"/>
<polygon points="566.3,265.6 556.9,270.1 562.2,272.9 571.6,268.3" fill="#e68f58"/>
<polygon points="589.0,342.2 592.4,349.9 591.2,355.5 587.9,347.8" fill="#c26c3e"/>
<polygon points="592.4,349.9 599.2,349.5 598.0,355.2 591.2,355.5" fill="#c46d3e"/>
<polygon points="589.0,342.2 592.4,349.9 599.2,349.5 595.7,341.9" fill="#e68f58"/>
<polygon points="504.0,211.6 511.0,211.9 510.6,218.7 503.6,218.4" fill="#c87040"/>
<polygon points="511.0,211.9 511.4,206.2 504.5,205.9 504.0,211.6" fill="#e68f58"/>
<polygon points="572.3,426.9 578.4,430.7 577.4,435.8 571.3,432.0" fill="#d97c46"/>
<polygon points="578.4,430.7 584.6,423.7 583.6,428.7 577.4,435.8" fill="#b9663a"/>
<polygon points="578.6,420.0 572.3,426.9 578.4,430.7 584.6,423.7" fill="#e68f58"/>
<polygon points="517.7,271.0 530.9,274.5 530.2,280.8 517.1,277.3" fill="#d47944"/>
<polygon points="530.9,274.5 533.5,271.3 532.8,277.6 530.2,280.8" fill="#ba663a"/>
<polygon points="533.5,271.3 520.4,267.8 517.7,271.0 530.9,274.5" fill="#e68f58"/>
<polygon points="545.1,271.9 548.0,275.4 547.2,281.8 544.3,278.2" fill="#c87040"/>
<polygon points="548.0,275.4 561.1,273.3 560.2,279.6 547.2,281.8" fill="#bf6a3c"/>
<polygon points="558.0,269.8 545.1,271.9 548.0,275.4 561.1,273.3" fill="#e68f58"/>
<polygon points="577.1,271.8 586.5,276.7 585.4,283.0 576.1,278.1" fill="#d47844"/>
<polygon points="586.5,276.7 591.1,274.3 589.9,280.7 585.4,283.0" fill="#ba663a"/>
<polygon points="577.1,271.8 586.5,276.7 591.1,274.3 581.6,269.5" fill="#e68f58"/>
<polygon points="532.1,271.1 532.2,274.7 531.6,281.0 531.5,277.4" fill="#bf6a3c"/>
<polygon points="532.2,274.7 546.7,275.5 545.9,281.8 531.6,281.0" fill="#c87040"/>
<polygon points="546.4,271.8 532.1,271.1 532.2,274.7 546.7,275.5" fill="#e68f58"/>
<polygon points="564.3,432.2 569.5,436.8 568.5,441.9 563.4,437.3" fill="#d27744"/>
<polygon points="569.5,436.8 577.9,431.1 576.9,436.1 568.5,441.9" fill="#ba673a"/>
<polygon points="572.7,426.5 564.3,432.2 569.5,436.8 577.9,431.1" fill="#e68f58"/>
<polygon points="592.2,349.4 593.3,357.3 592.1,363.1 591.1,355.1" fill="#be693c"/>
<polygon points="593.3,357.3 600.6,358.0 599.4,363.7 592.1,363.1" fill="#c97140"/>
<polygon points="592.2,349.4 593.3,357.3 600.6,358.0 599.4,350.0" fill="#e68f58"/>
<polygon points="580.7,220.3 576.9,222.9 569.9,269.9 573.5,267.0" fill="#b9663a"/>
<polygon points="576.9,222.9 569.9,220.7 563.3,267.5 569.9,269.9" fill="#db7d47"/>
<polygon points="504.2,212.2 509.4,217.9 508.9,224.9 503.8,219.0" fill="#c87040"/>
<polygon points="509.4,217.9 516.1,217.1 515.5,224.0 508.9,224.9" fill="#bf6a3c"/>
<polygon points="516.1,217.1 510.8,211.3 504.2,212.2 509.4,217.9" fill="#e68f58"/>
<polygon points="586.0,276.3 593.9,282.1 592.8,288.6 584.9,282.7" fill="#ce7442"/>
<polygon points="593.9,282.1 599.6,280.4 598.4,286.8 592.8,288.6" fill="#bc683b"/>
<polygon points="586.0,276.3 593.9,282.1 599.6,280.4 591.6,274.7" fill="#e68f58"/>
<polygon points="528.3,222.1 524.0,224.7 519.8,272.0 524.0,269.1" fill="#b9663a"/>
<polygon points="524.0,224.7 517.4,222.6 513.7,269.6 519.8,272.0" fill="#db7d47"/>
<polygon points="572.3,219.5 579.3,221.0 578.3,228.0 571.3,226.5" fill="#d47944"/>
<polygon points="579.3,221.0 583.7,215.5 582.6,222.4 578.3,228.0" fill="#ba663a"/>
<polygon points="576.7,214.1 572.3,219.5 579.3,221.0 583.7,215.5" fill="#e68f58"/>
<polygon points="593.3,356.9 591.8,364.7 590.7,370.5 592.2,362.6" fill="#bb673b"/>
<polygon points="591.8,364.7 599.3,366.4 598.0,372.2 590.7,370.5" fill="#cf7542"/>
<polygon points="593.3,356.9 591.8,364.7 599.3,366.4 600.6,358.4" fill="#e68f58"/>
<polygon points="510.1,218.5 520.4,223.4 519.9,230.4 509.6,225.4" fill="#d47944"/>
<polygon points="520.4,223.4 525.7,221.4 525.0,228.4 519.9,230.4" fill="#ba663a"/>
<polygon points="525.7,221.4 515.3,216.6 510.1,218.5 520.4,223.4" fill="#e68f58"/>
<polygon points="593.5,281.8 599.6,288.3 598.4,294.8 592.4,288.2" fill="#c87040"/>
<polygon points="599.6,288.3 606.2,287.2 604.9,293.7 598.4,294.8" fill="#bf6a3c"/>
<polygon points="593.5,281.8 599.6,288.3 606.2,287.2 600.0,280.7" fill="#e68f58"/>
<polygon points="611.2,295.9 607.6,299.5 596.2,354.9 599.7,351.0" fill="#b9663a"/>
<polygon points="607.6,299.5 600.0,296.5 589.3,351.7 596.2,354.9" fill="#db7d47"/>
<polygon points="563.2,223.1 568.8,225.5 567.8,232.6 562.2,230.1" fill="#d47944"/>
<polygon points="568.8,225.5 578.6,221.5 577.6,228.5 567.8,232.6" fill="#ba663a"/>
<polygon points="573.0,219.1 563.2,223.1 568.8,225.5 578.6,221.5" fill="#e68f58"/>
<polygon points="587.9,371.7 595.1,374.3 593.9,380.2 586.8,377.5" fill="#d67a45"/>
<polygon points="595.1,374.3 599.1,366.8 597.9,372.6 593.9,380.2" fill="#b9663a"/>
<polygon points="592.0,364.3 587.9,371.7 595.1,374.3 599.1,366.8" fill="#e68f58"/>
<polygon points="521.6,223.8 535.7,226.9 535.0,234.0 521.0,230.8" fill="#d47944"/>
<polygon points="535.7,226.9 538.4,224.1 537.7,231.1 535.0,234.0" fill="#ba663a"/>
<polygon points="538.4,224.1 524.5,221.0 521.6,223.8 535.7,226.9" fill="#e68f58"/>
<polygon points="550.7,224.6 553.9,227.7 553.0,234.9 549.8,231.7" fill="#c87040"/>
<polygon points="553.9,227.7 567.7,225.8 566.7,232.9 553.0,234.9" fill="#bf6a3c"/>
<polygon points="564.3,222.8 550.7,224.6 553.9,227.7 567.7,225.8" fill="#e68f58"/>
<polygon points="537.0,223.9 537.1,227.1 536.4,234.2 536.2,230.9" fill="#bf6a3c"/>
<polygon points="537.1,227.1 552.5,227.8 551.6,234.9 536.4,234.2" fill="#c87040"/>
<polygon points="552.1,224.6 537.0,223.9 537.1,227.1 552.5,227.8" fill="#e68f58"/>
<polygon points="599.3,287.9 603.2,294.9 601.9,301.5 598.1,294.4" fill="#c26c3e"/>
<polygon points="603.2,294.9 610.6,294.6 609.2,301.2 601.9,301.5" fill="#c46d3e"/>
<polygon points="599.3,287.9 603.2,294.9 610.6,294.6 606.5,287.6" fill="#e68f58"/>
<polygon points="581.6,377.9 588.3,381.5 587.1,387.4 580.5,383.7" fill="#d97c46"/>
<polygon points="588.3,381.5 594.8,374.8 593.6,380.6 587.1,387.4" fill="#b9663a"/>
<polygon points="588.3,371.3 581.6,377.9 588.3,381.5 594.8,374.8" fill="#e68f58"/>
<polygon points="573.1,382.9 578.8,387.4 577.7,393.3 572.1,388.8" fill="#d27744"/>
<polygon points="578.8,387.4 587.8,381.9 586.6,387.8 577.7,393.3" fill="#ba673a"/>
<polygon points="582.1,377.5 573.1,382.9 578.8,387.4 587.8,381.9" fill="#e68f58"/>
<polygon points="603.1,294.4 604.5,301.7 603.1,308.4 601.8,301.0" fill="#be693c"/>
<polygon points="604.5,301.7 612.3,302.3 610.9,309.0 603.1,308.4" fill="#c97140"/>
<polygon points="603.1,294.4 604.5,301.7 612.3,302.3 610.8,295.0" fill="#e68f58"/>
<polygon points="604.5,301.3 603.1,308.5 601.8,315.3 603.1,308.0" fill="#bb673b"/>
<polygon points="603.1,308.5 611.2,310.0 609.8,316.8 601.8,315.3" fill="#cf7542"/>
<polygon points="604.5,301.3 603.1,308.5 611.2,310.0 612.4,302.7" fill="#e68f58"/>
<polygon points="599.1,315.0 607.0,317.4 605.6,324.3 597.8,321.8" fill="#d67a45"/>
<polygon points="607.0,317.4 611.1,310.5 609.6,317.2 605.6,324.3" fill="#b9663a"/>
<polygon points="603.3,308.1 599.1,315.0 607.0,317.4 611.1,310.5" fill="#e68f58"/>
<polygon points="592.5,320.7 599.8,324.0 598.4,331.0 591.2,327.6" fill="#d97c46"/>
<polygon points="599.8,324.0 606.7,317.8 605.3,324.7 598.4,331.0" fill="#b9663a"/>
<polygon points="599.5,314.6 592.5,320.7 599.8,324.0 606.7,317.8" fill="#e68f58"/>
<polygon points="583.4,325.3 589.7,329.5 588.4,336.5 582.2,332.3" fill="#d27744"/>
<polygon points="589.7,329.5 599.3,324.4 597.9,331.3 588.4,336.5" fill="#ba673a"/>
<polygon points="593.0,320.3 583.4,325.3 589.7,329.5 599.3,324.4" fill="#e68f58"/>
<path d="M264.2 355.9 l6 5 M270.2 355.9 l-6 5 M264.7 358.4 h5" stroke="#303030" stroke-opacity="1.00" stroke-width="1.1" fill="none"/>
<path d="M298.7 382.9 l6 5 M304.7 382.9 l-6 5 M299.2 385.4 h5" stroke="#303030" stroke-opacity="1.00" stroke-width="1.1" fill="none"/>
<path d="M321.0 323.9 l6 5 M327.0 323.9 l-6 5 M321.5 326.4 h5" stroke="#303030" stroke-opacity="0.35" stroke-width="1.1" fill="none"/>
<path d="M356.0 346.3 l6 5 M362.0 346.3 l-6 5 M356.5 348.8 h5" stroke="#303030" stroke-opacity="0.35" stroke-width="1.1" fill="none"/>
<path d="M340.5 312.9 l6 5 M346.5 312.9 l-6 5 M341.0 315.4 h5" stroke="#303030" stroke-opacity="0.35" stroke-width="1.1" fill="none"/>
<path d="M375.6 333.9 l6 5 M381.6 333.9 l-6 5 M376.1 336.4 h5" stroke="#303030" stroke-opacity="0.35" stroke-width="1.1" fill="none"/>
<path d="M386.2 287.2 l6 5 M392.2 287.2 l-6 5 M386.7 289.7 h5" stroke="#303030" stroke-opacity="0.35" stroke-width="1.1" fill="none"/>
<path d="M421.0 305.0 l6 5 M427.0 305.0 l-6 5 M421.5 307.5 h5" stroke="#303030" stroke-opacity="0.35" stroke-width="1.1" fill="none"/>
<path d="M310.8 392.4 l6 5 M316.8 392.4 l-6 5 M311.3 394.9 h5" stroke="#303030" stroke-opacity="1.00" stroke-width="1.1" fill="none"/>
<path d="M336.7 375.1 l6 5 M342.7 375.1 l-6 5 M337.2 377.6 h5" stroke="#303030" stroke-opacity="0.35" stroke-width="1.1" fill="none"/>
<path d="M375.5 349.3 l6 5 M381.5 349.3 l-6 5 M376.0 351.8 h5" stroke="#303030" stroke-opacity="0.35" stroke-width="1.1" fill="none"/>
<path d="M407.4 328.1 l6 5 M413.4 328.1 l-6 5 M407.9 330.6 h5" stroke="#303030" stroke-opacity="0.35" stroke-width="1.1" fill="none"/>
<path d="M434.4 361.7 l6 5 M440.4 361.7 l-6 5 M434.9 364.2 h5" stroke="#303030" stroke-opacity="0.35" stroke-width="1.1" fill="none"/>
<path d="M352.3 424.8 l6 5 M358.3 424.8 l-6 5 M352.8 427.3 h5" stroke="#303030" stroke-opacity="1.00" stroke-width="1.1" fill="none"/>
<path d="M396.4 390.9 l6 5 M402.4 390.9 l-6 5 M396.9 393.4 h5" stroke="#303030" stroke-opacity="0.35" stroke-width="1.1" fill="none"/>
<path d="M371.7 440.0 l6 5 M377.7 440.0 l-6 5 M372.2 442.5 h5" stroke="#303030" stroke-opacity="1.00" stroke-width="1.1" fill="none"/>
<path d="M460.8 409.1 l6 5 M466.8 409.1 l-6 5 M461.3 411.6 h5" stroke="#303030" stroke-opacity="0.35" stroke-width="1.1" fill="none"/>
<path d="M412.0 474.8 l6 5 M418.0 474.8 l-6 5 M412.5 477.3 h5" stroke="#303030" stroke-opacity="1.00" stroke-width="1.1" fill="none"/>
<path d="M463.0 426.1 l6 5 M469.0 426.1 l-6 5 M463.5 428.6 h5" stroke="#303030" stroke-opacity="0.35" stroke-width="1.1" fill="none"/>
<path d="M490.2 492.5 l6 5 M496.2 492.5 l-6 5 M490.7 495.0 h5" stroke="#303030" stroke-opacity="0.35" stroke-width="1.1" fill="none"/>
<path d="M479.8 528.1 l6 5 M485.8 528.1 l-6 5 M480.3 530.6 h5" stroke="#303030" stroke-opacity="1.00" stroke-width="1.1" fill="none"/>
<path d="M474.2 383.4 l6 5 M480.2 383.4 l-6 5 M474.7 385.9 h5" stroke="#303030" stroke-opacity="0.35" stroke-width="1.1" fill="none"/>
<path d="M549.0 379.0 l6 5 M555.0 379.0 l-6 5 M549.5 381.5 h5" stroke="#303030" stroke-opacity="0.35" stroke-width="1.1" fill="none"/>
<path d="M449.2 360.6 l6 5 M455.2 360.6 l-6 5 M449.7 363.1 h5" stroke="#303030" stroke-opacity="0.35" stroke-width="1.1" fill="none"/>
<path d="M481.1 333.3 l6 5 M487.1 333.3 l-6 5 M481.6 335.8 h5" stroke="#303030" stroke-opacity="0.35" stroke-width="1.1" fill="none"/>
<path d="M526.4 356.3 l6 5 M532.4 356.3 l-6 5 M526.9 358.8 h5" stroke="#303030" stroke-opacity="0.35" stroke-width="1.1" fill="none"/>
<path d="M574.9 404.8 l6 5 M580.9 404.8 l-6 5 M575.4 407.3 h5" stroke="#303030" stroke-opacity="1.00" stroke-width="1.1" fill="none"/>
<path d="M607.5 403.0 l6 5 M613.5 403.0 l-6 5 M608.0 405.5 h5" stroke="#303030" stroke-opacity="1.00" stroke-width="1.1" fill="none"/>
<path d="M540.4 501.9 l6 5 M546.4 501.9 l-6 5 M540.9 504.4 h5" stroke="#303030" stroke-opacity="1.00" stroke-width="1.1" fill="none"/>
<path d="M569.6 460.7 l6 5 M575.6 460.7 l-6 5 M570.1 463.2 h5" stroke="#303030" stroke-opacity="1.00" stroke-width="1.1" fill="none"/>
<path d="M496.4 397.9 l6 5 M502.4 397.9 l-6 5 M496.9 400.4 h5" stroke="#303030" stroke-opacity="0.35" stroke-width="1.1" fill="none"/>
<path d="M542.2 425.3 l6 5 M548.2 425.3 l-6 5 M542.7 427.8 h5" stroke="#303030" stroke-opacity="0.35" stroke-width="1.1" fill="none"/>
<path d="M502.4 428.0 l6 5 M508.4 428.0 l-6 5 M502.9 430.5 h5" stroke="#303030" stroke-opacity="0.35" stroke-width="1.1" fill="none"/>
<path d="M533.7 395.1 l6 5 M539.7 395.1 l-6 5 M534.2 397.6 h5" stroke="#303030" stroke-opacity="0.35" stroke-width="1.1" fill="none"/>
<path d="M513.3 556.4 L487 534" stroke="#3cc43c" stroke-width="1" fill="none"/><path d="M484 531 l7 1.5 l-3.5 4z" fill="#3cc43c" stroke="none"/>
<path d="M513.3 556.4 L531 532" stroke="#c03040" stroke-width="1" fill="none"/><path d="M534 528.5 l-6.5 3 l4.5 3z" fill="#c03040" stroke="none"/>
<path d="M513.3 556.4 L516 538" stroke="#1a2a9a" stroke-width="1.2" fill="none"/><path d="M516.5 534 l-3 6 l5.5 0.5z" fill="#1a2a9a" stroke="none"/>
<text x="512.5" y="533" font-size="8" fill="#1a2a9a" stroke="none" font-family="Liberation Sans">Z</text>
<text x="533.5" y="529" font-size="8.5" fill="#c03040" stroke="none" font-family="Liberation Sans">X</text>
<path d="M478 526 l6 5 M478 531 l5 -4" stroke="#222" stroke-width="1"/>
</g></svg>
<!--/3D-->
<div id="vplan" class="a"></div>
<!--PLAN-->
<svg class="a" style="left:0;top:0" width="1280" height="720" viewBox="0 0 1280 720">
<g fill="#dcdddf" stroke="none">
  <rect x="823" y="131" width="246.5" height="89.3"/>
  <path d="M823 248.5 H1008 A125.12 125.12 0 0 0 1034 334 L1034 392 L976.8 487.2 L859 529 V545 H820 V446.7 H823 Z"/>
  <rect x="823" y="248.5" width="154" height="198"/>
  <circle cx="1034.8" cy="392.7" r="58.5"/>
  <circle cx="976.8" cy="487.2" r="76.5"/>
  <circle cx="918.3" cy="529.5" r="59.1"/>
  <rect x="820" y="446.7" width="39" height="98.3"/>
  <rect x="859" y="446.7" width="60" height="83"/>
</g>
<circle cx="976.8" cy="487.2" r="36.5" fill="#fff"/>
<path d="M940.5 487 H963 A13.8 13.8 0 0 1 976.8 473.2 V450.8 A36.5 36.5 0 0 0 940.5 487Z" fill="#dcdddf"/>
<g stroke="#f4f4f4" stroke-width="0.8" fill="none">
  <path d="M820 529 H859 L940.3 487"/>
  <path d="M977 311.7 L1032.7 331.8"/>
  <path d="M976.5 337 L955 374 L931 374"/>
  <path d="M955 374 L976 410"/>
  <rect x="1023.5" y="379" width="24.5" height="22"/>
  <path d="M1023.5 379 L992.3 352.3 M1048 379 L1073.5 349.2 M1048 401 L1073.5 435.6 M1023.5 401 L979 410.7 M1048 401 L1038 416 L1044 450"/>
  <path d="M983 525 L1033.3 538.9"/>
</g>
<g stroke="#e7a27c" stroke-width="1" fill="none">
  <rect x="823" y="131" width="246.5" height="89.3"/>
  <path d="M866.8 131 V220.3 M925.2 131 V220.3 M965 131 V220.3"/>
  <path d="M823 446.7 V248.5 H1008"/>
  <path d="M866.7 248.5 V337 M823 296.9 H866.7 M823 337 H976.5 V248.5 M899.6 337 V374 M930.8 337 V426.4 M823 374 H930.8"/>
  <path d="M976.5 337 L992.3 352.3"/>
  <path d="M818.5 446.7 H911 L940.3 487"/>
  <path d="M819.8 446.7 V545 H859 V446.7 M820 490.8 H859"/>
  <path d="M980 410.6 L976.8 450.8 M1013.3 487.2 H1053.3"/>
  <path d="M1033.3 538.9 L1064 571"/>
</g>
<g stroke="#e88c5e" stroke-width="1.5" fill="none">
  <path d="M1008 248.5 A125.12 125.12 0 0 0 1034 334.2"/>
  <path d="M979.15 410.74 A58.5 58.5 0 1 1 1043.9 450.5"/>
  <path d="M911.65 447.13 A76.5 76.5 0 1 1 965.7 562.9"/>
  <circle cx="976.8" cy="487.2" r="36.5"/>
  <path d="M859.2 529.5 A59.1 59.1 0 1 0 977.1 523.5"/>
</g>
<g fill="#ea8e5a">
  <rect x="821.5" y="127.5" width="3" height="7"/><rect x="819.5" y="218.5" width="7" height="3"/>
  <rect x="923.7" y="127.5" width="3" height="7"/><rect x="923.7" y="217" width="3" height="7"/>
  <rect x="963.5" y="127.5" width="3" height="7"/><rect x="963.5" y="217" width="3" height="7"/>
  <rect x="1066" y="129" width="7" height="4"/><rect x="1066" y="218.5" width="7" height="3"/>
  <rect x="819.5" y="247" width="7" height="3"/><rect x="865.2" y="244" width="3" height="7"/><rect x="936" y="247" width="7" height="3"/><rect x="1004.5" y="247" width="7" height="3"/>
  <rect x="975" y="333.5" width="3" height="7"/>
  <rect x="819.5" y="335.5" width="7" height="3"/><rect x="894" y="335.5" width="11" height="3"/><rect x="819.5" y="372.5" width="7" height="3"/>
  <rect x="929.3" y="423" width="3" height="7" transform="rotate(40 930.8 426.4)"/>
  <rect x="815" y="445.2" width="7" height="3"/><rect x="907" y="445.2" width="7" height="3"/>
  <rect x="857.5" y="525" width="3" height="8"/><rect x="818.3" y="541.5" width="3" height="7"/>
  <rect x="975" y="407" width="8" height="3"/><rect x="972.8" y="449.3" width="8" height="3"/><rect x="972.8" y="522" width="8" height="3"/>
  <rect x="938.8" y="483" width="3" height="8"/><rect x="1011.8" y="483" width="3" height="8"/><rect x="1051.8" y="483" width="3" height="8"/>
  <rect x="988.8" y="350.8" width="7" height="3" transform="rotate(-45 992.3 352.3)"/>
  <rect x="1070" y="347.7" width="7" height="3" transform="rotate(45 1073.5 349.2)"/>
  <rect x="1070" y="434.1" width="7" height="3" transform="rotate(-45 1073.5 435.6)"/>
  <rect x="1029.8" y="537.4" width="7" height="3" transform="rotate(-40 1033.3 538.9)"/>
  <rect x="1060.5" y="569.5" width="7" height="3" transform="rotate(-40 1064 571)"/>
  <rect x="881.2" y="576.2" width="7" height="3" transform="rotate(30 884.7 577.7)"/>
  <rect x="947.9" y="574.9" width="7" height="3" transform="rotate(-30 951.4 576.4)"/>
</g>
<g stroke="#222" stroke-width="0.8" fill="none">
  <path d="M836 177 L853 174.5 L849 172.5 M836 177 L841 179.5"/>
  <path d="M937 177 L953 174.5 L949 172.5 M937 177 L941 179.5"/>
  <path d="M836 294 L852 291 L848 289 M836 294 L841 296"/>
  <path d="M860 349 L862.5 363 L864 359 M860 349 L858 353"/>
  <path d="M832 491 L848 488 L844 486 M832 491 L837 493"/>
  <path d="M836 538 L843 537 L840 535.5"/>
</g>
<g stroke="#3fbf4f" stroke-width="1" fill="none"><path d="M814.5 588.5 V562"/><path d="M812 566 L814.5 561 L817 566"/></g>
<text x="811.5" y="559" font-size="8" fill="#3fbf4f" font-family="Liberation Sans">Y</text>
<g stroke="#b03030" stroke-width="1" fill="none"><path d="M814.5 588.5 H841"/><path d="M837 586 L842 588.5 L837 591"/></g>
<text x="846" y="593" font-size="8.5" fill="#c04040" font-family="Liberation Sans">X</text>
</svg>

<!--/PLAN-->

<!-- status -->
<div class="a" style="left:186px;top:675.5px;width:1094px;height:1px;background:#a0a0a0"></div>
<div class="a" style="left:1279px;top:72px;width:1px;height:604px;background:#b8b8b8"></div>
<div id="status" class="a">
  <span class="a" style="left:10px;top:3px;font-size:8.5px;transform:scaleX(0.82);transform-origin:0 0;white-space:nowrap">Plan View - S2 - Z = 9 (m)</span>
  <span class="a" style="left:1007.5px;top:3px;font-size:8.5px;transform:scaleX(0.83);transform-origin:0 0;white-space:nowrap">X -4.1&nbsp; Y 23.7&nbsp; Z 9 (m)</span>
  <div class="a" style="left:1125px;top:1px;width:58px;height:13px;background:#fff;border:1px solid #c8c8c8"><span class="a" style="left:2px;top:2px;font-size:7.6px">One Story</span><svg class="a" style="left:47px;top:4px" width="7" height="5"><path d="M0.5 0.5L3.5 3.5L6.5 0.5" fill="none" stroke="#333"/></svg></div>
  <div class="a" style="left:1184px;top:1px;width:58px;height:13px;background:#fff;border:1px solid #c8c8c8"><span class="a" style="left:2px;top:2px;font-size:7.6px">Global</span><svg class="a" style="left:47px;top:4px" width="7" height="5"><path d="M0.5 0.5L3.5 3.5L6.5 0.5" fill="none" stroke="#333"/></svg></div>
  <div class="a" style="left:1243px;top:1px;width:37px;height:13px;background:#e8e8e8;border:1px solid #c0c0c0"><span class="a" style="left:6px;top:2px;font-size:7.6px">Units...</span></div>
</div>
<div id="taskbar" class="a"></div>
<!--MISC-->
<div class="a" style="left:26.5px;top:105.5px;width:7px;height:7px;border:1px solid #a0a0a0;background:#fff"></div><div class="a" style="left:28px;top:108.5px;width:4px;height:1px;background:#444"></div>
<span class="a tr" style="left:37px;top:104.5px">Model</span>
<div class="a" style="left:42px;top:113px;width:1px;height:6px;background:repeating-linear-gradient(#b0b0b0 0 1px,transparent 1px 2px)"></div>
<div class="a" style="left:39px;top:117.0px;width:7px;height:7px;border:1px solid #a8a8a8;background:#fff"></div>
<div class="a" style="left:40.5px;top:120.0px;width:4px;height:1px;background:#555"></div><div class="a" style="left:42px;top:118.0px;width:1px;height:5px;background:#555"></div>
<div class="a" style="left:45.5px;top:120.5px;width:3px;height:1px;background:repeating-linear-gradient(90deg,#aaa 0 1px,transparent 1px 2px)"></div>
<span class="a tr" style="left:50px;top:115.9px">Project</span>
<div class="a" style="left:39px;top:128.0px;width:7px;height:7px;border:1px solid #a8a8a8;background:#fff"></div>
<div class="a" style="left:40.5px;top:131.0px;width:4px;height:1px;background:#555"></div><div class="a" style="left:42px;top:129.0px;width:1px;height:5px;background:#555"></div>
<div class="a" style="left:45.5px;top:131.5px;width:3px;height:1px;background:repeating-linear-gradient(90deg,#aaa 0 1px,transparent 1px 2px)"></div>
<span class="a tr" style="left:50px;top:126.9px">Structure Layout</span>
<div class="a" style="left:39px;top:138.0px;width:7px;height:7px;border:1px solid #a8a8a8;background:#fff"></div>
<div class="a" style="left:40.5px;top:141.0px;width:4px;height:1px;background:#555"></div><div class="a" style="left:42px;top:139.0px;width:1px;height:5px;background:#555"></div>
<div class="a" style="left:45.5px;top:141.5px;width:3px;height:1px;background:repeating-linear-gradient(90deg,#aaa 0 1px,transparent 1px 2px)"></div>
<span class="a tr" style="left:50px;top:136.9px">Properties</span>
<div class="a" style="left:39px;top:149.0px;width:7px;height:7px;border:1px solid #a8a8a8;background:#fff"></div>
<div class="a" style="left:40.5px;top:152.0px;width:4px;height:1px;background:#555"></div><div class="a" style="left:42px;top:150.0px;width:1px;height:5px;background:#555"></div>
<div class="a" style="left:45.5px;top:152.5px;width:3px;height:1px;background:repeating-linear-gradient(90deg,#aaa 0 1px,transparent 1px 2px)"></div>
<span class="a tr" style="left:50px;top:147.9px">Structural Objects</span>
<div class="a" style="left:39px;top:160.0px;width:7px;height:7px;border:1px solid #a8a8a8;background:#fff"></div>
<div class="a" style="left:40.5px;top:163.0px;width:4px;height:1px;background:#555"></div><div class="a" style="left:42px;top:161.0px;width:1px;height:5px;background:#555"></div>
<div class="a" style="left:45.5px;top:163.5px;width:3px;height:1px;background:repeating-linear-gradient(90deg,#aaa 0 1px,transparent 1px 2px)"></div>
<span class="a tr" style="left:50px;top:158.9px">Groups</span>
<div class="a" style="left:39px;top:170.0px;width:7px;height:7px;border:1px solid #a8a8a8;background:#fff"></div>
<div class="a" style="left:40.5px;top:173.0px;width:4px;height:1px;background:#555"></div><div class="a" style="left:42px;top:171.0px;width:1px;height:5px;background:#555"></div>
<div class="a" style="left:45.5px;top:173.5px;width:3px;height:1px;background:repeating-linear-gradient(90deg,#aaa 0 1px,transparent 1px 2px)"></div>
<span class="a tr" style="left:50px;top:168.9px">Loads</span>
<div class="a" style="left:39px;top:181.0px;width:7px;height:7px;border:1px solid #a8a8a8;background:#fff"></div>
<div class="a" style="left:40.5px;top:184.0px;width:4px;height:1px;background:#555"></div><div class="a" style="left:42px;top:182.0px;width:1px;height:5px;background:#555"></div>
<div class="a" style="left:45.5px;top:184.5px;width:3px;height:1px;background:repeating-linear-gradient(90deg,#aaa 0 1px,transparent 1px 2px)"></div>
<span class="a tr" style="left:50px;top:179.9px">Named Output Items</span>
<div class="a" style="left:39px;top:192.0px;width:7px;height:7px;border:1px solid #a8a8a8;background:#fff"></div>
<div class="a" style="left:40.5px;top:195.0px;width:4px;height:1px;background:#555"></div><div class="a" style="left:42px;top:193.0px;width:1px;height:5px;background:#555"></div>
<div class="a" style="left:45.5px;top:195.5px;width:3px;height:1px;background:repeating-linear-gradient(90deg,#aaa 0 1px,transparent 1px 2px)"></div>
<span class="a tr" style="left:50px;top:190.9px">Named Plots</span>
<div class="a" style="left:1.5px;top:80.5px;width:14px;height:16px;background:#cce4f7;border-top:1px solid #4a7fae;border-bottom:1px solid #4a7fae"></div>
<svg class="a" style="left:2.0px;top:82.0px" width="13" height="14" viewBox="0 0 13 14"><path d="M3 1v10l2.5-2.5 2 4 1.5-.8-2-3.8H10z" fill="#3c4a5a"/></svg>
<svg class="a" style="left:2.0px;top:99.0px" width="13" height="14" viewBox="0 0 13 14"><path d="M0 3h4M8 3h5" stroke="#333"/><circle cx="6" cy="3" r="2" fill="#fff" stroke="#333"/><path d="M5 5v8l2-2 1.5 3 1-.5-1.5-3H10z" fill="#5a6878"/></svg>
<div class="a" style="left:2px;top:115.0px;width:13px;height:1px;background:#c8c8c8"></div>
<div class="a" style="left:2px;top:213.7px;width:13px;height:1px;background:#c8c8c8"></div>
<div class="a" style="left:2px;top:270.0px;width:13px;height:1px;background:#c8c8c8"></div>
<div class="a" style="left:2px;top:327.8px;width:13px;height:1px;background:#c8c8c8"></div>
<div class="a" style="left:2px;top:411.0px;width:13px;height:1px;background:#c8c8c8"></div>
<div class="a" style="left:2px;top:489.0px;width:13px;height:1px;background:#c8c8c8"></div>
<svg class="a" style="left:2.0px;top:122.0px" width="13" height="14" viewBox="0 0 13 14"><path d="M1 1l11 11" stroke="#2a3440" stroke-width="1.5"/></svg>
<svg class="a" style="left:2.0px;top:140.0px" width="13" height="14" viewBox="0 0 13 14"><rect x="0.5" y="0.5" width="12" height="12" fill="none" stroke="#555" stroke-dasharray="2 1"/><path d="M2 2l9 9" stroke="#2a3440" stroke-width="1.3"/><circle cx="6.5" cy="6.5" r="1.2" fill="#c02a3a"/></svg>
<svg class="a" style="left:2.0px;top:157.5px" width="13" height="14" viewBox="0 0 13 14"><rect x="0.5" y="0.5" width="12" height="12" fill="none" stroke="#555" stroke-dasharray="2 1"/><path d="M4 3h5M6.5 3v7M4 10h5" stroke="#2a3440" stroke-width="1.3"/><circle cx="6.5" cy="6.5" r="1" fill="#c02a3a"/></svg>
<svg class="a" style="left:2.0px;top:176.0px" width="13" height="14" viewBox="0 0 13 14"><rect x="0.5" y="0.5" width="12" height="13" fill="none" stroke="#333" stroke-width="1.2"/><path d="M0.5 4h12M0.5 10h12" stroke="#555" stroke-dasharray="2 1"/><circle cx="6.5" cy="7" r="1.3" fill="#c02a3a"/></svg>
<svg class="a" style="left:2.0px;top:194.0px" width="13" height="14" viewBox="0 0 13 14"><rect x="0.5" y="0.5" width="12" height="12" fill="none" stroke="#777" stroke-dasharray="2 1"/><path d="M1 1l11 11M12 1L1 12" stroke="#c02a3a" stroke-width="1"/><path d="M1 1l11 11M12 1L1 12" stroke="#333" stroke-width="0.5"/></svg>
<svg class="a" style="left:2.0px;top:216.0px" width="13" height="14" viewBox="0 0 13 14"><path d="M1 0.5h6l5 5v7H1z" fill="#eef1f4" stroke="#3a4550"/></svg>
<svg class="a" style="left:2.0px;top:235.0px" width="13" height="14" viewBox="0 0 13 14"><rect x="1" y="1" width="11" height="11" fill="#dfe5eb" stroke="#3a4550"/></svg>
<svg class="a" style="left:2.0px;top:252.7px" width="13" height="14" viewBox="0 0 13 14"><rect x="0.5" y="0.5" width="12" height="12" fill="#e6ebf0" stroke="#333" stroke-dasharray="2 1"/><circle cx="6.5" cy="6.5" r="1.3" fill="#c02a3a"/></svg>
<svg class="a" style="left:2.0px;top:275.0px" width="13" height="14" viewBox="0 0 13 14"><path d="M2 1v11h9V6H6" fill="none" stroke="#1f2a35" stroke-width="2"/></svg>
<svg class="a" style="left:2.0px;top:292.6px" width="13" height="14" viewBox="0 0 13 14"><rect x="0.5" y="0.5" width="12" height="12" fill="none" stroke="#222" stroke-width="1.4" stroke-dasharray="3 1.5"/><circle cx="6.5" cy="6.5" r="1.3" fill="#222"/></svg>
<svg class="a" style="left:2.0px;top:310.0px" width="13" height="14" viewBox="0 0 13 14"><rect x="1" y="0.5" width="11" height="12" fill="#dfe5eb" stroke="#5a6570"/><rect x="4" y="3.5" width="5" height="5" fill="none" stroke="#5a6570"/></svg>
<svg class="a" style="left:2.0px;top:333.5px" width="13" height="14" viewBox="0 0 13 14"><path d="M1 1l11 11" stroke="#2a3440" stroke-width="1.3"/><path d="M4 6l3-3" stroke="#2a3440"/></svg>
<svg class="a" style="left:2.0px;top:355.0px" width="13" height="14" viewBox="0 0 13 14"><rect x="0.5" y="0.5" width="12" height="12" fill="#dfe7ef" stroke="#3f4a55"/><path d="M6.5 0.5v12M0.5 6.5h12" stroke="#3f4a55"/></svg>
<svg class="a" style="left:2.0px;top:377.0px" width="13" height="14" viewBox="0 0 13 14"><path d="M6.5 0L10 10H3z" fill="#45607c"/><path d="M1 11h11" stroke="#2a3440" stroke-width="2"/></svg>
<svg class="a" style="left:2.0px;top:396.5px" width="13" height="9" viewBox="0 0 13 9"><path d="M0.5 5c3-3 5 3 12 0" fill="none" stroke="#3f4a55" stroke-width="1.2"/></svg>
<div class="a" style="left:2px;top:418px;width:13px;height:70px;background:#ebebeb"></div>
<svg class="a" style="left:2.0px;top:420.0px" width="13" height="14" viewBox="0 0 13 14"><text x="0" y="12" font-size="6.5" fill="#333" font-family="Liberation Sans">all</text><path d="M8 1v7l2-1.5 1 2" fill="#555"/></svg>
<svg class="a" style="left:2.0px;top:439.0px" width="13" height="14" viewBox="0 0 13 14"><text x="0" y="12" font-size="6.5" fill="#aaa" font-family="Liberation Sans">PS</text><path d="M8 1v7l2-1.5 1 2" fill="#bbb"/></svg>
<svg class="a" style="left:2.0px;top:457.0px" width="13" height="14" viewBox="0 0 13 14"><text x="0" y="12" font-size="6.5" fill="#aaa" font-family="Liberation Sans">clr</text><path d="M8 1v7l2-1.5 1 2" fill="#bbb"/></svg>
<svg class="a" style="left:2.0px;top:473.0px" width="13" height="14" viewBox="0 0 13 14"><path d="M1 2l11 10" stroke="#2a3440" stroke-width="1.3"/><path d="M8 1v7l2-1.5 1 2" fill="#445"/><path d="M1 12h3" stroke="#666" stroke-dasharray="1 1"/></svg>
<div class="a" style="left:2px;top:489px;width:13px;height:42px;background:#d8d8d8"></div>
<div class="a" style="left:3px;top:532px;width:11px;height:2px;background:repeating-linear-gradient(90deg,#aaa 0 1px,transparent 1px 2px)"></div>
<div class="a" style="left:2px;top:536px;width:13px;height:112px;background:#ececec"></div>
<div class="a" style="left:1.5px;top:538px;width:14px;height:17px;background:#cce4f7;border:1px solid #8fb8dc"></div>
<svg class="a" style="left:2.0px;top:540.0px" width="13" height="14" viewBox="0 0 13 14"><path d="M6 0.5v12M1 8h11" stroke="#333" stroke-width="0.8"/><circle cx="10" cy="3" r="1.3" fill="none" stroke="#333" stroke-width="0.7"/><circle cx="6" cy="8" r="1.2" fill="#fff" stroke="#333" stroke-width="0.7"/><path d="M13 5.5l-3 2 3 2z" fill="#1a1a1a"/></svg>
<svg class="a" style="left:2.0px;top:558.6px" width="13" height="14" viewBox="0 0 13 14"><path d="M1 12l10-9" stroke="#333" stroke-width="0.8"/><circle cx="2" cy="11" r="1.3" fill="#fff" stroke="#333" stroke-width="0.7"/><circle cx="6" cy="7.5" r="1.3" fill="#fff" stroke="#333" stroke-width="0.7"/><circle cx="10.5" cy="3.5" r="1.3" fill="#fff" stroke="#333" stroke-width="0.7"/><path d="M13 8.5l-3 2 3 2z" fill="#1a1a1a"/></svg>
<svg class="a" style="left:2.0px;top:577.0px" width="13" height="14" viewBox="0 0 13 14"><path d="M2 1l9 11" stroke="#333" stroke-width="0.8"/><circle cx="5" cy="4.5" r="1.2" fill="#fff" stroke="#333" stroke-width="0.7"/><path d="M13 4.5l-3 2 3 2z" fill="#1a1a1a"/></svg>
<svg class="a" style="left:2.0px;top:594.0px" width="13" height="14" viewBox="0 0 13 14"><path d="M1 1l10 11M11 1L1 12" stroke="#333" stroke-width="0.8"/><path d="M13 4.5l-3 2 3 2z" fill="#1a1a1a"/></svg>
<svg class="a" style="left:2.0px;top:611.8px" width="13" height="14" viewBox="0 0 13 14"><path d="M6 0v13M1 6.5h10" stroke="#333" stroke-width="0.8"/><circle cx="6" cy="6.5" r="1.3" fill="#fff" stroke="#333" stroke-width="0.7"/><path d="M13 4.5l-3 2 3 2z" fill="#1a1a1a"/></svg>
<svg class="a" style="left:2.0px;top:629.7px" width="13" height="14" viewBox="0 0 13 14"><path d="M1 2h11M1 5h11M1 8h11M1 11h11" stroke="#777" stroke-width="0.8" stroke-dasharray="1 1"/><path d="M3 2v9M6 2v9" stroke="#888" stroke-width="0.6" stroke-dasharray="1 1"/><path d="M13 5l-3 2 3 2z" fill="#1a1a1a"/></svg>
<div class="a" style="left:326px;top:693px;width:32px;height:27px;background:#3d3d3d"></div>
<div class="a" style="left:263px;top:718px;width:27px;height:2px;background:#d9a3e6"></div>
<div class="a" style="left:295px;top:718px;width:28px;height:2px;background:#d9a3e6"></div>
<div class="a" style="left:326px;top:718px;width:32px;height:2px;background:#d9a3e6"></div>
<svg class="a" style="left:10.0px;top:701.0px" width="13" height="12" viewBox="0 0 13 12"><path d="M0 1.5l5.5-.8V5.8H0zM6.5 .6L13 0v5.8H6.5zM0 6.5h5.5v5L0 10.8zM6.5 6.5H13V12l-6.5-.9z" fill="#fff"/></svg>
<svg class="a" style="left:41.0px;top:699.0px" width="14" height="14" viewBox="0 0 14 14"><circle cx="8.5" cy="5.5" r="4" fill="none" stroke="#fff" stroke-width="1.3"/><path d="M5.5 8.5L1 13" stroke="#fff" stroke-width="1.5"/></svg>
<svg class="a" style="left:74.0px;top:700.0px" width="13" height="13" viewBox="0 0 13 13"><circle cx="6.5" cy="6.5" r="5" fill="none" stroke="#fff" stroke-width="1.6"/></svg>
<svg class="a" style="left:105.0px;top:700.0px" width="14" height="13" viewBox="0 0 14 13"><rect x="1" y="2.5" width="8" height="8" fill="none" stroke="#fff" stroke-width="1.3"/><path d="M0 1h10M0 12h10M11.5 3v2M11.5 6v6" stroke="#fff" stroke-width="1.3"/></svg>
<svg class="a" style="left:137.0px;top:698.0px" width="17" height="16" viewBox="0 0 17 16"><path d="M5 4V2.5a3.5 3.5 0 0 1 7 0V4" fill="none" stroke="#fff" stroke-width="1.2"/><rect x="0.5" y="4" width="16" height="12" fill="#fff"/><rect x="5" y="7" width="3" height="3" fill="#f25022"/><rect x="9" y="7" width="3" height="3" fill="#7fba00"/><rect x="5" y="11" width="3" height="3" fill="#00a4ef"/><rect x="9" y="11" width="3" height="3" fill="#ffb900"/></svg>
<svg class="a" style="left:170.0px;top:701.0px" width="18" height="12" viewBox="0 0 18 12"><rect x="0" y="0" width="18" height="12" fill="#fff"/><path d="M0 0l9 7 9-7" fill="#1a1a1a"/><path d="M0 12l7-6" stroke="#1a1a1a" stroke-width="0.8"/></svg>
<svg class="a" style="left:203.0px;top:699.0px" width="16" height="15" viewBox="0 0 16 15"><ellipse cx="8" cy="6" rx="7.5" ry="4.5" fill="#f1dce0" transform="rotate(-15 8 6)"/><path d="M3 8a5 2 0 0 0 10-2" fill="#b9a3aa"/><path d="M8 4l1 6M6 10l3 4M11 10l-2 4" stroke="#3a7bd5" stroke-width="1.2"/></svg>
<svg class="a" style="left:237.0px;top:699.0px" width="15" height="15" viewBox="0 0 15 15"><path d="M13.5 8.5H4.5c.3 3 2.5 4.5 5 4.5 1.5 0 3-.4 4-1v2.5c-1.2.6-2.6.9-4.3.9C4.5 15.5 1.5 12.5 1.5 8S4.8 .5 8.6.5c3.5 0 5.4 2.6 5.4 5.8zM4.7 6.3h6.2c0-1.8-1.1-3-2.9-3S5 4.5 4.7 6.3z" fill="#1f7ad8"/></svg>
<svg class="a" style="left:269.0px;top:700.0px" width="16" height="13" viewBox="0 0 16 13"><path d="M0 1h6l1.5 2H16v10H0z" fill="#f0c94a"/><rect x="0" y="4" width="16" height="9" fill="#f7d865"/><rect x="4.5" y="8" width="7" height="5" fill="#3f8fb8"/></svg>
<svg class="a" style="left:301.0px;top:699.0px" width="16" height="16" viewBox="0 0 16 16"><circle cx="8" cy="8" r="7.5" fill="#db4437"/><path d="M8 8L1.5 4.3A7.5 7.5 0 0 0 4.2 14.5z" fill="#0f9d58"/><path d="M8 8l-3.8 6.5A7.5 7.5 0 0 0 15.5 8z" fill="#f4c20d"/><circle cx="8" cy="8" r="3.6" fill="#fff"/><circle cx="8" cy="8" r="2.8" fill="#4285f4"/></svg>
<svg class="a" style="left:334.0px;top:699.0px" width="16" height="15" viewBox="0 0 16 15"><rect x="0" y="0" width="16" height="15" fill="#e9e0ea"/><rect x="0" y="2" width="4" height="13" fill="#f2b7da"/><rect x="5" y="0" width="2.5" height="15" fill="#5a5f70"/><rect x="9" y="3" width="2.5" height="12" fill="#8f95a4"/><rect x="12.5" y="1" width="2" height="14" fill="#c9cdd6"/></svg>
<svg class="a" style="left:1117.0px;top:700.0px" width="11" height="12" viewBox="0 0 11 12"><circle cx="7.5" cy="2.5" r="2" fill="none" stroke="#fff"/><path d="M4.5 8a3 3 0 0 1 6 0" fill="none" stroke="#fff"/><circle cx="3" cy="6" r="2" fill="#1a1a1a" stroke="#fff"/><path d="M0 12a3 3 0 0 1 6 0" fill="none" stroke="#fff"/></svg>
<svg class="a" style="left:1142.0px;top:704.0px" width="9" height="6" viewBox="0 0 9 6"><path d="M0.5 5L4.5 1 8.5 5" fill="none" stroke="#fff" stroke-width="1.1"/></svg>
<svg class="a" style="left:1156.0px;top:701.0px" width="13" height="10" viewBox="0 0 13 10"><path d="M1 0v3M3 0v3" stroke="#fff"/><rect x="0.5" y="3" width="10.5" height="6" fill="none" stroke="#fff"/><rect x="1.5" y="4" width="6" height="4" fill="#fff"/><rect x="11" y="5" width="1.5" height="2" fill="#fff"/></svg>
<svg class="a" style="left:1174.0px;top:701.0px" width="11" height="11" viewBox="0 0 11 11"><path d="M1 10a9 9 0 0 1 9-9M3 10a7 7 0 0 1 7-7M5 10a5 5 0 0 1 5-5M7 10a3 3 0 0 1 3-3" fill="none" stroke="#e8e8e8" stroke-width="0.9"/></svg>
<svg class="a" style="left:1188.0px;top:701.0px" width="13" height="11" viewBox="0 0 13 11"><path d="M0.5 3.5h3L7 0.5v10L3.5 7.5h-3z" fill="none" stroke="#fff"/><path d="M9 3a3 3 0 0 1 0 5M11 1.5a5.5 5.5 0 0 1 0 8" fill="none" stroke="#fff"/></svg>
<span class="a tbtx" style="left:1209px;top:695.5px">4:32 PM</span>
<span class="a tbtx" style="left:1206px;top:706.5px">9/22/2019</span>
<svg class="a" style="left:1252.0px;top:700.0px" width="18" height="17" viewBox="0 0 18 17"><path d="M1 1h13v9H6l-3 3v-3H1z" fill="#fff"/><path d="M3 3.5h9M3 5.5h9M3 7.5h6" stroke="#1a1a1a" stroke-width="0.8"/><circle cx="12" cy="12" r="4.5" fill="#1a1a1a" stroke="#fff"/><text x="9.6" y="14.6" font-size="7" fill="#fff" font-family="Liberation Sans" font-weight="bold">2</text></svg>
<!--/MISC-->
</body></html>
